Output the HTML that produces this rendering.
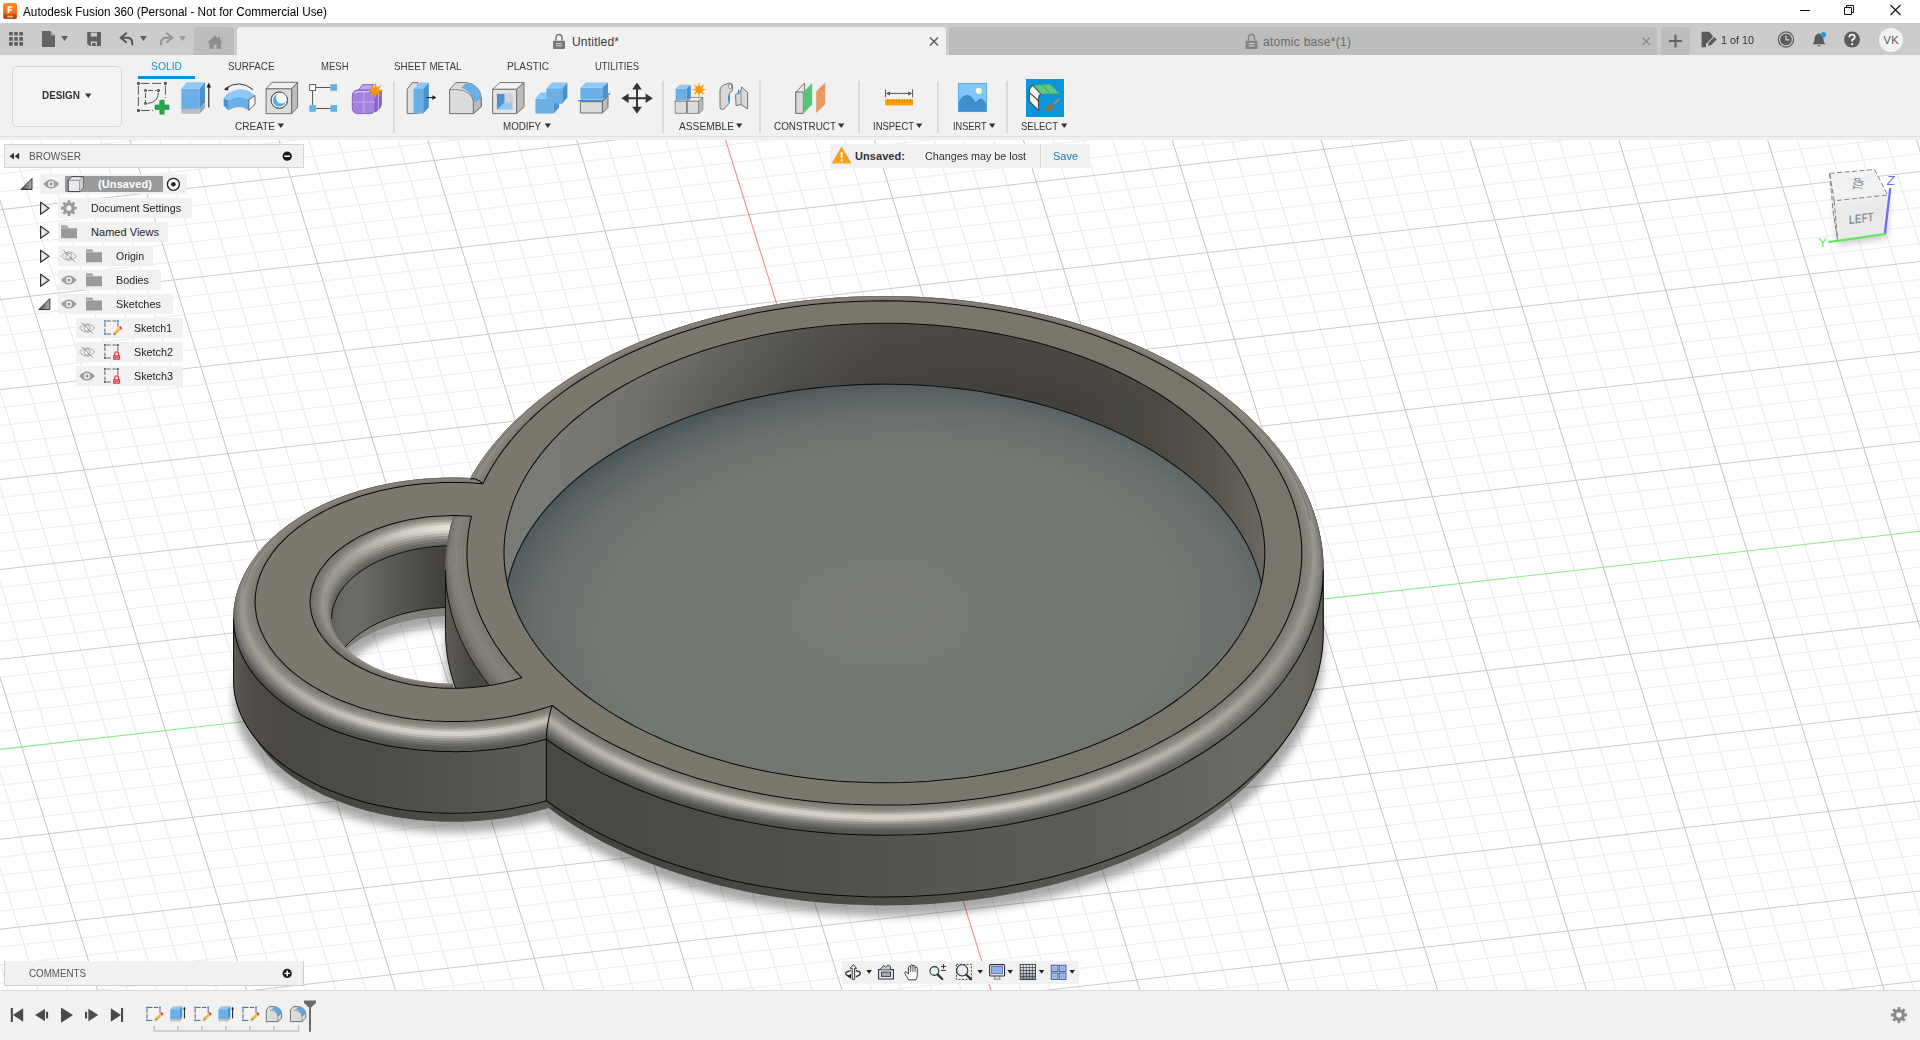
<!DOCTYPE html>
<html lang="en"><head><meta charset="utf-8"><title>Autodesk Fusion 360</title>
<style>
html,body{margin:0;padding:0;background:#fff;}
body{width:1920px;height:1040px;position:relative;overflow:hidden;font-family:"Liberation Sans", sans-serif;}
.r{position:absolute;box-sizing:border-box;}
.tx{position:absolute;white-space:pre;font-family:"Liberation Sans", sans-serif;transform-origin:0 50%;}
svg{position:absolute;left:0;top:0;overflow:visible;}
svg.vp{left:0;top:0;}
</style></head>
<body>
<main><svg class="vp" width="1920" height="1040" viewBox="0 0 1920 1040"><defs><filter id="blur" x="-10%" y="-10%" width="120%" height="120%"><feGaussianBlur stdDeviation="4.5"/></filter><filter id="blur2" x="-10%" y="-10%" width="120%" height="120%"><feGaussianBlur stdDeviation="3"/></filter><clipPath id="lens"><path d="M521.7 677.7 L517.3 679.1 L512.8 680.4 L508.3 681.6 L503.6 682.7 L498.9 683.8 L494.2 684.7 L489.4 685.5 L484.5 686.2 L479.6 686.8 L474.7 687.3 L469.8 687.7 L464.8 688.0 L459.8 688.2 L454.8 688.3 L449.8 688.3 L444.8 688.2 L439.9 687.9 L434.9 687.6 L430.0 687.2 L425.1 686.6 L420.2 686.0 L415.3 685.2 L410.5 684.4 L405.8 683.4 L401.1 682.4 L396.5 681.2 L392.0 680.0 L387.5 678.7 L383.1 677.2 L378.8 675.7 L374.6 674.1 L370.4 672.4 L366.4 670.6 L362.5 668.7 L358.7 666.8 L355.0 664.8 L351.4 662.7 L348.0 660.5 L344.7 658.2 L341.5 655.9 L338.4 653.5 L335.5 651.1 L332.7 648.6 L330.1 646.0 L327.7 643.4 L325.3 640.7 L323.2 638.0 L321.2 635.2 L319.3 632.4 L317.6 629.6 L316.1 626.7 L314.8 623.8 L313.6 620.9 L312.6 617.9 L311.7 614.9 L311.1 612.0 L310.6 609.0 L310.3 605.9 L310.1 602.9 L310.1 599.9 L310.4 596.9 L310.7 593.9 L311.3 590.9 L312.0 587.9 L312.9 585.0 L314.0 582.0 L315.2 579.1 L316.6 576.2 L318.2 573.3 L319.9 570.5 L321.8 567.7 L323.9 565.0 L326.1 562.3 L328.4 559.6 L331.0 557.0 L333.6 554.5 L336.4 552.0 L339.4 549.6 L342.5 547.2 L345.7 544.9 L349.1 542.7 L352.6 540.5 L356.2 538.4 L359.9 536.4 L363.8 534.5 L367.7 532.7 L371.8 530.9 L375.9 529.2 L380.2 527.7 L384.5 526.2 L388.9 524.8 L393.4 523.5 L398.0 522.3 L402.6 521.2 L407.3 520.1 L412.1 519.2 L416.9 518.4 L421.8 517.7 L426.6 517.1 L431.6 516.6 L436.5 516.2 L441.5 515.9 L446.5 515.7 L451.5 515.6 L456.4 515.6 L461.4 515.8 L466.4 516.0 L471.4 516.3 L471.4 516.3 L469.5 525.1 L468.2 533.8 L467.3 542.6 L467.0 551.4 L467.1 560.2 L467.8 569.0 L469.0 577.8 L470.7 586.5 L472.9 595.2 L475.6 603.9 L478.8 612.5 L482.5 621.0 L486.7 629.4 L491.3 637.8 L496.5 646.0 L502.1 654.1 L508.2 662.1 L514.7 670.0 L521.7 677.7Z"/></clipPath><linearGradient id="g1" gradientUnits="userSpaceOnUse" x1="331.6" y1="0" x2="447.3" y2="0"><stop offset="0.0000" stop-color="#585a55"/><stop offset="0.0101" stop-color="#5e605a"/><stop offset="0.0400" stop-color="#64665f"/><stop offset="0.0893" stop-color="#686a63"/><stop offset="0.1570" stop-color="#6b6d67"/><stop offset="0.2418" stop-color="#696b66"/><stop offset="0.3420" stop-color="#646560"/><stop offset="0.4558" stop-color="#5e5f5a"/><stop offset="0.5810" stop-color="#575652"/><stop offset="0.7152" stop-color="#4f4e4a"/><stop offset="0.8557" stop-color="#474642"/><stop offset="1.0000" stop-color="#413f3b"/></linearGradient><linearGradient id="g2" gradientUnits="userSpaceOnUse" x1="331.6" y1="0" x2="477.0" y2="0"><stop offset="0.0000" stop-color="#565550"/><stop offset="0.0058" stop-color="#565550"/><stop offset="0.0231" stop-color="#565550"/><stop offset="0.0517" stop-color="#565550"/><stop offset="0.0912" stop-color="#565651"/><stop offset="0.1411" stop-color="#575651"/><stop offset="0.2006" stop-color="#585752"/><stop offset="0.2689" stop-color="#595853"/><stop offset="0.3450" stop-color="#5a5954"/><stop offset="0.4280" stop-color="#5b5a55"/><stop offset="0.5167" stop-color="#5d5c57"/><stop offset="0.6098" stop-color="#5e5d58"/><stop offset="0.7060" stop-color="#5f5e59"/><stop offset="0.8040" stop-color="#5f5e59"/><stop offset="0.9024" stop-color="#605f5a"/><stop offset="0.9999" stop-color="#605f59"/></linearGradient><linearGradient id="g3" gradientUnits="userSpaceOnUse" x1="331.6" y1="0" x2="332.2" y2="0"><stop offset="0.0000" stop-color="#565550"/><stop offset="0.0044" stop-color="#565550"/><stop offset="0.0175" stop-color="#555550"/><stop offset="0.0394" stop-color="#555550"/><stop offset="0.0700" stop-color="#555550"/><stop offset="0.1094" stop-color="#555550"/><stop offset="0.1575" stop-color="#555550"/><stop offset="0.2144" stop-color="#555550"/><stop offset="0.2800" stop-color="#555550"/><stop offset="0.3543" stop-color="#555550"/><stop offset="0.4374" stop-color="#555550"/><stop offset="0.5292" stop-color="#555550"/><stop offset="0.6297" stop-color="#555550"/><stop offset="0.7390" stop-color="#555550"/><stop offset="0.8570" stop-color="#555550"/><stop offset="0.9837" stop-color="#555550"/></linearGradient><linearGradient id="g4" gradientUnits="userSpaceOnUse" x1="331.4" y1="0" x2="477.0" y2="0"><stop offset="0.0000" stop-color="#5e5d58"/><stop offset="0.0058" stop-color="#5e5e59"/><stop offset="0.0231" stop-color="#5f5e59"/><stop offset="0.0517" stop-color="#5f5e59"/><stop offset="0.0912" stop-color="#605f5a"/><stop offset="0.1411" stop-color="#605f5a"/><stop offset="0.2006" stop-color="#61605b"/><stop offset="0.2689" stop-color="#63625c"/><stop offset="0.3450" stop-color="#64635e"/><stop offset="0.4280" stop-color="#666560"/><stop offset="0.5167" stop-color="#686761"/><stop offset="0.6098" stop-color="#696863"/><stop offset="0.7060" stop-color="#6b6a64"/><stop offset="0.8040" stop-color="#6b6a65"/><stop offset="0.9024" stop-color="#6c6b65"/><stop offset="0.9999" stop-color="#6c6b65"/></linearGradient><linearGradient id="g5" gradientUnits="userSpaceOnUse" x1="331.4" y1="0" x2="334.0" y2="0"><stop offset="0.0000" stop-color="#5e5d58"/><stop offset="0.0044" stop-color="#5e5d58"/><stop offset="0.0178" stop-color="#5e5d58"/><stop offset="0.0400" stop-color="#5e5d58"/><stop offset="0.0711" stop-color="#5e5d58"/><stop offset="0.1110" stop-color="#5e5d58"/><stop offset="0.1598" stop-color="#5e5d58"/><stop offset="0.2175" stop-color="#5e5d58"/><stop offset="0.2840" stop-color="#5e5d58"/><stop offset="0.3594" stop-color="#5e5d58"/><stop offset="0.4435" stop-color="#5e5d58"/><stop offset="0.5365" stop-color="#5e5d58"/><stop offset="0.6383" stop-color="#5e5d58"/><stop offset="0.7488" stop-color="#5e5d58"/><stop offset="0.8681" stop-color="#5e5d58"/><stop offset="0.9960" stop-color="#5e5d58"/></linearGradient><linearGradient id="g6" gradientUnits="userSpaceOnUse" x1="330.9" y1="0" x2="477.1" y2="0"><stop offset="0.0000" stop-color="#676661"/><stop offset="0.0058" stop-color="#676661"/><stop offset="0.0231" stop-color="#686761"/><stop offset="0.0517" stop-color="#686762"/><stop offset="0.0912" stop-color="#696863"/><stop offset="0.1411" stop-color="#6a6964"/><stop offset="0.2006" stop-color="#6c6b65"/><stop offset="0.2689" stop-color="#6e6d67"/><stop offset="0.3450" stop-color="#706f69"/><stop offset="0.4280" stop-color="#73726c"/><stop offset="0.5167" stop-color="#75746f"/><stop offset="0.6098" stop-color="#787771"/><stop offset="0.7060" stop-color="#7a7973"/><stop offset="0.8040" stop-color="#7b7a74"/><stop offset="0.9024" stop-color="#7c7b75"/><stop offset="0.9999" stop-color="#7b7a74"/></linearGradient><linearGradient id="g7" gradientUnits="userSpaceOnUse" x1="330.9" y1="0" x2="337.0" y2="0"><stop offset="0.0000" stop-color="#676661"/><stop offset="0.0045" stop-color="#676661"/><stop offset="0.0179" stop-color="#676661"/><stop offset="0.0403" stop-color="#676661"/><stop offset="0.0716" stop-color="#676661"/><stop offset="0.1118" stop-color="#676661"/><stop offset="0.1609" stop-color="#676661"/><stop offset="0.2189" stop-color="#676661"/><stop offset="0.2857" stop-color="#676661"/><stop offset="0.3614" stop-color="#676661"/><stop offset="0.4458" stop-color="#676661"/><stop offset="0.5390" stop-color="#676661"/><stop offset="0.6409" stop-color="#676661"/><stop offset="0.7515" stop-color="#676661"/><stop offset="0.8706" stop-color="#676661"/><stop offset="0.9984" stop-color="#676661"/></linearGradient><linearGradient id="g8" gradientUnits="userSpaceOnUse" x1="330.0" y1="0" x2="477.3" y2="0"><stop offset="0.0000" stop-color="#73726c"/><stop offset="0.0058" stop-color="#74726c"/><stop offset="0.0231" stop-color="#74736d"/><stop offset="0.0517" stop-color="#75746e"/><stop offset="0.0912" stop-color="#77756f"/><stop offset="0.1411" stop-color="#797771"/><stop offset="0.2006" stop-color="#7b7a73"/><stop offset="0.2689" stop-color="#7e7d76"/><stop offset="0.3450" stop-color="#82817a"/><stop offset="0.4280" stop-color="#87857e"/><stop offset="0.5167" stop-color="#8b8983"/><stop offset="0.6098" stop-color="#8f8e87"/><stop offset="0.7060" stop-color="#93918a"/><stop offset="0.8040" stop-color="#95938c"/><stop offset="0.9024" stop-color="#96948d"/><stop offset="0.9999" stop-color="#95938c"/></linearGradient><linearGradient id="g9" gradientUnits="userSpaceOnUse" x1="330.0" y1="0" x2="342.3" y2="0"><stop offset="0.0000" stop-color="#73726c"/><stop offset="0.0045" stop-color="#73726c"/><stop offset="0.0181" stop-color="#73726c"/><stop offset="0.0406" stop-color="#73726c"/><stop offset="0.0722" stop-color="#73726c"/><stop offset="0.1127" stop-color="#73726c"/><stop offset="0.1622" stop-color="#73726c"/><stop offset="0.2205" stop-color="#73726b"/><stop offset="0.2877" stop-color="#73726b"/><stop offset="0.3636" stop-color="#73726b"/><stop offset="0.4483" stop-color="#73726b"/><stop offset="0.5416" stop-color="#73726b"/><stop offset="0.6434" stop-color="#73726b"/><stop offset="0.7537" stop-color="#73726b"/><stop offset="0.8723" stop-color="#73726b"/><stop offset="0.9992" stop-color="#73726b"/></linearGradient><linearGradient id="g10" gradientUnits="userSpaceOnUse" x1="328.7" y1="0" x2="477.6" y2="0"><stop offset="0.0000" stop-color="#817e77"/><stop offset="0.0058" stop-color="#817f78"/><stop offset="0.0231" stop-color="#828079"/><stop offset="0.0517" stop-color="#83817a"/><stop offset="0.0912" stop-color="#86837c"/><stop offset="0.1411" stop-color="#89867f"/><stop offset="0.2006" stop-color="#8d8a83"/><stop offset="0.2689" stop-color="#929088"/><stop offset="0.3450" stop-color="#98968e"/><stop offset="0.4280" stop-color="#9f9c95"/><stop offset="0.5167" stop-color="#a6a39c"/><stop offset="0.6098" stop-color="#acaaa2"/><stop offset="0.7060" stop-color="#b2afa7"/><stop offset="0.8040" stop-color="#b5b3ab"/><stop offset="0.9024" stop-color="#b7b4ac"/><stop offset="0.9999" stop-color="#b6b3ab"/></linearGradient><linearGradient id="g11" gradientUnits="userSpaceOnUse" x1="328.7" y1="0" x2="351.8" y2="0"><stop offset="0.0000" stop-color="#817e77"/><stop offset="0.0046" stop-color="#807e77"/><stop offset="0.0183" stop-color="#807e77"/><stop offset="0.0412" stop-color="#807e77"/><stop offset="0.0732" stop-color="#807e77"/><stop offset="0.1143" stop-color="#807e77"/><stop offset="0.1643" stop-color="#807e77"/><stop offset="0.2232" stop-color="#807e77"/><stop offset="0.2909" stop-color="#807e77"/><stop offset="0.3673" stop-color="#807e77"/><stop offset="0.4522" stop-color="#807e77"/><stop offset="0.5456" stop-color="#807e77"/><stop offset="0.6471" stop-color="#807e77"/><stop offset="0.7568" stop-color="#807e77"/><stop offset="0.8743" stop-color="#807e77"/><stop offset="0.9996" stop-color="#807e77"/></linearGradient><linearGradient id="g12" gradientUnits="userSpaceOnUse" x1="327.2" y1="0" x2="477.9" y2="0"><stop offset="0.0000" stop-color="#8d8a82"/><stop offset="0.0058" stop-color="#8d8b82"/><stop offset="0.0231" stop-color="#8e8c84"/><stop offset="0.0517" stop-color="#908e85"/><stop offset="0.0912" stop-color="#939188"/><stop offset="0.1411" stop-color="#97958c"/><stop offset="0.2006" stop-color="#9d9a92"/><stop offset="0.2689" stop-color="#a4a199"/><stop offset="0.3450" stop-color="#adaaa1"/><stop offset="0.4280" stop-color="#b6b3aa"/><stop offset="0.5167" stop-color="#c0bdb4"/><stop offset="0.6098" stop-color="#c9c6bd"/><stop offset="0.7060" stop-color="#d0cdc4"/><stop offset="0.8040" stop-color="#d5d2c9"/><stop offset="0.9024" stop-color="#d7d4cb"/><stop offset="0.9999" stop-color="#d5d2c9"/></linearGradient><linearGradient id="g13" gradientUnits="userSpaceOnUse" x1="327.2" y1="0" x2="370.6" y2="0"><stop offset="0.0000" stop-color="#8d8a82"/><stop offset="0.0047" stop-color="#8c8a81"/><stop offset="0.0189" stop-color="#8c8981"/><stop offset="0.0424" stop-color="#8c8981"/><stop offset="0.0753" stop-color="#8c8981"/><stop offset="0.1173" stop-color="#8c8981"/><stop offset="0.1685" stop-color="#8c8981"/><stop offset="0.2285" stop-color="#8c8981"/><stop offset="0.2972" stop-color="#8c8981"/><stop offset="0.3744" stop-color="#8c8981"/><stop offset="0.4598" stop-color="#8c8981"/><stop offset="0.5532" stop-color="#8c8981"/><stop offset="0.6542" stop-color="#8c8981"/><stop offset="0.7626" stop-color="#8c8981"/><stop offset="0.8779" stop-color="#8c8981"/><stop offset="0.9998" stop-color="#8c8981"/></linearGradient><linearGradient id="g14" gradientUnits="userSpaceOnUse" x1="325.3" y1="0" x2="478.2" y2="0"><stop offset="0.0000" stop-color="#939088"/><stop offset="0.0058" stop-color="#949188"/><stop offset="0.0231" stop-color="#95928a"/><stop offset="0.0517" stop-color="#97958c"/><stop offset="0.0912" stop-color="#9b988f"/><stop offset="0.1411" stop-color="#9f9d94"/><stop offset="0.2006" stop-color="#a6a39a"/><stop offset="0.2689" stop-color="#aeaba2"/><stop offset="0.3450" stop-color="#b8b5ac"/><stop offset="0.4280" stop-color="#c2bfb6"/><stop offset="0.5167" stop-color="#cdcac1"/><stop offset="0.6098" stop-color="#d8d5cb"/><stop offset="0.7060" stop-color="#e0ddd4"/><stop offset="0.8040" stop-color="#e6e3d9"/><stop offset="0.9024" stop-color="#e8e5db"/><stop offset="0.9999" stop-color="#e6e3da"/></linearGradient><linearGradient id="g15" gradientUnits="userSpaceOnUse" x1="325.3" y1="0" x2="430.7" y2="0"><stop offset="0.0000" stop-color="#939088"/><stop offset="0.0052" stop-color="#939087"/><stop offset="0.0209" stop-color="#929087"/><stop offset="0.0469" stop-color="#928f87"/><stop offset="0.0829" stop-color="#928f87"/><stop offset="0.1287" stop-color="#928f87"/><stop offset="0.1838" stop-color="#928f87"/><stop offset="0.2478" stop-color="#928f87"/><stop offset="0.3202" stop-color="#928f87"/><stop offset="0.4003" stop-color="#928f87"/><stop offset="0.4874" stop-color="#928f87"/><stop offset="0.5807" stop-color="#928f87"/><stop offset="0.6795" stop-color="#928f87"/><stop offset="0.7829" stop-color="#928f87"/><stop offset="0.8900" stop-color="#928f87"/><stop offset="0.9999" stop-color="#928f87"/></linearGradient><linearGradient id="g16" gradientUnits="userSpaceOnUse" x1="323.2" y1="0" x2="478.6" y2="0"><stop offset="0.0000" stop-color="#96948b"/><stop offset="0.0058" stop-color="#97948b"/><stop offset="0.0231" stop-color="#98968d"/><stop offset="0.0517" stop-color="#9a988f"/><stop offset="0.0912" stop-color="#9e9b92"/><stop offset="0.1411" stop-color="#a29f96"/><stop offset="0.2006" stop-color="#a8a59c"/><stop offset="0.2689" stop-color="#b0ada4"/><stop offset="0.3450" stop-color="#b9b6ad"/><stop offset="0.4280" stop-color="#c3c0b6"/><stop offset="0.5167" stop-color="#cdcac1"/><stop offset="0.6098" stop-color="#d7d4ca"/><stop offset="0.7060" stop-color="#dfdcd2"/><stop offset="0.8040" stop-color="#e4e1d7"/><stop offset="0.9024" stop-color="#e6e3d9"/><stop offset="0.9999" stop-color="#e5e2d8"/></linearGradient><linearGradient id="g17" gradientUnits="userSpaceOnUse" x1="323.2" y1="0" x2="453.1" y2="0"><stop offset="0.0000" stop-color="#96948b"/><stop offset="0.0055" stop-color="#96938a"/><stop offset="0.0219" stop-color="#96938a"/><stop offset="0.0489" stop-color="#95938a"/><stop offset="0.0864" stop-color="#95938a"/><stop offset="0.1340" stop-color="#95938a"/><stop offset="0.1910" stop-color="#95938a"/><stop offset="0.2568" stop-color="#95938a"/><stop offset="0.3308" stop-color="#95938a"/><stop offset="0.4122" stop-color="#95938a"/><stop offset="0.5000" stop-color="#95938a"/><stop offset="0.5932" stop-color="#95938a"/><stop offset="0.6909" stop-color="#95938a"/><stop offset="0.7920" stop-color="#95938a"/><stop offset="0.8954" stop-color="#95938a"/><stop offset="0.9999" stop-color="#95938a"/></linearGradient><linearGradient id="g18" gradientUnits="userSpaceOnUse" x1="320.9" y1="0" x2="479.1" y2="0"><stop offset="0.0000" stop-color="#8b887f"/><stop offset="0.0058" stop-color="#8b8980"/><stop offset="0.0231" stop-color="#8c8a81"/><stop offset="0.0517" stop-color="#8e8b82"/><stop offset="0.0912" stop-color="#908e85"/><stop offset="0.1411" stop-color="#949188"/><stop offset="0.2006" stop-color="#99968d"/><stop offset="0.2689" stop-color="#9e9c92"/><stop offset="0.3450" stop-color="#a5a399"/><stop offset="0.4280" stop-color="#adaaa1"/><stop offset="0.5167" stop-color="#b5b2a9"/><stop offset="0.6098" stop-color="#bdbab0"/><stop offset="0.7060" stop-color="#c3c0b6"/><stop offset="0.8040" stop-color="#c7c4ba"/><stop offset="0.9024" stop-color="#c9c6bc"/><stop offset="0.9999" stop-color="#c8c5bb"/></linearGradient><linearGradient id="g19" gradientUnits="userSpaceOnUse" x1="320.9" y1="0" x2="453.1" y2="0"><stop offset="0.0000" stop-color="#8b887f"/><stop offset="0.0055" stop-color="#8a887f"/><stop offset="0.0219" stop-color="#8a887f"/><stop offset="0.0489" stop-color="#8a877e"/><stop offset="0.0864" stop-color="#8a877e"/><stop offset="0.1340" stop-color="#8a877e"/><stop offset="0.1910" stop-color="#8a877e"/><stop offset="0.2568" stop-color="#8a877e"/><stop offset="0.3308" stop-color="#8a877e"/><stop offset="0.4122" stop-color="#8a877e"/><stop offset="0.5000" stop-color="#8a877e"/><stop offset="0.5932" stop-color="#8a877e"/><stop offset="0.6909" stop-color="#8a877e"/><stop offset="0.7920" stop-color="#8a877e"/><stop offset="0.8954" stop-color="#8a877e"/><stop offset="0.9999" stop-color="#8a877e"/></linearGradient><linearGradient id="g20" gradientUnits="userSpaceOnUse" x1="318.3" y1="0" x2="479.6" y2="0"><stop offset="0.0000" stop-color="#807d74"/><stop offset="0.0058" stop-color="#807e75"/><stop offset="0.0231" stop-color="#817e75"/><stop offset="0.0517" stop-color="#827f76"/><stop offset="0.0912" stop-color="#848178"/><stop offset="0.1411" stop-color="#86837a"/><stop offset="0.2006" stop-color="#89867d"/><stop offset="0.2689" stop-color="#8d8a81"/><stop offset="0.3450" stop-color="#928f85"/><stop offset="0.4280" stop-color="#97948a"/><stop offset="0.5167" stop-color="#9c9990"/><stop offset="0.6098" stop-color="#a19e94"/><stop offset="0.7060" stop-color="#a5a298"/><stop offset="0.8040" stop-color="#a8a59b"/><stop offset="0.9024" stop-color="#a9a69c"/><stop offset="0.9999" stop-color="#a8a59b"/></linearGradient><linearGradient id="g21" gradientUnits="userSpaceOnUse" x1="318.3" y1="0" x2="453.1" y2="0"><stop offset="0.0000" stop-color="#807d74"/><stop offset="0.0055" stop-color="#807d74"/><stop offset="0.0219" stop-color="#807d74"/><stop offset="0.0489" stop-color="#807d74"/><stop offset="0.0864" stop-color="#807d74"/><stop offset="0.1340" stop-color="#807d74"/><stop offset="0.1910" stop-color="#807d74"/><stop offset="0.2568" stop-color="#807d74"/><stop offset="0.3308" stop-color="#807d74"/><stop offset="0.4122" stop-color="#807d74"/><stop offset="0.5000" stop-color="#807d74"/><stop offset="0.5932" stop-color="#807d74"/><stop offset="0.6909" stop-color="#807d74"/><stop offset="0.7920" stop-color="#807d74"/><stop offset="0.8954" stop-color="#807d74"/><stop offset="0.9999" stop-color="#807d74"/></linearGradient><linearGradient id="g22" gradientUnits="userSpaceOnUse" x1="315.7" y1="0" x2="480.1" y2="0"><stop offset="0.0000" stop-color="#79766d"/><stop offset="0.0058" stop-color="#79766d"/><stop offset="0.0231" stop-color="#79766d"/><stop offset="0.0517" stop-color="#7a776e"/><stop offset="0.0912" stop-color="#7b786f"/><stop offset="0.1411" stop-color="#7d7970"/><stop offset="0.2006" stop-color="#7e7b72"/><stop offset="0.2689" stop-color="#817e74"/><stop offset="0.3450" stop-color="#848177"/><stop offset="0.4280" stop-color="#87847a"/><stop offset="0.5167" stop-color="#8a877d"/><stop offset="0.6098" stop-color="#8e8a80"/><stop offset="0.7060" stop-color="#908d83"/><stop offset="0.8040" stop-color="#928e84"/><stop offset="0.9024" stop-color="#928f85"/><stop offset="0.9999" stop-color="#928f85"/></linearGradient><linearGradient id="g23" gradientUnits="userSpaceOnUse" x1="315.7" y1="0" x2="453.1" y2="0"><stop offset="0.0000" stop-color="#79766d"/><stop offset="0.0055" stop-color="#79766c"/><stop offset="0.0219" stop-color="#79756c"/><stop offset="0.0489" stop-color="#78756c"/><stop offset="0.0864" stop-color="#78756c"/><stop offset="0.1340" stop-color="#78756c"/><stop offset="0.1910" stop-color="#78756c"/><stop offset="0.2568" stop-color="#78756c"/><stop offset="0.3308" stop-color="#78756c"/><stop offset="0.4122" stop-color="#78756c"/><stop offset="0.5000" stop-color="#78756c"/><stop offset="0.5932" stop-color="#78756c"/><stop offset="0.6909" stop-color="#78756c"/><stop offset="0.7920" stop-color="#78756c"/><stop offset="0.8954" stop-color="#78756c"/><stop offset="0.9999" stop-color="#78756c"/></linearGradient><linearGradient id="g24" gradientUnits="userSpaceOnUse" x1="312.9" y1="0" x2="480.7" y2="0"><stop offset="0.0000" stop-color="#726e65"/><stop offset="0.0058" stop-color="#726e65"/><stop offset="0.0231" stop-color="#726f66"/><stop offset="0.0517" stop-color="#726f66"/><stop offset="0.0912" stop-color="#737067"/><stop offset="0.1411" stop-color="#747167"/><stop offset="0.2006" stop-color="#757269"/><stop offset="0.2689" stop-color="#77736a"/><stop offset="0.3450" stop-color="#79756c"/><stop offset="0.4280" stop-color="#7b776e"/><stop offset="0.5167" stop-color="#7d7a70"/><stop offset="0.6098" stop-color="#7f7c72"/><stop offset="0.7060" stop-color="#817d73"/><stop offset="0.8040" stop-color="#827e74"/><stop offset="0.9024" stop-color="#837f75"/><stop offset="0.9999" stop-color="#827e74"/></linearGradient><linearGradient id="g25" gradientUnits="userSpaceOnUse" x1="312.9" y1="0" x2="453.1" y2="0"><stop offset="0.0000" stop-color="#726e65"/><stop offset="0.0055" stop-color="#716e65"/><stop offset="0.0219" stop-color="#716e65"/><stop offset="0.0489" stop-color="#716e65"/><stop offset="0.0864" stop-color="#716e65"/><stop offset="0.1340" stop-color="#716e65"/><stop offset="0.1910" stop-color="#716e65"/><stop offset="0.2568" stop-color="#716e65"/><stop offset="0.3308" stop-color="#716e65"/><stop offset="0.4122" stop-color="#716e65"/><stop offset="0.5000" stop-color="#716e65"/><stop offset="0.5932" stop-color="#716e65"/><stop offset="0.6909" stop-color="#716e65"/><stop offset="0.7920" stop-color="#716e65"/><stop offset="0.8954" stop-color="#716e65"/><stop offset="0.9999" stop-color="#716e65"/></linearGradient><linearGradient id="bwh" gradientUnits="userSpaceOnUse" x1="445" y1="0" x2="470" y2="0"><stop offset="0" stop-color="#5f5d56"/><stop offset="0.5" stop-color="#55534d"/><stop offset="1" stop-color="#4a4843"/></linearGradient><linearGradient id="g26" gradientUnits="userSpaceOnUse" x1="546.4" y1="0" x2="1323.3" y2="0"><stop offset="0.0000" stop-color="#4a4843"/><stop offset="0.0644" stop-color="#4b4944"/><stop offset="0.1386" stop-color="#4c4a45"/><stop offset="0.2208" stop-color="#4e4c47"/><stop offset="0.3086" stop-color="#504e49"/><stop offset="0.3998" stop-color="#53514c"/><stop offset="0.4920" stop-color="#56544f"/><stop offset="0.5826" stop-color="#595853"/><stop offset="0.6693" stop-color="#5c5b56"/><stop offset="0.7498" stop-color="#605f5a"/><stop offset="0.8219" stop-color="#64635e"/><stop offset="0.8837" stop-color="#696862"/><stop offset="0.9335" stop-color="#696862"/><stop offset="0.9701" stop-color="#686760"/><stop offset="0.9925" stop-color="#63615a"/><stop offset="1.0000" stop-color="#5c5952"/></linearGradient><linearGradient id="g27" gradientUnits="userSpaceOnUse" x1="233.6" y1="0" x2="546.4" y2="0"><stop offset="0.0000" stop-color="#635f58"/><stop offset="0.0084" stop-color="#5b5852"/><stop offset="0.0333" stop-color="#53504b"/><stop offset="0.0741" stop-color="#4f4c47"/><stop offset="0.1300" stop-color="#4c4944"/><stop offset="0.1994" stop-color="#4b4944"/><stop offset="0.2809" stop-color="#4c4a45"/><stop offset="0.3724" stop-color="#4d4b46"/><stop offset="0.4717" stop-color="#4e4c47"/><stop offset="0.5765" stop-color="#514f4a"/><stop offset="0.6843" stop-color="#54524d"/><stop offset="0.7926" stop-color="#565550"/><stop offset="0.8986" stop-color="#595853"/><stop offset="1.0000" stop-color="#5c5b56"/></linearGradient><linearGradient id="g28" gradientUnits="userSpaceOnUse" x1="546.4" y1="0" x2="1323.3" y2="0"><stop offset="0.0000" stop-color="#45433e"/><stop offset="0.0644" stop-color="#46443f"/><stop offset="0.1386" stop-color="#474541"/><stop offset="0.2208" stop-color="#484642"/><stop offset="0.3086" stop-color="#4b4944"/><stop offset="0.3998" stop-color="#4d4b47"/><stop offset="0.4920" stop-color="#504e4a"/><stop offset="0.5826" stop-color="#53514d"/><stop offset="0.6693" stop-color="#565550"/><stop offset="0.7498" stop-color="#595853"/><stop offset="0.8219" stop-color="#5d5c57"/><stop offset="0.8837" stop-color="#61615b"/><stop offset="0.9335" stop-color="#62615b"/><stop offset="0.9701" stop-color="#615f59"/><stop offset="0.9925" stop-color="#5d5a54"/><stop offset="1.0000" stop-color="#56534c"/></linearGradient><linearGradient id="g29" gradientUnits="userSpaceOnUse" x1="233.6" y1="0" x2="546.4" y2="0"><stop offset="0.0000" stop-color="#5c5852"/><stop offset="0.0084" stop-color="#55524c"/><stop offset="0.0333" stop-color="#4d4b46"/><stop offset="0.0741" stop-color="#494742"/><stop offset="0.1300" stop-color="#464440"/><stop offset="0.1994" stop-color="#45433f"/><stop offset="0.2809" stop-color="#464540"/><stop offset="0.3724" stop-color="#484641"/><stop offset="0.4717" stop-color="#494742"/><stop offset="0.5765" stop-color="#4b4945"/><stop offset="0.6843" stop-color="#4e4c47"/><stop offset="0.7926" stop-color="#504f4a"/><stop offset="0.8986" stop-color="#53524d"/><stop offset="1.0000" stop-color="#565550"/></linearGradient><linearGradient id="g30" gradientUnits="userSpaceOnUse" x1="467.6" y1="0" x2="1323.4" y2="0"><stop offset="0.0000" stop-color="#65615a"/><stop offset="0.0292" stop-color="#65615a"/><stop offset="0.0684" stop-color="#65615a"/><stop offset="0.1169" stop-color="#65615a"/><stop offset="0.1736" stop-color="#65615a"/><stop offset="0.2371" stop-color="#65615a"/><stop offset="0.3061" stop-color="#65615a"/><stop offset="0.3792" stop-color="#65615a"/><stop offset="0.4546" stop-color="#65615a"/><stop offset="0.5307" stop-color="#5c5952"/><stop offset="0.6059" stop-color="#5c5952"/><stop offset="0.6784" stop-color="#5c5952"/><stop offset="0.7468" stop-color="#5c5952"/><stop offset="0.8094" stop-color="#5c5952"/><stop offset="0.8649" stop-color="#5c5952"/><stop offset="0.9121" stop-color="#5c5952"/><stop offset="0.9499" stop-color="#5c5952"/><stop offset="0.9775" stop-color="#5c5952"/><stop offset="0.9943" stop-color="#5c5952"/><stop offset="1.0000" stop-color="#5c5952"/></linearGradient><linearGradient id="g31" gradientUnits="userSpaceOnUse" x1="546.4" y1="0" x2="1323.4" y2="0"><stop offset="0.0000" stop-color="#4b4944"/><stop offset="0.0499" stop-color="#4c4a45"/><stop offset="0.1063" stop-color="#4d4b46"/><stop offset="0.1681" stop-color="#4e4c47"/><stop offset="0.2343" stop-color="#4f4d48"/><stop offset="0.3039" stop-color="#514f4a"/><stop offset="0.3756" stop-color="#53514c"/><stop offset="0.4484" stop-color="#55534e"/><stop offset="0.5209" stop-color="#575550"/><stop offset="0.5919" stop-color="#595853"/><stop offset="0.6604" stop-color="#5c5a55"/><stop offset="0.7252" stop-color="#5e5d58"/><stop offset="0.7851" stop-color="#61605b"/><stop offset="0.8392" stop-color="#64635e"/><stop offset="0.8866" stop-color="#686661"/><stop offset="0.9265" stop-color="#686760"/><stop offset="0.9582" stop-color="#67665f"/><stop offset="0.9813" stop-color="#66645e"/><stop offset="0.9953" stop-color="#615f58"/><stop offset="1.0000" stop-color="#5c5952"/></linearGradient><linearGradient id="g32" gradientUnits="userSpaceOnUse" x1="233.6" y1="0" x2="467.6" y2="0"><stop offset="0.0000" stop-color="#625e57"/><stop offset="0.0035" stop-color="#65615a"/><stop offset="0.0139" stop-color="#65615a"/><stop offset="0.0312" stop-color="#65615a"/><stop offset="0.0552" stop-color="#65615a"/><stop offset="0.0857" stop-color="#65615a"/><stop offset="0.1226" stop-color="#65615a"/><stop offset="0.1655" stop-color="#65615a"/><stop offset="0.2141" stop-color="#65615a"/><stop offset="0.2681" stop-color="#65615a"/><stop offset="0.3271" stop-color="#65615a"/><stop offset="0.3906" stop-color="#65615a"/><stop offset="0.4582" stop-color="#65615a"/><stop offset="0.5293" stop-color="#65615a"/><stop offset="0.6035" stop-color="#65615a"/><stop offset="0.6801" stop-color="#65615a"/><stop offset="0.7587" stop-color="#65615a"/><stop offset="0.8386" stop-color="#65615a"/><stop offset="0.9192" stop-color="#65615a"/><stop offset="1.0000" stop-color="#5c5952"/></linearGradient><linearGradient id="g33" gradientUnits="userSpaceOnUse" x1="233.6" y1="0" x2="546.4" y2="0"><stop offset="0.0000" stop-color="#625e57"/><stop offset="0.0039" stop-color="#5e5b54"/><stop offset="0.0156" stop-color="#585550"/><stop offset="0.0350" stop-color="#53504b"/><stop offset="0.0619" stop-color="#504e49"/><stop offset="0.0959" stop-color="#4e4c47"/><stop offset="0.1366" stop-color="#4c4a45"/><stop offset="0.1837" stop-color="#4c4a45"/><stop offset="0.2366" stop-color="#4c4a45"/><stop offset="0.2947" stop-color="#4d4b46"/><stop offset="0.3573" stop-color="#4e4c47"/><stop offset="0.4238" stop-color="#4f4d48"/><stop offset="0.4934" stop-color="#504e49"/><stop offset="0.5653" stop-color="#514f4a"/><stop offset="0.6387" stop-color="#53514c"/><stop offset="0.7129" stop-color="#55534e"/><stop offset="0.7869" stop-color="#575550"/><stop offset="0.8599" stop-color="#585752"/><stop offset="0.9312" stop-color="#5a5954"/><stop offset="1.0000" stop-color="#5c5b56"/></linearGradient><linearGradient id="g34" gradientUnits="userSpaceOnUse" x1="467.7" y1="0" x2="1323.2" y2="0"><stop offset="0.0000" stop-color="#64615b"/><stop offset="0.0292" stop-color="#64615b"/><stop offset="0.0684" stop-color="#64615b"/><stop offset="0.1169" stop-color="#64615b"/><stop offset="0.1735" stop-color="#64615b"/><stop offset="0.2370" stop-color="#64615b"/><stop offset="0.3061" stop-color="#64615b"/><stop offset="0.3791" stop-color="#64615b"/><stop offset="0.4545" stop-color="#64615b"/><stop offset="0.5307" stop-color="#5d5a54"/><stop offset="0.6058" stop-color="#5d5a54"/><stop offset="0.6784" stop-color="#5d5a54"/><stop offset="0.7467" stop-color="#5d5a54"/><stop offset="0.8093" stop-color="#5d5a54"/><stop offset="0.8649" stop-color="#5d5a54"/><stop offset="0.9121" stop-color="#5d5a54"/><stop offset="0.9499" stop-color="#5d5a54"/><stop offset="0.9775" stop-color="#5d5a54"/><stop offset="0.9943" stop-color="#5d5a54"/><stop offset="1.0000" stop-color="#5d5a54"/></linearGradient><linearGradient id="g35" gradientUnits="userSpaceOnUse" x1="546.4" y1="0" x2="1323.2" y2="0"><stop offset="0.0000" stop-color="#504e49"/><stop offset="0.0499" stop-color="#514f4a"/><stop offset="0.1063" stop-color="#51504b"/><stop offset="0.1681" stop-color="#52504b"/><stop offset="0.2343" stop-color="#53514c"/><stop offset="0.3038" stop-color="#54524e"/><stop offset="0.3756" stop-color="#56544f"/><stop offset="0.4483" stop-color="#575651"/><stop offset="0.5208" stop-color="#595853"/><stop offset="0.5919" stop-color="#5b5a55"/><stop offset="0.6604" stop-color="#5d5c57"/><stop offset="0.7251" stop-color="#5f5e59"/><stop offset="0.7851" stop-color="#61605b"/><stop offset="0.8392" stop-color="#64635e"/><stop offset="0.8866" stop-color="#666560"/><stop offset="0.9265" stop-color="#676560"/><stop offset="0.9582" stop-color="#66655f"/><stop offset="0.9813" stop-color="#66645d"/><stop offset="0.9953" stop-color="#615f59"/><stop offset="1.0000" stop-color="#5d5a54"/></linearGradient><linearGradient id="g36" gradientUnits="userSpaceOnUse" x1="233.7" y1="0" x2="467.7" y2="0"><stop offset="0.0000" stop-color="#625f59"/><stop offset="0.0035" stop-color="#64615b"/><stop offset="0.0139" stop-color="#64615b"/><stop offset="0.0312" stop-color="#64615b"/><stop offset="0.0552" stop-color="#64615b"/><stop offset="0.0857" stop-color="#64615b"/><stop offset="0.1226" stop-color="#64615b"/><stop offset="0.1655" stop-color="#64615b"/><stop offset="0.2141" stop-color="#64615b"/><stop offset="0.2682" stop-color="#64615b"/><stop offset="0.3271" stop-color="#64615b"/><stop offset="0.3907" stop-color="#64615b"/><stop offset="0.4582" stop-color="#64615b"/><stop offset="0.5294" stop-color="#64615b"/><stop offset="0.6035" stop-color="#64615b"/><stop offset="0.6802" stop-color="#64615b"/><stop offset="0.7587" stop-color="#64615b"/><stop offset="0.8386" stop-color="#64615b"/><stop offset="0.9192" stop-color="#64615b"/><stop offset="1.0000" stop-color="#5d5a54"/></linearGradient><linearGradient id="g37" gradientUnits="userSpaceOnUse" x1="233.7" y1="0" x2="546.4" y2="0"><stop offset="0.0000" stop-color="#625f59"/><stop offset="0.0039" stop-color="#5e5c56"/><stop offset="0.0156" stop-color="#5a5852"/><stop offset="0.0350" stop-color="#56544f"/><stop offset="0.0619" stop-color="#54524d"/><stop offset="0.0959" stop-color="#52504b"/><stop offset="0.1367" stop-color="#514f4a"/><stop offset="0.1838" stop-color="#504e4a"/><stop offset="0.2366" stop-color="#514f4a"/><stop offset="0.2947" stop-color="#51504b"/><stop offset="0.3574" stop-color="#52504b"/><stop offset="0.4238" stop-color="#52514c"/><stop offset="0.4934" stop-color="#53524d"/><stop offset="0.5653" stop-color="#55534e"/><stop offset="0.6388" stop-color="#56544f"/><stop offset="0.7129" stop-color="#575651"/><stop offset="0.7869" stop-color="#595752"/><stop offset="0.8600" stop-color="#5a5954"/><stop offset="0.9313" stop-color="#5c5a56"/><stop offset="1.0000" stop-color="#5d5c57"/></linearGradient><linearGradient id="g38" gradientUnits="userSpaceOnUse" x1="468.0" y1="0" x2="1322.8" y2="0"><stop offset="0.0000" stop-color="#686660"/><stop offset="0.0291" stop-color="#686660"/><stop offset="0.0683" stop-color="#686660"/><stop offset="0.1168" stop-color="#686660"/><stop offset="0.1734" stop-color="#686660"/><stop offset="0.2369" stop-color="#686660"/><stop offset="0.3059" stop-color="#686660"/><stop offset="0.3790" stop-color="#686660"/><stop offset="0.4544" stop-color="#686660"/><stop offset="0.5305" stop-color="#63615b"/><stop offset="0.6057" stop-color="#63615b"/><stop offset="0.6783" stop-color="#63615b"/><stop offset="0.7466" stop-color="#63615b"/><stop offset="0.8093" stop-color="#63615b"/><stop offset="0.8648" stop-color="#63615b"/><stop offset="0.9120" stop-color="#63615b"/><stop offset="0.9499" stop-color="#63615b"/><stop offset="0.9775" stop-color="#63615b"/><stop offset="0.9943" stop-color="#63615b"/><stop offset="1.0000" stop-color="#63615b"/></linearGradient><linearGradient id="g39" gradientUnits="userSpaceOnUse" x1="546.5" y1="0" x2="1322.8" y2="0"><stop offset="0.0000" stop-color="#595853"/><stop offset="0.0499" stop-color="#5a5854"/><stop offset="0.1062" stop-color="#5a5954"/><stop offset="0.1680" stop-color="#5b5955"/><stop offset="0.2342" stop-color="#5b5a56"/><stop offset="0.3037" stop-color="#5c5b57"/><stop offset="0.3755" stop-color="#5e5c58"/><stop offset="0.4482" stop-color="#5f5d59"/><stop offset="0.5207" stop-color="#605f5b"/><stop offset="0.5918" stop-color="#61605c"/><stop offset="0.6603" stop-color="#63625d"/><stop offset="0.7251" stop-color="#64635f"/><stop offset="0.7850" stop-color="#666561"/><stop offset="0.8391" stop-color="#686762"/><stop offset="0.8865" stop-color="#6a6964"/><stop offset="0.9265" stop-color="#6a6964"/><stop offset="0.9582" stop-color="#6a6863"/><stop offset="0.9813" stop-color="#696862"/><stop offset="0.9953" stop-color="#66645f"/><stop offset="1.0000" stop-color="#63615b"/></linearGradient><linearGradient id="g40" gradientUnits="userSpaceOnUse" x1="234.1" y1="0" x2="468.0" y2="0"><stop offset="0.0000" stop-color="#66645f"/><stop offset="0.0035" stop-color="#686660"/><stop offset="0.0139" stop-color="#686660"/><stop offset="0.0312" stop-color="#686660"/><stop offset="0.0552" stop-color="#686660"/><stop offset="0.0857" stop-color="#686660"/><stop offset="0.1226" stop-color="#686660"/><stop offset="0.1656" stop-color="#686660"/><stop offset="0.2142" stop-color="#686660"/><stop offset="0.2682" stop-color="#686660"/><stop offset="0.3272" stop-color="#686660"/><stop offset="0.3908" stop-color="#686660"/><stop offset="0.4584" stop-color="#686660"/><stop offset="0.5295" stop-color="#686660"/><stop offset="0.6036" stop-color="#686660"/><stop offset="0.6803" stop-color="#686660"/><stop offset="0.7588" stop-color="#686660"/><stop offset="0.8387" stop-color="#686660"/><stop offset="0.9193" stop-color="#686660"/><stop offset="1.0000" stop-color="#63615b"/></linearGradient><linearGradient id="g41" gradientUnits="userSpaceOnUse" x1="234.1" y1="0" x2="546.5" y2="0"><stop offset="0.0000" stop-color="#66645f"/><stop offset="0.0039" stop-color="#64625d"/><stop offset="0.0157" stop-color="#615f5a"/><stop offset="0.0351" stop-color="#5e5c57"/><stop offset="0.0619" stop-color="#5c5a56"/><stop offset="0.0959" stop-color="#5b5955"/><stop offset="0.1367" stop-color="#5a5854"/><stop offset="0.1838" stop-color="#595854"/><stop offset="0.2367" stop-color="#5a5854"/><stop offset="0.2948" stop-color="#5a5954"/><stop offset="0.3575" stop-color="#5b5955"/><stop offset="0.4240" stop-color="#5b5a55"/><stop offset="0.4936" stop-color="#5c5a56"/><stop offset="0.5655" stop-color="#5d5b57"/><stop offset="0.6389" stop-color="#5e5c58"/><stop offset="0.7131" stop-color="#5f5d59"/><stop offset="0.7870" stop-color="#605f5a"/><stop offset="0.8601" stop-color="#61605b"/><stop offset="0.9313" stop-color="#62615d"/><stop offset="1.0000" stop-color="#63625e"/></linearGradient><linearGradient id="g42" gradientUnits="userSpaceOnUse" x1="468.5" y1="0" x2="1322.1" y2="0"><stop offset="0.0000" stop-color="#72706c"/><stop offset="0.0290" stop-color="#72706c"/><stop offset="0.0682" stop-color="#72706c"/><stop offset="0.1166" stop-color="#72706c"/><stop offset="0.1732" stop-color="#72706c"/><stop offset="0.2367" stop-color="#72706c"/><stop offset="0.3057" stop-color="#72706c"/><stop offset="0.3787" stop-color="#72706c"/><stop offset="0.4541" stop-color="#72706c"/><stop offset="0.5303" stop-color="#6e6d68"/><stop offset="0.6055" stop-color="#6e6d68"/><stop offset="0.6781" stop-color="#6e6d68"/><stop offset="0.7465" stop-color="#6e6d68"/><stop offset="0.8092" stop-color="#6e6d68"/><stop offset="0.8647" stop-color="#6e6d68"/><stop offset="0.9120" stop-color="#6e6d68"/><stop offset="0.9498" stop-color="#6e6d68"/><stop offset="0.9775" stop-color="#6e6d68"/><stop offset="0.9943" stop-color="#6e6d68"/><stop offset="1.0000" stop-color="#6e6d68"/></linearGradient><linearGradient id="g43" gradientUnits="userSpaceOnUse" x1="546.7" y1="0" x2="1322.1" y2="0"><stop offset="0.0000" stop-color="#686764"/><stop offset="0.0498" stop-color="#696864"/><stop offset="0.1061" stop-color="#696865"/><stop offset="0.1678" stop-color="#6a6965"/><stop offset="0.2340" stop-color="#6a6a66"/><stop offset="0.3035" stop-color="#6b6a67"/><stop offset="0.3753" stop-color="#6c6b67"/><stop offset="0.4480" stop-color="#6d6c68"/><stop offset="0.5205" stop-color="#6e6d69"/><stop offset="0.5916" stop-color="#6e6e6a"/><stop offset="0.6602" stop-color="#6f6f6b"/><stop offset="0.7249" stop-color="#706f6c"/><stop offset="0.7849" stop-color="#71716d"/><stop offset="0.8391" stop-color="#72726e"/><stop offset="0.8865" stop-color="#73736f"/><stop offset="0.9264" stop-color="#73736e"/><stop offset="0.9582" stop-color="#73726e"/><stop offset="0.9813" stop-color="#72726d"/><stop offset="0.9953" stop-color="#706f6b"/><stop offset="1.0000" stop-color="#6e6d68"/></linearGradient><linearGradient id="g44" gradientUnits="userSpaceOnUse" x1="234.8" y1="0" x2="468.5" y2="0"><stop offset="0.0000" stop-color="#706f6b"/><stop offset="0.0035" stop-color="#72706c"/><stop offset="0.0139" stop-color="#72706c"/><stop offset="0.0312" stop-color="#72706c"/><stop offset="0.0552" stop-color="#72706c"/><stop offset="0.0858" stop-color="#72706c"/><stop offset="0.1227" stop-color="#72706c"/><stop offset="0.1656" stop-color="#72706c"/><stop offset="0.2143" stop-color="#72706c"/><stop offset="0.2684" stop-color="#72706c"/><stop offset="0.3274" stop-color="#72706c"/><stop offset="0.3910" stop-color="#72706c"/><stop offset="0.4585" stop-color="#72706c"/><stop offset="0.5297" stop-color="#72706c"/><stop offset="0.6038" stop-color="#72706c"/><stop offset="0.6805" stop-color="#72706c"/><stop offset="0.7590" stop-color="#72706c"/><stop offset="0.8388" stop-color="#72706c"/><stop offset="0.9193" stop-color="#72706c"/><stop offset="1.0000" stop-color="#6e6d68"/></linearGradient><linearGradient id="g45" gradientUnits="userSpaceOnUse" x1="234.8" y1="0" x2="546.7" y2="0"><stop offset="0.0000" stop-color="#706f6b"/><stop offset="0.0039" stop-color="#6f6e69"/><stop offset="0.0157" stop-color="#6d6c68"/><stop offset="0.0351" stop-color="#6b6a66"/><stop offset="0.0620" stop-color="#6a6965"/><stop offset="0.0960" stop-color="#696864"/><stop offset="0.1368" stop-color="#696864"/><stop offset="0.1840" stop-color="#686864"/><stop offset="0.2369" stop-color="#696864"/><stop offset="0.2950" stop-color="#696865"/><stop offset="0.3577" stop-color="#6a6965"/><stop offset="0.4242" stop-color="#6a6966"/><stop offset="0.4938" stop-color="#6b6a66"/><stop offset="0.5658" stop-color="#6b6b67"/><stop offset="0.6392" stop-color="#6c6b68"/><stop offset="0.7133" stop-color="#6d6c68"/><stop offset="0.7873" stop-color="#6d6d69"/><stop offset="0.8602" stop-color="#6e6d6a"/><stop offset="0.9314" stop-color="#6f6e6a"/><stop offset="1.0000" stop-color="#6f6f6b"/></linearGradient><linearGradient id="g46" gradientUnits="userSpaceOnUse" x1="469.1" y1="0" x2="1321.2" y2="0"><stop offset="0.0000" stop-color="#7a7974"/><stop offset="0.0289" stop-color="#7a7974"/><stop offset="0.0680" stop-color="#7a7874"/><stop offset="0.1163" stop-color="#7a7874"/><stop offset="0.1728" stop-color="#7a7874"/><stop offset="0.2363" stop-color="#7a7874"/><stop offset="0.3053" stop-color="#7a7874"/><stop offset="0.3784" stop-color="#7a7874"/><stop offset="0.4538" stop-color="#7a7874"/><stop offset="0.5300" stop-color="#787773"/><stop offset="0.6052" stop-color="#787773"/><stop offset="0.6779" stop-color="#787773"/><stop offset="0.7463" stop-color="#787773"/><stop offset="0.8090" stop-color="#787773"/><stop offset="0.8646" stop-color="#787773"/><stop offset="0.9119" stop-color="#787773"/><stop offset="0.9498" stop-color="#787773"/><stop offset="0.9775" stop-color="#787773"/><stop offset="0.9943" stop-color="#787773"/><stop offset="1.0000" stop-color="#787773"/></linearGradient><linearGradient id="g47" gradientUnits="userSpaceOnUse" x1="546.9" y1="0" x2="1321.2" y2="0"><stop offset="0.0000" stop-color="#787773"/><stop offset="0.0498" stop-color="#787874"/><stop offset="0.1059" stop-color="#7a7975"/><stop offset="0.1676" stop-color="#7b7a76"/><stop offset="0.2338" stop-color="#7c7b77"/><stop offset="0.3033" stop-color="#7d7c78"/><stop offset="0.3750" stop-color="#7d7d79"/><stop offset="0.4478" stop-color="#7e7d79"/><stop offset="0.5203" stop-color="#7e7d79"/><stop offset="0.5914" stop-color="#7e7d79"/><stop offset="0.6600" stop-color="#7d7d79"/><stop offset="0.7248" stop-color="#7d7c78"/><stop offset="0.7848" stop-color="#7d7c78"/><stop offset="0.8389" stop-color="#7c7c78"/><stop offset="0.8864" stop-color="#7c7c77"/><stop offset="0.9264" stop-color="#7c7b77"/><stop offset="0.9582" stop-color="#7b7a76"/><stop offset="0.9813" stop-color="#7a7a75"/><stop offset="0.9953" stop-color="#797874"/><stop offset="1.0000" stop-color="#787773"/></linearGradient><linearGradient id="g48" gradientUnits="userSpaceOnUse" x1="235.7" y1="0" x2="469.1" y2="0"><stop offset="0.0000" stop-color="#797874"/><stop offset="0.0035" stop-color="#7a7974"/><stop offset="0.0139" stop-color="#7a7974"/><stop offset="0.0312" stop-color="#7a7974"/><stop offset="0.0553" stop-color="#7a7974"/><stop offset="0.0859" stop-color="#7a7974"/><stop offset="0.1228" stop-color="#7a7874"/><stop offset="0.1658" stop-color="#7a7874"/><stop offset="0.2145" stop-color="#7a7874"/><stop offset="0.2686" stop-color="#7a7874"/><stop offset="0.3276" stop-color="#7a7874"/><stop offset="0.3912" stop-color="#7a7874"/><stop offset="0.4588" stop-color="#7a7874"/><stop offset="0.5300" stop-color="#7a7874"/><stop offset="0.6041" stop-color="#7a7874"/><stop offset="0.6807" stop-color="#7a7874"/><stop offset="0.7592" stop-color="#7a7874"/><stop offset="0.8390" stop-color="#7a7874"/><stop offset="0.9194" stop-color="#7a7874"/><stop offset="1.0000" stop-color="#787773"/></linearGradient><linearGradient id="g49" gradientUnits="userSpaceOnUse" x1="235.7" y1="0" x2="546.9" y2="0"><stop offset="0.0000" stop-color="#797874"/><stop offset="0.0039" stop-color="#797873"/><stop offset="0.0157" stop-color="#787773"/><stop offset="0.0351" stop-color="#777672"/><stop offset="0.0620" stop-color="#777672"/><stop offset="0.0961" stop-color="#777672"/><stop offset="0.1370" stop-color="#777773"/><stop offset="0.1842" stop-color="#787773"/><stop offset="0.2372" stop-color="#797874"/><stop offset="0.2953" stop-color="#7a7975"/><stop offset="0.3580" stop-color="#7b7a76"/><stop offset="0.4246" stop-color="#7b7b77"/><stop offset="0.4942" stop-color="#7c7b77"/><stop offset="0.5661" stop-color="#7d7c78"/><stop offset="0.6396" stop-color="#7d7d79"/><stop offset="0.7136" stop-color="#7e7d79"/><stop offset="0.7875" stop-color="#7e7d79"/><stop offset="0.8604" stop-color="#7e7d79"/><stop offset="0.9315" stop-color="#7e7d79"/><stop offset="1.0000" stop-color="#7d7d79"/></linearGradient><linearGradient id="g50" gradientUnits="userSpaceOnUse" x1="469.9" y1="0" x2="1320.1" y2="0"><stop offset="0.0000" stop-color="#7f7e79"/><stop offset="0.0288" stop-color="#7f7e79"/><stop offset="0.0678" stop-color="#7f7e79"/><stop offset="0.1160" stop-color="#7f7e79"/><stop offset="0.1724" stop-color="#7f7e79"/><stop offset="0.2359" stop-color="#7f7e79"/><stop offset="0.3049" stop-color="#7f7e79"/><stop offset="0.3779" stop-color="#7f7e79"/><stop offset="0.4534" stop-color="#7f7e79"/><stop offset="0.5296" stop-color="#7f7e79"/><stop offset="0.6049" stop-color="#7f7e79"/><stop offset="0.6775" stop-color="#7f7e79"/><stop offset="0.7460" stop-color="#7f7e79"/><stop offset="0.8088" stop-color="#7f7e79"/><stop offset="0.8645" stop-color="#7f7e79"/><stop offset="0.9118" stop-color="#7f7e79"/><stop offset="0.9497" stop-color="#7f7e79"/><stop offset="0.9774" stop-color="#7f7e79"/><stop offset="0.9943" stop-color="#7f7e79"/><stop offset="1.0000" stop-color="#807f7a"/></linearGradient><linearGradient id="g51" gradientUnits="userSpaceOnUse" x1="547.3" y1="0" x2="1320.1" y2="0"><stop offset="0.0000" stop-color="#888782"/><stop offset="0.0497" stop-color="#8b8a85"/><stop offset="0.1058" stop-color="#8e8d88"/><stop offset="0.1674" stop-color="#90908b"/><stop offset="0.2335" stop-color="#93928d"/><stop offset="0.3030" stop-color="#95948f"/><stop offset="0.3747" stop-color="#969590"/><stop offset="0.4474" stop-color="#969590"/><stop offset="0.5200" stop-color="#95948f"/><stop offset="0.5911" stop-color="#93928e"/><stop offset="0.6597" stop-color="#91908b"/><stop offset="0.7245" stop-color="#8e8d88"/><stop offset="0.7846" stop-color="#8b8a85"/><stop offset="0.8388" stop-color="#888782"/><stop offset="0.8863" stop-color="#868580"/><stop offset="0.9263" stop-color="#84837e"/><stop offset="0.9581" stop-color="#82817c"/><stop offset="0.9813" stop-color="#81807b"/><stop offset="0.9953" stop-color="#807f7a"/><stop offset="1.0000" stop-color="#807f7a"/></linearGradient><linearGradient id="g52" gradientUnits="userSpaceOnUse" x1="236.9" y1="0" x2="469.9" y2="0"><stop offset="0.0000" stop-color="#807f7a"/><stop offset="0.0035" stop-color="#807f7a"/><stop offset="0.0139" stop-color="#7f7e79"/><stop offset="0.0313" stop-color="#7f7e79"/><stop offset="0.0553" stop-color="#7f7e79"/><stop offset="0.0860" stop-color="#7f7e79"/><stop offset="0.1229" stop-color="#7f7e79"/><stop offset="0.1660" stop-color="#7f7e79"/><stop offset="0.2147" stop-color="#7f7e79"/><stop offset="0.2688" stop-color="#7f7e79"/><stop offset="0.3279" stop-color="#7f7e79"/><stop offset="0.3915" stop-color="#7f7e79"/><stop offset="0.4592" stop-color="#7f7e79"/><stop offset="0.5303" stop-color="#7f7e79"/><stop offset="0.6045" stop-color="#7f7e79"/><stop offset="0.6810" stop-color="#7f7e79"/><stop offset="0.7595" stop-color="#7f7e79"/><stop offset="0.8392" stop-color="#7f7e79"/><stop offset="0.9195" stop-color="#7f7e79"/><stop offset="1.0000" stop-color="#7f7e79"/></linearGradient><linearGradient id="g53" gradientUnits="userSpaceOnUse" x1="236.9" y1="0" x2="547.3" y2="0"><stop offset="0.0000" stop-color="#807f7a"/><stop offset="0.0039" stop-color="#807f7b"/><stop offset="0.0157" stop-color="#81807b"/><stop offset="0.0352" stop-color="#82817c"/><stop offset="0.0621" stop-color="#83827e"/><stop offset="0.0963" stop-color="#85847f"/><stop offset="0.1372" stop-color="#878681"/><stop offset="0.1844" stop-color="#898883"/><stop offset="0.2375" stop-color="#8b8a86"/><stop offset="0.2957" stop-color="#8e8d88"/><stop offset="0.3584" stop-color="#908f8a"/><stop offset="0.4250" stop-color="#92918d"/><stop offset="0.4947" stop-color="#94938e"/><stop offset="0.5666" stop-color="#969590"/><stop offset="0.6400" stop-color="#969590"/><stop offset="0.7141" stop-color="#969590"/><stop offset="0.7879" stop-color="#959490"/><stop offset="0.8607" stop-color="#94938e"/><stop offset="0.9317" stop-color="#92918c"/><stop offset="1.0000" stop-color="#908f8a"/></linearGradient><linearGradient id="g54" gradientUnits="userSpaceOnUse" x1="470.9" y1="0" x2="1318.7" y2="0"><stop offset="0.0000" stop-color="#87857d"/><stop offset="0.0286" stop-color="#87847d"/><stop offset="0.0675" stop-color="#86847d"/><stop offset="0.1156" stop-color="#86847d"/><stop offset="0.1720" stop-color="#86847d"/><stop offset="0.2353" stop-color="#86847d"/><stop offset="0.3043" stop-color="#86847d"/><stop offset="0.3773" stop-color="#86847d"/><stop offset="0.4528" stop-color="#86847d"/><stop offset="0.5291" stop-color="#86847d"/><stop offset="0.6044" stop-color="#86847d"/><stop offset="0.6772" stop-color="#86847d"/><stop offset="0.7457" stop-color="#86847d"/><stop offset="0.8086" stop-color="#86847d"/><stop offset="0.8643" stop-color="#86847d"/><stop offset="0.9117" stop-color="#86847d"/><stop offset="0.9497" stop-color="#86847d"/><stop offset="0.9774" stop-color="#87857d"/><stop offset="0.9943" stop-color="#87857e"/><stop offset="1.0000" stop-color="#88867e"/></linearGradient><linearGradient id="g55" gradientUnits="userSpaceOnUse" x1="547.6" y1="0" x2="1318.7" y2="0"><stop offset="0.0000" stop-color="#999790"/><stop offset="0.0495" stop-color="#9f9d96"/><stop offset="0.1055" stop-color="#a6a39c"/><stop offset="0.1671" stop-color="#acaaa2"/><stop offset="0.2331" stop-color="#b1afa8"/><stop offset="0.3026" stop-color="#b5b3ac"/><stop offset="0.3743" stop-color="#b8b5ae"/><stop offset="0.4470" stop-color="#b8b6ae"/><stop offset="0.5196" stop-color="#b6b4ac"/><stop offset="0.5908" stop-color="#b2b0a8"/><stop offset="0.6594" stop-color="#adaba3"/><stop offset="0.7243" stop-color="#a7a49d"/><stop offset="0.7844" stop-color="#a09e97"/><stop offset="0.8386" stop-color="#9a9891"/><stop offset="0.8862" stop-color="#95938c"/><stop offset="0.9262" stop-color="#918f87"/><stop offset="0.9581" stop-color="#8d8b84"/><stop offset="0.9812" stop-color="#8b8981"/><stop offset="0.9953" stop-color="#898780"/><stop offset="1.0000" stop-color="#88867e"/></linearGradient><linearGradient id="g56" gradientUnits="userSpaceOnUse" x1="238.3" y1="0" x2="470.9" y2="0"><stop offset="0.0000" stop-color="#89867f"/><stop offset="0.0035" stop-color="#88867e"/><stop offset="0.0140" stop-color="#87857e"/><stop offset="0.0313" stop-color="#87857e"/><stop offset="0.0554" stop-color="#87857d"/><stop offset="0.0861" stop-color="#87847d"/><stop offset="0.1231" stop-color="#86847d"/><stop offset="0.1662" stop-color="#86847d"/><stop offset="0.2150" stop-color="#86847d"/><stop offset="0.2692" stop-color="#86847d"/><stop offset="0.3283" stop-color="#86847d"/><stop offset="0.3919" stop-color="#86847d"/><stop offset="0.4596" stop-color="#86847d"/><stop offset="0.5307" stop-color="#86847d"/><stop offset="0.6049" stop-color="#86847d"/><stop offset="0.6814" stop-color="#86847d"/><stop offset="0.7598" stop-color="#86847d"/><stop offset="0.8394" stop-color="#86847d"/><stop offset="0.9197" stop-color="#86847d"/><stop offset="1.0000" stop-color="#86847d"/></linearGradient><linearGradient id="g57" gradientUnits="userSpaceOnUse" x1="238.3" y1="0" x2="547.7" y2="0"><stop offset="0.0000" stop-color="#89867f"/><stop offset="0.0039" stop-color="#8a8880"/><stop offset="0.0157" stop-color="#8b8982"/><stop offset="0.0352" stop-color="#8d8b84"/><stop offset="0.0622" stop-color="#908e87"/><stop offset="0.0964" stop-color="#94918a"/><stop offset="0.1374" stop-color="#98958e"/><stop offset="0.1847" stop-color="#9c9a93"/><stop offset="0.2378" stop-color="#a19f98"/><stop offset="0.2961" stop-color="#a6a49d"/><stop offset="0.3589" stop-color="#aba9a2"/><stop offset="0.4256" stop-color="#b0aea7"/><stop offset="0.4953" stop-color="#b4b2aa"/><stop offset="0.5672" stop-color="#b6b4ad"/><stop offset="0.6406" stop-color="#b8b6ae"/><stop offset="0.7146" stop-color="#b8b5ae"/><stop offset="0.7884" stop-color="#b6b4ad"/><stop offset="0.8611" stop-color="#b3b1aa"/><stop offset="0.9319" stop-color="#afada6"/><stop offset="1.0000" stop-color="#aaa8a1"/></linearGradient><linearGradient id="g58" gradientUnits="userSpaceOnUse" x1="472.1" y1="0" x2="1317.1" y2="0"><stop offset="0.0000" stop-color="#8e8b82"/><stop offset="0.0285" stop-color="#8e8b82"/><stop offset="0.0671" stop-color="#8e8b82"/><stop offset="0.1151" stop-color="#8e8b82"/><stop offset="0.1714" stop-color="#8e8b82"/><stop offset="0.2347" stop-color="#8e8b82"/><stop offset="0.3037" stop-color="#8e8b82"/><stop offset="0.3767" stop-color="#8e8b82"/><stop offset="0.4522" stop-color="#8e8b82"/><stop offset="0.5285" stop-color="#8e8b82"/><stop offset="0.6039" stop-color="#8e8b82"/><stop offset="0.6767" stop-color="#8e8b82"/><stop offset="0.7454" stop-color="#8e8b82"/><stop offset="0.8083" stop-color="#8e8b82"/><stop offset="0.8641" stop-color="#8e8b82"/><stop offset="0.9115" stop-color="#8e8b82"/><stop offset="0.9496" stop-color="#8e8b82"/><stop offset="0.9774" stop-color="#8e8b82"/><stop offset="0.9943" stop-color="#8f8c83"/><stop offset="1.0000" stop-color="#908d84"/></linearGradient><linearGradient id="g59" gradientUnits="userSpaceOnUse" x1="548.1" y1="0" x2="1317.1" y2="0"><stop offset="0.0000" stop-color="#a8a59c"/><stop offset="0.0494" stop-color="#b0ada4"/><stop offset="0.1053" stop-color="#b9b6ad"/><stop offset="0.1667" stop-color="#c1beb5"/><stop offset="0.2327" stop-color="#c9c6bd"/><stop offset="0.3021" stop-color="#cfccc3"/><stop offset="0.3738" stop-color="#d2cfc6"/><stop offset="0.4465" stop-color="#d2cfc6"/><stop offset="0.5191" stop-color="#d0cdc4"/><stop offset="0.5904" stop-color="#cac7be"/><stop offset="0.6590" stop-color="#c3c0b7"/><stop offset="0.7240" stop-color="#bbb8af"/><stop offset="0.7841" stop-color="#b2afa6"/><stop offset="0.8384" stop-color="#aaa79e"/><stop offset="0.8860" stop-color="#a29f96"/><stop offset="0.9261" stop-color="#9c9990"/><stop offset="0.9580" stop-color="#97948b"/><stop offset="0.9812" stop-color="#949188"/><stop offset="0.9953" stop-color="#918e85"/><stop offset="1.0000" stop-color="#908d84"/></linearGradient><linearGradient id="g60" gradientUnits="userSpaceOnUse" x1="239.9" y1="0" x2="472.1" y2="0"><stop offset="0.0000" stop-color="#918e85"/><stop offset="0.0035" stop-color="#908d84"/><stop offset="0.0140" stop-color="#8f8c83"/><stop offset="0.0314" stop-color="#8f8c83"/><stop offset="0.0555" stop-color="#8e8b82"/><stop offset="0.0862" stop-color="#8e8b82"/><stop offset="0.1233" stop-color="#8e8b82"/><stop offset="0.1664" stop-color="#8e8b82"/><stop offset="0.2153" stop-color="#8e8b82"/><stop offset="0.2695" stop-color="#8e8b82"/><stop offset="0.3287" stop-color="#8e8b82"/><stop offset="0.3924" stop-color="#8e8b82"/><stop offset="0.4601" stop-color="#8e8b82"/><stop offset="0.5312" stop-color="#8e8b82"/><stop offset="0.6054" stop-color="#8e8b82"/><stop offset="0.6819" stop-color="#8e8b82"/><stop offset="0.7602" stop-color="#8e8b82"/><stop offset="0.8397" stop-color="#8e8b82"/><stop offset="0.9198" stop-color="#8e8b82"/><stop offset="1.0000" stop-color="#8e8b82"/></linearGradient><linearGradient id="g61" gradientUnits="userSpaceOnUse" x1="239.9" y1="0" x2="548.1" y2="0"><stop offset="0.0000" stop-color="#918e85"/><stop offset="0.0040" stop-color="#928f86"/><stop offset="0.0158" stop-color="#949188"/><stop offset="0.0353" stop-color="#97948b"/><stop offset="0.0624" stop-color="#9b988f"/><stop offset="0.0966" stop-color="#a09d94"/><stop offset="0.1377" stop-color="#a6a39a"/><stop offset="0.1851" stop-color="#aca9a0"/><stop offset="0.2383" stop-color="#b3b0a7"/><stop offset="0.2966" stop-color="#bab7ae"/><stop offset="0.3595" stop-color="#c1beb5"/><stop offset="0.4262" stop-color="#c8c5bc"/><stop offset="0.4959" stop-color="#cdcac1"/><stop offset="0.5679" stop-color="#d1cec5"/><stop offset="0.6413" stop-color="#d2cfc6"/><stop offset="0.7152" stop-color="#d2cfc6"/><stop offset="0.7889" stop-color="#d0cdc4"/><stop offset="0.8615" stop-color="#ccc9c0"/><stop offset="0.9321" stop-color="#c6c3ba"/><stop offset="1.0000" stop-color="#bfbcb3"/></linearGradient><linearGradient id="g62" gradientUnits="userSpaceOnUse" x1="473.3" y1="0" x2="1315.3" y2="0"><stop offset="0.0000" stop-color="#96938a"/><stop offset="0.0282" stop-color="#96938a"/><stop offset="0.0667" stop-color="#96938a"/><stop offset="0.1146" stop-color="#96938a"/><stop offset="0.1708" stop-color="#96938a"/><stop offset="0.2340" stop-color="#96938a"/><stop offset="0.3029" stop-color="#96938a"/><stop offset="0.3760" stop-color="#96938a"/><stop offset="0.4515" stop-color="#96938a"/><stop offset="0.5278" stop-color="#96938a"/><stop offset="0.6033" stop-color="#96938a"/><stop offset="0.6762" stop-color="#96938a"/><stop offset="0.7449" stop-color="#96938a"/><stop offset="0.8079" stop-color="#96938a"/><stop offset="0.8638" stop-color="#96938a"/><stop offset="0.9114" stop-color="#96938a"/><stop offset="0.9495" stop-color="#96938a"/><stop offset="0.9773" stop-color="#96938a"/><stop offset="0.9943" stop-color="#97948b"/><stop offset="1.0000" stop-color="#98958c"/></linearGradient><linearGradient id="g63" gradientUnits="userSpaceOnUse" x1="548.6" y1="0" x2="1315.3" y2="0"><stop offset="0.0000" stop-color="#aeaba2"/><stop offset="0.0492" stop-color="#b5b2a9"/><stop offset="0.1050" stop-color="#bdbab1"/><stop offset="0.1663" stop-color="#c5c2b9"/><stop offset="0.2322" stop-color="#ccc9c0"/><stop offset="0.3016" stop-color="#d1cec5"/><stop offset="0.3733" stop-color="#d4d1c8"/><stop offset="0.4460" stop-color="#d4d1c8"/><stop offset="0.5186" stop-color="#d2cfc6"/><stop offset="0.5899" stop-color="#cdcac1"/><stop offset="0.6586" stop-color="#c6c3ba"/><stop offset="0.7236" stop-color="#bfbcb3"/><stop offset="0.7838" stop-color="#b7b4ab"/><stop offset="0.8382" stop-color="#afaca3"/><stop offset="0.8859" stop-color="#a9a69d"/><stop offset="0.9260" stop-color="#a3a097"/><stop offset="0.9580" stop-color="#9f9c93"/><stop offset="0.9812" stop-color="#9c9990"/><stop offset="0.9953" stop-color="#99968d"/><stop offset="1.0000" stop-color="#98958c"/></linearGradient><linearGradient id="g64" gradientUnits="userSpaceOnUse" x1="241.7" y1="0" x2="473.4" y2="0"><stop offset="0.0000" stop-color="#99968d"/><stop offset="0.0035" stop-color="#98958c"/><stop offset="0.0140" stop-color="#97948b"/><stop offset="0.0314" stop-color="#97948b"/><stop offset="0.0556" stop-color="#96938a"/><stop offset="0.0864" stop-color="#96938a"/><stop offset="0.1235" stop-color="#96938a"/><stop offset="0.1667" stop-color="#96938a"/><stop offset="0.2156" stop-color="#96938a"/><stop offset="0.2699" stop-color="#96938a"/><stop offset="0.3292" stop-color="#96938a"/><stop offset="0.3929" stop-color="#96938a"/><stop offset="0.4606" stop-color="#96938a"/><stop offset="0.5318" stop-color="#96938a"/><stop offset="0.6059" stop-color="#96938a"/><stop offset="0.6824" stop-color="#96938a"/><stop offset="0.7607" stop-color="#96938a"/><stop offset="0.8401" stop-color="#96938a"/><stop offset="0.9200" stop-color="#96938a"/><stop offset="1.0000" stop-color="#96938a"/></linearGradient><linearGradient id="g65" gradientUnits="userSpaceOnUse" x1="241.7" y1="0" x2="548.6" y2="0"><stop offset="0.0000" stop-color="#99968d"/><stop offset="0.0040" stop-color="#9a978e"/><stop offset="0.0158" stop-color="#9c9990"/><stop offset="0.0354" stop-color="#9f9c93"/><stop offset="0.0625" stop-color="#a29f96"/><stop offset="0.0969" stop-color="#a7a49b"/><stop offset="0.1380" stop-color="#aca9a0"/><stop offset="0.1855" stop-color="#b2afa6"/><stop offset="0.2388" stop-color="#b8b5ac"/><stop offset="0.2972" stop-color="#bfbcb3"/><stop offset="0.3602" stop-color="#c5c2b9"/><stop offset="0.4269" stop-color="#cbc8bf"/><stop offset="0.4967" stop-color="#d0cdc4"/><stop offset="0.5687" stop-color="#d3d0c7"/><stop offset="0.6420" stop-color="#d4d1c8"/><stop offset="0.7159" stop-color="#d4d1c8"/><stop offset="0.7895" stop-color="#d2cfc6"/><stop offset="0.8619" stop-color="#cecbc2"/><stop offset="0.9323" stop-color="#c9c6bd"/><stop offset="1.0000" stop-color="#c3c0b7"/></linearGradient><linearGradient id="g66" gradientUnits="userSpaceOnUse" x1="474.7" y1="0" x2="1313.3" y2="0"><stop offset="0.0000" stop-color="#939086"/><stop offset="0.0280" stop-color="#939086"/><stop offset="0.0663" stop-color="#939086"/><stop offset="0.1140" stop-color="#939086"/><stop offset="0.1701" stop-color="#928f86"/><stop offset="0.2332" stop-color="#928f86"/><stop offset="0.3021" stop-color="#928f86"/><stop offset="0.3751" stop-color="#928f86"/><stop offset="0.4507" stop-color="#928f86"/><stop offset="0.5271" stop-color="#928f86"/><stop offset="0.6027" stop-color="#928f86"/><stop offset="0.6757" stop-color="#928f86"/><stop offset="0.7445" stop-color="#928f86"/><stop offset="0.8076" stop-color="#928f86"/><stop offset="0.8636" stop-color="#928f86"/><stop offset="0.9112" stop-color="#939086"/><stop offset="0.9494" stop-color="#939086"/><stop offset="0.9773" stop-color="#939086"/><stop offset="0.9943" stop-color="#939087"/><stop offset="1.0000" stop-color="#949187"/></linearGradient><linearGradient id="g67" gradientUnits="userSpaceOnUse" x1="549.1" y1="0" x2="1313.3" y2="0"><stop offset="0.0000" stop-color="#a19e94"/><stop offset="0.0490" stop-color="#a5a299"/><stop offset="0.1046" stop-color="#aaa79d"/><stop offset="0.1659" stop-color="#aeaba2"/><stop offset="0.2317" stop-color="#b3b0a6"/><stop offset="0.3010" stop-color="#b6b3a9"/><stop offset="0.3727" stop-color="#b8b5ab"/><stop offset="0.4454" stop-color="#b8b5ab"/><stop offset="0.5181" stop-color="#b6b3aa"/><stop offset="0.5894" stop-color="#b4b1a7"/><stop offset="0.6581" stop-color="#b0ada3"/><stop offset="0.7232" stop-color="#aba89f"/><stop offset="0.7835" stop-color="#a6a39a"/><stop offset="0.8380" stop-color="#a29f95"/><stop offset="0.8857" stop-color="#9e9b91"/><stop offset="0.9259" stop-color="#9a978e"/><stop offset="0.9579" stop-color="#98958b"/><stop offset="0.9811" stop-color="#96938a"/><stop offset="0.9953" stop-color="#959288"/><stop offset="1.0000" stop-color="#949187"/></linearGradient><linearGradient id="g68" gradientUnits="userSpaceOnUse" x1="243.7" y1="0" x2="474.8" y2="0"><stop offset="0.0000" stop-color="#949188"/><stop offset="0.0035" stop-color="#949187"/><stop offset="0.0140" stop-color="#939087"/><stop offset="0.0315" stop-color="#939087"/><stop offset="0.0557" stop-color="#939086"/><stop offset="0.0866" stop-color="#939086"/><stop offset="0.1238" stop-color="#939086"/><stop offset="0.1670" stop-color="#939086"/><stop offset="0.2160" stop-color="#939086"/><stop offset="0.2704" stop-color="#928f86"/><stop offset="0.3297" stop-color="#928f86"/><stop offset="0.3935" stop-color="#928f86"/><stop offset="0.4613" stop-color="#928f86"/><stop offset="0.5325" stop-color="#928f86"/><stop offset="0.6066" stop-color="#928f86"/><stop offset="0.6830" stop-color="#928f86"/><stop offset="0.7612" stop-color="#928f86"/><stop offset="0.8405" stop-color="#928f86"/><stop offset="0.9203" stop-color="#928f86"/><stop offset="1.0000" stop-color="#928f86"/></linearGradient><linearGradient id="g69" gradientUnits="userSpaceOnUse" x1="243.7" y1="0" x2="549.1" y2="0"><stop offset="0.0000" stop-color="#949188"/><stop offset="0.0040" stop-color="#959289"/><stop offset="0.0159" stop-color="#96938a"/><stop offset="0.0355" stop-color="#98958b"/><stop offset="0.0627" stop-color="#9a978e"/><stop offset="0.0971" stop-color="#9d9a90"/><stop offset="0.1383" stop-color="#a09d93"/><stop offset="0.1859" stop-color="#a3a097"/><stop offset="0.2393" stop-color="#a7a49b"/><stop offset="0.2979" stop-color="#aba89f"/><stop offset="0.3609" stop-color="#afaca2"/><stop offset="0.4277" stop-color="#b2afa6"/><stop offset="0.4975" stop-color="#b5b2a9"/><stop offset="0.5695" stop-color="#b7b4ab"/><stop offset="0.6429" stop-color="#b8b5ab"/><stop offset="0.7167" stop-color="#b8b5ab"/><stop offset="0.7902" stop-color="#b6b3aa"/><stop offset="0.8624" stop-color="#b4b1a7"/><stop offset="0.9326" stop-color="#b1aea4"/><stop offset="1.0000" stop-color="#adaaa1"/></linearGradient><linearGradient id="g70" gradientUnits="userSpaceOnUse" x1="476.2" y1="0" x2="1311.2" y2="0"><stop offset="0.0000" stop-color="#8a877d"/><stop offset="0.0277" stop-color="#8a877d"/><stop offset="0.0658" stop-color="#8a877d"/><stop offset="0.1133" stop-color="#8a877d"/><stop offset="0.1693" stop-color="#8a877d"/><stop offset="0.2324" stop-color="#8a877d"/><stop offset="0.3012" stop-color="#8a877d"/><stop offset="0.3742" stop-color="#8a877d"/><stop offset="0.4498" stop-color="#8a877d"/><stop offset="0.5263" stop-color="#8a877d"/><stop offset="0.6019" stop-color="#8a877d"/><stop offset="0.6750" stop-color="#8a877d"/><stop offset="0.7440" stop-color="#8a877d"/><stop offset="0.8072" stop-color="#8a877d"/><stop offset="0.8633" stop-color="#8a877d"/><stop offset="0.9110" stop-color="#8a877d"/><stop offset="0.9493" stop-color="#8a877d"/><stop offset="0.9772" stop-color="#8a877d"/><stop offset="0.9943" stop-color="#8a877d"/><stop offset="1.0000" stop-color="#8a877e"/></linearGradient><linearGradient id="g71" gradientUnits="userSpaceOnUse" x1="549.7" y1="0" x2="1311.2" y2="0"><stop offset="0.0000" stop-color="#8f8c82"/><stop offset="0.0488" stop-color="#918e84"/><stop offset="0.1043" stop-color="#939086"/><stop offset="0.1654" stop-color="#959288"/><stop offset="0.2311" stop-color="#97948a"/><stop offset="0.3004" stop-color="#98958b"/><stop offset="0.3720" stop-color="#99968c"/><stop offset="0.4448" stop-color="#99968c"/><stop offset="0.5174" stop-color="#98958b"/><stop offset="0.5888" stop-color="#97948a"/><stop offset="0.6576" stop-color="#959288"/><stop offset="0.7228" stop-color="#949187"/><stop offset="0.7831" stop-color="#928f85"/><stop offset="0.8377" stop-color="#908d83"/><stop offset="0.8855" stop-color="#8e8b81"/><stop offset="0.9258" stop-color="#8d8a80"/><stop offset="0.9578" stop-color="#8c897f"/><stop offset="0.9811" stop-color="#8b887e"/><stop offset="0.9952" stop-color="#8b887e"/><stop offset="1.0000" stop-color="#8a877e"/></linearGradient><linearGradient id="g72" gradientUnits="userSpaceOnUse" x1="245.8" y1="0" x2="476.3" y2="0"><stop offset="0.0000" stop-color="#8b887e"/><stop offset="0.0035" stop-color="#8a877d"/><stop offset="0.0141" stop-color="#8a877d"/><stop offset="0.0316" stop-color="#8a877d"/><stop offset="0.0559" stop-color="#8a877d"/><stop offset="0.0868" stop-color="#8a877d"/><stop offset="0.1240" stop-color="#8a877d"/><stop offset="0.1674" stop-color="#8a877d"/><stop offset="0.2165" stop-color="#8a877d"/><stop offset="0.2709" stop-color="#8a877d"/><stop offset="0.3303" stop-color="#8a877d"/><stop offset="0.3941" stop-color="#8a877d"/><stop offset="0.4619" stop-color="#8a877d"/><stop offset="0.5332" stop-color="#8a877d"/><stop offset="0.6073" stop-color="#8a877d"/><stop offset="0.6837" stop-color="#8a877d"/><stop offset="0.7617" stop-color="#8a877d"/><stop offset="0.8409" stop-color="#8a877d"/><stop offset="0.9205" stop-color="#8a877d"/><stop offset="1.0000" stop-color="#8a877d"/></linearGradient><linearGradient id="g73" gradientUnits="userSpaceOnUse" x1="245.8" y1="0" x2="549.7" y2="0"><stop offset="0.0000" stop-color="#8b887e"/><stop offset="0.0040" stop-color="#8b887e"/><stop offset="0.0159" stop-color="#8b887f"/><stop offset="0.0356" stop-color="#8c897f"/><stop offset="0.0629" stop-color="#8d8a80"/><stop offset="0.0974" stop-color="#8e8b81"/><stop offset="0.1387" stop-color="#8f8c82"/><stop offset="0.1864" stop-color="#918e84"/><stop offset="0.2399" stop-color="#928f85"/><stop offset="0.2986" stop-color="#949187"/><stop offset="0.3617" stop-color="#959288"/><stop offset="0.4286" stop-color="#97948a"/><stop offset="0.4985" stop-color="#98958b"/><stop offset="0.5705" stop-color="#98958b"/><stop offset="0.6438" stop-color="#99968c"/><stop offset="0.7176" stop-color="#99968c"/><stop offset="0.7909" stop-color="#98958b"/><stop offset="0.8630" stop-color="#97948a"/><stop offset="0.9329" stop-color="#969389"/><stop offset="1.0000" stop-color="#949187"/></linearGradient><linearGradient id="g74" gradientUnits="userSpaceOnUse" x1="477.8" y1="0" x2="1308.9" y2="0"><stop offset="0.0000" stop-color="#878379"/><stop offset="0.0275" stop-color="#878379"/><stop offset="0.0653" stop-color="#868379"/><stop offset="0.1126" stop-color="#868379"/><stop offset="0.1684" stop-color="#868379"/><stop offset="0.2314" stop-color="#868379"/><stop offset="0.3002" stop-color="#868379"/><stop offset="0.3733" stop-color="#868379"/><stop offset="0.4489" stop-color="#868379"/><stop offset="0.5254" stop-color="#868379"/><stop offset="0.6012" stop-color="#868379"/><stop offset="0.6744" stop-color="#868379"/><stop offset="0.7434" stop-color="#868379"/><stop offset="0.8068" stop-color="#868379"/><stop offset="0.8630" stop-color="#868379"/><stop offset="0.9108" stop-color="#868379"/><stop offset="0.9492" stop-color="#878379"/><stop offset="0.9772" stop-color="#878379"/><stop offset="0.9943" stop-color="#878379"/><stop offset="1.0000" stop-color="#878379"/></linearGradient><linearGradient id="g75" gradientUnits="userSpaceOnUse" x1="550.3" y1="0" x2="1308.9" y2="0"><stop offset="0.0000" stop-color="#88847a"/><stop offset="0.0486" stop-color="#88857b"/><stop offset="0.1039" stop-color="#89857b"/><stop offset="0.1648" stop-color="#89867c"/><stop offset="0.2305" stop-color="#8a867c"/><stop offset="0.2997" stop-color="#8a877d"/><stop offset="0.3713" stop-color="#8a877d"/><stop offset="0.4440" stop-color="#8a877d"/><stop offset="0.5168" stop-color="#8a877d"/><stop offset="0.5882" stop-color="#8a867c"/><stop offset="0.6571" stop-color="#89867c"/><stop offset="0.7223" stop-color="#89857b"/><stop offset="0.7827" stop-color="#88857b"/><stop offset="0.8374" stop-color="#88857b"/><stop offset="0.8853" stop-color="#88847a"/><stop offset="0.9256" stop-color="#87847a"/><stop offset="0.9577" stop-color="#87847a"/><stop offset="0.9811" stop-color="#878379"/><stop offset="0.9952" stop-color="#878379"/><stop offset="1.0000" stop-color="#878379"/></linearGradient><linearGradient id="g76" gradientUnits="userSpaceOnUse" x1="248.0" y1="0" x2="477.9" y2="0"><stop offset="0.0000" stop-color="#878379"/><stop offset="0.0035" stop-color="#878379"/><stop offset="0.0141" stop-color="#878379"/><stop offset="0.0316" stop-color="#878379"/><stop offset="0.0560" stop-color="#878379"/><stop offset="0.0870" stop-color="#878379"/><stop offset="0.1243" stop-color="#878379"/><stop offset="0.1678" stop-color="#868379"/><stop offset="0.2170" stop-color="#868379"/><stop offset="0.2715" stop-color="#868379"/><stop offset="0.3310" stop-color="#868379"/><stop offset="0.3949" stop-color="#868379"/><stop offset="0.4627" stop-color="#868379"/><stop offset="0.5339" stop-color="#868379"/><stop offset="0.6080" stop-color="#868379"/><stop offset="0.6844" stop-color="#868379"/><stop offset="0.7623" stop-color="#868379"/><stop offset="0.8414" stop-color="#868379"/><stop offset="0.9208" stop-color="#868379"/><stop offset="1.0000" stop-color="#868379"/></linearGradient><linearGradient id="g77" gradientUnits="userSpaceOnUse" x1="248.0" y1="0" x2="550.3" y2="0"><stop offset="0.0000" stop-color="#878379"/><stop offset="0.0040" stop-color="#878379"/><stop offset="0.0160" stop-color="#878379"/><stop offset="0.0357" stop-color="#87847a"/><stop offset="0.0631" stop-color="#87847a"/><stop offset="0.0977" stop-color="#88847a"/><stop offset="0.1392" stop-color="#88847a"/><stop offset="0.1870" stop-color="#88857b"/><stop offset="0.2406" stop-color="#89857b"/><stop offset="0.2994" stop-color="#89857b"/><stop offset="0.3626" stop-color="#89867c"/><stop offset="0.4296" stop-color="#8a867c"/><stop offset="0.4995" stop-color="#8a877d"/><stop offset="0.5716" stop-color="#8a877d"/><stop offset="0.6448" stop-color="#8a877d"/><stop offset="0.7185" stop-color="#8a877d"/><stop offset="0.7917" stop-color="#8a877d"/><stop offset="0.8636" stop-color="#8a867c"/><stop offset="0.9333" stop-color="#89867c"/><stop offset="1.0000" stop-color="#89867c"/></linearGradient><linearGradient id="g78" gradientUnits="userSpaceOnUse" x1="479.5" y1="0" x2="1306.6" y2="0"><stop offset="0.0000" stop-color="#827e74"/><stop offset="0.0272" stop-color="#827e74"/><stop offset="0.0648" stop-color="#827e74"/><stop offset="0.1119" stop-color="#827e74"/><stop offset="0.1676" stop-color="#827e74"/><stop offset="0.2305" stop-color="#827e74"/><stop offset="0.2992" stop-color="#827e74"/><stop offset="0.3722" stop-color="#827e74"/><stop offset="0.4479" stop-color="#827e74"/><stop offset="0.5245" stop-color="#827e74"/><stop offset="0.6003" stop-color="#827e74"/><stop offset="0.6737" stop-color="#827e74"/><stop offset="0.7428" stop-color="#827e74"/><stop offset="0.8063" stop-color="#827e74"/><stop offset="0.8626" stop-color="#827e74"/><stop offset="0.9106" stop-color="#827e74"/><stop offset="0.9490" stop-color="#827e74"/><stop offset="0.9771" stop-color="#827e74"/><stop offset="0.9942" stop-color="#827e74"/><stop offset="1.0000" stop-color="#827e74"/></linearGradient><linearGradient id="g79" gradientUnits="userSpaceOnUse" x1="550.9" y1="0" x2="1306.6" y2="0"><stop offset="0.0000" stop-color="#827e74"/><stop offset="0.0484" stop-color="#827e74"/><stop offset="0.1034" stop-color="#827e74"/><stop offset="0.1643" stop-color="#827e74"/><stop offset="0.2298" stop-color="#827e74"/><stop offset="0.2990" stop-color="#827e74"/><stop offset="0.3705" stop-color="#827e74"/><stop offset="0.4433" stop-color="#827e74"/><stop offset="0.5160" stop-color="#827e74"/><stop offset="0.5875" stop-color="#827e74"/><stop offset="0.6565" stop-color="#827e74"/><stop offset="0.7218" stop-color="#827e74"/><stop offset="0.7823" stop-color="#827e74"/><stop offset="0.8371" stop-color="#827e74"/><stop offset="0.8850" stop-color="#827e74"/><stop offset="0.9255" stop-color="#827e74"/><stop offset="0.9576" stop-color="#827e74"/><stop offset="0.9810" stop-color="#827e74"/><stop offset="0.9952" stop-color="#827e74"/><stop offset="1.0000" stop-color="#827e74"/></linearGradient><linearGradient id="g80" gradientUnits="userSpaceOnUse" x1="250.3" y1="0" x2="479.5" y2="0"><stop offset="0.0000" stop-color="#827e74"/><stop offset="0.0035" stop-color="#827e74"/><stop offset="0.0142" stop-color="#827e74"/><stop offset="0.0317" stop-color="#827e74"/><stop offset="0.0562" stop-color="#827e74"/><stop offset="0.0872" stop-color="#827e74"/><stop offset="0.1247" stop-color="#827e74"/><stop offset="0.1682" stop-color="#827e74"/><stop offset="0.2175" stop-color="#827e74"/><stop offset="0.2721" stop-color="#827e74"/><stop offset="0.3317" stop-color="#827e74"/><stop offset="0.3956" stop-color="#827e74"/><stop offset="0.4635" stop-color="#827e74"/><stop offset="0.5348" stop-color="#827e74"/><stop offset="0.6089" stop-color="#827e74"/><stop offset="0.6851" stop-color="#827e74"/><stop offset="0.7630" stop-color="#827e74"/><stop offset="0.8419" stop-color="#827e74"/><stop offset="0.9211" stop-color="#827e74"/><stop offset="1.0000" stop-color="#827e74"/></linearGradient><linearGradient id="g81" gradientUnits="userSpaceOnUse" x1="250.3" y1="0" x2="550.9" y2="0"><stop offset="0.0000" stop-color="#827e74"/><stop offset="0.0040" stop-color="#827e74"/><stop offset="0.0160" stop-color="#827e74"/><stop offset="0.0359" stop-color="#827e74"/><stop offset="0.0633" stop-color="#827e74"/><stop offset="0.0980" stop-color="#827e74"/><stop offset="0.1396" stop-color="#827e74"/><stop offset="0.1876" stop-color="#827e74"/><stop offset="0.2413" stop-color="#827e74"/><stop offset="0.3002" stop-color="#827e74"/><stop offset="0.3636" stop-color="#827e74"/><stop offset="0.4307" stop-color="#827e74"/><stop offset="0.5006" stop-color="#827e74"/><stop offset="0.5727" stop-color="#827e74"/><stop offset="0.6459" stop-color="#827e74"/><stop offset="0.7195" stop-color="#827e74"/><stop offset="0.7926" stop-color="#827e74"/><stop offset="0.8643" stop-color="#827e74"/><stop offset="0.9337" stop-color="#827e74"/><stop offset="1.0000" stop-color="#827e74"/></linearGradient><linearGradient id="g82" gradientUnits="userSpaceOnUse" x1="481.2" y1="0" x2="1304.3" y2="0"><stop offset="0.0000" stop-color="#7d796f"/><stop offset="0.0269" stop-color="#7d796f"/><stop offset="0.0642" stop-color="#7d796f"/><stop offset="0.1111" stop-color="#7d796f"/><stop offset="0.1666" stop-color="#7d796f"/><stop offset="0.2294" stop-color="#7d796f"/><stop offset="0.2981" stop-color="#7d796f"/><stop offset="0.3711" stop-color="#7d796f"/><stop offset="0.4469" stop-color="#7d796f"/><stop offset="0.5235" stop-color="#7d796f"/><stop offset="0.5995" stop-color="#7d796f"/><stop offset="0.6729" stop-color="#7d796f"/><stop offset="0.7422" stop-color="#7d796f"/><stop offset="0.8058" stop-color="#7d796f"/><stop offset="0.8623" stop-color="#7d796f"/><stop offset="0.9103" stop-color="#7d796f"/><stop offset="0.9489" stop-color="#7d796f"/><stop offset="0.9771" stop-color="#7d796f"/><stop offset="0.9942" stop-color="#7d796f"/><stop offset="1.0000" stop-color="#7d796f"/></linearGradient><linearGradient id="g83" gradientUnits="userSpaceOnUse" x1="551.5" y1="0" x2="1304.3" y2="0"><stop offset="0.0000" stop-color="#7d796f"/><stop offset="0.0481" stop-color="#7d796f"/><stop offset="0.1030" stop-color="#7d796f"/><stop offset="0.1637" stop-color="#7d796f"/><stop offset="0.2291" stop-color="#7d796f"/><stop offset="0.2982" stop-color="#7d796f"/><stop offset="0.3697" stop-color="#7d796f"/><stop offset="0.4425" stop-color="#7d796f"/><stop offset="0.5153" stop-color="#7d796f"/><stop offset="0.5868" stop-color="#7d796f"/><stop offset="0.6559" stop-color="#7d796f"/><stop offset="0.7213" stop-color="#7d796f"/><stop offset="0.7819" stop-color="#7d796f"/><stop offset="0.8367" stop-color="#7d796f"/><stop offset="0.8848" stop-color="#7d796f"/><stop offset="0.9253" stop-color="#7d796f"/><stop offset="0.9576" stop-color="#7d796f"/><stop offset="0.9810" stop-color="#7d796f"/><stop offset="0.9952" stop-color="#7d796f"/><stop offset="1.0000" stop-color="#7d796f"/></linearGradient><linearGradient id="g84" gradientUnits="userSpaceOnUse" x1="252.7" y1="0" x2="481.2" y2="0"><stop offset="0.0000" stop-color="#7d796f"/><stop offset="0.0036" stop-color="#7d796f"/><stop offset="0.0142" stop-color="#7d796f"/><stop offset="0.0318" stop-color="#7d796f"/><stop offset="0.0563" stop-color="#7d796f"/><stop offset="0.0875" stop-color="#7d796f"/><stop offset="0.1250" stop-color="#7d796f"/><stop offset="0.1687" stop-color="#7d796f"/><stop offset="0.2180" stop-color="#7d796f"/><stop offset="0.2728" stop-color="#7d796f"/><stop offset="0.3324" stop-color="#7d796f"/><stop offset="0.3964" stop-color="#7d796f"/><stop offset="0.4644" stop-color="#7d796f"/><stop offset="0.5357" stop-color="#7d796f"/><stop offset="0.6097" stop-color="#7d796f"/><stop offset="0.6859" stop-color="#7d796f"/><stop offset="0.7637" stop-color="#7d796f"/><stop offset="0.8424" stop-color="#7d796f"/><stop offset="0.9214" stop-color="#7d796f"/><stop offset="1.0000" stop-color="#7d796f"/></linearGradient><linearGradient id="g85" gradientUnits="userSpaceOnUse" x1="252.7" y1="0" x2="551.5" y2="0"><stop offset="0.0000" stop-color="#7d796f"/><stop offset="0.0040" stop-color="#7d796f"/><stop offset="0.0161" stop-color="#7d796f"/><stop offset="0.0360" stop-color="#7d796f"/><stop offset="0.0635" stop-color="#7d796f"/><stop offset="0.0984" stop-color="#7d796f"/><stop offset="0.1401" stop-color="#7d796f"/><stop offset="0.1882" stop-color="#7d796f"/><stop offset="0.2421" stop-color="#7d796f"/><stop offset="0.3011" stop-color="#7d796f"/><stop offset="0.3646" stop-color="#7d796f"/><stop offset="0.4318" stop-color="#7d796f"/><stop offset="0.5018" stop-color="#7d796f"/><stop offset="0.5739" stop-color="#7d796f"/><stop offset="0.6471" stop-color="#7d796f"/><stop offset="0.7206" stop-color="#7d796f"/><stop offset="0.7935" stop-color="#7d796f"/><stop offset="0.8650" stop-color="#7d796f"/><stop offset="0.9340" stop-color="#7d796f"/><stop offset="1.0000" stop-color="#7d796f"/></linearGradient><linearGradient id="topf" gradientUnits="userSpaceOnUse" x1="240" y1="0" x2="1310" y2="0"><stop offset="0" stop-color="#7c786e"/><stop offset="1" stop-color="#79756b"/></linearGradient><clipPath id="cin"><path d="M1258.2 510.5 L1260.5 518.4 L1262.2 526.4 L1263.5 534.4 L1264.4 542.4 L1264.8 550.4 L1264.7 558.4 L1264.2 566.4 L1263.2 574.4 L1261.7 582.4 L1259.8 590.3 L1257.4 598.2 L1254.6 606.0 L1251.3 613.8 L1247.6 621.5 L1243.4 629.1 L1238.8 636.6 L1233.7 644.0 L1228.3 651.4 L1222.4 658.5 L1216.1 665.6 L1209.4 672.5 L1202.3 679.3 L1194.8 685.9 L1186.9 692.4 L1178.7 698.7 L1170.1 704.8 L1161.2 710.7 L1151.9 716.4 L1142.3 722.0 L1132.4 727.3 L1122.1 732.4 L1111.6 737.3 L1100.8 742.0 L1089.8 746.4 L1078.5 750.6 L1067.0 754.6 L1055.2 758.3 L1043.2 761.8 L1031.1 765.0 L1018.7 768.0 L1006.2 770.7 L993.6 773.1 L980.8 775.3 L967.9 777.2 L954.9 778.8 L941.8 780.1 L928.6 781.2 L915.4 782.0 L902.2 782.5 L888.9 782.7 L875.6 782.7 L862.4 782.3 L849.1 781.7 L835.9 780.9 L822.8 779.7 L809.7 778.2 L796.7 776.5 L783.9 774.5 L771.1 772.3 L758.5 769.8 L746.1 767.0 L733.8 763.9 L721.7 760.6 L709.8 757.1 L698.1 753.2 L686.6 749.2 L675.4 744.9 L664.5 740.4 L653.8 735.6 L643.3 730.6 L633.2 725.5 L623.4 720.0 L613.9 714.4 L604.7 708.6 L595.9 702.6 L587.4 696.5 L579.3 690.1 L571.6 683.6 L564.2 676.9 L557.2 670.1 L550.6 663.1 L544.5 656.0 L538.7 648.8 L533.4 641.5 L528.5 634.0 L524.0 626.4 L520.0 618.8 L516.4 611.1 L513.3 603.3 L510.6 595.4 L508.3 587.5 L506.6 579.6 L505.3 571.6 L504.4 563.6 L504.0 555.6 L504.1 547.6 L504.6 539.5 L505.6 531.5 L507.1 523.6 L509.0 515.6 L511.4 507.7 L514.2 499.9 L517.5 492.1 L521.2 484.4 L525.4 476.8 L530.0 469.3 L535.1 461.9 L540.5 454.6 L546.4 447.4 L552.7 440.3 L559.4 433.4 L566.5 426.7 L574.0 420.0 L581.9 413.6 L590.1 407.3 L598.7 401.2 L607.6 395.2 L616.9 389.5 L626.5 384.0 L636.4 378.6 L646.7 373.5 L657.2 368.6 L668.0 364.0 L679.0 359.5 L690.3 355.3 L701.8 351.3 L713.6 347.6 L725.6 344.1 L737.7 340.9 L750.1 338.0 L762.6 335.3 L775.2 332.8 L788.0 330.7 L800.9 328.8 L813.9 327.2 L827.0 325.8 L840.2 324.8 L853.4 324.0 L866.6 323.5 L879.9 323.2 L893.2 323.3 L906.4 323.6 L919.7 324.2 L932.9 325.1 L946.0 326.3 L959.1 327.7 L972.1 329.4 L984.9 331.4 L997.7 333.7 L1010.3 336.2 L1022.7 339.0 L1035.0 342.0 L1047.1 345.3 L1059.0 348.9 L1070.7 352.7 L1082.2 356.8 L1093.4 361.0 L1104.3 365.6 L1115.0 370.3 L1125.5 375.3 L1135.6 380.5 L1145.4 385.9 L1154.9 391.5 L1164.1 397.3 L1172.9 403.3 L1181.4 409.5 L1189.5 415.8 L1197.2 422.3 L1204.6 429.0 L1211.6 435.8 L1218.2 442.8 L1224.3 449.9 L1230.1 457.1 L1235.4 464.5 L1240.3 471.9 L1244.8 479.5 L1248.8 487.1 L1252.4 494.9 L1255.5 502.7 L1258.2 510.5Z"/></clipPath><linearGradient id="g86" gradientUnits="userSpaceOnUse" x1="505.0" y1="0" x2="1265.0" y2="0"><stop offset="0.0000" stop-color="#8e8f89"/><stop offset="0.0724" stop-color="#8d8e88"/><stop offset="0.1776" stop-color="#81817c"/><stop offset="0.2829" stop-color="#696862"/><stop offset="0.3882" stop-color="#575550"/><stop offset="0.4934" stop-color="#4e4b46"/><stop offset="0.6250" stop-color="#4c4944"/><stop offset="0.7566" stop-color="#4f4c46"/><stop offset="0.8618" stop-color="#58554e"/><stop offset="0.9342" stop-color="#66635b"/><stop offset="0.9803" stop-color="#75726a"/><stop offset="1.0000" stop-color="#7b786f"/></linearGradient><linearGradient id="iwv" gradientUnits="userSpaceOnUse" x1="0" y1="320" x2="0" y2="400"><stop offset="0" stop-color="#000" stop-opacity="0"/><stop offset="1" stop-color="#000" stop-opacity="0.14"/></linearGradient><radialGradient id="flr" gradientUnits="userSpaceOnUse" cx="0" cy="0" r="2.600" gradientTransform="matrix(143.780 -16.330 27.110 86.850 884.4 613.9)"><stop offset="0" stop-color="#787b75"/><stop offset="0.55" stop-color="#767a74"/><stop offset="0.8" stop-color="#717671"/><stop offset="0.93" stop-color="#6a706d"/><stop offset="1" stop-color="#616a69"/></radialGradient><radialGradient id="flo" gradientUnits="userSpaceOnUse" cx="0" cy="0" r="3.220" gradientTransform="matrix(143.780 -16.330 27.110 86.850 935.3 657.6)"><stop offset="0.72" stop-color="#3c4a52" stop-opacity="0"/><stop offset="0.86" stop-color="#3c4a52" stop-opacity="0.10"/><stop offset="0.95" stop-color="#34434c" stop-opacity="0.30"/><stop offset="1" stop-color="#2c3c46" stop-opacity="0.5"/></radialGradient><clipPath id="vpc"><rect x="0" y="139" width="1920" height="851"/></clipPath></defs><g clip-path="url(#vpc)"><path d="M-703.7 -50.9 L-218.8 1502.7M-646.2 -57.4 L-161.2 1496.2M-617.4 -60.7 L-132.5 1492.9M-588.7 -63.9 L-103.7 1489.6M-559.9 -67.2 L-75.0 1486.4M-502.4 -73.7 L-17.5 1479.8M-473.7 -77.0 L11.3 1476.6M-444.9 -80.3 L40.0 1473.3M-416.1 -83.5 L68.8 1470.0M-358.6 -90.1 L126.3 1463.5M-329.9 -93.3 L155.1 1460.2M-301.1 -96.6 L183.8 1457.0M-272.4 -99.9 L212.6 1453.7M-214.8 -106.4 L270.1 1447.2M-186.1 -109.7 L298.8 1443.9M-157.3 -112.9 L327.6 1440.6M-128.6 -116.2 L356.4 1437.4M-71.1 -122.7 L413.9 1430.8M-42.3 -126.0 L442.6 1427.6M-13.6 -129.2 L471.4 1424.3M15.2 -132.5 L500.1 1421.0M72.7 -139.0 L557.7 1414.5M101.5 -142.3 L586.4 1411.3M130.2 -145.6 L615.2 1408.0M159.0 -148.8 L643.9 1404.7M216.5 -155.4 L701.4 1398.2M245.2 -158.6 L730.2 1394.9M274.0 -161.9 L758.9 1391.7M302.8 -165.2 L787.7 1388.4M360.3 -171.7 L845.2 1381.9M389.0 -175.0 L874.0 1378.6M417.8 -178.2 L902.7 1375.3M446.5 -181.5 L931.5 1372.1M504.1 -188.0 L989.0 1365.5M532.8 -191.3 L1017.7 1362.3M561.6 -194.6 L1046.5 1359.0M590.3 -197.8 L1075.3 1355.7M647.8 -204.4 L1132.8 1349.2M676.6 -207.6 L1161.5 1345.9M705.3 -210.9 L1190.3 1342.7M734.1 -214.2 L1219.0 1339.4M791.6 -220.7 L1276.6 1332.9M820.4 -224.0 L1305.3 1329.6M849.1 -227.2 L1334.1 1326.3M877.9 -230.5 L1362.8 1323.1M935.4 -237.0 L1420.3 1316.5M964.1 -240.3 L1449.1 1313.3M992.9 -243.6 L1477.8 1310.0M1021.7 -246.8 L1506.6 1306.7M1079.2 -253.4 L1564.1 1300.2M1107.9 -256.6 L1592.9 1296.9M1136.7 -259.9 L1621.6 1293.7M1165.4 -263.2 L1650.4 1290.4M1223.0 -269.7 L1707.9 1283.9M1251.7 -273.0 L1736.6 1280.6M1280.5 -276.2 L1765.4 1277.3M1309.2 -279.5 L1794.2 1274.1M1366.7 -286.0 L1851.7 1267.5M1395.5 -289.3 L1880.4 1264.3M1424.2 -292.5 L1909.2 1261.0M1453.0 -295.8 L1937.9 1257.7M1510.5 -302.3 L1995.5 1251.2M1539.3 -305.6 L2024.2 1248.0M1568.0 -308.9 L2053.0 1244.7M1596.8 -312.1 L2081.7 1241.4M1654.3 -318.7 L2139.2 1234.9M1683.0 -321.9 L2168.0 1231.6M1711.8 -325.2 L2196.7 1228.4M1740.6 -328.5 L2225.5 1225.1M1798.1 -335.0 L2283.0 1218.6M1826.8 -338.3 L2311.8 1215.3M1855.6 -341.5 L2340.5 1212.0M1884.3 -344.8 L2369.3 1208.8M1941.9 -351.3 L2426.8 1202.2M1970.6 -354.6 L2455.5 1199.0M1999.4 -357.9 L2484.3 1195.7M2028.1 -361.1 L2513.1 1192.4M2085.6 -367.7 L2570.6 1185.9M2114.4 -370.9 L2599.3 1182.6M2143.1 -374.2 L2628.1 1179.4" stroke="#e7e7e7" stroke-width="0.95" fill="none"/><path d="M-753.3 7.6 L2220.2 -330.2M-742.5 42.3 L2231.0 -295.4M-737.0 59.7 L2236.5 -278.1M-731.6 77.0 L2241.9 -260.7M-726.2 94.4 L2247.3 -243.3M-715.3 129.1 L2258.1 -208.6M-709.9 146.5 L2263.6 -191.2M-704.5 163.9 L2269.0 -173.8M-699.1 181.3 L2274.4 -156.5M-688.2 216.0 L2285.2 -121.7M-682.8 233.4 L2290.7 -104.4M-677.4 250.7 L2296.1 -87.0M-672.0 268.1 L2301.5 -69.6M-661.1 302.8 L2312.4 -34.9M-655.7 320.2 L2317.8 -17.5M-650.3 337.6 L2323.2 -0.1M-644.9 355.0 L2328.6 17.2M-634.0 389.7 L2339.5 52.0M-628.6 407.1 L2344.9 69.3M-623.2 424.4 L2350.3 86.7M-617.7 441.8 L2355.7 104.1M-606.9 476.5 L2366.6 138.8M-601.5 493.9 L2372.0 156.2M-596.1 511.3 L2377.4 173.6M-590.6 528.7 L2382.8 190.9M-579.8 563.4 L2393.7 225.7M-574.4 580.8 L2399.1 243.0M-569.0 598.1 L2404.5 260.4M-563.5 615.5 L2410.0 277.8M-552.7 650.2 L2420.8 312.5M-547.3 667.6 L2426.2 329.9M-541.8 685.0 L2431.6 347.3M-536.4 702.4 L2437.1 364.6M-525.6 737.1 L2447.9 399.4M-520.2 754.5 L2453.3 416.7M-514.7 771.8 L2458.8 434.1M-509.3 789.2 L2464.2 451.5M-498.5 823.9 L2475.0 486.2M-493.0 841.3 L2480.4 503.6M-487.6 858.7 L2485.9 521.0M-482.2 876.1 L2491.3 538.3M-471.4 910.8 L2502.1 573.1M-465.9 928.2 L2507.6 590.4M-460.5 945.5 L2513.0 607.8M-455.1 962.9 L2518.4 625.2M-444.2 997.6 L2529.2 659.9M-438.8 1015.0 L2534.7 677.3M-433.4 1032.4 L2540.1 694.7M-428.0 1049.8 L2545.5 712.0M-417.1 1084.5 L2556.3 746.8M-411.7 1101.9 L2561.8 764.1M-406.3 1119.2 L2567.2 781.5M-400.9 1136.6 L2572.6 798.9M-390.0 1171.3 L2583.5 833.6M-384.6 1188.7 L2588.9 851.0M-379.2 1206.1 L2594.3 868.4M-373.8 1223.5 L2599.7 885.7M-362.9 1258.2 L2610.6 920.5M-357.5 1275.6 L2616.0 937.8M-352.1 1292.9 L2621.4 955.2M-346.6 1310.3 L2626.8 972.6M-335.8 1345.0 L2637.7 1007.3M-330.4 1362.4 L2643.1 1024.7M-325.0 1379.8 L2648.5 1042.1M-319.5 1397.2 L2653.9 1059.4M-308.7 1431.9 L2664.8 1094.2M-303.3 1449.3 L2670.2 1111.5M-297.9 1466.6 L2675.6 1128.9" stroke="#ececec" stroke-width="0.95" fill="none"/><path d="M-674.9 -54.1 L-190.0 1499.4M-531.2 -70.5 L-46.2 1483.1M-387.4 -86.8 L97.6 1466.8M-243.6 -103.1 L241.3 1450.4M-99.8 -119.4 L385.1 1434.1M44.0 -135.8 L528.9 1417.8M187.7 -152.1 L672.7 1401.5M331.5 -168.4 L816.5 1385.1M475.3 -184.8 L960.2 1368.8M762.9 -217.4 L1247.8 1336.1M906.6 -233.8 L1391.6 1319.8M1050.4 -250.1 L1535.4 1303.5M1194.2 -266.4 L1679.1 1287.1M1338.0 -282.7 L1822.9 1270.8M1481.8 -299.1 L1966.7 1254.5M1625.5 -315.4 L2110.5 1238.2M1769.3 -331.7 L2254.3 1221.8M1913.1 -348.1 L2398.0 1205.5M2056.9 -364.4 L2541.8 1189.2" stroke="#c2c2c2" stroke-width="1" fill="none"/><path d="M-747.9 24.9 L2225.6 -312.8M-720.8 111.8 L2252.7 -225.9M-693.7 198.6 L2279.8 -139.1M-666.5 285.5 L2306.9 -52.2M-639.4 372.3 L2334.0 34.6M-612.3 459.2 L2361.2 121.5M-585.2 546.0 L2388.3 208.3M-558.1 632.9 L2415.4 295.2M-531.0 719.7 L2442.5 382.0M-476.8 893.4 L2496.7 555.7M-449.7 980.3 L2523.8 642.6M-422.6 1067.1 L2550.9 729.4M-395.4 1154.0 L2578.0 816.3M-368.3 1240.8 L2605.1 903.1M-341.2 1327.7 L2632.3 990.0M-314.1 1414.5 L2659.4 1076.8" stroke="#cacaca" stroke-width="1" fill="none"/><path d="M619.1 -201.1 L1104.0 1352.5" stroke="#f58a8a" stroke-width="1.1" fill="none"/><path d="M-503.9 806.6 L2469.6 468.9" stroke="#86ea86" stroke-width="1.1" fill="none"/><path d="M1311.2 587.2 L1308.6 580.9 L1305.7 574.6 L1302.5 568.4 L1299.1 562.2 L1295.5 556.1 L1291.6 550.0 L1287.4 544.0 L1283.1 538.1 L1278.4 532.2 L1273.6 526.4 L1268.5 520.7 L1263.1 515.0 L1257.6 509.4 L1251.8 503.9 L1245.8 498.5 L1239.6 493.2 L1233.1 488.0 L1226.5 482.9 L1219.6 477.8 L1212.6 472.9 L1205.3 468.1 L1197.9 463.4 L1190.2 458.8 L1182.4 454.3 L1174.4 450.0 L1166.2 445.7 L1157.9 441.6 L1149.4 437.6 L1140.7 433.8 L1131.9 430.0 L1122.9 426.4 L1113.8 422.9 L1104.6 419.6 L1095.2 416.4 L1085.7 413.4 L1076.0 410.4 L1066.3 407.7 L1056.4 405.0 L1046.5 402.6 L1036.4 400.2 L1026.2 398.1 L1016.0 396.0 L1005.7 394.1 L995.3 392.4 L984.8 390.8 L974.3 389.4 L963.8 388.2 L953.1 387.1 L942.5 386.1 L931.8 385.3 L921.1 384.7 L910.3 384.3 L899.6 383.9 L888.8 383.8 L878.0 383.8 L867.2 384.0 L856.5 384.3 L845.7 384.8 L835.0 385.5 L824.3 386.3 L813.7 387.2 L803.1 388.4 L792.5 389.6 L782.0 391.1 L771.6 392.7 L761.2 394.4 L750.9 396.3 L740.7 398.4 L730.5 400.6 L720.5 402.9 L710.5 405.4 L700.7 408.1 L691.0 410.9 L681.4 413.8 L671.9 416.9 L662.5 420.1 L653.3 423.4 L644.2 426.9 L635.3 430.6 L626.5 434.3 L617.8 438.2 L609.3 442.2 L601.0 446.3 L592.9 450.6 L584.9 455.0 L577.1 459.5 L569.5 464.1 L562.1 468.8 L554.9 473.6 L547.9 478.6 L541.1 483.6 L534.5 488.7 L528.1 494.0 L521.9 499.3 L515.9 504.7 L510.2 510.2 L504.7 515.8 L499.4 521.5 L494.3 527.2 L489.5 533.0 L484.9 538.9 L480.6 544.9 L476.5 550.9 L472.6 557.0 L469.0 563.1 L466.0 565.6 L460.6 565.4 L455.3 565.3 L449.9 565.3 L444.5 565.4 L439.1 565.6 L433.7 565.8 L428.4 566.2 L423.0 566.6 L417.7 567.1 L412.4 567.6 L407.1 568.3 L401.9 569.0 L396.6 569.8 L391.5 570.6 L386.3 571.6 L381.2 572.6 L376.1 573.7 L371.1 574.9 L366.1 576.1 L361.2 577.5 L356.3 578.9 L351.5 580.3 L346.8 581.9 L342.1 583.5 L337.5 585.2 L333.0 586.9 L328.5 588.7 L324.1 590.6 L319.8 592.5 L315.5 594.5 L311.4 596.6 L307.3 598.7 L303.3 600.9 L299.4 603.2 L295.6 605.5 L291.9 607.8 L288.3 610.3 L284.8 612.7 L281.4 615.2 L278.1 617.8 L274.9 620.4 L271.8 623.1 L268.8 625.8 L266.0 628.6 L263.2 631.3 L260.5 634.2 L258.0 637.1 L255.6 640.0 L253.3 642.9 L251.1 645.9 L249.1 648.9 L247.2 651.9 L245.4 655.0 L243.7 658.1 L242.1 661.2 L240.7 664.3 L239.4 667.5 L238.2 670.7 L237.2 673.9 L236.3 677.1 L235.5 680.3 L234.9 683.5 L234.4 686.8 L234.0 690.0 L233.7 693.2 L233.6 696.5 L233.6 699.8 L233.8 703.0 L234.0 706.3 L234.4 709.5 L235.0 712.7 L235.7 716.0 L236.5 719.2 L237.4 722.4 L238.5 725.6 L239.6 728.7 L241.0 731.9 L242.4 735.0 L244.0 738.1 L245.7 741.2 L247.5 744.3 L249.5 747.3 L251.5 750.3 L253.7 753.3 L256.0 756.2 L258.5 759.1 L261.0 762.0 L263.7 764.8 L266.5 767.6 L269.4 770.4 L272.4 773.1 L275.5 775.7 L278.7 778.3 L282.0 780.9 L285.5 783.4 L289.0 785.9 L292.6 788.3 L296.3 790.6 L300.1 792.9 L304.1 795.2 L308.1 797.3 L312.1 799.5 L316.3 801.5 L320.6 803.5 L324.9 805.5 L329.3 807.3 L333.8 809.1 L338.4 810.9 L343.0 812.5 L347.7 814.1 L352.4 815.7 L357.2 817.1 L362.1 818.5 L367.1 819.8 L372.0 821.1 L377.1 822.2 L382.1 823.3 L387.3 824.3 L392.4 825.3 L397.6 826.1 L402.8 826.9 L408.1 827.6 L413.4 828.3 L418.7 828.8 L424.0 829.3 L429.4 829.7 L434.7 830.0 L440.1 830.2 L445.5 830.4 L450.9 830.4 L456.3 830.4 L461.6 830.3 L467.0 830.2 L472.4 829.9 L477.7 829.6 L483.1 829.2 L488.4 828.7 L493.7 828.2 L499.0 827.5 L504.3 826.8 L509.5 826.0 L514.7 825.1 L519.8 824.2 L524.9 823.2 L530.0 822.1 L535.0 820.9 L540.0 819.6 L544.9 818.3 L549.2 820.0 L556.2 824.9 L563.5 829.7 L570.9 834.4 L578.6 839.0 L586.4 843.5 L594.4 847.8 L602.6 852.1 L610.9 856.2 L619.4 860.2 L628.1 864.0 L636.9 867.8 L645.9 871.4 L655.0 874.9 L664.2 878.2 L673.6 881.4 L683.1 884.4 L692.8 887.4 L702.5 890.1 L712.4 892.8 L722.3 895.2 L732.4 897.6 L742.6 899.7 L752.8 901.8 L763.1 903.7 L773.5 905.4 L784.0 907.0 L794.5 908.4 L805.0 909.6 L815.7 910.7 L826.3 911.7 L837.0 912.5 L847.7 913.1 L858.5 913.5 L869.2 913.9 L880.0 914.0 L890.8 914.0 L901.6 913.8 L912.3 913.5 L923.1 913.0 L933.8 912.3 L944.5 911.5 L955.1 910.6 L965.7 909.4 L976.3 908.2 L986.8 906.7 L997.2 905.1 L1007.6 903.4 L1017.9 901.5 L1028.1 899.4 L1038.3 897.2 L1048.3 894.9 L1058.3 892.4 L1068.1 889.7 L1077.8 886.9 L1087.4 884.0 L1096.9 880.9 L1106.3 877.7 L1115.5 874.4 L1124.6 870.9 L1133.5 867.2 L1142.3 863.5 L1151.0 859.6 L1159.5 855.6 L1167.8 851.5 L1175.9 847.2 L1183.9 842.8 L1191.7 838.3 L1199.3 833.7 L1206.7 829.0 L1213.9 824.2 L1220.9 819.2 L1227.7 814.2 L1234.3 809.1 L1240.7 803.8 L1246.9 798.5 L1252.9 793.1 L1258.6 787.6 L1264.1 782.0 L1269.4 776.3 L1274.5 770.6 L1279.3 764.8 L1283.9 758.9 L1288.2 752.9 L1292.3 746.9 L1296.2 740.8 L1299.8 734.7 L1303.1 728.5 L1306.3 722.3 L1309.1 716.0 L1311.7 709.7 L1314.0 703.3 L1316.1 697.0 L1317.9 690.6 L1319.5 684.1 L1320.8 677.7 L1321.8 671.2 L1322.6 664.7 L1323.1 658.2 L1323.3 651.7 L1323.3 645.2 L1323.0 638.7 L1322.5 632.2 L1321.6 625.7 L1320.6 619.2 L1319.2 612.8 L1317.6 606.3 L1315.7 599.9 L1313.6 593.5 L1311.2 587.2ZM447.3 624.6 L446.6 629.9 L445.9 636.4 L445.6 642.9 L445.5 649.4 L445.6 655.9 L446.0 662.4 L446.7 668.9 L447.7 675.4 L448.9 681.8 L450.4 688.3 L452.1 694.7 L454.1 701.1 L456.3 707.4 L458.9 713.8 L461.6 720.1 L464.7 726.3 L467.9 732.5 L471.5 738.7 L475.2 744.8 L479.3 750.8 L483.5 756.8 L488.0 762.7 L491.9 767.4 L489.1 768.0 L485.2 768.6 L481.4 769.2 L477.5 769.7 L473.6 770.2 L469.7 770.6 L465.7 770.8 L461.8 771.1 L457.8 771.2 L453.8 771.2 L449.9 771.2 L445.9 771.1 L441.9 770.9 L438.0 770.7 L434.0 770.3 L430.1 769.9 L426.2 769.4 L422.4 768.8 L418.5 768.2 L414.8 767.5 L411.0 766.7 L407.3 765.8 L403.6 764.9 L400.0 763.9 L396.5 762.8 L393.0 761.6 L389.6 760.4 L386.2 759.1 L383.0 757.8 L379.7 756.3 L376.6 754.9 L373.6 753.3 L370.6 751.7 L367.7 750.1 L365.0 748.3 L362.3 746.6 L359.7 744.8 L357.2 742.9 L354.8 741.0 L352.5 739.0 L350.3 737.0 L348.3 734.9 L346.3 732.8 L344.5 730.7 L342.8 728.6 L341.2 726.4 L339.7 724.1 L338.3 721.9 L337.1 719.6 L336.0 717.3 L335.0 715.0 L334.1 712.6 L333.4 710.3 L332.8 707.9 L332.3 705.5 L331.9 703.1 L331.7 700.7 L331.6 698.3 L331.7 695.9 L331.8 693.5 L332.1 691.1 L332.6 688.7 L333.1 686.4 L333.8 684.0 L334.6 681.7 L335.6 679.3 L336.6 677.0 L337.8 674.7 L339.1 672.5 L340.6 670.2 L342.1 668.0 L343.8 665.8 L345.6 663.7 L347.5 661.6 L349.5 659.5 L351.7 657.5 L353.9 655.5 L356.2 653.6 L358.7 651.7 L361.2 649.9 L363.9 648.1 L366.6 646.3 L369.5 644.7 L372.4 643.0 L375.4 641.5 L378.5 640.0 L381.7 638.5 L384.9 637.1 L388.3 635.8 L391.7 634.6 L395.1 633.4 L398.7 632.3 L402.2 631.3 L405.9 630.3 L409.6 629.4 L413.3 628.6 L417.1 627.8 L420.9 627.2 L424.7 626.6 L428.6 626.0 L432.5 625.6 L436.4 625.2 L440.4 624.9 L444.3 624.7 L447.3 624.6Z" fill="#000" fill-opacity="0.34" fill-rule="evenodd" filter="url(#blur)" transform="translate(0,2)"/><g clip-path="url(#lens)"><path d="M331.6 619.1 L331.7 616.5 L331.9 613.9 L332.3 611.3 L332.8 608.7 L333.5 606.2 L334.4 603.6 L335.3 601.1 L336.5 598.6 L337.7 596.1 L339.2 593.6 L340.7 591.2 L342.4 588.8 L344.3 586.5 L346.3 584.2 L348.4 581.9 L350.6 579.7 L353.0 577.5 L355.5 575.4 L358.1 573.4 L360.8 571.4 L363.7 569.4 L366.7 567.5 L369.7 565.7 L372.9 564.0 L376.2 562.3 L379.6 560.7 L383.1 559.2 L386.6 557.7 L390.3 556.3 L394.0 555.0 L397.8 553.8 L401.6 552.7 L405.6 551.6 L409.6 550.6 L413.6 549.7 L417.7 548.9 L421.8 548.2 L426.0 547.6 L430.2 547.1 L434.4 546.6 L438.7 546.3 L443.0 546.0 L447.3 545.9 L446.9 616.0 L442.3 616.2 L437.7 616.5 L433.1 616.8 L428.6 617.3 L424.1 617.9 L419.6 618.5 L415.2 619.3 L410.8 620.2 L406.5 621.1 L402.2 622.2 L398.0 623.3 L393.9 624.5 L389.8 625.8 L385.8 627.2 L381.9 628.7 L378.1 630.3 L374.4 631.9 L370.8 633.6 L367.2 635.4 L363.8 637.3 L360.5 639.2 L357.4 641.2 L354.3 643.3 L351.4 645.5 L348.6 647.7 L345.9 649.9 L343.4 652.3 L340.9 654.6 L338.7 657.0 L336.6 659.5 L334.6 662.0 L332.8 664.6 L331.1 667.2 L329.6 669.8 L328.2 672.5 L327.0 675.1 L325.9 677.9 L325.1 680.6 L324.3 683.3 L323.8 686.1 L323.3 688.9 L323.1 691.6 L323.0 694.4Z" fill="#7f817b"/><path d="M331.6 619.1 L331.7 616.5 L331.9 613.9 L332.3 611.3 L332.8 608.7 L333.5 606.2 L334.4 603.6 L335.3 601.1 L336.5 598.6 L337.7 596.1 L339.2 593.6 L340.7 591.2 L342.4 588.8 L344.3 586.5 L346.3 584.2 L348.4 581.9 L350.6 579.7 L353.0 577.5 L355.5 575.4 L358.1 573.4 L360.8 571.4 L363.7 569.4 L366.7 567.5 L369.7 565.7 L372.9 564.0 L376.2 562.3 L379.6 560.7 L383.1 559.2 L386.6 557.7 L390.3 556.3 L394.0 555.0 L397.8 553.8 L401.6 552.7 L405.6 551.6 L409.6 550.6 L413.6 549.7 L417.7 548.9 L421.8 548.2 L426.0 547.6 L430.2 547.1 L434.4 546.6 L438.7 546.3 L443.0 546.0 L447.3 545.9 L447.3 607.5 L443.0 607.6 L438.7 607.9 L434.4 608.2 L430.2 608.7 L426.0 609.2 L421.8 609.8 L417.7 610.6 L413.6 611.4 L409.6 612.2 L405.6 613.2 L401.6 614.3 L397.8 615.4 L394.0 616.6 L390.3 617.9 L386.6 619.3 L383.1 620.8 L379.6 622.3 L376.2 623.9 L372.9 625.6 L369.7 627.3 L366.7 629.2 L363.7 631.0 L360.8 633.0 L358.1 635.0 L355.5 637.0 L353.0 639.2 L350.6 641.3 L348.4 643.5 L346.3 645.8 L344.3 648.1 L342.4 650.5 L340.7 652.8 L339.2 655.3 L337.7 657.7 L336.5 660.2 L335.3 662.7 L334.4 665.2 L333.5 667.8 L332.8 670.3 L332.3 672.9 L331.9 675.5 L331.7 678.1 L331.6 680.7Z" fill="url(#g1)"/><path d="M331.6 680.7 L331.7 678.1 L331.9 675.5 L332.3 672.9 L332.8 670.3 L333.5 667.8 L334.4 665.2 L335.3 662.7 L336.5 660.2 L337.7 657.7 L339.2 655.3 L340.7 652.8 L342.4 650.5 L344.3 648.1 L346.3 645.8 L348.4 643.5 L350.6 641.3 L353.0 639.2 L355.5 637.0 L358.1 635.0 L360.8 633.0 L363.7 631.0 L366.7 629.2 L369.7 627.3 L372.9 625.6 L376.2 623.9 L379.6 622.3 L383.1 620.8 L386.6 619.3 L390.3 617.9 L394.0 616.6 L397.8 615.4 L401.6 614.3 L405.6 613.2 L409.6 612.2 L413.6 611.4 L417.7 610.6 L421.8 609.8 L426.0 609.2 L430.2 608.7 L434.4 608.2 L438.7 607.9 L443.0 607.6 L447.3 607.5" fill="none" stroke="#111" stroke-width="1"/><path d="M331.6 619.1 L331.7 616.5 L331.9 613.9 L332.3 611.3 L332.8 608.7 L333.5 606.2 L334.3 603.6 L335.3 601.1 L336.5 598.6 L337.7 596.1 L339.1 593.7 L340.7 591.3 L342.4 588.9 L344.2 586.5 L346.2 584.2 L348.3 582.0 L350.6 579.7 L352.9 577.6 L355.4 575.5 L358.0 573.4 L360.8 571.4 L363.6 569.5 L366.6 567.6 L369.7 565.8 L372.8 564.0 L376.1 562.4 L379.5 560.7 L382.9 559.2 L386.5 557.7 L390.1 556.4 L393.8 555.1 L397.6 553.8 L401.5 552.7 L405.4 551.6 L409.4 550.7 L413.4 549.8 L417.5 549.0 L421.6 548.3 L425.8 547.6 L430.0 547.1 L434.2 546.6 L438.5 546.3 L442.8 546.0 L447.1 545.9 L451.4 545.8 L455.6 545.8 L459.9 545.9 L464.2 546.1 L468.5 546.4 L472.7 546.7 L477.0 547.2 L477.0 544.9 L472.8 544.4 L468.5 544.0 L464.2 543.7 L460.0 543.5 L455.7 543.4 L451.4 543.4 L447.1 543.5 L442.8 543.7 L438.5 543.9 L434.2 544.3 L430.0 544.7 L425.8 545.3 L421.6 545.9 L417.5 546.6 L413.4 547.4 L409.3 548.3 L405.3 549.3 L401.4 550.4 L397.5 551.5 L393.8 552.7 L390.0 554.0 L386.4 555.4 L382.8 556.9 L379.4 558.4 L376.0 560.0 L372.7 561.7 L369.5 563.5 L366.5 565.3 L363.5 567.2 L360.6 569.1 L357.9 571.1 L355.3 573.2 L352.8 575.3 L350.4 577.4 L348.2 579.7 L346.1 581.9 L344.1 584.2 L342.2 586.6 L340.5 589.0 L339.0 591.4 L337.5 593.8 L336.3 596.3 L335.1 598.8 L334.2 601.4 L333.3 603.9 L332.7 606.5 L332.1 609.1 L331.7 611.6 L331.5 614.2 L331.4 616.8Z" fill="url(#g2)" stroke="url(#g2)" stroke-width="0.6"/><path d="M332.2 626.4 L331.8 622.7 L331.6 619.1 L331.4 616.8 L331.6 620.5 L332.0 624.1Z" fill="url(#g3)" stroke="url(#g3)" stroke-width="0.6"/><path d="M331.4 616.8 L331.5 614.2 L331.7 611.6 L332.1 609.1 L332.7 606.5 L333.3 603.9 L334.2 601.4 L335.1 598.8 L336.3 596.3 L337.5 593.8 L339.0 591.4 L340.5 589.0 L342.2 586.6 L344.1 584.2 L346.1 581.9 L348.2 579.7 L350.4 577.4 L352.8 575.3 L355.3 573.2 L357.9 571.1 L360.6 569.1 L363.5 567.2 L366.5 565.3 L369.5 563.5 L372.7 561.7 L376.0 560.0 L379.4 558.4 L382.8 556.9 L386.4 555.4 L390.0 554.0 L393.8 552.7 L397.5 551.5 L401.4 550.4 L405.3 549.3 L409.3 548.3 L413.4 547.4 L417.5 546.6 L421.6 545.9 L425.8 545.3 L430.0 544.7 L434.2 544.3 L438.5 543.9 L442.8 543.7 L447.1 543.5 L451.4 543.4 L455.7 543.4 L460.0 543.5 L464.2 543.7 L468.5 544.0 L472.8 544.4 L477.0 544.9 L477.1 542.3 L472.9 541.9 L468.6 541.5 L464.3 541.2 L460.0 541.0 L455.7 540.9 L451.3 540.9 L447.0 541.0 L442.7 541.1 L438.4 541.4 L434.1 541.8 L429.9 542.2 L425.6 542.8 L421.4 543.4 L417.3 544.1 L413.2 544.9 L409.1 545.8 L405.1 546.8 L401.2 547.9 L397.3 549.0 L393.5 550.2 L389.7 551.5 L386.1 552.9 L382.5 554.4 L379.0 556.0 L375.6 557.6 L372.3 559.3 L369.2 561.0 L366.1 562.8 L363.1 564.7 L360.2 566.7 L357.5 568.7 L354.8 570.8 L352.3 572.9 L349.9 575.1 L347.7 577.3 L345.6 579.6 L343.6 581.9 L341.7 584.2 L340.0 586.6 L338.5 589.1 L337.0 591.5 L335.7 594.0 L334.6 596.6 L333.6 599.1 L332.8 601.7 L332.1 604.2 L331.6 606.8 L331.2 609.4 L331.0 612.0 L330.9 614.6Z" fill="url(#g4)" stroke="url(#g4)" stroke-width="0.6"/><path d="M334.0 631.7 L333.0 628.8 L332.3 625.8 L331.8 622.8 L331.5 619.8 L331.4 616.8 L330.9 614.6 L331.0 617.6 L331.3 620.7 L331.8 623.6 L332.5 626.6 L333.4 629.6Z" fill="url(#g5)" stroke="url(#g5)" stroke-width="0.6"/><path d="M330.9 614.6 L331.0 612.0 L331.2 609.4 L331.6 606.8 L332.1 604.2 L332.8 601.7 L333.6 599.1 L334.6 596.6 L335.7 594.0 L337.0 591.5 L338.5 589.1 L340.0 586.6 L341.7 584.2 L343.6 581.9 L345.6 579.6 L347.7 577.3 L349.9 575.1 L352.3 572.9 L354.8 570.8 L357.5 568.7 L360.2 566.7 L363.1 564.7 L366.1 562.8 L369.2 561.0 L372.3 559.3 L375.6 557.6 L379.0 556.0 L382.5 554.4 L386.1 552.9 L389.7 551.5 L393.5 550.2 L397.3 549.0 L401.2 547.9 L405.1 546.8 L409.1 545.8 L413.2 544.9 L417.3 544.1 L421.4 543.4 L425.6 542.8 L429.9 542.2 L434.1 541.8 L438.4 541.4 L442.7 541.1 L447.0 541.0 L451.3 540.9 L455.7 540.9 L460.0 541.0 L464.3 541.2 L468.6 541.5 L472.9 541.9 L477.1 542.3 L477.3 539.7 L473.0 539.2 L468.7 538.8 L464.4 538.5 L460.0 538.3 L455.7 538.2 L451.3 538.2 L447.0 538.3 L442.6 538.5 L438.3 538.7 L434.0 539.1 L429.7 539.6 L425.4 540.1 L421.2 540.7 L417.0 541.5 L412.9 542.3 L408.8 543.2 L404.8 544.2 L400.8 545.2 L396.9 546.4 L393.0 547.6 L389.3 549.0 L385.6 550.4 L382.0 551.8 L378.5 553.4 L375.1 555.0 L371.8 556.7 L368.5 558.5 L365.4 560.3 L362.4 562.2 L359.5 564.2 L356.8 566.2 L354.1 568.3 L351.6 570.5 L349.2 572.7 L346.9 574.9 L344.8 577.2 L342.8 579.5 L340.9 581.9 L339.2 584.3 L337.6 586.8 L336.2 589.2 L334.9 591.8 L333.7 594.3 L332.7 596.9 L331.9 599.4 L331.2 602.0 L330.7 604.6 L330.3 607.3 L330.1 609.9 L330.0 612.5Z" fill="url(#g6)" stroke="url(#g6)" stroke-width="0.6"/><path d="M337.0 637.7 L335.7 635.2 L334.6 632.7 L333.6 630.2 L332.8 627.6 L332.1 625.0 L331.6 622.5 L331.2 619.9 L331.0 617.2 L330.9 614.6 L330.0 612.5 L330.1 615.1 L330.3 617.8 L330.7 620.4 L331.2 623.0 L331.9 625.6 L332.7 628.2 L333.7 630.7 L334.9 633.3 L336.2 635.8Z" fill="url(#g7)" stroke="url(#g7)" stroke-width="0.6"/><path d="M330.0 612.5 L330.1 609.9 L330.3 607.3 L330.7 604.6 L331.2 602.0 L331.9 599.4 L332.7 596.9 L333.7 594.3 L334.9 591.8 L336.2 589.2 L337.6 586.8 L339.2 584.3 L340.9 581.9 L342.8 579.5 L344.8 577.2 L346.9 574.9 L349.2 572.7 L351.6 570.5 L354.1 568.3 L356.8 566.2 L359.5 564.2 L362.4 562.2 L365.4 560.3 L368.5 558.5 L371.8 556.7 L375.1 555.0 L378.5 553.4 L382.0 551.8 L385.6 550.4 L389.3 549.0 L393.0 547.6 L396.9 546.4 L400.8 545.2 L404.8 544.2 L408.8 543.2 L412.9 542.3 L417.0 541.5 L421.2 540.7 L425.4 540.1 L429.7 539.6 L434.0 539.1 L438.3 538.7 L442.6 538.5 L447.0 538.3 L451.3 538.2 L455.7 538.2 L460.0 538.3 L464.4 538.5 L468.7 538.8 L473.0 539.2 L477.3 539.7 L477.5 536.9 L473.2 536.5 L468.9 536.1 L464.5 535.8 L460.1 535.6 L455.7 535.5 L451.3 535.5 L446.9 535.5 L442.5 535.7 L438.2 536.0 L433.8 536.4 L429.5 536.8 L425.2 537.4 L420.9 538.0 L416.7 538.7 L412.5 539.6 L408.4 540.5 L404.3 541.5 L400.3 542.5 L396.3 543.7 L392.4 545.0 L388.6 546.3 L384.9 547.7 L381.3 549.2 L377.7 550.8 L374.3 552.4 L370.9 554.1 L367.7 555.9 L364.5 557.8 L361.5 559.7 L358.6 561.7 L355.8 563.7 L353.1 565.9 L350.6 568.0 L348.1 570.2 L345.8 572.5 L343.7 574.8 L341.7 577.2 L339.8 579.6 L338.0 582.0 L336.4 584.5 L335.0 587.0 L333.7 589.5 L332.5 592.1 L331.5 594.7 L330.7 597.3 L330.0 599.9 L329.4 602.5 L329.0 605.2 L328.8 607.8 L328.7 610.5Z" fill="url(#g8)" stroke="url(#g8)" stroke-width="0.6"/><path d="M342.3 644.9 L340.4 642.4 L338.6 639.8 L337.0 637.2 L335.5 634.5 L334.2 631.9 L333.1 629.2 L332.2 626.4 L331.4 623.7 L330.8 620.9 L330.3 618.1 L330.1 615.3 L330.0 612.5 L328.7 610.5 L328.8 613.3 L329.1 616.1 L329.5 619.0 L330.1 621.8 L330.9 624.5 L331.9 627.3 L333.0 630.0 L334.3 632.8 L335.8 635.4 L337.4 638.1 L339.2 640.7 L341.2 643.3Z" fill="url(#g9)" stroke="url(#g9)" stroke-width="0.6"/><path d="M328.7 610.5 L328.8 607.8 L329.0 605.2 L329.4 602.5 L330.0 599.9 L330.7 597.3 L331.5 594.7 L332.5 592.1 L333.7 589.5 L335.0 587.0 L336.4 584.5 L338.0 582.0 L339.8 579.6 L341.7 577.2 L343.7 574.8 L345.8 572.5 L348.1 570.2 L350.6 568.0 L353.1 565.9 L355.8 563.7 L358.6 561.7 L361.5 559.7 L364.5 557.8 L367.7 555.9 L370.9 554.1 L374.3 552.4 L377.7 550.8 L381.3 549.2 L384.9 547.7 L388.6 546.3 L392.4 545.0 L396.3 543.7 L400.3 542.5 L404.3 541.5 L408.4 540.5 L412.5 539.6 L416.7 538.7 L420.9 538.0 L425.2 537.4 L429.5 536.8 L433.8 536.4 L438.2 536.0 L442.5 535.7 L446.9 535.5 L451.3 535.5 L455.7 535.5 L460.1 535.6 L464.5 535.8 L468.9 536.1 L473.2 536.5 L477.5 536.9 L477.9 534.1 L473.5 533.7 L469.1 533.3 L464.6 533.0 L460.2 532.8 L455.7 532.7 L451.3 532.6 L446.8 532.7 L442.4 532.9 L438.0 533.2 L433.6 533.6 L429.2 534.0 L424.8 534.6 L420.5 535.2 L416.2 536.0 L412.0 536.8 L407.8 537.7 L403.7 538.7 L399.6 539.8 L395.6 541.0 L391.7 542.3 L387.8 543.6 L384.1 545.1 L380.4 546.6 L376.8 548.2 L373.3 549.8 L369.9 551.6 L366.6 553.4 L363.4 555.3 L360.4 557.2 L357.4 559.2 L354.6 561.3 L351.9 563.4 L349.3 565.6 L346.8 567.9 L344.5 570.2 L342.3 572.5 L340.3 574.9 L338.4 577.3 L336.6 579.8 L335.0 582.3 L333.5 584.8 L332.2 587.4 L331.0 590.0 L330.0 592.6 L329.1 595.3 L328.4 597.9 L327.9 600.6 L327.5 603.3 L327.3 605.9 L327.2 608.6Z" fill="url(#g10)" stroke="url(#g10)" stroke-width="0.6"/><path d="M351.8 654.0 L349.2 651.8 L346.8 649.5 L344.5 647.1 L342.4 644.7 L340.4 642.3 L338.6 639.8 L336.9 637.2 L335.3 634.6 L334.0 632.0 L332.7 629.4 L331.7 626.8 L330.8 624.1 L330.1 621.4 L329.5 618.7 L329.1 616.0 L328.8 613.2 L328.7 610.5 L327.2 608.6 L327.3 611.4 L327.5 614.2 L327.9 616.9 L328.5 619.7 L329.3 622.4 L330.2 625.1 L331.2 627.8 L332.5 630.5 L333.9 633.1 L335.4 635.7 L337.1 638.3 L339.0 640.8 L341.0 643.3 L343.1 645.7 L345.5 648.1 L347.9 650.4 L350.5 652.7Z" fill="url(#g11)" stroke="url(#g11)" stroke-width="0.6"/><path d="M327.2 608.6 L327.3 605.9 L327.5 603.3 L327.9 600.6 L328.4 597.9 L329.1 595.3 L330.0 592.6 L331.0 590.0 L332.2 587.4 L333.5 584.8 L335.0 582.3 L336.6 579.8 L338.4 577.3 L340.3 574.9 L342.3 572.5 L344.5 570.2 L346.8 567.9 L349.3 565.6 L351.9 563.4 L354.6 561.3 L357.4 559.2 L360.4 557.2 L363.4 555.3 L366.6 553.4 L369.9 551.6 L373.3 549.8 L376.8 548.2 L380.4 546.6 L384.1 545.1 L387.8 543.6 L391.7 542.3 L395.6 541.0 L399.6 539.8 L403.7 538.7 L407.8 537.7 L412.0 536.8 L416.2 536.0 L420.5 535.2 L424.8 534.6 L429.2 534.0 L433.6 533.6 L438.0 533.2 L442.4 532.9 L446.8 532.7 L451.3 532.6 L455.7 532.7 L460.2 532.8 L464.6 533.0 L469.1 533.3 L473.5 533.7 L477.9 534.1 L478.2 531.4 L473.8 530.9 L469.3 530.5 L464.8 530.2 L460.3 530.0 L455.8 529.9 L451.3 529.8 L446.7 529.9 L442.2 530.1 L437.7 530.4 L433.3 530.8 L428.8 531.2 L424.4 531.8 L420.0 532.5 L415.7 533.2 L411.4 534.0 L407.1 535.0 L402.9 536.0 L398.8 537.1 L394.8 538.3 L390.8 539.6 L386.9 541.0 L383.0 542.4 L379.3 544.0 L375.7 545.6 L372.1 547.3 L368.7 549.0 L365.3 550.9 L362.1 552.8 L359.0 554.8 L356.0 556.8 L353.1 558.9 L350.4 561.1 L347.7 563.3 L345.2 565.6 L342.9 567.9 L340.7 570.3 L338.6 572.7 L336.7 575.2 L334.9 577.7 L333.2 580.2 L331.7 582.8 L330.4 585.4 L329.2 588.0 L328.2 590.7 L327.3 593.4 L326.6 596.1 L326.0 598.8 L325.6 601.5 L325.4 604.2 L325.3 606.9Z" fill="url(#g12)" stroke="url(#g12)" stroke-width="0.6"/><path d="M370.6 666.1 L367.2 664.3 L364.0 662.4 L360.9 660.4 L357.9 658.4 L355.0 656.3 L352.3 654.2 L349.6 652.0 L347.1 649.7 L344.8 647.4 L342.6 645.1 L340.5 642.7 L338.5 640.2 L336.7 637.7 L335.1 635.2 L333.6 632.6 L332.3 630.0 L331.1 627.4 L330.0 624.8 L329.2 622.1 L328.5 619.5 L327.9 616.8 L327.5 614.1 L327.3 611.3 L327.2 608.6 L325.3 606.9 L325.4 609.7 L325.6 612.4 L326.1 615.2 L326.6 617.9 L327.3 620.6 L328.2 623.3 L329.3 626.0 L330.5 628.7 L331.9 631.3 L333.4 633.9 L335.0 636.5 L336.9 639.0 L338.8 641.5 L340.9 643.9 L343.2 646.3 L345.6 648.7 L348.1 650.9 L350.8 653.2 L353.6 655.3 L356.5 657.5 L359.5 659.5 L362.7 661.5 L366.0 663.4 L369.4 665.3Z" fill="url(#g13)" stroke="url(#g13)" stroke-width="0.6"/><path d="M325.3 606.9 L325.4 604.2 L325.6 601.5 L326.0 598.8 L326.6 596.1 L327.3 593.4 L328.2 590.7 L329.2 588.0 L330.4 585.4 L331.7 582.8 L333.2 580.2 L334.9 577.7 L336.7 575.2 L338.6 572.7 L340.7 570.3 L342.9 567.9 L345.2 565.6 L347.7 563.3 L350.4 561.1 L353.1 558.9 L356.0 556.8 L359.0 554.8 L362.1 552.8 L365.3 550.9 L368.7 549.0 L372.1 547.3 L375.7 545.6 L379.3 544.0 L383.0 542.4 L386.9 541.0 L390.8 539.6 L394.8 538.3 L398.8 537.1 L402.9 536.0 L407.1 535.0 L411.4 534.0 L415.7 533.2 L420.0 532.5 L424.4 531.8 L428.8 531.2 L433.3 530.8 L437.7 530.4 L442.2 530.1 L446.7 529.9 L451.3 529.8 L455.8 529.9 L460.3 530.0 L464.8 530.2 L469.3 530.5 L473.8 530.9 L478.2 531.4 L478.6 528.6 L474.1 528.1 L469.6 527.7 L465.0 527.4 L460.4 527.2 L455.8 527.1 L451.2 527.1 L446.6 527.2 L442.1 527.4 L437.5 527.6 L432.9 528.0 L428.4 528.5 L423.9 529.1 L419.5 529.7 L415.0 530.5 L410.7 531.4 L406.4 532.3 L402.1 533.4 L397.9 534.5 L393.8 535.7 L389.7 537.0 L385.8 538.4 L381.9 539.9 L378.1 541.4 L374.4 543.1 L370.8 544.8 L367.3 546.6 L363.9 548.5 L360.6 550.4 L357.4 552.4 L354.4 554.5 L351.5 556.6 L348.7 558.8 L346.0 561.1 L343.5 563.4 L341.1 565.8 L338.8 568.2 L336.7 570.7 L334.7 573.2 L332.9 575.7 L331.2 578.3 L329.7 580.9 L328.4 583.6 L327.2 586.2 L326.1 588.9 L325.2 591.7 L324.5 594.4 L323.9 597.2 L323.5 599.9 L323.3 602.7 L323.2 605.5Z" fill="url(#g14)" stroke="url(#g14)" stroke-width="0.6"/><path d="M430.7 682.9 L426.2 682.4 L421.8 681.8 L417.4 681.1 L413.0 680.2 L408.7 679.3 L404.4 678.3 L400.3 677.2 L396.1 676.0 L392.1 674.8 L388.1 673.4 L384.2 672.0 L380.4 670.4 L376.7 668.8 L373.1 667.1 L369.6 665.4 L366.2 663.5 L362.9 661.6 L359.7 659.6 L356.6 657.6 L353.7 655.4 L350.9 653.3 L348.2 651.0 L345.7 648.7 L343.3 646.4 L341.0 644.0 L338.9 641.5 L336.9 639.1 L335.1 636.5 L333.4 634.0 L331.9 631.4 L330.5 628.7 L329.3 626.1 L328.3 623.4 L327.4 620.7 L326.6 617.9 L326.1 615.2 L325.6 612.5 L325.4 609.7 L325.3 606.9 L323.2 605.5 L323.3 608.3 L323.5 611.1 L324.0 613.9 L324.5 616.7 L325.3 619.4 L326.2 622.2 L327.3 624.9 L328.5 627.6 L329.9 630.3 L331.4 632.9 L333.1 635.5 L335.0 638.1 L337.0 640.6 L339.1 643.1 L341.5 645.6 L343.9 648.0 L346.5 650.3 L349.2 652.6 L352.1 654.8 L355.0 656.9 L358.1 659.0 L361.4 661.0 L364.7 663.0 L368.2 664.8 L371.8 666.6 L375.4 668.4 L379.2 670.0 L383.1 671.5 L387.0 673.0 L391.1 674.4 L395.2 675.7 L399.4 676.9 L403.6 678.0 L408.0 679.0 L412.4 680.0 L416.8 680.8 L421.3 681.5 L425.8 682.2 L430.3 682.7Z" fill="url(#g15)" stroke="url(#g15)" stroke-width="0.6"/><path d="M522.1 671.9 L518.2 673.4 L514.2 674.7 L510.1 676.0 L506.0 677.2 L501.8 678.3 L497.5 679.3 L493.2 680.2 L488.8 681.1 L484.4 681.8 L479.9 682.4 L475.4 683.0 L475.8 682.7 L480.3 682.2 L484.9 681.6 L489.4 680.8 L493.8 680.0 L498.2 679.1 L502.6 678.0 L506.9 676.9 L511.1 675.7 L515.2 674.4 L519.3 673.0 L523.2 671.5Z" fill="#928f87" stroke="#928f87" stroke-width="0.6"/><path d="M323.2 605.5 L323.3 602.7 L323.5 599.9 L323.9 597.2 L324.5 594.4 L325.2 591.7 L326.1 588.9 L327.2 586.2 L328.4 583.6 L329.7 580.9 L331.2 578.3 L332.9 575.7 L334.7 573.2 L336.7 570.7 L338.8 568.2 L341.1 565.8 L343.5 563.4 L346.0 561.1 L348.7 558.8 L351.5 556.6 L354.4 554.5 L357.4 552.4 L360.6 550.4 L363.9 548.5 L367.3 546.6 L370.8 544.8 L374.4 543.1 L378.1 541.4 L381.9 539.9 L385.8 538.4 L389.7 537.0 L393.8 535.7 L397.9 534.5 L402.1 533.4 L406.4 532.3 L410.7 531.4 L415.0 530.5 L419.5 529.7 L423.9 529.1 L428.4 528.5 L432.9 528.0 L437.5 527.6 L442.1 527.4 L446.6 527.2 L451.2 527.1 L455.8 527.1 L460.4 527.2 L465.0 527.4 L469.6 527.7 L474.1 528.1 L478.6 528.6 L479.1 526.0 L474.5 525.5 L469.9 525.1 L465.2 524.8 L460.6 524.5 L455.9 524.4 L451.2 524.4 L446.5 524.5 L441.9 524.7 L437.2 525.0 L432.6 525.4 L428.0 525.9 L423.4 526.4 L418.9 527.1 L414.4 527.9 L409.9 528.8 L405.5 529.7 L401.2 530.8 L396.9 532.0 L392.7 533.2 L388.6 534.5 L384.6 536.0 L380.6 537.5 L376.7 539.0 L373.0 540.7 L369.3 542.5 L365.7 544.3 L362.3 546.2 L358.9 548.2 L355.7 550.2 L352.6 552.3 L349.6 554.5 L346.8 556.7 L344.1 559.0 L341.5 561.4 L339.0 563.8 L336.8 566.3 L334.6 568.8 L332.6 571.3 L330.8 573.9 L329.1 576.6 L327.5 579.2 L326.1 581.9 L324.9 584.6 L323.8 587.4 L322.9 590.2 L322.2 593.0 L321.6 595.8 L321.2 598.6 L320.9 601.4 L320.9 604.2Z" fill="url(#g16)" stroke="url(#g16)" stroke-width="0.6"/><path d="M453.1 683.9 L448.5 683.9 L444.0 683.7 L439.5 683.5 L435.0 683.2 L430.5 682.7 L426.1 682.2 L421.6 681.6 L417.3 680.9 L412.9 680.1 L408.6 679.2 L404.4 678.2 L400.2 677.1 L396.1 676.0 L392.1 674.7 L388.1 673.4 L384.2 672.0 L380.4 670.5 L376.7 668.9 L373.1 667.3 L369.6 665.6 L366.2 663.8 L362.9 661.9 L359.7 660.0 L356.6 658.0 L353.6 655.9 L350.7 653.8 L348.0 651.6 L345.4 649.3 L342.9 647.0 L340.6 644.7 L338.4 642.3 L336.3 639.9 L334.4 637.4 L332.7 634.9 L331.0 632.3 L329.6 629.7 L328.2 627.1 L327.1 624.4 L326.0 621.8 L325.2 619.1 L324.5 616.4 L323.9 613.7 L323.5 610.9 L323.3 608.2 L323.2 605.5 L320.9 604.2 L320.9 607.0 L321.2 609.8 L321.6 612.6 L322.2 615.3 L322.9 618.1 L323.8 620.8 L324.8 623.5 L326.0 626.2 L327.3 628.9 L328.8 631.5 L330.5 634.1 L332.3 636.7 L334.2 639.2 L336.3 641.7 L338.6 644.1 L341.0 646.5 L343.5 648.9 L346.1 651.2 L348.9 653.4 L351.8 655.6 L354.8 657.7 L358.0 659.7 L361.2 661.7 L364.6 663.6 L368.1 665.4 L371.7 667.2 L375.4 668.8 L379.1 670.4 L383.0 672.0 L387.0 673.4 L391.0 674.7 L395.1 676.0 L399.3 677.2 L403.5 678.3 L407.8 679.3 L412.2 680.2 L416.6 681.0 L421.1 681.7 L425.6 682.4 L430.1 682.9 L434.7 683.3 L439.2 683.7 L443.8 683.9 L448.4 684.1 L453.1 684.1Z" fill="url(#g17)" stroke="url(#g17)" stroke-width="0.6"/><path d="M320.9 604.2 L320.9 601.4 L321.2 598.6 L321.6 595.8 L322.2 593.0 L322.9 590.2 L323.8 587.4 L324.9 584.6 L326.1 581.9 L327.5 579.2 L329.1 576.6 L330.8 573.9 L332.6 571.3 L334.6 568.8 L336.8 566.3 L339.0 563.8 L341.5 561.4 L344.1 559.0 L346.8 556.7 L349.6 554.5 L352.6 552.3 L355.7 550.2 L358.9 548.2 L362.3 546.2 L365.7 544.3 L369.3 542.5 L373.0 540.7 L376.7 539.0 L380.6 537.5 L384.6 536.0 L388.6 534.5 L392.7 533.2 L396.9 532.0 L401.2 530.8 L405.5 529.7 L409.9 528.8 L414.4 527.9 L418.9 527.1 L423.4 526.4 L428.0 525.9 L432.6 525.4 L437.2 525.0 L441.9 524.7 L446.5 524.5 L451.2 524.4 L455.9 524.4 L460.6 524.5 L465.2 524.8 L469.9 525.1 L474.5 525.5 L479.1 526.0 L479.6 523.5 L474.9 523.0 L470.2 522.6 L465.4 522.2 L460.7 522.0 L455.9 521.9 L451.2 521.9 L446.4 522.0 L441.6 522.2 L436.9 522.5 L432.2 522.9 L427.5 523.4 L422.8 524.0 L418.2 524.7 L413.6 525.5 L409.1 526.3 L404.6 527.3 L400.2 528.4 L395.8 529.6 L391.6 530.9 L387.4 532.2 L383.2 533.7 L379.2 535.2 L375.3 536.8 L371.4 538.5 L367.7 540.3 L364.1 542.2 L360.5 544.1 L357.1 546.1 L353.8 548.2 L350.7 550.3 L347.7 552.6 L344.8 554.8 L342.0 557.2 L339.4 559.6 L336.9 562.0 L334.5 564.6 L332.3 567.1 L330.3 569.7 L328.4 572.4 L326.7 575.0 L325.1 577.8 L323.7 580.5 L322.5 583.3 L321.4 586.1 L320.4 588.9 L319.7 591.8 L319.1 594.6 L318.7 597.5 L318.4 600.3 L318.3 603.2Z" fill="url(#g18)" stroke="url(#g18)" stroke-width="0.6"/><path d="M453.1 684.1 L448.4 684.1 L443.8 683.9 L439.2 683.7 L434.7 683.3 L430.1 682.9 L425.6 682.4 L421.1 681.7 L416.6 681.0 L412.2 680.2 L407.8 679.3 L403.5 678.3 L399.3 677.2 L395.1 676.0 L391.0 674.7 L387.0 673.4 L383.0 672.0 L379.1 670.4 L375.4 668.8 L371.7 667.2 L368.1 665.4 L364.6 663.6 L361.2 661.7 L358.0 659.7 L354.8 657.7 L351.8 655.6 L348.9 653.4 L346.1 651.2 L343.5 648.9 L341.0 646.5 L338.6 644.1 L336.3 641.7 L334.2 639.2 L332.3 636.7 L330.5 634.1 L328.8 631.5 L327.3 628.9 L326.0 626.2 L324.8 623.5 L323.8 620.8 L322.9 618.1 L322.2 615.3 L321.6 612.6 L321.2 609.8 L320.9 607.0 L320.9 604.2 L318.3 603.2 L318.4 606.1 L318.7 608.9 L319.1 611.7 L319.7 614.6 L320.4 617.4 L321.3 620.1 L322.3 622.9 L323.6 625.7 L324.9 628.4 L326.5 631.1 L328.2 633.7 L330.0 636.3 L332.0 638.9 L334.1 641.4 L336.4 643.9 L338.8 646.4 L341.4 648.7 L344.1 651.1 L346.9 653.3 L349.9 655.5 L352.9 657.7 L356.2 659.8 L359.5 661.8 L362.9 663.7 L366.5 665.6 L370.1 667.4 L373.9 669.1 L377.7 670.7 L381.7 672.3 L385.7 673.7 L389.8 675.1 L394.0 676.4 L398.3 677.6 L402.6 678.7 L407.0 679.7 L411.4 680.6 L415.9 681.5 L420.5 682.2 L425.1 682.8 L429.7 683.4 L434.3 683.8 L439.0 684.2 L443.7 684.4 L448.4 684.6 L453.1 684.6Z" fill="url(#g19)" stroke="url(#g19)" stroke-width="0.6"/><path d="M318.3 603.2 L318.4 600.3 L318.7 597.5 L319.1 594.6 L319.7 591.8 L320.4 588.9 L321.4 586.1 L322.5 583.3 L323.7 580.5 L325.1 577.8 L326.7 575.0 L328.4 572.4 L330.3 569.7 L332.3 567.1 L334.5 564.6 L336.9 562.0 L339.4 559.6 L342.0 557.2 L344.8 554.8 L347.7 552.6 L350.7 550.3 L353.8 548.2 L357.1 546.1 L360.5 544.1 L364.1 542.2 L367.7 540.3 L371.4 538.5 L375.3 536.8 L379.2 535.2 L383.2 533.7 L387.4 532.2 L391.6 530.9 L395.8 529.6 L400.2 528.4 L404.6 527.3 L409.1 526.3 L413.6 525.5 L418.2 524.7 L422.8 524.0 L427.5 523.4 L432.2 522.9 L436.9 522.5 L441.6 522.2 L446.4 522.0 L451.2 521.9 L455.9 521.9 L460.7 522.0 L465.4 522.2 L470.2 522.6 L474.9 523.0 L479.6 523.5 L480.1 521.2 L475.3 520.7 L470.5 520.2 L465.7 519.9 L460.8 519.7 L456.0 519.6 L451.1 519.6 L446.3 519.7 L441.4 519.9 L436.6 520.2 L431.8 520.6 L427.0 521.1 L422.2 521.7 L417.5 522.4 L412.8 523.2 L408.2 524.1 L403.7 525.1 L399.2 526.2 L394.7 527.4 L390.4 528.7 L386.1 530.1 L381.9 531.6 L377.8 533.1 L373.7 534.8 L369.8 536.5 L366.0 538.3 L362.3 540.2 L358.7 542.2 L355.2 544.3 L351.9 546.4 L348.7 548.6 L345.6 550.8 L342.6 553.2 L339.8 555.6 L337.1 558.0 L334.6 560.5 L332.2 563.1 L330.0 565.7 L327.9 568.3 L326.0 571.0 L324.2 573.8 L322.6 576.5 L321.1 579.3 L319.9 582.2 L318.8 585.0 L317.8 587.9 L317.1 590.8 L316.5 593.7 L316.0 596.6 L315.8 599.6 L315.7 602.5Z" fill="url(#g20)" stroke="url(#g20)" stroke-width="0.6"/><path d="M453.1 684.6 L448.4 684.6 L443.7 684.4 L439.0 684.2 L434.3 683.8 L429.7 683.4 L425.1 682.8 L420.5 682.2 L415.9 681.5 L411.4 680.6 L407.0 679.7 L402.6 678.7 L398.3 677.6 L394.0 676.4 L389.8 675.1 L385.7 673.7 L381.7 672.3 L377.7 670.7 L373.9 669.1 L370.1 667.4 L366.5 665.6 L362.9 663.7 L359.5 661.8 L356.2 659.8 L352.9 657.7 L349.9 655.5 L346.9 653.3 L344.1 651.1 L341.4 648.7 L338.8 646.4 L336.4 643.9 L334.1 641.4 L332.0 638.9 L330.0 636.3 L328.2 633.7 L326.5 631.1 L324.9 628.4 L323.6 625.7 L322.3 622.9 L321.3 620.1 L320.4 617.4 L319.7 614.6 L319.1 611.7 L318.7 608.9 L318.4 606.1 L318.3 603.2 L315.7 602.5 L315.8 605.4 L316.0 608.3 L316.4 611.2 L317.0 614.1 L317.8 616.9 L318.7 619.8 L319.8 622.6 L321.0 625.4 L322.4 628.1 L324.0 630.9 L325.7 633.6 L327.6 636.3 L329.6 638.9 L331.8 641.5 L334.1 644.0 L336.6 646.5 L339.2 648.9 L341.9 651.3 L344.8 653.6 L347.8 655.9 L351.0 658.0 L354.2 660.2 L357.6 662.2 L361.1 664.2 L364.8 666.1 L368.5 667.9 L372.3 669.7 L376.2 671.3 L380.3 672.9 L384.4 674.4 L388.6 675.8 L392.8 677.1 L397.2 678.3 L401.6 679.5 L406.1 680.5 L410.6 681.5 L415.2 682.3 L419.8 683.0 L424.5 683.7 L429.2 684.3 L433.9 684.7 L438.7 685.1 L443.5 685.3 L448.3 685.5 L453.1 685.5Z" fill="url(#g21)" stroke="url(#g21)" stroke-width="0.6"/><path d="M315.7 602.5 L315.8 599.6 L316.0 596.6 L316.5 593.7 L317.1 590.8 L317.8 587.9 L318.8 585.0 L319.9 582.2 L321.1 579.3 L322.6 576.5 L324.2 573.8 L326.0 571.0 L327.9 568.3 L330.0 565.7 L332.2 563.1 L334.6 560.5 L337.1 558.0 L339.8 555.6 L342.6 553.2 L345.6 550.8 L348.7 548.6 L351.9 546.4 L355.2 544.3 L358.7 542.2 L362.3 540.2 L366.0 538.3 L369.8 536.5 L373.7 534.8 L377.8 533.1 L381.9 531.6 L386.1 530.1 L390.4 528.7 L394.7 527.4 L399.2 526.2 L403.7 525.1 L408.2 524.1 L412.8 523.2 L417.5 522.4 L422.2 521.7 L427.0 521.1 L431.8 520.6 L436.6 520.2 L441.4 519.9 L446.3 519.7 L451.1 519.6 L456.0 519.6 L460.8 519.7 L465.7 519.9 L470.5 520.2 L475.3 520.7 L480.1 521.2 L480.7 519.1 L475.8 518.6 L470.9 518.2 L465.9 517.8 L461.0 517.6 L456.0 517.5 L451.1 517.5 L446.1 517.6 L441.2 517.8 L436.3 518.1 L431.3 518.5 L426.5 519.0 L421.6 519.6 L416.8 520.3 L412.0 521.2 L407.3 522.1 L402.7 523.1 L398.1 524.2 L393.5 525.5 L389.1 526.8 L384.7 528.2 L380.4 529.7 L376.2 531.3 L372.1 533.0 L368.1 534.7 L364.3 536.6 L360.5 538.5 L356.8 540.6 L353.3 542.6 L349.9 544.8 L346.6 547.1 L343.4 549.4 L340.4 551.7 L337.5 554.2 L334.8 556.7 L332.2 559.2 L329.8 561.8 L327.5 564.5 L325.4 567.2 L323.4 570.0 L321.6 572.7 L320.0 575.6 L318.5 578.4 L317.2 581.3 L316.1 584.2 L315.1 587.2 L314.3 590.1 L313.7 593.1 L313.3 596.1 L313.0 599.1 L312.9 602.1Z" fill="url(#g22)" stroke="url(#g22)" stroke-width="0.6"/><path d="M453.1 685.5 L448.3 685.5 L443.5 685.3 L438.7 685.1 L433.9 684.7 L429.2 684.3 L424.5 683.7 L419.8 683.0 L415.2 682.3 L410.6 681.5 L406.1 680.5 L401.6 679.5 L397.2 678.3 L392.8 677.1 L388.6 675.8 L384.4 674.4 L380.3 672.9 L376.2 671.3 L372.3 669.7 L368.5 667.9 L364.8 666.1 L361.1 664.2 L357.6 662.2 L354.2 660.2 L351.0 658.0 L347.8 655.9 L344.8 653.6 L341.9 651.3 L339.2 648.9 L336.6 646.5 L334.1 644.0 L331.8 641.5 L329.6 638.9 L327.6 636.3 L325.7 633.6 L324.0 630.9 L322.4 628.1 L321.0 625.4 L319.8 622.6 L318.7 619.8 L317.8 616.9 L317.0 614.1 L316.4 611.2 L316.0 608.3 L315.8 605.4 L315.7 602.5 L312.9 602.1 L313.0 605.0 L313.3 608.0 L313.7 610.9 L314.3 613.8 L315.0 616.8 L316.0 619.7 L317.1 622.5 L318.3 625.4 L319.8 628.2 L321.4 631.0 L323.1 633.8 L325.0 636.5 L327.1 639.2 L329.3 641.8 L331.7 644.4 L334.2 646.9 L336.9 649.4 L339.7 651.8 L342.6 654.2 L345.7 656.5 L348.9 658.7 L352.3 660.9 L355.7 663.0 L359.3 665.0 L363.0 666.9 L366.8 668.8 L370.7 670.6 L374.7 672.3 L378.8 673.9 L383.0 675.4 L387.3 676.8 L391.6 678.2 L396.1 679.4 L400.6 680.6 L405.1 681.6 L409.8 682.6 L414.4 683.5 L419.2 684.2 L423.9 684.9 L428.7 685.5 L433.6 685.9 L438.4 686.3 L443.3 686.5 L448.2 686.7 L453.1 686.8Z" fill="url(#g23)" stroke="url(#g23)" stroke-width="0.6"/><path d="M312.9 602.1 L313.0 599.1 L313.3 596.1 L313.7 593.1 L314.3 590.1 L315.1 587.2 L316.1 584.2 L317.2 581.3 L318.5 578.4 L320.0 575.6 L321.6 572.7 L323.4 570.0 L325.4 567.2 L327.5 564.5 L329.8 561.8 L332.2 559.2 L334.8 556.7 L337.5 554.2 L340.4 551.7 L343.4 549.4 L346.6 547.1 L349.9 544.8 L353.3 542.6 L356.8 540.6 L360.5 538.5 L364.3 536.6 L368.1 534.7 L372.1 533.0 L376.2 531.3 L380.4 529.7 L384.7 528.2 L389.1 526.8 L393.5 525.5 L398.1 524.2 L402.7 523.1 L407.3 522.1 L412.0 521.2 L416.8 520.3 L421.6 519.6 L426.5 519.0 L431.3 518.5 L436.3 518.1 L441.2 517.8 L446.1 517.6 L451.1 517.5 L456.0 517.5 L461.0 517.6 L465.9 517.8 L470.9 518.2 L475.8 518.6 L480.7 519.1 L481.2 517.3 L476.2 516.8 L471.2 516.3 L466.2 516.0 L461.2 515.8 L456.1 515.6 L451.1 515.6 L446.0 515.7 L441.0 515.9 L435.9 516.2 L430.9 516.7 L425.9 517.2 L421.0 517.8 L416.1 518.6 L411.2 519.4 L406.4 520.3 L401.7 521.4 L397.0 522.5 L392.4 523.8 L387.8 525.1 L383.4 526.6 L379.0 528.1 L374.7 529.7 L370.5 531.4 L366.4 533.2 L362.5 535.1 L358.6 537.1 L354.9 539.2 L351.3 541.3 L347.8 543.5 L344.4 545.8 L341.2 548.2 L338.1 550.6 L335.2 553.1 L332.4 555.6 L329.8 558.2 L327.3 560.9 L325.0 563.6 L322.8 566.4 L320.8 569.2 L319.0 572.0 L317.3 574.9 L315.8 577.8 L314.5 580.8 L313.3 583.7 L312.3 586.7 L311.5 589.7 L310.9 592.8 L310.5 595.8 L310.2 598.9 L310.1 601.9Z" fill="url(#g24)" stroke="url(#g24)" stroke-width="0.6"/><path d="M453.1 686.8 L448.2 686.7 L443.3 686.5 L438.4 686.3 L433.6 685.9 L428.7 685.5 L423.9 684.9 L419.2 684.2 L414.4 683.5 L409.8 682.6 L405.1 681.6 L400.6 680.6 L396.1 679.4 L391.6 678.2 L387.3 676.8 L383.0 675.4 L378.8 673.9 L374.7 672.3 L370.7 670.6 L366.8 668.8 L363.0 666.9 L359.3 665.0 L355.7 663.0 L352.3 660.9 L348.9 658.7 L345.7 656.5 L342.6 654.2 L339.7 651.8 L336.9 649.4 L334.2 646.9 L331.7 644.4 L329.3 641.8 L327.1 639.2 L325.0 636.5 L323.1 633.8 L321.4 631.0 L319.8 628.2 L318.3 625.4 L317.1 622.5 L316.0 619.7 L315.0 616.8 L314.3 613.8 L313.7 610.9 L313.3 608.0 L313.0 605.0 L312.9 602.1 L310.1 601.9 L310.2 604.9 L310.5 607.9 L310.9 610.9 L311.5 613.9 L312.3 616.9 L313.2 619.9 L314.4 622.8 L315.6 625.7 L317.1 628.6 L318.7 631.5 L320.5 634.3 L322.5 637.0 L324.6 639.8 L326.8 642.5 L329.3 645.1 L331.8 647.7 L334.6 650.2 L337.4 652.7 L340.4 655.1 L343.6 657.4 L346.8 659.7 L350.2 661.9 L353.8 664.0 L357.4 666.1 L361.2 668.1 L365.1 670.0 L369.0 671.8 L373.1 673.5 L377.3 675.2 L381.6 676.7 L385.9 678.2 L390.4 679.5 L394.9 680.8 L399.5 682.0 L404.2 683.1 L408.9 684.1 L413.7 684.9 L418.5 685.7 L423.3 686.4 L428.2 687.0 L433.2 687.5 L438.1 687.8 L443.1 688.1 L448.1 688.2 L453.1 688.3Z" fill="url(#g25)" stroke="url(#g25)" stroke-width="0.6"/><path d="M498.9 696.8 L491.7 688.5 L485.0 679.9 L478.7 671.3 L473.0 662.5 L467.8 653.6 L463.2 644.5 L459.0 635.4 L455.5 626.2 L452.4 617.0 L449.9 607.7 L448.0 598.3 L446.6 588.9 L445.7 579.4 L445.5 570.0 L454.1 645.3 L454.3 654.6 L455.2 663.8 L456.5 673.1 L458.4 682.3 L460.9 691.4 L463.9 700.5 L467.4 709.5 L471.4 718.4 L476.0 727.3 L481.1 736.0 L486.7 744.6 L492.8 753.1 L499.4 761.5 L506.5 769.7Z" fill="#45433f"/><path d="M498.9 696.8 L491.7 688.5 L485.0 679.9 L478.7 671.3 L473.0 662.5 L467.8 653.6 L463.2 644.5 L459.0 635.4 L455.5 626.2 L452.4 617.0 L449.9 607.7 L448.0 598.3 L446.6 588.9 L445.7 579.4 L445.5 570.0 L445.5 631.6 L445.7 641.1 L446.6 650.5 L448.0 659.9 L449.9 669.3 L452.4 678.6 L455.5 687.9 L459.0 697.1 L463.2 706.2 L467.8 715.2 L473.0 724.1 L478.7 732.9 L485.0 741.6 L491.7 750.1 L498.9 758.5Z" fill="url(#bwh)"/><path d="M514.9 713.2 L506.9 705.3 L499.3 697.2 L492.2 689.0 L485.6 680.7 L479.4 672.2 L473.7 663.6 L468.6 654.9 L463.9 646.1 L459.8 637.2 L456.2 628.2 L453.1 619.1 L450.5 610.0 L448.4 600.8 L446.9 591.6 L445.9 582.4 L445.5 573.1 L445.6 563.9 L446.2 554.6 L447.4 545.4 L449.0 536.2 L451.3 527.0 L454.0 517.9 L454.2 515.7 L451.4 524.8 L449.2 534.0 L447.5 543.2 L446.4 552.4 L445.8 561.6 L445.7 570.9 L446.1 580.1 L447.1 589.4 L448.6 598.6 L450.7 607.7 L453.2 616.9 L456.3 625.9 L460.0 634.9 L464.1 643.8 L468.8 652.6 L473.9 661.3 L479.6 669.9 L485.7 678.4 L492.4 686.8 L499.5 695.0 L507.1 703.0 L515.1 710.9Z" fill="#5f5d56" stroke="#5f5d56" stroke-width="0.6"/><path d="M515.1 710.9 L507.1 703.0 L499.5 695.0 L492.4 686.8 L485.7 678.4 L479.6 669.9 L473.9 661.3 L468.8 652.6 L464.1 643.8 L460.0 634.9 L456.3 625.9 L453.2 616.9 L450.7 607.7 L448.6 598.6 L447.1 589.4 L446.1 580.1 L445.7 570.9 L445.8 561.6 L446.4 552.4 L447.5 543.2 L449.2 534.0 L451.4 524.8 L454.2 515.7 L454.7 513.6 L452.0 522.7 L449.8 531.8 L448.1 541.0 L446.9 550.2 L446.3 559.4 L446.2 568.7 L446.7 577.9 L447.7 587.1 L449.2 596.3 L451.2 605.5 L453.8 614.6 L456.9 623.6 L460.5 632.6 L464.6 641.5 L469.3 650.3 L474.4 659.0 L480.1 667.6 L486.2 676.1 L492.8 684.4 L500.0 692.6 L507.5 700.6 L515.6 708.5Z" fill="#64625b" stroke="#64625b" stroke-width="0.6"/><path d="M515.6 708.5 L507.5 700.6 L500.0 692.6 L492.8 684.4 L486.2 676.1 L480.1 667.6 L474.4 659.0 L469.3 650.3 L464.6 641.5 L460.5 632.6 L456.9 623.6 L453.8 614.6 L451.2 605.5 L449.2 596.3 L447.7 587.1 L446.7 577.9 L446.2 568.7 L446.3 559.4 L446.9 550.2 L448.1 541.0 L449.8 531.8 L452.0 522.7 L454.7 513.6 L455.6 511.6 L452.9 520.6 L450.7 529.8 L449.0 538.9 L447.8 548.1 L447.2 557.3 L447.1 566.5 L447.6 575.8 L448.6 585.0 L450.1 594.1 L452.1 603.3 L454.7 612.4 L457.8 621.4 L461.4 630.4 L465.5 639.2 L470.1 648.0 L475.3 656.7 L480.9 665.3 L487.0 673.7 L493.7 682.0 L500.7 690.2 L508.3 698.2 L516.3 706.1Z" fill="#696760" stroke="#696760" stroke-width="0.6"/><path d="M516.3 706.1 L508.3 698.2 L500.7 690.2 L493.7 682.0 L487.0 673.7 L480.9 665.3 L475.3 656.7 L470.1 648.0 L465.5 639.2 L461.4 630.4 L457.8 621.4 L454.7 612.4 L452.1 603.3 L450.1 594.1 L448.6 585.0 L447.6 575.8 L447.1 566.5 L447.2 557.3 L447.8 548.1 L449.0 538.9 L450.7 529.8 L452.9 520.6 L455.6 511.6 L456.8 509.7 L454.1 518.7 L451.9 527.8 L450.2 537.0 L449.1 546.1 L448.5 555.3 L448.4 564.5 L448.8 573.7 L449.8 582.9 L451.3 592.0 L453.3 601.2 L455.9 610.2 L459.0 619.2 L462.6 628.2 L466.7 637.0 L471.3 645.8 L476.4 654.4 L482.1 663.0 L488.2 671.4 L494.8 679.7 L501.8 687.8 L509.4 695.8 L517.4 703.6Z" fill="#706e67" stroke="#706e67" stroke-width="0.6"/><path d="M517.4 703.6 L509.4 695.8 L501.8 687.8 L494.8 679.7 L488.2 671.4 L482.1 663.0 L476.4 654.4 L471.3 645.8 L466.7 637.0 L462.6 628.2 L459.0 619.2 L455.9 610.2 L453.3 601.2 L451.3 592.0 L449.8 582.9 L448.8 573.7 L448.4 564.5 L448.5 555.3 L449.1 546.1 L450.2 537.0 L451.9 527.8 L454.1 518.7 L456.8 509.7 L458.4 508.0 L455.6 517.0 L453.4 526.1 L451.8 535.2 L450.6 544.3 L450.0 553.5 L449.9 562.6 L450.4 571.8 L451.4 580.9 L452.9 590.1 L454.9 599.1 L457.4 608.2 L460.5 617.2 L464.1 626.1 L468.2 634.9 L472.8 643.6 L477.9 652.2 L483.5 660.7 L489.6 669.1 L496.2 677.4 L503.2 685.5 L510.7 693.5 L518.7 701.3Z" fill="#77756d" stroke="#77756d" stroke-width="0.6"/><path d="M518.7 701.3 L510.7 693.5 L503.2 685.5 L496.2 677.4 L489.6 669.1 L483.5 660.7 L477.9 652.2 L472.8 643.6 L468.2 634.9 L464.1 626.1 L460.5 617.2 L457.4 608.2 L454.9 599.1 L452.9 590.1 L451.4 580.9 L450.4 571.8 L449.9 562.6 L450.0 553.5 L450.6 544.3 L451.8 535.2 L453.4 526.1 L455.6 517.0 L458.4 508.0 L460.2 506.6 L457.5 515.5 L455.3 524.6 L453.6 533.6 L452.5 542.7 L451.9 551.8 L451.8 560.9 L452.2 570.1 L453.2 579.2 L454.7 588.2 L456.7 597.3 L459.3 606.3 L462.3 615.2 L465.9 624.1 L470.0 632.9 L474.5 641.6 L479.6 650.2 L485.2 658.6 L491.3 667.0 L497.8 675.2 L504.8 683.3 L512.3 691.2 L520.3 699.0Z" fill="#7e7c73" stroke="#7e7c73" stroke-width="0.6"/><path d="M520.3 699.0 L512.3 691.2 L504.8 683.3 L497.8 675.2 L491.3 667.0 L485.2 658.6 L479.6 650.2 L474.5 641.6 L470.0 632.9 L465.9 624.1 L462.3 615.2 L459.3 606.3 L456.7 597.3 L454.7 588.2 L453.2 579.2 L452.2 570.1 L451.8 560.9 L451.9 551.8 L452.5 542.7 L453.6 533.6 L455.3 524.6 L457.5 515.5 L460.2 506.6 L462.3 505.3 L459.6 514.3 L457.4 523.2 L455.7 532.3 L454.6 541.3 L454.0 550.4 L453.9 559.5 L454.3 568.5 L455.3 577.6 L456.8 586.6 L458.8 595.6 L461.3 604.6 L464.4 613.5 L467.9 622.3 L472.0 631.0 L476.6 639.7 L481.6 648.2 L487.2 656.7 L493.2 665.0 L499.7 673.2 L506.7 681.2 L514.1 689.1 L522.0 696.8Z" fill="#817e76" stroke="#817e76" stroke-width="0.6"/><path d="M522.0 696.8 L514.1 689.1 L506.7 681.2 L499.7 673.2 L493.2 665.0 L487.2 656.7 L481.6 648.2 L476.6 639.7 L472.0 631.0 L467.9 622.3 L464.4 613.5 L461.3 604.6 L458.8 595.6 L456.8 586.6 L455.3 577.6 L454.3 568.5 L453.9 559.5 L454.0 550.4 L454.6 541.3 L455.7 532.3 L457.4 523.2 L459.6 514.3 L462.3 505.3 L464.6 504.4 L461.9 513.2 L459.7 522.2 L458.1 531.1 L456.9 540.1 L456.3 549.2 L456.2 558.2 L456.7 567.2 L457.6 576.2 L459.1 585.2 L461.1 594.2 L463.6 603.1 L466.7 611.9 L470.2 620.7 L474.2 629.4 L478.8 638.0 L483.8 646.5 L489.3 654.9 L495.3 663.1 L501.8 671.3 L508.7 679.3 L516.1 687.1 L524.0 694.8Z" fill="#848279" stroke="#848279" stroke-width="0.6"/><path d="M524.0 694.8 L516.1 687.1 L508.7 679.3 L501.8 671.3 L495.3 663.1 L489.3 654.9 L483.8 646.5 L478.8 638.0 L474.2 629.4 L470.2 620.7 L466.7 611.9 L463.6 603.1 L461.1 594.2 L459.1 585.2 L457.6 576.2 L456.7 567.2 L456.2 558.2 L456.3 549.2 L456.9 540.1 L458.1 531.1 L459.7 522.2 L461.9 513.2 L464.6 504.4 L467.0 503.7 L464.4 512.5 L462.2 521.4 L460.6 530.3 L459.5 539.2 L458.9 548.2 L458.8 557.2 L459.2 566.2 L460.2 575.1 L461.6 584.0 L463.6 592.9 L466.1 601.8 L469.1 610.6 L472.6 619.3 L476.6 627.9 L481.2 636.5 L486.2 644.9 L491.7 653.3 L497.6 661.5 L504.1 669.6 L511.0 677.6 L518.3 685.4 L526.1 693.0Z" fill="#848178" stroke="#848178" stroke-width="0.6"/><path d="M526.1 693.0 L518.3 685.4 L511.0 677.6 L504.1 669.6 L497.6 661.5 L491.7 653.3 L486.2 644.9 L481.2 636.5 L476.6 627.9 L472.6 619.3 L469.1 610.6 L466.1 601.8 L463.6 592.9 L461.6 584.0 L460.2 575.1 L459.2 566.2 L458.8 557.2 L458.9 548.2 L459.5 539.2 L460.6 530.3 L462.2 521.4 L464.4 512.5 L467.0 503.7 L469.6 503.3 L467.0 512.0 L464.9 520.9 L463.2 529.7 L462.1 538.6 L461.5 547.5 L461.4 556.4 L461.9 565.4 L462.8 574.3 L464.3 583.1 L466.2 592.0 L468.7 600.8 L471.7 609.5 L475.2 618.2 L479.2 626.8 L483.7 635.3 L488.7 643.7 L494.1 651.9 L500.0 660.1 L506.4 668.2 L513.3 676.1 L520.6 683.8 L528.4 691.4Z" fill="#827e75" stroke="#827e75" stroke-width="0.6"/><path d="M528.4 691.4 L520.6 683.8 L513.3 676.1 L506.4 668.2 L500.0 660.1 L494.1 651.9 L488.7 643.7 L483.7 635.3 L479.2 626.8 L475.2 618.2 L471.7 609.5 L468.7 600.8 L466.2 592.0 L464.3 583.1 L462.8 574.3 L461.9 565.4 L461.4 556.4 L461.5 547.5 L462.1 538.6 L463.2 529.7 L464.9 520.9 L467.0 512.0 L469.6 503.3 L472.3 503.1 L469.7 511.9 L467.6 520.6 L466.0 529.4 L464.9 538.3 L464.3 547.1 L464.2 556.0 L464.6 564.8 L465.6 573.7 L467.0 582.5 L469.0 591.3 L471.4 600.0 L474.4 608.7 L477.9 617.3 L481.8 625.8 L486.3 634.3 L491.2 642.6 L496.7 650.9 L502.5 659.0 L508.9 667.0 L515.7 674.8 L523.0 682.5 L530.7 690.1Z" fill="#7e7b71" stroke="#7e7b71" stroke-width="0.6"/><path d="M530.7 690.1 L523.0 682.5 L515.7 674.8 L508.9 667.0 L502.5 659.0 L496.7 650.9 L491.2 642.6 L486.3 634.3 L481.8 625.8 L477.9 617.3 L474.4 608.7 L471.4 600.0 L469.0 591.3 L467.0 582.5 L465.6 573.7 L464.6 564.8 L464.2 556.0 L464.3 547.1 L464.9 538.3 L466.0 529.4 L467.6 520.6 L469.7 511.9 L472.3 503.1 L475.1 503.3 L472.5 512.0 L470.4 520.7 L468.8 529.4 L467.7 538.2 L467.1 547.0 L467.0 555.8 L467.4 564.6 L468.4 573.4 L469.8 582.2 L471.7 590.9 L474.2 599.6 L477.1 608.2 L480.6 616.7 L484.5 625.2 L489.0 633.6 L493.9 641.9 L499.2 650.1 L505.1 658.1 L511.4 666.1 L518.2 673.9 L525.4 681.5 L533.1 689.0Z" fill="#7c786e" stroke="#7c786e" stroke-width="0.6"/><path d="M331.6 619.1 L331.7 616.5 L331.9 613.9 L332.3 611.3 L332.8 608.7 L333.5 606.2 L334.4 603.6 L335.3 601.1 L336.5 598.6 L337.7 596.1 L339.2 593.6 L340.7 591.2 L342.4 588.8 L344.3 586.5 L346.3 584.2 L348.4 581.9 L350.6 579.7 L353.0 577.5 L355.5 575.4 L358.1 573.4 L360.8 571.4 L363.7 569.4 L366.7 567.5 L369.7 565.7 L372.9 564.0 L376.2 562.3 L379.6 560.7 L383.1 559.2 L386.6 557.7 L390.3 556.3 L394.0 555.0 L397.8 553.8 L401.6 552.7 L405.6 551.6 L409.6 550.6 L413.6 549.7 L417.7 548.9 L421.8 548.2 L426.0 547.6 L430.2 547.1 L434.4 546.6 L438.7 546.3 L443.0 546.0 L447.3 545.9" fill="none" stroke="#111" stroke-width="1"/><path d="M495.3 692.8 L488.1 684.0 L481.4 675.0 L475.2 665.9 L469.6 656.7 L464.6 647.4 L460.1 637.9 L456.2 628.4 L453.0 618.8 L450.3 609.1 L448.2 599.4 L446.7 589.6 L445.8 579.8 L445.5 570.0" fill="none" stroke="#111" stroke-width="1"/><path d="M495.3 754.4 L488.1 745.6 L481.4 736.6 L475.2 727.6 L469.6 718.3 L464.6 709.0 L460.1 699.6 L456.2 690.0 L453.0 680.4 L450.3 670.7 L448.2 661.0 L446.7 651.2 L445.8 641.4 L445.5 631.6" fill="none" stroke="#111" stroke-width="1"/><path d="M445.5 570.0 L445.5 631.6" stroke="#111" stroke-width="1"/></g><path d="M1323.3 570.3 L1323.1 579.5 L1322.3 588.8 L1320.9 598.0 L1319.0 607.3 L1316.6 616.4 L1313.7 625.5 L1310.2 634.6 L1306.2 643.5 L1301.7 652.4 L1296.7 661.2 L1291.2 669.8 L1285.2 678.3 L1278.7 686.8 L1271.7 695.0 L1264.2 703.1 L1256.3 711.1 L1247.9 718.8 L1239.1 726.4 L1229.8 733.8 L1220.1 741.0 L1210.0 748.0 L1199.5 754.8 L1188.6 761.3 L1177.4 767.6 L1165.8 773.7 L1153.8 779.5 L1141.5 785.1 L1128.9 790.4 L1116.0 795.4 L1102.8 800.2 L1089.4 804.6 L1075.7 808.8 L1061.7 812.7 L1047.6 816.3 L1033.2 819.6 L1018.7 822.6 L1004.0 825.3 L989.1 827.6 L974.1 829.7 L959.0 831.4 L943.9 832.8 L928.6 833.9 L913.3 834.7 L898.0 835.1 L882.6 835.2 L867.2 835.0 L851.9 834.5 L836.6 833.7 L821.4 832.5 L806.2 831.0 L791.1 829.2 L776.2 827.0 L761.4 824.6 L746.7 821.8 L732.2 818.7 L717.9 815.4 L703.8 811.7 L689.9 807.7 L676.2 803.5 L662.8 798.9 L649.7 794.1 L636.9 789.0 L624.4 783.6 L612.1 778.0 L600.3 772.1 L588.7 766.0 L577.6 759.6 L566.8 753.0 L556.4 746.2 L546.4 739.1 L541.3 802.3 L550.7 809.5 L560.4 816.4 L570.5 823.2 L581.1 829.7 L592.0 836.1 L603.2 842.2 L614.9 848.0 L626.8 853.6 L639.1 858.9 L651.6 864.0 L664.5 868.8 L677.6 873.3 L691.0 877.6 L704.6 881.6 L718.4 885.2 L732.5 888.6 L746.7 891.7 L761.1 894.5 L775.7 896.9 L790.4 899.1 L805.2 900.9 L820.1 902.4 L835.0 903.7 L850.1 904.6 L865.2 905.1 L880.3 905.4 L895.4 905.3 L910.5 904.9 L925.5 904.2 L940.6 903.2 L955.5 901.8 L970.4 900.2 L985.1 898.2 L999.8 895.9 L1014.2 893.3 L1028.6 890.4 L1042.7 887.2 L1056.7 883.7 L1070.4 879.9 L1083.9 875.8 L1097.2 871.5 L1110.2 866.8 L1122.9 861.9 L1135.3 856.7 L1147.5 851.3 L1159.3 845.6 L1170.7 839.6 L1181.8 833.4 L1192.6 827.0 L1202.9 820.3 L1212.9 813.5 L1222.4 806.4 L1231.6 799.2 L1240.3 791.7 L1248.6 784.1 L1256.4 776.3 L1263.8 768.3 L1270.7 760.2 L1277.1 751.9 L1283.0 743.5 L1288.5 735.0 L1293.4 726.4 L1297.9 717.7 L1301.8 708.9 L1305.2 700.0 L1308.1 691.0 L1310.5 682.0 L1312.4 672.9 L1313.7 663.8 L1314.5 654.7 L1314.7 645.6Z" fill="url(#g28)"/><path d="M546.4 739.1 L539.3 741.0 L532.1 742.8 L524.9 744.4 L517.5 745.9 L510.1 747.1 L502.6 748.3 L495.0 749.2 L487.4 750.1 L479.7 750.7 L472.0 751.2 L464.3 751.5 L456.6 751.7 L448.8 751.6 L441.1 751.5 L433.4 751.1 L425.7 750.6 L418.0 750.0 L410.4 749.1 L402.8 748.1 L395.3 747.0 L387.9 745.7 L380.6 744.2 L373.3 742.6 L366.1 740.8 L359.1 738.9 L352.2 736.8 L345.3 734.6 L338.7 732.2 L332.1 729.7 L325.8 727.1 L319.5 724.3 L313.5 721.4 L307.6 718.3 L301.9 715.2 L296.4 711.9 L291.1 708.5 L285.9 705.0 L281.0 701.4 L276.3 697.7 L271.9 693.8 L267.6 689.9 L263.6 685.9 L259.8 681.9 L256.2 677.7 L252.9 673.5 L249.9 669.2 L247.1 664.8 L244.5 660.4 L242.3 656.0 L240.2 651.4 L238.5 646.9 L237.0 642.3 L235.8 637.7 L234.8 633.0 L234.1 628.4 L233.7 623.7 L233.6 619.1 L242.2 694.4 L242.3 698.8 L242.7 703.3 L243.4 707.7 L244.3 712.1 L245.4 716.5 L246.8 720.9 L248.5 725.2 L250.4 729.5 L252.5 733.8 L254.9 738.0 L257.6 742.2 L260.5 746.3 L263.6 750.3 L266.9 754.3 L270.5 758.2 L274.3 762.0 L278.3 765.7 L282.6 769.4 L287.0 772.9 L291.6 776.4 L296.5 779.7 L301.5 783.0 L306.7 786.1 L312.1 789.2 L317.7 792.1 L323.4 794.9 L329.3 797.5 L335.4 800.1 L341.6 802.5 L347.9 804.8 L354.3 807.0 L360.9 809.0 L367.6 810.9 L374.4 812.6 L381.3 814.2 L388.2 815.6 L395.3 816.9 L402.4 818.1 L409.6 819.1 L416.8 819.9 L424.1 820.6 L431.4 821.1 L438.8 821.5 L446.1 821.7 L453.5 821.8 L460.9 821.7 L468.2 821.5 L475.6 821.1 L482.9 820.6 L490.1 819.8 L497.4 819.0 L504.6 818.0 L511.7 816.8 L518.7 815.5 L525.7 814.1 L532.5 812.4 L539.3 810.7 L546.0 808.8 L552.6 806.8 L559.0 804.6Z" fill="url(#g29)"/><path d="M1323.3 570.3 L1323.1 579.5 L1322.3 588.8 L1320.9 598.0 L1319.0 607.3 L1316.6 616.4 L1313.7 625.5 L1310.2 634.6 L1306.2 643.5 L1301.7 652.4 L1296.7 661.2 L1291.2 669.8 L1285.2 678.3 L1278.7 686.8 L1271.7 695.0 L1264.2 703.1 L1256.3 711.1 L1247.9 718.8 L1239.1 726.4 L1229.8 733.8 L1220.1 741.0 L1210.0 748.0 L1199.5 754.8 L1188.6 761.3 L1177.4 767.6 L1165.8 773.7 L1153.8 779.5 L1141.5 785.1 L1128.9 790.4 L1116.0 795.4 L1102.8 800.2 L1089.4 804.6 L1075.7 808.8 L1061.7 812.7 L1047.6 816.3 L1033.2 819.6 L1018.7 822.6 L1004.0 825.3 L989.1 827.6 L974.1 829.7 L959.0 831.4 L943.9 832.8 L928.6 833.9 L913.3 834.7 L898.0 835.1 L882.6 835.2 L867.2 835.0 L851.9 834.5 L836.6 833.7 L821.4 832.5 L806.2 831.0 L791.1 829.2 L776.2 827.0 L761.4 824.6 L746.7 821.8 L732.2 818.7 L717.9 815.4 L703.8 811.7 L689.9 807.7 L676.2 803.5 L662.8 798.9 L649.7 794.1 L636.9 789.0 L624.4 783.6 L612.1 778.0 L600.3 772.1 L588.7 766.0 L577.6 759.6 L566.8 753.0 L556.4 746.2 L546.4 739.1 L546.4 800.7 L556.4 807.8 L566.8 814.6 L577.6 821.2 L588.7 827.6 L600.3 833.7 L612.1 839.6 L624.4 845.2 L636.9 850.6 L649.7 855.7 L662.8 860.5 L676.2 865.1 L689.9 869.3 L703.8 873.3 L717.9 877.0 L732.2 880.4 L746.7 883.4 L761.4 886.2 L776.2 888.6 L791.1 890.8 L806.2 892.6 L821.4 894.1 L836.6 895.3 L851.9 896.1 L867.2 896.7 L882.6 896.9 L898.0 896.7 L913.3 896.3 L928.6 895.5 L943.9 894.4 L959.0 893.0 L974.1 891.3 L989.1 889.2 L1004.0 886.9 L1018.7 884.2 L1033.2 881.2 L1047.6 877.9 L1061.7 874.3 L1075.7 870.4 L1089.4 866.2 L1102.8 861.8 L1116.0 857.0 L1128.9 852.0 L1141.5 846.7 L1153.8 841.1 L1165.8 835.3 L1177.4 829.2 L1188.6 822.9 L1199.5 816.4 L1210.0 809.6 L1220.1 802.6 L1229.8 795.4 L1239.1 788.0 L1247.9 780.4 L1256.3 772.7 L1264.2 764.7 L1271.7 756.6 L1278.7 748.4 L1285.2 740.0 L1291.2 731.4 L1296.7 722.8 L1301.7 714.0 L1306.2 705.1 L1310.2 696.2 L1313.7 687.1 L1316.6 678.0 L1319.0 668.9 L1320.9 659.7 L1322.3 650.4 L1323.1 641.2 L1323.3 631.9Z" fill="url(#g26)"/><path d="M546.4 739.1 L539.3 741.0 L532.1 742.8 L524.9 744.4 L517.5 745.9 L510.1 747.1 L502.6 748.3 L495.0 749.2 L487.4 750.1 L479.7 750.7 L472.0 751.2 L464.3 751.5 L456.6 751.7 L448.8 751.6 L441.1 751.5 L433.4 751.1 L425.7 750.6 L418.0 750.0 L410.4 749.1 L402.8 748.1 L395.3 747.0 L387.9 745.7 L380.6 744.2 L373.3 742.6 L366.1 740.8 L359.1 738.9 L352.2 736.8 L345.3 734.6 L338.7 732.2 L332.1 729.7 L325.8 727.1 L319.5 724.3 L313.5 721.4 L307.6 718.3 L301.9 715.2 L296.4 711.9 L291.1 708.5 L285.9 705.0 L281.0 701.4 L276.3 697.7 L271.9 693.8 L267.6 689.9 L263.6 685.9 L259.8 681.9 L256.2 677.7 L252.9 673.5 L249.9 669.2 L247.1 664.8 L244.5 660.4 L242.3 656.0 L240.2 651.4 L238.5 646.9 L237.0 642.3 L235.8 637.7 L234.8 633.0 L234.1 628.4 L233.7 623.7 L233.6 619.1 L233.6 680.7 L233.7 685.3 L234.1 690.0 L234.8 694.7 L235.8 699.3 L237.0 703.9 L238.5 708.5 L240.2 713.1 L242.3 717.6 L244.5 722.0 L247.1 726.4 L249.9 730.8 L252.9 735.1 L256.2 739.3 L259.8 743.5 L263.6 747.6 L267.6 751.6 L271.9 755.5 L276.3 759.3 L281.0 763.0 L285.9 766.6 L291.1 770.1 L296.4 773.5 L301.9 776.8 L307.6 779.9 L313.5 783.0 L319.5 785.9 L325.8 788.7 L332.1 791.3 L338.7 793.8 L345.3 796.2 L352.2 798.4 L359.1 800.5 L366.1 802.4 L373.3 804.2 L380.6 805.8 L387.9 807.3 L395.3 808.6 L402.8 809.8 L410.4 810.8 L418.0 811.6 L425.7 812.2 L433.4 812.8 L441.1 813.1 L448.8 813.3 L456.6 813.3 L464.3 813.1 L472.0 812.8 L479.7 812.3 L487.4 811.7 L495.0 810.9 L502.6 809.9 L510.1 808.8 L517.5 807.5 L524.9 806.0 L532.1 804.4 L539.3 802.7 L546.4 800.7Z" fill="url(#g27)"/><path d="M467.6 486.9 L472.7 478.0 L478.3 469.3 L484.5 460.7 L491.1 452.3 L498.2 444.0 L505.8 435.8 L513.9 427.8 L522.4 420.0 L531.4 412.4 L540.8 405.0 L550.7 397.8 L561.0 390.8 L571.6 384.0 L582.7 377.5 L594.1 371.2 L605.9 365.1 L618.1 359.3 L630.5 353.8 L643.3 348.5 L656.4 343.5 L669.8 338.8 L683.4 334.4 L697.3 330.2 L711.4 326.4 L725.8 322.9 L740.3 319.7 L755.0 316.7 L769.9 314.2 L784.9 311.9 L800.1 309.9 L815.3 308.3 L830.7 307.0 L846.1 306.0 L861.5 305.4 L877.0 305.0 L892.5 305.1 L907.9 305.4 L923.4 306.1 L938.8 307.1 L954.1 308.4 L969.4 310.1 L984.5 312.0 L999.5 314.3 L1014.4 316.9 L1029.1 319.9 L1043.6 323.1 L1057.9 326.7 L1072.1 330.5 L1085.9 334.7 L1099.6 339.1 L1112.9 343.8 L1126.0 348.9 L1138.8 354.2 L1151.2 359.7 L1163.4 365.5 L1175.2 371.6 L1186.6 377.9 L1197.6 384.5 L1208.3 391.3 L1218.5 398.3 L1228.4 405.5 L1237.8 413.0 L1246.7 420.6 L1255.2 428.4 L1263.3 436.4 L1270.9 444.6 L1278.0 452.9 L1284.6 461.3 L1290.7 469.9 L1296.3 478.6 L1301.4 487.5 L1306.0 496.4 L1310.0 505.4 L1313.5 514.6 L1316.5 523.7 L1319.0 533.0 L1320.9 542.3 L1322.2 551.6 L1323.1 560.9 L1323.3 570.3 L1323.2 568.3 L1322.9 559.0 L1322.1 549.7 L1320.7 540.3 L1318.8 531.1 L1316.4 521.8 L1313.4 512.6 L1309.9 503.5 L1305.8 494.5 L1301.3 485.6 L1296.2 476.7 L1290.6 468.0 L1284.5 459.4 L1277.8 451.0 L1270.7 442.7 L1263.2 434.5 L1255.1 426.5 L1246.6 418.7 L1237.6 411.1 L1228.2 403.6 L1218.4 396.4 L1208.1 389.4 L1197.5 382.6 L1186.5 376.1 L1175.0 369.7 L1163.3 363.7 L1151.1 357.8 L1138.7 352.3 L1125.9 347.0 L1112.8 342.0 L1099.5 337.3 L1085.8 332.8 L1072.0 328.7 L1057.9 324.8 L1043.5 321.3 L1029.0 318.0 L1014.3 315.1 L999.4 312.5 L984.4 310.2 L969.3 308.2 L954.0 306.6 L938.7 305.2 L923.3 304.2 L907.9 303.6 L892.4 303.2 L876.9 303.2 L861.4 303.5 L846.0 304.2 L830.6 305.2 L815.3 306.5 L800.0 308.1 L784.9 310.0 L769.9 312.3 L755.0 314.9 L740.3 317.8 L725.8 321.1 L711.4 324.6 L697.3 328.4 L683.4 332.5 L669.8 337.0 L656.4 341.7 L643.3 346.7 L630.5 351.9 L618.1 357.5 L605.9 363.3 L594.2 369.3 L582.7 375.7 L571.7 382.2 L561.0 389.0 L550.7 396.0 L540.9 403.2 L531.5 410.6 L522.5 418.2 L514.0 426.0 L505.9 434.0 L498.3 442.1 L491.2 450.4 L484.6 458.9 L478.4 467.5 L472.8 476.2 L467.7 485.0Z" fill="url(#g30)" stroke="url(#g30)" stroke-width="0.7"/><path d="M1323.3 570.3 L1323.1 579.5 L1322.3 588.8 L1320.9 598.0 L1319.0 607.3 L1316.6 616.4 L1313.7 625.5 L1310.2 634.6 L1306.2 643.5 L1301.7 652.4 L1296.7 661.2 L1291.2 669.8 L1285.2 678.3 L1278.7 686.8 L1271.7 695.0 L1264.2 703.1 L1256.3 711.1 L1247.9 718.8 L1239.1 726.4 L1229.8 733.8 L1220.1 741.0 L1210.0 748.0 L1199.5 754.8 L1188.6 761.3 L1177.4 767.6 L1165.8 773.7 L1153.8 779.5 L1141.5 785.1 L1128.9 790.4 L1116.0 795.4 L1102.8 800.2 L1089.4 804.6 L1075.7 808.8 L1061.7 812.7 L1047.6 816.3 L1033.2 819.6 L1018.7 822.6 L1004.0 825.3 L989.1 827.6 L974.1 829.7 L959.0 831.4 L943.9 832.8 L928.6 833.9 L913.3 834.7 L898.0 835.1 L882.6 835.2 L867.2 835.0 L851.9 834.5 L836.6 833.7 L821.4 832.5 L806.2 831.0 L791.1 829.2 L776.2 827.0 L761.4 824.6 L746.7 821.8 L732.2 818.7 L717.9 815.4 L703.8 811.7 L689.9 807.7 L676.2 803.5 L662.8 798.9 L649.7 794.1 L636.9 789.0 L624.4 783.6 L612.1 778.0 L600.3 772.1 L588.7 766.0 L577.6 759.6 L566.8 753.0 L556.4 746.2 L546.4 739.1 L546.4 737.1 L556.4 744.2 L566.8 751.0 L577.6 757.6 L588.7 764.0 L600.3 770.1 L612.1 776.0 L624.4 781.6 L636.9 787.0 L649.7 792.1 L662.8 796.9 L676.2 801.5 L689.9 805.7 L703.8 809.7 L717.9 813.4 L732.2 816.7 L746.7 819.8 L761.3 822.6 L776.1 825.0 L791.1 827.2 L806.2 829.0 L821.3 830.5 L836.5 831.6 L851.8 832.5 L867.2 833.0 L882.5 833.2 L897.9 833.1 L913.2 832.7 L928.5 831.9 L943.8 830.8 L959.0 829.4 L974.0 827.7 L989.0 825.6 L1003.9 823.3 L1018.6 820.6 L1033.1 817.6 L1047.5 814.3 L1061.6 810.7 L1075.6 806.8 L1089.3 802.6 L1102.7 798.2 L1115.9 793.4 L1128.8 788.4 L1141.4 783.1 L1153.7 777.5 L1165.7 771.7 L1177.3 765.7 L1188.5 759.4 L1199.4 752.8 L1209.9 746.0 L1220.0 739.1 L1229.7 731.9 L1239.0 724.5 L1247.8 716.9 L1256.2 709.1 L1264.1 701.2 L1271.6 693.1 L1278.6 684.8 L1285.1 676.4 L1291.1 667.9 L1296.6 659.2 L1301.6 650.5 L1306.1 641.6 L1310.1 632.6 L1313.6 623.6 L1316.5 614.5 L1318.9 605.3 L1320.8 596.1 L1322.1 586.9 L1322.9 577.6 L1323.2 568.3Z" fill="url(#g31)" stroke="url(#g31)" stroke-width="0.7"/><path d="M233.6 619.1 L233.7 614.3 L234.1 609.6 L234.8 604.9 L235.8 600.2 L237.1 595.6 L238.6 591.0 L240.4 586.4 L242.4 581.8 L244.8 577.3 L247.3 572.9 L250.2 568.5 L253.3 564.1 L256.7 559.9 L260.3 555.7 L264.1 551.6 L268.2 547.6 L272.5 543.7 L277.1 539.8 L281.9 536.1 L286.9 532.5 L292.1 529.0 L297.5 525.6 L303.1 522.3 L308.9 519.1 L314.9 516.1 L321.0 513.2 L327.4 510.4 L333.8 507.8 L340.5 505.3 L347.2 503.0 L354.1 500.8 L361.2 498.7 L368.3 496.8 L375.6 495.1 L382.9 493.5 L390.4 492.1 L397.9 490.8 L405.5 489.7 L413.2 488.8 L420.9 488.0 L428.6 487.4 L436.4 486.9 L444.2 486.7 L452.0 486.6 L459.8 486.6 L467.6 486.9 L467.7 485.0 L459.9 484.8 L452.1 484.7 L444.3 484.8 L436.5 485.1 L428.7 485.5 L421.0 486.1 L413.3 486.9 L405.6 487.8 L398.0 488.9 L390.5 490.2 L383.1 491.6 L375.7 493.2 L368.5 494.9 L361.3 496.8 L354.3 498.9 L347.4 501.1 L340.6 503.4 L334.0 505.9 L327.5 508.5 L321.2 511.3 L315.0 514.2 L309.0 517.2 L303.2 520.4 L297.6 523.7 L292.2 527.1 L287.0 530.6 L282.0 534.2 L277.2 537.9 L272.7 541.8 L268.4 545.7 L264.3 549.7 L260.4 553.8 L256.8 558.0 L253.4 562.2 L250.3 566.6 L247.5 571.0 L244.9 575.4 L242.6 579.9 L240.5 584.5 L238.7 589.0 L237.2 593.7 L235.9 598.3 L235.0 603.0 L234.3 607.7 L233.9 612.4 L233.7 617.1Z" fill="url(#g32)" stroke="url(#g32)" stroke-width="0.7"/><path d="M546.4 739.1 L539.3 741.0 L532.1 742.8 L524.9 744.4 L517.5 745.9 L510.1 747.1 L502.6 748.3 L495.0 749.2 L487.4 750.1 L479.7 750.7 L472.0 751.2 L464.3 751.5 L456.6 751.7 L448.8 751.6 L441.1 751.5 L433.4 751.1 L425.7 750.6 L418.0 750.0 L410.4 749.1 L402.8 748.1 L395.3 747.0 L387.9 745.7 L380.6 744.2 L373.3 742.6 L366.1 740.8 L359.1 738.9 L352.2 736.8 L345.3 734.6 L338.7 732.2 L332.1 729.7 L325.8 727.1 L319.5 724.3 L313.5 721.4 L307.6 718.3 L301.9 715.2 L296.4 711.9 L291.1 708.5 L285.9 705.0 L281.0 701.4 L276.3 697.7 L271.9 693.8 L267.6 689.9 L263.6 685.9 L259.8 681.9 L256.2 677.7 L252.9 673.5 L249.9 669.2 L247.1 664.8 L244.5 660.4 L242.3 656.0 L240.2 651.4 L238.5 646.9 L237.0 642.3 L235.8 637.7 L234.8 633.0 L234.1 628.4 L233.7 623.7 L233.6 619.1 L233.7 617.1 L233.9 621.8 L234.3 626.5 L235.0 631.1 L235.9 635.8 L237.1 640.4 L238.6 645.0 L240.4 649.5 L242.4 654.0 L244.7 658.5 L247.2 662.9 L250.0 667.2 L253.1 671.5 L256.4 675.8 L259.9 679.9 L263.7 684.0 L267.7 688.0 L272.0 691.9 L276.5 695.7 L281.2 699.4 L286.1 703.0 L291.2 706.5 L296.5 709.9 L302.0 713.2 L307.7 716.4 L313.6 719.4 L319.7 722.3 L325.9 725.1 L332.3 727.7 L338.8 730.2 L345.5 732.6 L352.3 734.8 L359.2 736.9 L366.2 738.8 L373.4 740.6 L380.7 742.2 L388.0 743.7 L395.4 745.0 L402.9 746.2 L410.5 747.1 L418.1 748.0 L425.8 748.6 L433.5 749.1 L441.2 749.5 L448.9 749.6 L456.6 749.7 L464.4 749.5 L472.1 749.2 L479.8 748.7 L487.4 748.0 L495.1 747.2 L502.6 746.3 L510.1 745.1 L517.6 743.8 L524.9 742.4 L532.2 740.8 L539.3 739.0 L546.4 737.1Z" fill="url(#g33)" stroke="url(#g33)" stroke-width="0.7"/><path d="M467.7 485.0 L472.8 476.2 L478.4 467.5 L484.6 458.9 L491.2 450.4 L498.3 442.1 L505.9 434.0 L514.0 426.0 L522.5 418.2 L531.5 410.6 L540.9 403.2 L550.7 396.0 L561.0 389.0 L571.7 382.2 L582.7 375.7 L594.2 369.3 L605.9 363.3 L618.1 357.5 L630.5 351.9 L643.3 346.7 L656.4 341.7 L669.8 337.0 L683.4 332.5 L697.3 328.4 L711.4 324.6 L725.8 321.1 L740.3 317.8 L755.0 314.9 L769.9 312.3 L784.9 310.0 L800.0 308.1 L815.3 306.5 L830.6 305.2 L846.0 304.2 L861.4 303.5 L876.9 303.2 L892.4 303.2 L907.9 303.6 L923.3 304.2 L938.7 305.2 L954.0 306.6 L969.3 308.2 L984.4 310.2 L999.4 312.5 L1014.3 315.1 L1029.0 318.0 L1043.5 321.3 L1057.9 324.8 L1072.0 328.7 L1085.8 332.8 L1099.5 337.3 L1112.8 342.0 L1125.9 347.0 L1138.7 352.3 L1151.1 357.8 L1163.3 363.7 L1175.0 369.7 L1186.5 376.1 L1197.5 382.6 L1208.1 389.4 L1218.4 396.4 L1228.2 403.6 L1237.6 411.1 L1246.6 418.7 L1255.1 426.5 L1263.2 434.5 L1270.7 442.7 L1277.8 451.0 L1284.5 459.4 L1290.6 468.0 L1296.2 476.7 L1301.3 485.6 L1305.8 494.5 L1309.9 503.5 L1313.4 512.6 L1316.4 521.8 L1318.8 531.1 L1320.7 540.3 L1322.1 549.7 L1322.9 559.0 L1323.2 568.3 L1322.8 566.4 L1322.5 557.1 L1321.7 547.8 L1320.3 538.5 L1318.4 529.2 L1316.0 520.0 L1313.0 510.8 L1309.5 501.7 L1305.4 492.7 L1300.9 483.7 L1295.8 474.9 L1290.2 466.2 L1284.1 457.6 L1277.5 449.2 L1270.4 440.8 L1262.8 432.7 L1254.7 424.7 L1246.2 416.9 L1237.3 409.3 L1227.9 401.9 L1218.0 394.6 L1207.8 387.6 L1197.1 380.8 L1186.1 374.3 L1174.7 368.0 L1162.9 361.9 L1150.8 356.1 L1138.4 350.6 L1125.6 345.3 L1112.5 340.3 L1099.2 335.5 L1085.5 331.1 L1071.7 327.0 L1057.6 323.1 L1043.3 319.6 L1028.7 316.3 L1014.0 313.4 L999.2 310.8 L984.2 308.5 L969.1 306.5 L953.8 304.9 L938.5 303.6 L923.1 302.6 L907.7 301.9 L892.2 301.6 L876.8 301.6 L861.3 301.9 L845.9 302.5 L830.5 303.5 L815.1 304.8 L799.9 306.5 L784.8 308.4 L769.8 310.7 L754.9 313.3 L740.2 316.2 L725.7 319.4 L711.4 323.0 L697.3 326.8 L683.4 330.9 L669.8 335.4 L656.4 340.1 L643.4 345.1 L630.6 350.3 L618.1 355.9 L606.0 361.7 L594.2 367.7 L582.8 374.0 L571.8 380.6 L561.1 387.4 L550.9 394.4 L541.0 401.6 L531.6 409.0 L522.7 416.6 L514.2 424.4 L506.1 432.4 L498.5 440.5 L491.4 448.8 L484.8 457.3 L478.7 465.9 L473.1 474.6 L468.0 483.4Z" fill="url(#g34)" stroke="url(#g34)" stroke-width="0.7"/><path d="M1323.2 568.3 L1322.9 577.6 L1322.1 586.9 L1320.8 596.1 L1318.9 605.3 L1316.5 614.5 L1313.6 623.6 L1310.1 632.6 L1306.1 641.6 L1301.6 650.5 L1296.6 659.2 L1291.1 667.9 L1285.1 676.4 L1278.6 684.8 L1271.6 693.1 L1264.1 701.2 L1256.2 709.1 L1247.8 716.9 L1239.0 724.5 L1229.7 731.9 L1220.0 739.1 L1209.9 746.0 L1199.4 752.8 L1188.5 759.4 L1177.3 765.7 L1165.7 771.7 L1153.7 777.5 L1141.4 783.1 L1128.8 788.4 L1115.9 793.4 L1102.7 798.2 L1089.3 802.6 L1075.6 806.8 L1061.6 810.7 L1047.5 814.3 L1033.1 817.6 L1018.6 820.6 L1003.9 823.3 L989.0 825.6 L974.0 827.7 L959.0 829.4 L943.8 830.8 L928.5 831.9 L913.2 832.7 L897.9 833.1 L882.5 833.2 L867.2 833.0 L851.8 832.5 L836.5 831.6 L821.3 830.5 L806.2 829.0 L791.1 827.2 L776.1 825.0 L761.3 822.6 L746.7 819.8 L732.2 816.7 L717.9 813.4 L703.8 809.7 L689.9 805.7 L676.2 801.5 L662.8 796.9 L649.7 792.1 L636.9 787.0 L624.4 781.6 L612.1 776.0 L600.3 770.1 L588.7 764.0 L577.6 757.6 L566.8 751.0 L556.4 744.2 L546.4 737.1 L546.5 734.9 L556.5 742.0 L566.9 748.8 L577.6 755.4 L588.8 761.8 L600.3 767.9 L612.2 773.8 L624.4 779.4 L636.9 784.8 L649.7 789.9 L662.8 794.7 L676.2 799.3 L689.8 803.5 L703.7 807.5 L717.8 811.2 L732.1 814.6 L746.6 817.6 L761.2 820.4 L776.0 822.8 L791.0 825.0 L806.0 826.8 L821.2 828.3 L836.4 829.5 L851.7 830.4 L867.0 830.9 L882.3 831.1 L897.7 831.0 L913.0 830.5 L928.3 829.8 L943.5 828.7 L958.7 827.3 L973.8 825.6 L988.8 823.5 L1003.6 821.2 L1018.3 818.5 L1032.8 815.5 L1047.2 812.2 L1061.3 808.6 L1075.3 804.7 L1089.0 800.6 L1102.4 796.1 L1115.6 791.4 L1128.5 786.3 L1141.1 781.0 L1153.4 775.5 L1165.3 769.7 L1176.9 763.6 L1188.2 757.3 L1199.1 750.8 L1209.5 744.0 L1219.6 737.0 L1229.3 729.9 L1238.6 722.5 L1247.4 714.9 L1255.8 707.1 L1263.7 699.2 L1271.2 691.1 L1278.2 682.8 L1284.7 674.4 L1290.7 665.9 L1296.2 657.3 L1301.2 648.5 L1305.7 639.6 L1309.7 630.7 L1313.2 621.7 L1316.1 612.6 L1318.5 603.4 L1320.4 594.2 L1321.7 585.0 L1322.5 575.7 L1322.8 566.4Z" fill="url(#g35)" stroke="url(#g35)" stroke-width="0.7"/><path d="M233.7 617.1 L233.9 612.4 L234.3 607.7 L235.0 603.0 L235.9 598.3 L237.2 593.7 L238.7 589.0 L240.5 584.5 L242.6 579.9 L244.9 575.4 L247.5 571.0 L250.3 566.6 L253.4 562.2 L256.8 558.0 L260.4 553.8 L264.3 549.7 L268.4 545.7 L272.7 541.8 L277.2 537.9 L282.0 534.2 L287.0 530.6 L292.2 527.1 L297.6 523.7 L303.2 520.4 L309.0 517.2 L315.0 514.2 L321.2 511.3 L327.5 508.5 L334.0 505.9 L340.6 503.4 L347.4 501.1 L354.3 498.9 L361.3 496.8 L368.5 494.9 L375.7 493.2 L383.1 491.6 L390.5 490.2 L398.0 488.9 L405.6 487.8 L413.3 486.9 L421.0 486.1 L428.7 485.5 L436.5 485.1 L444.3 484.8 L452.1 484.7 L459.9 484.8 L467.7 485.0 L468.0 483.4 L460.2 483.1 L452.4 483.1 L444.6 483.2 L436.8 483.4 L429.0 483.9 L421.3 484.5 L413.6 485.2 L406.0 486.1 L398.4 487.2 L390.9 488.5 L383.4 489.9 L376.1 491.5 L368.8 493.2 L361.7 495.1 L354.6 497.2 L347.7 499.3 L341.0 501.7 L334.3 504.2 L327.9 506.8 L321.5 509.5 L315.4 512.4 L309.4 515.5 L303.6 518.6 L298.0 521.9 L292.6 525.3 L287.4 528.8 L282.4 532.4 L277.6 536.1 L273.1 540.0 L268.8 543.9 L264.7 547.9 L260.8 552.0 L257.2 556.2 L253.8 560.4 L250.7 564.7 L247.9 569.1 L245.3 573.6 L243.0 578.1 L240.9 582.6 L239.1 587.2 L237.6 591.8 L236.3 596.5 L235.4 601.1 L234.7 605.8 L234.3 610.5 L234.1 615.2Z" fill="url(#g36)" stroke="url(#g36)" stroke-width="0.7"/><path d="M546.4 737.1 L539.3 739.0 L532.2 740.8 L524.9 742.4 L517.6 743.8 L510.1 745.1 L502.6 746.3 L495.1 747.2 L487.4 748.0 L479.8 748.7 L472.1 749.2 L464.4 749.5 L456.6 749.7 L448.9 749.6 L441.2 749.5 L433.5 749.1 L425.8 748.6 L418.1 748.0 L410.5 747.1 L402.9 746.2 L395.4 745.0 L388.0 743.7 L380.7 742.2 L373.4 740.6 L366.2 738.8 L359.2 736.9 L352.3 734.8 L345.5 732.6 L338.8 730.2 L332.3 727.7 L325.9 725.1 L319.7 722.3 L313.6 719.4 L307.7 716.4 L302.0 713.2 L296.5 709.9 L291.2 706.5 L286.1 703.0 L281.2 699.4 L276.5 695.7 L272.0 691.9 L267.7 688.0 L263.7 684.0 L259.9 679.9 L256.4 675.8 L253.1 671.5 L250.0 667.2 L247.2 662.9 L244.7 658.5 L242.4 654.0 L240.4 649.5 L238.6 645.0 L237.1 640.4 L235.9 635.8 L235.0 631.1 L234.3 626.5 L233.9 621.8 L233.7 617.1 L234.1 615.2 L234.3 619.9 L234.7 624.6 L235.4 629.2 L236.3 633.8 L237.5 638.4 L239.0 643.0 L240.8 647.6 L242.8 652.1 L245.1 656.5 L247.6 660.9 L250.4 665.3 L253.5 669.6 L256.8 673.8 L260.3 678.0 L264.1 682.0 L268.1 686.0 L272.4 689.9 L276.8 693.7 L281.5 697.4 L286.4 701.0 L291.6 704.5 L296.9 707.9 L302.4 711.2 L308.1 714.3 L314.0 717.4 L320.0 720.3 L326.2 723.0 L332.6 725.7 L339.1 728.2 L345.8 730.5 L352.6 732.8 L359.5 734.8 L366.6 736.8 L373.7 738.5 L381.0 740.1 L388.3 741.6 L395.7 742.9 L403.2 744.0 L410.8 745.0 L418.4 745.9 L426.0 746.5 L433.7 747.0 L441.4 747.3 L449.1 747.5 L456.9 747.5 L464.6 747.4 L472.3 747.0 L480.0 746.5 L487.6 745.9 L495.2 745.1 L502.8 744.1 L510.3 743.0 L517.7 741.7 L525.1 740.2 L532.3 738.6 L539.5 736.8 L546.5 734.9Z" fill="url(#g37)" stroke="url(#g37)" stroke-width="0.7"/><path d="M468.0 483.4 L473.1 474.6 L478.7 465.9 L484.8 457.3 L491.4 448.8 L498.5 440.5 L506.1 432.4 L514.2 424.4 L522.7 416.6 L531.6 409.0 L541.0 401.6 L550.9 394.4 L561.1 387.4 L571.8 380.6 L582.8 374.0 L594.2 367.7 L606.0 361.7 L618.1 355.9 L630.6 350.3 L643.4 345.1 L656.4 340.1 L669.8 335.4 L683.4 330.9 L697.3 326.8 L711.4 323.0 L725.7 319.4 L740.2 316.2 L754.9 313.3 L769.8 310.7 L784.8 308.4 L799.9 306.5 L815.1 304.8 L830.5 303.5 L845.9 302.5 L861.3 301.9 L876.8 301.6 L892.2 301.6 L907.7 301.9 L923.1 302.6 L938.5 303.6 L953.8 304.9 L969.1 306.5 L984.2 308.5 L999.2 310.8 L1014.0 313.4 L1028.7 316.3 L1043.3 319.6 L1057.6 323.1 L1071.7 327.0 L1085.5 331.1 L1099.2 335.5 L1112.5 340.3 L1125.6 345.3 L1138.4 350.6 L1150.8 356.1 L1162.9 361.9 L1174.7 368.0 L1186.1 374.3 L1197.1 380.8 L1207.8 387.6 L1218.0 394.6 L1227.9 401.9 L1237.3 409.3 L1246.2 416.9 L1254.7 424.7 L1262.8 432.7 L1270.4 440.8 L1277.5 449.2 L1284.1 457.6 L1290.2 466.2 L1295.8 474.9 L1300.9 483.7 L1305.4 492.7 L1309.5 501.7 L1313.0 510.8 L1316.0 520.0 L1318.4 529.2 L1320.3 538.5 L1321.7 547.8 L1322.5 557.1 L1322.8 566.4 L1322.1 564.6 L1321.9 555.3 L1321.0 545.9 L1319.7 536.6 L1317.8 527.4 L1315.3 518.2 L1312.3 509.0 L1308.8 499.9 L1304.8 490.9 L1300.2 482.0 L1295.1 473.2 L1289.5 464.5 L1283.4 455.9 L1276.8 447.4 L1269.7 439.1 L1262.2 431.0 L1254.1 423.0 L1245.6 415.2 L1236.7 407.6 L1227.3 400.2 L1217.4 393.0 L1207.2 386.0 L1196.6 379.2 L1185.5 372.7 L1174.1 366.4 L1162.4 360.3 L1150.3 354.5 L1137.8 349.0 L1125.1 343.7 L1112.0 338.7 L1098.7 334.0 L1085.1 329.6 L1071.2 325.4 L1057.1 321.6 L1042.8 318.0 L1028.3 314.8 L1013.6 311.9 L998.8 309.3 L983.8 307.0 L968.7 305.0 L953.5 303.4 L938.2 302.1 L922.8 301.1 L907.4 300.4 L891.9 300.1 L876.5 300.1 L861.0 300.4 L845.6 301.1 L830.2 302.1 L814.9 303.4 L799.7 305.0 L784.6 307.0 L769.6 309.3 L754.8 311.9 L740.1 314.8 L725.6 318.0 L711.3 321.6 L697.2 325.4 L683.4 329.5 L669.8 334.0 L656.4 338.7 L643.4 343.7 L630.6 349.0 L618.2 354.5 L606.1 360.3 L594.4 366.4 L583.0 372.7 L571.9 379.2 L561.3 386.0 L551.1 393.0 L541.3 400.2 L531.9 407.6 L523.0 415.2 L514.5 423.0 L506.4 431.0 L498.9 439.1 L491.8 447.4 L485.2 455.9 L479.1 464.4 L473.5 473.1 L468.5 482.0Z" fill="url(#g38)" stroke="url(#g38)" stroke-width="0.7"/><path d="M1322.8 566.4 L1322.5 575.7 L1321.7 585.0 L1320.4 594.2 L1318.5 603.4 L1316.1 612.6 L1313.2 621.7 L1309.7 630.7 L1305.7 639.6 L1301.2 648.5 L1296.2 657.3 L1290.7 665.9 L1284.7 674.4 L1278.2 682.8 L1271.2 691.1 L1263.7 699.2 L1255.8 707.1 L1247.4 714.9 L1238.6 722.5 L1229.3 729.9 L1219.6 737.0 L1209.5 744.0 L1199.1 750.8 L1188.2 757.3 L1176.9 763.6 L1165.3 769.7 L1153.4 775.5 L1141.1 781.0 L1128.5 786.3 L1115.6 791.4 L1102.4 796.1 L1089.0 800.6 L1075.3 804.7 L1061.3 808.6 L1047.2 812.2 L1032.8 815.5 L1018.3 818.5 L1003.6 821.2 L988.8 823.5 L973.8 825.6 L958.7 827.3 L943.5 828.7 L928.3 829.8 L913.0 830.5 L897.7 831.0 L882.3 831.1 L867.0 830.9 L851.7 830.4 L836.4 829.5 L821.2 828.3 L806.0 826.8 L791.0 825.0 L776.0 822.8 L761.2 820.4 L746.6 817.6 L732.1 814.6 L717.8 811.2 L703.7 807.5 L689.8 803.5 L676.2 799.3 L662.8 794.7 L649.7 789.9 L636.9 784.8 L624.4 779.4 L612.2 773.8 L600.3 767.9 L588.8 761.8 L577.6 755.4 L566.9 748.8 L556.5 742.0 L546.5 734.9 L546.7 732.6 L556.6 739.6 L567.0 746.4 L577.8 753.0 L588.9 759.4 L600.4 765.6 L612.2 771.4 L624.4 777.1 L636.9 782.4 L649.7 787.6 L662.8 792.4 L676.1 796.9 L689.7 801.2 L703.6 805.2 L717.7 808.9 L731.9 812.2 L746.4 815.3 L761.0 818.1 L775.8 820.6 L790.7 822.7 L805.8 824.5 L820.9 826.0 L836.1 827.2 L851.4 828.1 L866.7 828.6 L882.0 828.8 L897.3 828.7 L912.6 828.3 L927.9 827.6 L943.1 826.5 L958.3 825.1 L973.4 823.4 L988.3 821.3 L1003.2 819.0 L1017.8 816.3 L1032.4 813.3 L1046.7 810.1 L1060.8 806.5 L1074.8 802.6 L1088.4 798.4 L1101.9 794.0 L1115.0 789.2 L1127.9 784.2 L1140.5 778.9 L1152.8 773.4 L1164.7 767.6 L1176.3 761.5 L1187.6 755.3 L1198.5 748.7 L1208.9 742.0 L1219.0 735.0 L1228.7 727.8 L1238.0 720.4 L1246.8 712.9 L1255.2 705.1 L1263.1 697.2 L1270.5 689.1 L1277.5 680.9 L1284.0 672.5 L1290.0 664.0 L1295.6 655.3 L1300.6 646.6 L1305.1 637.7 L1309.0 628.8 L1312.5 619.8 L1315.4 610.7 L1317.8 601.5 L1319.7 592.3 L1321.1 583.1 L1321.9 573.9 L1322.1 564.6Z" fill="url(#g39)" stroke="url(#g39)" stroke-width="0.7"/><path d="M234.1 615.2 L234.3 610.5 L234.7 605.8 L235.4 601.1 L236.3 596.5 L237.6 591.8 L239.1 587.2 L240.9 582.6 L243.0 578.1 L245.3 573.6 L247.9 569.1 L250.7 564.7 L253.8 560.4 L257.2 556.2 L260.8 552.0 L264.7 547.9 L268.8 543.9 L273.1 540.0 L277.6 536.1 L282.4 532.4 L287.4 528.8 L292.6 525.3 L298.0 521.9 L303.6 518.6 L309.4 515.5 L315.4 512.4 L321.5 509.5 L327.9 506.8 L334.3 504.2 L341.0 501.7 L347.7 499.3 L354.6 497.2 L361.7 495.1 L368.8 493.2 L376.1 491.5 L383.4 489.9 L390.9 488.5 L398.4 487.2 L406.0 486.1 L413.6 485.2 L421.3 484.5 L429.0 483.9 L436.8 483.4 L444.6 483.2 L452.4 483.1 L460.2 483.1 L468.0 483.4 L468.5 482.0 L460.8 481.7 L453.2 481.6 L445.6 481.7 L438.0 481.9 L430.4 482.3 L422.8 482.9 L415.3 483.6 L407.8 484.5 L400.4 485.5 L393.0 486.7 L385.7 488.0 L378.5 489.5 L371.4 491.2 L364.4 493.0 L357.5 494.9 L350.7 497.0 L344.0 499.2 L337.5 501.6 L331.1 504.1 L324.8 506.7 L318.8 509.5 L312.8 512.4 L307.1 515.4 L301.5 518.5 L296.1 521.8 L290.9 525.2 L285.9 528.6 L281.1 532.2 L276.5 535.9 L272.1 539.6 L268.0 543.5 L264.1 547.5 L260.4 551.5 L256.9 555.6 L253.7 559.7 L250.7 564.0 L248.0 568.3 L245.5 572.6 L243.3 577.0 L241.3 581.5 L239.6 586.0 L238.1 590.5 L236.9 595.0 L236.0 599.6 L235.3 604.2 L234.9 608.8 L234.8 613.4Z" fill="url(#g40)" stroke="url(#g40)" stroke-width="0.7"/><path d="M546.5 734.9 L539.5 736.8 L532.3 738.6 L525.1 740.2 L517.7 741.7 L510.3 743.0 L502.8 744.1 L495.2 745.1 L487.6 745.9 L480.0 746.5 L472.3 747.0 L464.6 747.4 L456.9 747.5 L449.1 747.5 L441.4 747.3 L433.7 747.0 L426.0 746.5 L418.4 745.9 L410.8 745.0 L403.2 744.0 L395.7 742.9 L388.3 741.6 L381.0 740.1 L373.7 738.5 L366.6 736.8 L359.5 734.8 L352.6 732.8 L345.8 730.5 L339.1 728.2 L332.6 725.7 L326.2 723.0 L320.0 720.3 L314.0 717.4 L308.1 714.3 L302.4 711.2 L296.9 707.9 L291.6 704.5 L286.4 701.0 L281.5 697.4 L276.8 693.7 L272.4 689.9 L268.1 686.0 L264.1 682.0 L260.3 678.0 L256.8 673.8 L253.5 669.6 L250.4 665.3 L247.6 660.9 L245.1 656.5 L242.8 652.1 L240.8 647.6 L239.0 643.0 L237.5 638.4 L236.3 633.8 L235.4 629.2 L234.7 624.6 L234.3 619.9 L234.1 615.2 L234.8 613.4 L234.9 618.0 L235.3 622.7 L236.0 627.3 L237.0 632.0 L238.2 636.6 L239.7 641.1 L241.4 645.7 L243.5 650.2 L245.7 654.6 L248.3 659.0 L251.1 663.3 L254.1 667.6 L257.4 671.8 L261.0 676.0 L264.7 680.0 L268.8 684.0 L273.0 687.9 L277.5 691.7 L282.2 695.4 L287.1 699.0 L292.2 702.5 L297.5 705.9 L303.0 709.1 L308.7 712.3 L314.6 715.3 L320.6 718.2 L326.8 721.0 L333.2 723.6 L339.7 726.1 L346.4 728.4 L353.2 730.6 L360.1 732.7 L367.1 734.6 L374.3 736.4 L381.5 738.0 L388.8 739.4 L396.2 740.7 L403.7 741.9 L411.3 742.8 L418.9 743.6 L426.5 744.3 L434.2 744.8 L441.9 745.1 L449.6 745.3 L457.3 745.3 L465.0 745.1 L472.7 744.8 L480.3 744.3 L488.0 743.6 L495.6 742.8 L503.1 741.8 L510.6 740.6 L518.0 739.3 L525.3 737.9 L532.5 736.3 L539.7 734.5 L546.7 732.6Z" fill="url(#g41)" stroke="url(#g41)" stroke-width="0.7"/><path d="M468.5 482.0 L473.5 473.1 L479.1 464.4 L485.2 455.9 L491.8 447.4 L498.9 439.1 L506.4 431.0 L514.5 423.0 L523.0 415.2 L531.9 407.6 L541.3 400.2 L551.1 393.0 L561.3 386.0 L571.9 379.2 L583.0 372.7 L594.4 366.4 L606.1 360.3 L618.2 354.5 L630.6 349.0 L643.4 343.7 L656.4 338.7 L669.8 334.0 L683.4 329.5 L697.2 325.4 L711.3 321.6 L725.6 318.0 L740.1 314.8 L754.8 311.9 L769.6 309.3 L784.6 307.0 L799.7 305.0 L814.9 303.4 L830.2 302.1 L845.6 301.1 L861.0 300.4 L876.5 300.1 L891.9 300.1 L907.4 300.4 L922.8 301.1 L938.2 302.1 L953.5 303.4 L968.7 305.0 L983.8 307.0 L998.8 309.3 L1013.6 311.9 L1028.3 314.8 L1042.8 318.0 L1057.1 321.6 L1071.2 325.4 L1085.1 329.6 L1098.7 334.0 L1112.0 338.7 L1125.1 343.7 L1137.8 349.0 L1150.3 354.5 L1162.4 360.3 L1174.1 366.4 L1185.5 372.7 L1196.6 379.2 L1207.2 386.0 L1217.4 393.0 L1227.3 400.2 L1236.7 407.6 L1245.6 415.2 L1254.1 423.0 L1262.2 431.0 L1269.7 439.1 L1276.8 447.4 L1283.4 455.9 L1289.5 464.5 L1295.1 473.2 L1300.2 482.0 L1304.8 490.9 L1308.8 499.9 L1312.3 509.0 L1315.3 518.2 L1317.8 527.4 L1319.7 536.6 L1321.0 545.9 L1321.9 555.3 L1322.1 564.6 L1321.2 562.8 L1320.9 553.5 L1320.1 544.2 L1318.8 534.9 L1316.9 525.7 L1314.4 516.5 L1311.4 507.3 L1307.9 498.2 L1303.9 489.2 L1299.3 480.3 L1294.2 471.5 L1288.6 462.8 L1282.5 454.3 L1275.9 445.8 L1268.9 437.6 L1261.3 429.4 L1253.3 421.5 L1244.8 413.7 L1235.8 406.1 L1226.4 398.7 L1216.6 391.5 L1206.4 384.5 L1195.8 377.7 L1184.8 371.2 L1173.4 364.9 L1161.6 358.9 L1149.5 353.1 L1137.1 347.6 L1124.4 342.3 L1111.3 337.3 L1098.0 332.6 L1084.4 328.2 L1070.6 324.1 L1056.5 320.2 L1042.2 316.7 L1027.7 313.5 L1013.0 310.6 L998.2 308.0 L983.2 305.7 L968.2 303.8 L953.0 302.1 L937.7 300.8 L922.3 299.9 L906.9 299.2 L891.5 298.9 L876.1 298.9 L860.7 299.2 L845.3 299.9 L829.9 300.9 L814.7 302.2 L799.5 303.9 L784.4 305.8 L769.4 308.1 L754.6 310.7 L740.0 313.7 L725.5 316.9 L711.2 320.4 L697.2 324.3 L683.3 328.4 L669.8 332.8 L656.5 337.6 L643.4 342.6 L630.7 347.8 L618.3 353.4 L606.2 359.2 L594.5 365.2 L583.2 371.5 L572.2 378.1 L561.6 384.9 L551.4 391.8 L541.6 399.1 L532.3 406.5 L523.4 414.1 L514.9 421.9 L506.9 429.8 L499.4 438.0 L492.3 446.3 L485.8 454.7 L479.7 463.3 L474.2 472.0 L469.1 480.8Z" fill="url(#g42)" stroke="url(#g42)" stroke-width="0.7"/><path d="M1322.1 564.6 L1321.9 573.9 L1321.1 583.1 L1319.7 592.3 L1317.8 601.5 L1315.4 610.7 L1312.5 619.8 L1309.0 628.8 L1305.1 637.7 L1300.6 646.6 L1295.6 655.3 L1290.0 664.0 L1284.0 672.5 L1277.5 680.9 L1270.5 689.1 L1263.1 697.2 L1255.2 705.1 L1246.8 712.9 L1238.0 720.4 L1228.7 727.8 L1219.0 735.0 L1208.9 742.0 L1198.5 748.7 L1187.6 755.3 L1176.3 761.5 L1164.7 767.6 L1152.8 773.4 L1140.5 778.9 L1127.9 784.2 L1115.0 789.2 L1101.9 794.0 L1088.4 798.4 L1074.8 802.6 L1060.8 806.5 L1046.7 810.1 L1032.4 813.3 L1017.8 816.3 L1003.2 819.0 L988.3 821.3 L973.4 823.4 L958.3 825.1 L943.1 826.5 L927.9 827.6 L912.6 828.3 L897.3 828.7 L882.0 828.8 L866.7 828.6 L851.4 828.1 L836.1 827.2 L820.9 826.0 L805.8 824.5 L790.7 822.7 L775.8 820.6 L761.0 818.1 L746.4 815.3 L731.9 812.2 L717.7 808.9 L703.6 805.2 L689.7 801.2 L676.1 796.9 L662.8 792.4 L649.7 787.6 L636.9 782.4 L624.4 777.1 L612.2 771.4 L600.4 765.6 L588.9 759.4 L577.8 753.0 L567.0 746.4 L556.6 739.6 L546.7 732.6 L546.9 730.1 L556.9 737.1 L567.2 744.0 L577.9 750.6 L589.0 757.0 L600.5 763.1 L612.3 769.0 L624.4 774.6 L636.9 780.0 L649.6 785.1 L662.7 789.9 L676.0 794.5 L689.6 798.8 L703.4 802.7 L717.5 806.4 L731.7 809.8 L746.2 812.9 L760.8 815.7 L775.5 818.2 L790.4 820.3 L805.4 822.1 L820.5 823.7 L835.7 824.9 L850.9 825.7 L866.2 826.3 L881.5 826.5 L896.8 826.4 L912.1 826.0 L927.4 825.2 L942.6 824.2 L957.7 822.8 L972.8 821.1 L987.7 819.1 L1002.5 816.7 L1017.2 814.1 L1031.7 811.1 L1046.0 807.8 L1060.1 804.3 L1074.1 800.4 L1087.7 796.3 L1101.1 791.8 L1114.3 787.1 L1127.2 782.1 L1139.8 776.8 L1152.0 771.3 L1164.0 765.5 L1175.5 759.5 L1186.8 753.2 L1197.6 746.7 L1208.1 739.9 L1218.2 733.0 L1227.9 725.8 L1237.1 718.4 L1245.9 710.9 L1254.3 703.1 L1262.2 695.2 L1269.7 687.1 L1276.6 678.9 L1283.1 670.5 L1289.1 662.0 L1294.6 653.4 L1299.7 644.7 L1304.1 635.8 L1308.1 626.9 L1311.6 617.9 L1314.5 608.8 L1316.9 599.7 L1318.8 590.5 L1320.1 581.3 L1320.9 572.1 L1321.2 562.8Z" fill="url(#g43)" stroke="url(#g43)" stroke-width="0.7"/><path d="M234.8 613.4 L234.9 608.8 L235.3 604.2 L236.0 599.6 L236.9 595.0 L238.1 590.5 L239.6 586.0 L241.3 581.5 L243.3 577.0 L245.5 572.6 L248.0 568.3 L250.7 564.0 L253.7 559.7 L256.9 555.6 L260.4 551.5 L264.1 547.5 L268.0 543.5 L272.1 539.6 L276.5 535.9 L281.1 532.2 L285.9 528.6 L290.9 525.2 L296.1 521.8 L301.5 518.5 L307.1 515.4 L312.8 512.4 L318.8 509.5 L324.8 506.7 L331.1 504.1 L337.5 501.6 L344.0 499.2 L350.7 497.0 L357.5 494.9 L364.4 493.0 L371.4 491.2 L378.5 489.5 L385.7 488.0 L393.0 486.7 L400.4 485.5 L407.8 484.5 L415.3 483.6 L422.8 482.9 L430.4 482.3 L438.0 481.9 L445.6 481.7 L453.2 481.6 L460.8 481.7 L468.5 482.0 L469.1 480.8 L461.5 480.5 L453.9 480.4 L446.3 480.5 L438.7 480.7 L431.1 481.1 L423.6 481.6 L416.1 482.3 L408.6 483.2 L401.2 484.2 L393.8 485.4 L386.5 486.7 L379.3 488.2 L372.2 489.8 L365.2 491.6 L358.3 493.5 L351.5 495.6 L344.9 497.8 L338.4 500.1 L332.0 502.6 L325.7 505.3 L319.6 508.0 L313.7 510.9 L308.0 513.9 L302.4 517.0 L297.0 520.3 L291.8 523.6 L286.8 527.1 L282.0 530.6 L277.4 534.3 L273.1 538.1 L268.9 541.9 L265.0 545.8 L261.3 549.8 L257.8 553.9 L254.6 558.1 L251.6 562.3 L248.9 566.6 L246.4 570.9 L244.2 575.3 L242.2 579.8 L240.5 584.2 L239.0 588.8 L237.8 593.3 L236.9 597.9 L236.3 602.4 L235.9 607.0 L235.7 611.6Z" fill="url(#g44)" stroke="url(#g44)" stroke-width="0.7"/><path d="M546.7 732.6 L539.7 734.5 L532.5 736.3 L525.3 737.9 L518.0 739.3 L510.6 740.6 L503.1 741.8 L495.6 742.8 L488.0 743.6 L480.3 744.3 L472.7 744.8 L465.0 745.1 L457.3 745.3 L449.6 745.3 L441.9 745.1 L434.2 744.8 L426.5 744.3 L418.9 743.6 L411.3 742.8 L403.7 741.9 L396.2 740.7 L388.8 739.4 L381.5 738.0 L374.3 736.4 L367.1 734.6 L360.1 732.7 L353.2 730.6 L346.4 728.4 L339.7 726.1 L333.2 723.6 L326.8 721.0 L320.6 718.2 L314.6 715.3 L308.7 712.3 L303.0 709.1 L297.5 705.9 L292.2 702.5 L287.1 699.0 L282.2 695.4 L277.5 691.7 L273.0 687.9 L268.8 684.0 L264.7 680.0 L261.0 676.0 L257.4 671.8 L254.1 667.6 L251.1 663.3 L248.3 659.0 L245.7 654.6 L243.5 650.2 L241.4 645.7 L239.7 641.1 L238.2 636.6 L237.0 632.0 L236.0 627.3 L235.3 622.7 L234.9 618.0 L234.8 613.4 L235.7 611.6 L235.9 616.3 L236.3 620.9 L236.9 625.5 L237.9 630.1 L239.1 634.7 L240.6 639.3 L242.4 643.8 L244.4 648.3 L246.7 652.7 L249.2 657.1 L252.0 661.4 L255.0 665.7 L258.3 669.9 L261.9 674.0 L265.6 678.1 L269.6 682.0 L273.9 685.9 L278.4 689.7 L283.0 693.4 L287.9 697.0 L293.0 700.5 L298.3 703.8 L303.8 707.1 L309.5 710.2 L315.4 713.2 L321.4 716.1 L327.6 718.8 L334.0 721.5 L340.5 723.9 L347.2 726.3 L353.9 728.5 L360.8 730.5 L367.9 732.4 L375.0 734.2 L382.2 735.8 L389.5 737.2 L396.9 738.5 L404.4 739.6 L411.9 740.6 L419.5 741.4 L427.1 742.0 L434.8 742.5 L442.4 742.8 L450.1 742.9 L457.8 742.9 L465.5 742.7 L473.2 742.4 L480.8 741.9 L488.4 741.2 L496.0 740.4 L503.5 739.4 L511.0 738.2 L518.3 736.9 L525.6 735.4 L532.8 733.8 L539.9 732.0 L546.9 730.1Z" fill="url(#g45)" stroke="url(#g45)" stroke-width="0.7"/><path d="M469.1 480.8 L474.2 472.0 L479.7 463.3 L485.8 454.7 L492.3 446.3 L499.4 438.0 L506.9 429.8 L514.9 421.9 L523.4 414.1 L532.3 406.5 L541.6 399.1 L551.4 391.8 L561.6 384.9 L572.2 378.1 L583.2 371.5 L594.5 365.2 L606.2 359.2 L618.3 353.4 L630.7 347.8 L643.4 342.6 L656.5 337.6 L669.8 332.8 L683.3 328.4 L697.2 324.3 L711.2 320.4 L725.5 316.9 L740.0 313.7 L754.6 310.7 L769.4 308.1 L784.4 305.8 L799.5 303.9 L814.7 302.2 L829.9 300.9 L845.3 299.9 L860.7 299.2 L876.1 298.9 L891.5 298.9 L906.9 299.2 L922.3 299.9 L937.7 300.8 L953.0 302.1 L968.2 303.8 L983.2 305.7 L998.2 308.0 L1013.0 310.6 L1027.7 313.5 L1042.2 316.7 L1056.5 320.2 L1070.6 324.1 L1084.4 328.2 L1098.0 332.6 L1111.3 337.3 L1124.4 342.3 L1137.1 347.6 L1149.5 353.1 L1161.6 358.9 L1173.4 364.9 L1184.8 371.2 L1195.8 377.7 L1206.4 384.5 L1216.6 391.5 L1226.4 398.7 L1235.8 406.1 L1244.8 413.7 L1253.3 421.5 L1261.3 429.4 L1268.9 437.6 L1275.9 445.8 L1282.5 454.3 L1288.6 462.8 L1294.2 471.5 L1299.3 480.3 L1303.9 489.2 L1307.9 498.2 L1311.4 507.3 L1314.4 516.5 L1316.9 525.7 L1318.8 534.9 L1320.1 544.2 L1320.9 553.5 L1321.2 562.8 L1320.0 561.1 L1319.8 551.9 L1319.0 542.8 L1317.7 533.6 L1315.8 524.5 L1313.4 515.4 L1310.5 506.4 L1307.1 497.5 L1303.2 488.6 L1298.7 479.8 L1293.8 471.1 L1288.3 462.5 L1282.4 454.1 L1275.9 445.7 L1269.0 437.5 L1261.6 429.5 L1253.8 421.6 L1245.5 413.9 L1236.8 406.4 L1227.6 399.1 L1218.0 391.9 L1208.1 385.0 L1197.7 378.3 L1186.9 371.8 L1175.8 365.5 L1164.3 359.5 L1152.5 353.7 L1140.3 348.2 L1127.9 342.9 L1115.1 337.9 L1102.1 333.1 L1088.8 328.7 L1075.2 324.5 L1061.4 320.6 L1047.4 317.0 L1033.2 313.7 L1018.8 310.8 L1004.3 308.1 L989.6 305.7 L974.8 303.6 L959.8 301.9 L944.8 300.4 L929.7 299.3 L914.5 298.5 L899.4 298.0 L884.1 297.9 L868.9 298.0 L853.7 298.5 L838.6 299.3 L823.5 300.4 L808.5 301.9 L793.5 303.6 L778.7 305.7 L764.0 308.1 L749.5 310.8 L735.1 313.8 L720.9 317.1 L706.9 320.6 L693.1 324.5 L679.6 328.7 L666.3 333.2 L653.3 337.9 L640.5 342.9 L628.0 348.2 L615.9 353.7 L604.1 359.5 L592.6 365.5 L581.5 371.8 L570.8 378.3 L560.4 385.0 L550.4 391.9 L540.9 399.1 L531.7 406.4 L523.0 414.0 L514.7 421.7 L506.9 429.5 L499.5 437.6 L492.7 445.8 L486.2 454.1 L480.3 462.6 L474.9 471.1 L469.9 479.8Z" fill="url(#g46)" stroke="url(#g46)" stroke-width="0.7"/><path d="M1321.2 562.8 L1320.9 572.1 L1320.1 581.3 L1318.8 590.5 L1316.9 599.7 L1314.5 608.8 L1311.6 617.9 L1308.1 626.9 L1304.1 635.8 L1299.7 644.7 L1294.6 653.4 L1289.1 662.0 L1283.1 670.5 L1276.6 678.9 L1269.7 687.1 L1262.2 695.2 L1254.3 703.1 L1245.9 710.9 L1237.1 718.4 L1227.9 725.8 L1218.2 733.0 L1208.1 739.9 L1197.6 746.7 L1186.8 753.2 L1175.5 759.5 L1164.0 765.5 L1152.0 771.3 L1139.8 776.8 L1127.2 782.1 L1114.3 787.1 L1101.1 791.8 L1087.7 796.3 L1074.1 800.4 L1060.1 804.3 L1046.0 807.8 L1031.7 811.1 L1017.2 814.1 L1002.5 816.7 L987.7 819.1 L972.8 821.1 L957.7 822.8 L942.6 824.2 L927.4 825.2 L912.1 826.0 L896.8 826.4 L881.5 826.5 L866.2 826.3 L850.9 825.7 L835.7 824.9 L820.5 823.7 L805.4 822.1 L790.4 820.3 L775.5 818.2 L760.8 815.7 L746.2 812.9 L731.7 809.8 L717.5 806.4 L703.4 802.7 L689.6 798.8 L676.0 794.5 L662.7 789.9 L649.6 785.1 L636.9 780.0 L624.4 774.6 L612.3 769.0 L600.5 763.1 L589.0 757.0 L577.9 750.6 L567.2 744.0 L556.9 737.1 L546.9 730.1 L547.3 727.5 L557.1 734.6 L567.4 741.4 L578.1 748.0 L589.2 754.4 L600.6 760.5 L612.3 766.4 L624.4 772.1 L636.9 777.4 L649.6 782.6 L662.6 787.4 L675.9 792.0 L689.4 796.2 L703.2 800.2 L717.2 803.9 L731.5 807.3 L745.9 810.4 L760.4 813.2 L775.2 815.7 L790.0 817.8 L805.0 819.7 L820.1 821.2 L835.2 822.4 L850.4 823.3 L865.7 823.9 L881.0 824.1 L896.2 824.0 L911.5 823.6 L926.7 822.9 L941.9 821.8 L957.0 820.5 L972.1 818.8 L987.0 816.8 L1001.8 814.4 L1016.4 811.8 L1030.9 808.9 L1045.2 805.6 L1059.3 802.0 L1073.2 798.2 L1086.8 794.1 L1100.2 789.6 L1113.4 784.9 L1126.2 779.9 L1138.8 774.7 L1151.0 769.2 L1163.0 763.4 L1174.5 757.4 L1185.8 751.1 L1196.6 744.6 L1207.1 737.9 L1217.1 730.9 L1226.8 723.8 L1236.0 716.4 L1244.8 708.9 L1253.2 701.2 L1261.1 693.3 L1268.5 685.2 L1275.5 677.0 L1282.0 668.7 L1288.0 660.2 L1293.5 651.6 L1298.5 642.8 L1303.0 634.0 L1307.0 625.1 L1310.4 616.1 L1313.4 607.1 L1315.8 597.9 L1317.6 588.8 L1319.0 579.6 L1319.8 570.4 L1320.0 561.1Z" fill="url(#g47)" stroke="url(#g47)" stroke-width="0.7"/><path d="M235.7 611.6 L235.9 607.0 L236.3 602.4 L236.9 597.9 L237.8 593.3 L239.0 588.8 L240.5 584.2 L242.2 579.8 L244.2 575.3 L246.4 570.9 L248.9 566.6 L251.6 562.3 L254.6 558.1 L257.8 553.9 L261.3 549.8 L265.0 545.8 L268.9 541.9 L273.1 538.1 L277.4 534.3 L282.0 530.6 L286.8 527.1 L291.8 523.6 L297.0 520.3 L302.4 517.0 L308.0 513.9 L313.7 510.9 L319.6 508.0 L325.7 505.3 L332.0 502.6 L338.4 500.1 L344.9 497.8 L351.5 495.6 L358.3 493.5 L365.2 491.6 L372.2 489.8 L379.3 488.2 L386.5 486.7 L393.8 485.4 L401.2 484.2 L408.6 483.2 L416.1 482.3 L423.6 481.6 L431.1 481.1 L438.7 480.7 L446.3 480.5 L453.9 480.4 L461.5 480.5 L469.1 480.8 L469.9 479.8 L462.4 479.5 L454.8 479.4 L447.2 479.5 L439.6 479.7 L432.1 480.0 L424.5 480.6 L417.0 481.2 L409.6 482.1 L402.2 483.1 L394.8 484.2 L387.6 485.5 L380.4 487.0 L373.3 488.6 L366.3 490.4 L359.4 492.3 L352.6 494.3 L346.0 496.5 L339.4 498.9 L333.1 501.3 L326.8 504.0 L320.8 506.7 L314.8 509.6 L309.1 512.5 L303.5 515.7 L298.1 518.9 L293.0 522.2 L288.0 525.7 L283.2 529.2 L278.6 532.9 L274.2 536.6 L270.1 540.4 L266.1 544.3 L262.4 548.3 L259.0 552.4 L255.8 556.6 L252.8 560.8 L250.1 565.1 L247.6 569.4 L245.3 573.8 L243.4 578.2 L241.7 582.6 L240.2 587.1 L239.0 591.7 L238.1 596.2 L237.4 600.8 L237.0 605.3 L236.9 609.9Z" fill="url(#g48)" stroke="url(#g48)" stroke-width="0.7"/><path d="M546.9 730.1 L539.9 732.0 L532.8 733.8 L525.6 735.4 L518.3 736.9 L511.0 738.2 L503.5 739.4 L496.0 740.4 L488.4 741.2 L480.8 741.9 L473.2 742.4 L465.5 742.7 L457.8 742.9 L450.1 742.9 L442.4 742.8 L434.8 742.5 L427.1 742.0 L419.5 741.4 L411.9 740.6 L404.4 739.6 L396.9 738.5 L389.5 737.2 L382.2 735.8 L375.0 734.2 L367.9 732.4 L360.8 730.5 L353.9 728.5 L347.2 726.3 L340.5 723.9 L334.0 721.5 L327.6 718.8 L321.4 716.1 L315.4 713.2 L309.5 710.2 L303.8 707.1 L298.3 703.8 L293.0 700.5 L287.9 697.0 L283.0 693.4 L278.4 689.7 L273.9 685.9 L269.6 682.0 L265.6 678.1 L261.9 674.0 L258.3 669.9 L255.0 665.7 L252.0 661.4 L249.2 657.1 L246.7 652.7 L244.4 648.3 L242.4 643.8 L240.6 639.3 L239.1 634.7 L237.9 630.1 L236.9 625.5 L236.3 620.9 L235.9 616.3 L235.7 611.6 L236.9 609.9 L237.0 614.6 L237.4 619.2 L238.1 623.8 L239.1 628.4 L240.3 633.0 L241.8 637.5 L243.5 642.0 L245.5 646.5 L247.8 650.9 L250.3 655.3 L253.1 659.6 L256.2 663.8 L259.5 668.0 L263.0 672.1 L266.8 676.2 L270.8 680.1 L275.0 684.0 L279.5 687.7 L284.1 691.4 L289.0 695.0 L294.1 698.4 L299.4 701.8 L304.9 705.0 L310.6 708.1 L316.4 711.1 L322.5 714.0 L328.7 716.7 L335.0 719.3 L341.5 721.8 L348.1 724.1 L354.9 726.3 L361.8 728.3 L368.8 730.2 L375.9 731.9 L383.1 733.5 L390.4 734.9 L397.8 736.2 L405.2 737.3 L412.8 738.3 L420.3 739.0 L427.9 739.7 L435.5 740.1 L443.2 740.4 L450.9 740.5 L458.5 740.5 L466.2 740.3 L473.8 740.0 L481.4 739.4 L489.0 738.7 L496.6 737.9 L504.0 736.9 L511.5 735.7 L518.8 734.4 L526.1 732.9 L533.2 731.3 L540.3 729.5 L547.3 727.5Z" fill="url(#g49)" stroke="url(#g49)" stroke-width="0.7"/><path d="M469.9 479.8 L474.9 471.1 L480.3 462.6 L486.2 454.1 L492.7 445.8 L499.5 437.6 L506.9 429.5 L514.7 421.7 L523.0 414.0 L531.7 406.4 L540.9 399.1 L550.4 391.9 L560.4 385.0 L570.8 378.3 L581.5 371.8 L592.6 365.5 L604.1 359.5 L615.9 353.7 L628.0 348.2 L640.5 342.9 L653.3 337.9 L666.3 333.2 L679.6 328.7 L693.1 324.5 L706.9 320.6 L720.9 317.1 L735.1 313.8 L749.5 310.8 L764.0 308.1 L778.7 305.7 L793.5 303.6 L808.5 301.9 L823.5 300.4 L838.6 299.3 L853.7 298.5 L868.9 298.0 L884.1 297.9 L899.4 298.0 L914.5 298.5 L929.7 299.3 L944.8 300.4 L959.8 301.9 L974.8 303.6 L989.6 305.7 L1004.3 308.1 L1018.8 310.8 L1033.2 313.7 L1047.4 317.0 L1061.4 320.6 L1075.2 324.5 L1088.8 328.7 L1102.1 333.1 L1115.1 337.9 L1127.9 342.9 L1140.3 348.2 L1152.5 353.7 L1164.3 359.5 L1175.8 365.5 L1186.9 371.8 L1197.7 378.3 L1208.1 385.0 L1218.0 391.9 L1227.6 399.1 L1236.8 406.4 L1245.5 413.9 L1253.8 421.6 L1261.6 429.5 L1269.0 437.5 L1275.9 445.7 L1282.4 454.1 L1288.3 462.5 L1293.8 471.1 L1298.7 479.8 L1303.2 488.6 L1307.1 497.5 L1310.5 506.4 L1313.4 515.4 L1315.8 524.5 L1317.7 533.6 L1319.0 542.8 L1319.8 551.9 L1320.0 561.1 L1318.6 559.6 L1318.4 550.4 L1317.6 541.2 L1316.3 532.1 L1314.4 523.0 L1312.0 514.0 L1309.1 505.0 L1305.7 496.0 L1301.8 487.2 L1297.3 478.4 L1292.4 469.7 L1286.9 461.2 L1281.0 452.7 L1274.6 444.4 L1267.7 436.3 L1260.3 428.3 L1252.5 420.4 L1244.2 412.7 L1235.5 405.2 L1226.4 397.9 L1216.8 390.8 L1206.8 383.8 L1196.5 377.1 L1185.7 370.7 L1174.6 364.4 L1163.2 358.4 L1151.4 352.6 L1139.2 347.1 L1126.8 341.9 L1114.0 336.9 L1101.0 332.2 L1087.7 327.7 L1074.2 323.6 L1060.4 319.7 L1046.5 316.2 L1032.3 312.9 L1017.9 309.9 L1003.4 307.2 L988.7 304.9 L973.9 302.8 L959.0 301.1 L944.1 299.7 L929.0 298.5 L913.9 297.8 L898.7 297.3 L883.5 297.2 L868.4 297.3 L853.2 297.8 L838.1 298.6 L823.0 299.8 L808.0 301.2 L793.2 303.0 L778.4 305.1 L763.7 307.4 L749.2 310.1 L734.9 313.1 L720.7 316.4 L706.8 320.0 L693.0 323.9 L679.5 328.1 L666.3 332.6 L653.3 337.3 L640.6 342.3 L628.2 347.6 L616.1 353.1 L604.3 358.9 L592.9 364.9 L581.8 371.2 L571.1 377.7 L560.8 384.4 L550.9 391.4 L541.4 398.5 L532.3 405.8 L523.6 413.4 L515.4 421.1 L507.6 428.9 L500.3 437.0 L493.5 445.1 L487.1 453.5 L481.2 461.9 L475.8 470.5 L470.9 479.2Z" fill="url(#g50)" stroke="url(#g50)" stroke-width="0.7"/><path d="M1320.0 561.1 L1319.8 570.4 L1319.0 579.6 L1317.6 588.8 L1315.8 597.9 L1313.4 607.1 L1310.4 616.1 L1307.0 625.1 L1303.0 634.0 L1298.5 642.8 L1293.5 651.6 L1288.0 660.2 L1282.0 668.7 L1275.5 677.0 L1268.5 685.2 L1261.1 693.3 L1253.2 701.2 L1244.8 708.9 L1236.0 716.4 L1226.8 723.8 L1217.1 730.9 L1207.1 737.9 L1196.6 744.6 L1185.8 751.1 L1174.5 757.4 L1163.0 763.4 L1151.0 769.2 L1138.8 774.7 L1126.2 779.9 L1113.4 784.9 L1100.2 789.6 L1086.8 794.1 L1073.2 798.2 L1059.3 802.0 L1045.2 805.6 L1030.9 808.9 L1016.4 811.8 L1001.8 814.4 L987.0 816.8 L972.1 818.8 L957.0 820.5 L941.9 821.8 L926.7 822.9 L911.5 823.6 L896.2 824.0 L881.0 824.1 L865.7 823.9 L850.4 823.3 L835.2 822.4 L820.1 821.2 L805.0 819.7 L790.0 817.8 L775.2 815.7 L760.4 813.2 L745.9 810.4 L731.5 807.3 L717.2 803.9 L703.2 800.2 L689.4 796.2 L675.9 792.0 L662.6 787.4 L649.6 782.6 L636.9 777.4 L624.4 772.1 L612.3 766.4 L600.6 760.5 L589.2 754.4 L578.1 748.0 L567.4 741.4 L557.1 734.6 L547.3 727.5 L547.6 724.9 L557.5 732.0 L567.7 738.8 L578.3 745.4 L589.3 751.8 L600.7 757.9 L612.4 763.8 L624.5 769.5 L636.9 774.9 L649.5 780.0 L662.5 784.8 L675.8 789.4 L689.3 793.7 L703.0 797.7 L717.0 801.4 L731.1 804.8 L745.5 807.9 L760.0 810.7 L774.7 813.2 L789.5 815.3 L804.5 817.2 L819.5 818.7 L834.6 820.0 L849.8 820.9 L865.0 821.4 L880.3 821.7 L895.5 821.6 L910.7 821.2 L925.9 820.5 L941.1 819.5 L956.2 818.1 L971.2 816.5 L986.1 814.5 L1000.8 812.1 L1015.4 809.5 L1029.9 806.6 L1044.2 803.4 L1058.2 799.8 L1072.1 796.0 L1085.7 791.9 L1099.1 787.5 L1112.2 782.8 L1125.1 777.8 L1137.6 772.6 L1149.9 767.1 L1161.8 761.3 L1173.3 755.3 L1184.5 749.1 L1195.4 742.6 L1205.8 735.9 L1215.9 729.0 L1225.5 721.8 L1234.7 714.5 L1243.5 707.0 L1251.9 699.3 L1259.8 691.4 L1267.2 683.4 L1274.2 675.2 L1280.7 666.8 L1286.6 658.4 L1292.1 649.8 L1297.1 641.1 L1301.6 632.3 L1305.6 623.4 L1309.0 614.4 L1312.0 605.4 L1314.4 596.3 L1316.2 587.1 L1317.6 578.0 L1318.4 568.8 L1318.6 559.6Z" fill="url(#g51)" stroke="url(#g51)" stroke-width="0.7"/><path d="M236.9 609.9 L237.0 605.3 L237.4 600.8 L238.1 596.2 L239.0 591.7 L240.2 587.1 L241.7 582.6 L243.4 578.2 L245.3 573.8 L247.6 569.4 L250.1 565.1 L252.8 560.8 L255.8 556.6 L259.0 552.4 L262.4 548.3 L266.1 544.3 L270.1 540.4 L274.2 536.6 L278.6 532.9 L283.2 529.2 L288.0 525.7 L293.0 522.2 L298.1 518.9 L303.5 515.7 L309.1 512.5 L314.8 509.6 L320.8 506.7 L326.8 504.0 L333.1 501.3 L339.4 498.9 L346.0 496.5 L352.6 494.3 L359.4 492.3 L366.3 490.4 L373.3 488.6 L380.4 487.0 L387.6 485.5 L394.8 484.2 L402.2 483.1 L409.6 482.1 L417.0 481.2 L424.5 480.6 L432.1 480.0 L439.6 479.7 L447.2 479.5 L454.8 479.4 L462.4 479.5 L469.9 479.8 L470.9 479.2 L463.4 478.9 L455.8 478.7 L448.3 478.7 L440.7 478.9 L433.2 479.2 L425.7 479.7 L418.2 480.4 L410.8 481.2 L403.4 482.2 L396.1 483.3 L388.8 484.6 L381.6 486.1 L374.5 487.7 L367.6 489.4 L360.7 491.3 L353.9 493.3 L347.3 495.5 L340.8 497.8 L334.4 500.3 L328.2 502.8 L322.1 505.6 L316.2 508.4 L310.4 511.4 L304.9 514.5 L299.5 517.7 L294.3 521.0 L289.3 524.4 L284.5 527.9 L280.0 531.6 L275.6 535.3 L271.4 539.1 L267.5 543.0 L263.8 547.0 L260.4 551.1 L257.2 555.2 L254.2 559.4 L251.4 563.6 L249.0 568.0 L246.7 572.3 L244.8 576.7 L243.1 581.2 L241.6 585.6 L240.4 590.2 L239.5 594.7 L238.8 599.2 L238.4 603.8 L238.3 608.4Z" fill="url(#g52)" stroke="url(#g52)" stroke-width="0.7"/><path d="M547.3 727.5 L540.3 729.5 L533.2 731.3 L526.1 732.9 L518.8 734.4 L511.5 735.7 L504.0 736.9 L496.6 737.9 L489.0 738.7 L481.4 739.4 L473.8 740.0 L466.2 740.3 L458.5 740.5 L450.9 740.5 L443.2 740.4 L435.5 740.1 L427.9 739.7 L420.3 739.0 L412.8 738.3 L405.2 737.3 L397.8 736.2 L390.4 734.9 L383.1 733.5 L375.9 731.9 L368.8 730.2 L361.8 728.3 L354.9 726.3 L348.1 724.1 L341.5 721.8 L335.0 719.3 L328.7 716.7 L322.5 714.0 L316.4 711.1 L310.6 708.1 L304.9 705.0 L299.4 701.8 L294.1 698.4 L289.0 695.0 L284.1 691.4 L279.5 687.7 L275.0 684.0 L270.8 680.1 L266.8 676.2 L263.0 672.1 L259.5 668.0 L256.2 663.8 L253.1 659.6 L250.3 655.3 L247.8 650.9 L245.5 646.5 L243.5 642.0 L241.8 637.5 L240.3 633.0 L239.1 628.4 L238.1 623.8 L237.4 619.2 L237.0 614.6 L236.9 609.9 L238.3 608.4 L238.4 612.9 L238.8 617.4 L239.5 621.9 L240.4 626.4 L241.6 630.9 L243.0 635.4 L244.7 639.8 L246.6 644.2 L248.8 648.5 L251.3 652.8 L254.0 657.0 L256.9 661.2 L260.1 665.3 L263.5 669.3 L267.1 673.3 L271.0 677.2 L275.1 681.0 L279.4 684.7 L283.9 688.3 L288.6 691.8 L293.6 695.3 L298.7 698.6 L304.0 701.8 L309.5 704.9 L315.2 707.8 L321.0 710.7 L327.0 713.4 L333.1 716.0 L339.4 718.5 L345.9 720.8 L352.5 723.0 L359.1 725.1 L365.9 727.0 L372.9 728.7 L379.9 730.4 L387.0 731.8 L394.2 733.2 L401.4 734.3 L408.7 735.3 L416.1 736.2 L423.5 736.9 L431.0 737.4 L438.4 737.8 L445.9 738.1 L453.4 738.1 L460.9 738.1 L468.4 737.8 L475.9 737.4 L483.4 736.9 L490.8 736.1 L498.1 735.3 L505.4 734.2 L512.7 733.1 L519.9 731.7 L526.9 730.3 L533.9 728.6 L540.8 726.8 L547.6 724.9Z" fill="url(#g53)" stroke="url(#g53)" stroke-width="0.7"/><path d="M470.9 479.2 L475.8 470.5 L481.2 461.9 L487.1 453.5 L493.5 445.1 L500.3 437.0 L507.6 428.9 L515.4 421.1 L523.6 413.4 L532.3 405.8 L541.4 398.5 L550.9 391.4 L560.8 384.4 L571.1 377.7 L581.8 371.2 L592.9 364.9 L604.3 358.9 L616.1 353.1 L628.2 347.6 L640.6 342.3 L653.3 337.3 L666.3 332.6 L679.5 328.1 L693.0 323.9 L706.8 320.0 L720.7 316.4 L734.9 313.1 L749.2 310.1 L763.7 307.4 L778.4 305.1 L793.2 303.0 L808.0 301.2 L823.0 299.8 L838.1 298.6 L853.2 297.8 L868.4 297.3 L883.5 297.2 L898.7 297.3 L913.9 297.8 L929.0 298.5 L944.1 299.7 L959.0 301.1 L973.9 302.8 L988.7 304.9 L1003.4 307.2 L1017.9 309.9 L1032.3 312.9 L1046.5 316.2 L1060.4 319.7 L1074.2 323.6 L1087.7 327.7 L1101.0 332.2 L1114.0 336.9 L1126.8 341.9 L1139.2 347.1 L1151.4 352.6 L1163.2 358.4 L1174.6 364.4 L1185.7 370.7 L1196.5 377.1 L1206.8 383.8 L1216.8 390.8 L1226.4 397.9 L1235.5 405.2 L1244.2 412.7 L1252.5 420.4 L1260.3 428.3 L1267.7 436.3 L1274.6 444.4 L1281.0 452.7 L1286.9 461.2 L1292.4 469.7 L1297.3 478.4 L1301.8 487.2 L1305.7 496.0 L1309.1 505.0 L1312.0 514.0 L1314.4 523.0 L1316.3 532.1 L1317.6 541.2 L1318.4 550.4 L1318.6 559.6 L1317.0 558.1 L1316.8 549.0 L1316.0 539.9 L1314.7 530.8 L1312.8 521.7 L1310.4 512.6 L1307.5 503.7 L1304.1 494.8 L1300.2 485.9 L1295.8 477.2 L1290.8 468.5 L1285.4 460.0 L1279.5 451.6 L1273.1 443.3 L1266.2 435.2 L1258.8 427.2 L1251.0 419.3 L1242.7 411.7 L1234.0 404.2 L1224.9 396.9 L1215.4 389.8 L1205.4 382.9 L1195.1 376.2 L1184.4 369.8 L1173.3 363.6 L1161.8 357.6 L1150.0 351.8 L1137.9 346.3 L1125.5 341.1 L1112.8 336.1 L1099.8 331.4 L1086.6 327.0 L1073.0 322.9 L1059.3 319.0 L1045.4 315.5 L1031.2 312.2 L1016.9 309.3 L1002.4 306.6 L987.8 304.3 L973.0 302.3 L958.1 300.5 L943.2 299.1 L928.2 298.0 L913.1 297.3 L898.0 296.8 L882.8 296.7 L867.7 296.9 L852.6 297.4 L837.5 298.2 L822.5 299.4 L807.5 300.8 L792.7 302.6 L778.0 304.7 L763.4 307.1 L748.9 309.8 L734.6 312.8 L720.5 316.1 L706.6 319.7 L692.9 323.6 L679.5 327.8 L666.3 332.3 L653.3 337.0 L640.7 342.0 L628.3 347.3 L616.3 352.8 L604.6 358.6 L593.2 364.7 L582.2 370.9 L571.5 377.4 L561.3 384.1 L551.4 391.1 L541.9 398.2 L532.9 405.5 L524.3 413.0 L516.1 420.7 L508.4 428.6 L501.2 436.6 L494.4 444.8 L488.1 453.1 L482.2 461.5 L476.9 470.1 L472.1 478.8Z" fill="url(#g54)" stroke="url(#g54)" stroke-width="0.7"/><path d="M1318.6 559.6 L1318.4 568.8 L1317.6 578.0 L1316.2 587.1 L1314.4 596.3 L1312.0 605.4 L1309.0 614.4 L1305.6 623.4 L1301.6 632.3 L1297.1 641.1 L1292.1 649.8 L1286.6 658.4 L1280.7 666.8 L1274.2 675.2 L1267.2 683.4 L1259.8 691.4 L1251.9 699.3 L1243.5 707.0 L1234.7 714.5 L1225.5 721.8 L1215.9 729.0 L1205.8 735.9 L1195.4 742.6 L1184.5 749.1 L1173.3 755.3 L1161.8 761.3 L1149.9 767.1 L1137.6 772.6 L1125.1 777.8 L1112.2 782.8 L1099.1 787.5 L1085.7 791.9 L1072.1 796.0 L1058.2 799.8 L1044.2 803.4 L1029.9 806.6 L1015.4 809.5 L1000.8 812.1 L986.1 814.5 L971.2 816.5 L956.2 818.1 L941.1 819.5 L925.9 820.5 L910.7 821.2 L895.5 821.6 L880.3 821.7 L865.0 821.4 L849.8 820.9 L834.6 820.0 L819.5 818.7 L804.5 817.2 L789.5 815.3 L774.7 813.2 L760.0 810.7 L745.5 807.9 L731.1 804.8 L717.0 801.4 L703.0 797.7 L689.3 793.7 L675.8 789.4 L662.5 784.8 L649.5 780.0 L636.9 774.9 L624.5 769.5 L612.4 763.8 L600.7 757.9 L589.3 751.8 L578.3 745.4 L567.7 738.8 L557.5 732.0 L547.6 724.9 L548.1 722.3 L557.9 729.3 L568.0 736.1 L578.6 742.8 L589.6 749.1 L600.9 755.3 L612.5 761.2 L624.5 766.8 L636.8 772.2 L649.5 777.4 L662.4 782.2 L675.6 786.8 L689.0 791.1 L702.7 795.1 L716.6 798.8 L730.8 802.2 L745.1 805.3 L759.6 808.2 L774.2 810.7 L789.0 812.8 L803.9 814.7 L818.9 816.3 L833.9 817.5 L849.1 818.4 L864.2 819.0 L879.4 819.3 L894.7 819.2 L909.9 818.9 L925.0 818.2 L940.1 817.1 L955.2 815.8 L970.1 814.2 L985.0 812.2 L999.7 809.9 L1014.3 807.3 L1028.7 804.4 L1043.0 801.2 L1057.0 797.7 L1070.9 793.8 L1084.5 789.7 L1097.9 785.4 L1111.0 780.7 L1123.8 775.7 L1136.3 770.5 L1148.5 765.1 L1160.4 759.3 L1171.9 753.3 L1183.1 747.1 L1193.9 740.7 L1204.4 734.0 L1214.4 727.1 L1224.0 720.0 L1233.2 712.7 L1242.0 705.2 L1250.4 697.5 L1258.3 689.6 L1265.7 681.6 L1272.6 673.4 L1279.1 665.1 L1285.1 656.7 L1290.6 648.1 L1295.6 639.4 L1300.0 630.7 L1304.0 621.8 L1307.4 612.8 L1310.4 603.8 L1312.8 594.8 L1314.6 585.6 L1316.0 576.5 L1316.8 567.3 L1317.0 558.1Z" fill="url(#g55)" stroke="url(#g55)" stroke-width="0.7"/><path d="M238.3 608.4 L238.4 603.8 L238.8 599.2 L239.5 594.7 L240.4 590.2 L241.6 585.6 L243.1 581.2 L244.8 576.7 L246.7 572.3 L249.0 568.0 L251.4 563.6 L254.2 559.4 L257.2 555.2 L260.4 551.1 L263.8 547.0 L267.5 543.0 L271.4 539.1 L275.6 535.3 L280.0 531.6 L284.5 527.9 L289.3 524.4 L294.3 521.0 L299.5 517.7 L304.9 514.5 L310.4 511.4 L316.2 508.4 L322.1 505.6 L328.2 502.8 L334.4 500.3 L340.8 497.8 L347.3 495.5 L353.9 493.3 L360.7 491.3 L367.6 489.4 L374.5 487.7 L381.6 486.1 L388.8 484.6 L396.1 483.3 L403.4 482.2 L410.8 481.2 L418.2 480.4 L425.7 479.7 L433.2 479.2 L440.7 478.9 L448.3 478.7 L455.8 478.7 L463.4 478.9 L470.9 479.2 L472.1 478.8 L464.6 478.4 L457.0 478.3 L449.5 478.3 L442.0 478.4 L434.5 478.7 L427.0 479.2 L419.5 479.8 L412.1 480.6 L404.8 481.6 L397.4 482.7 L390.2 483.9 L383.1 485.4 L376.0 486.9 L369.0 488.6 L362.2 490.5 L355.4 492.5 L348.8 494.7 L342.3 497.0 L335.9 499.4 L329.7 501.9 L323.6 504.6 L317.7 507.5 L312.0 510.4 L306.4 513.5 L301.1 516.7 L295.9 520.0 L290.9 523.4 L286.1 526.9 L281.5 530.5 L277.2 534.2 L273.0 538.0 L269.1 541.9 L265.4 545.8 L262.0 549.9 L258.8 554.0 L255.8 558.2 L253.0 562.4 L250.6 566.7 L248.3 571.0 L246.4 575.4 L244.7 579.8 L243.2 584.3 L242.0 588.8 L241.1 593.3 L240.4 597.8 L240.0 602.4 L239.9 606.9Z" fill="url(#g56)" stroke="url(#g56)" stroke-width="0.7"/><path d="M547.6 724.9 L540.8 726.8 L533.9 728.6 L526.9 730.3 L519.9 731.7 L512.7 733.1 L505.4 734.2 L498.1 735.3 L490.8 736.1 L483.4 736.9 L475.9 737.4 L468.4 737.8 L460.9 738.1 L453.4 738.1 L445.9 738.1 L438.4 737.8 L431.0 737.4 L423.5 736.9 L416.1 736.2 L408.7 735.3 L401.4 734.3 L394.2 733.2 L387.0 731.8 L379.9 730.4 L372.9 728.7 L365.9 727.0 L359.1 725.1 L352.5 723.0 L345.9 720.8 L339.4 718.5 L333.1 716.0 L327.0 713.4 L321.0 710.7 L315.2 707.8 L309.5 704.9 L304.0 701.8 L298.7 698.6 L293.6 695.3 L288.6 691.8 L283.9 688.3 L279.4 684.7 L275.1 681.0 L271.0 677.2 L267.1 673.3 L263.5 669.3 L260.1 665.3 L256.9 661.2 L254.0 657.0 L251.3 652.8 L248.8 648.5 L246.6 644.2 L244.7 639.8 L243.0 635.4 L241.6 630.9 L240.4 626.4 L239.5 621.9 L238.8 617.4 L238.4 612.9 L238.3 608.4 L239.9 606.9 L240.0 611.4 L240.4 615.9 L241.1 620.4 L242.0 624.9 L243.2 629.4 L244.6 633.8 L246.3 638.2 L248.2 642.6 L250.4 646.9 L252.8 651.1 L255.5 655.3 L258.5 659.5 L261.6 663.6 L265.0 667.6 L268.7 671.5 L272.5 675.4 L276.6 679.2 L280.9 682.9 L285.4 686.5 L290.2 690.0 L295.1 693.4 L300.2 696.7 L305.5 699.8 L311.0 702.9 L316.6 705.9 L322.4 708.7 L328.4 711.4 L334.6 714.0 L340.8 716.4 L347.3 718.7 L353.8 720.9 L360.5 722.9 L367.3 724.8 L374.2 726.6 L381.1 728.2 L388.2 729.6 L395.4 730.9 L402.6 732.1 L409.9 733.1 L417.2 733.9 L424.6 734.6 L432.0 735.1 L439.5 735.5 L446.9 735.7 L454.4 735.7 L461.9 735.6 L469.3 735.4 L476.8 734.9 L484.2 734.4 L491.6 733.6 L498.9 732.7 L506.2 731.7 L513.4 730.5 L520.5 729.2 L527.5 727.7 L534.5 726.0 L541.3 724.2 L548.1 722.3Z" fill="url(#g57)" stroke="url(#g57)" stroke-width="0.7"/><path d="M472.1 478.8 L476.9 470.1 L482.2 461.5 L488.1 453.1 L494.4 444.8 L501.2 436.6 L508.4 428.6 L516.1 420.7 L524.3 413.0 L532.9 405.5 L541.9 398.2 L551.4 391.1 L561.3 384.1 L571.5 377.4 L582.2 370.9 L593.2 364.7 L604.6 358.6 L616.3 352.8 L628.3 347.3 L640.7 342.0 L653.3 337.0 L666.3 332.3 L679.5 327.8 L692.9 323.6 L706.6 319.7 L720.5 316.1 L734.6 312.8 L748.9 309.8 L763.4 307.1 L778.0 304.7 L792.7 302.6 L807.5 300.8 L822.5 299.4 L837.5 298.2 L852.6 297.4 L867.7 296.9 L882.8 296.7 L898.0 296.8 L913.1 297.3 L928.2 298.0 L943.2 299.1 L958.1 300.5 L973.0 302.3 L987.8 304.3 L1002.4 306.6 L1016.9 309.3 L1031.2 312.2 L1045.4 315.5 L1059.3 319.0 L1073.0 322.9 L1086.6 327.0 L1099.8 331.4 L1112.8 336.1 L1125.5 341.1 L1137.9 346.3 L1150.0 351.8 L1161.8 357.6 L1173.3 363.6 L1184.4 369.8 L1195.1 376.2 L1205.4 382.9 L1215.4 389.8 L1224.9 396.9 L1234.0 404.2 L1242.7 411.7 L1251.0 419.3 L1258.8 427.2 L1266.2 435.2 L1273.1 443.3 L1279.5 451.6 L1285.4 460.0 L1290.8 468.5 L1295.8 477.2 L1300.2 485.9 L1304.1 494.8 L1307.5 503.7 L1310.4 512.6 L1312.8 521.7 L1314.7 530.8 L1316.0 539.9 L1316.8 549.0 L1317.0 558.1 L1315.2 556.8 L1315.0 547.7 L1314.2 538.6 L1312.9 529.6 L1311.0 520.5 L1308.7 511.5 L1305.8 502.6 L1302.4 493.7 L1298.4 484.9 L1294.0 476.2 L1289.1 467.5 L1283.7 459.0 L1277.7 450.6 L1271.3 442.4 L1264.5 434.3 L1257.1 426.3 L1249.3 418.5 L1241.1 410.9 L1232.4 403.4 L1223.3 396.1 L1213.8 389.1 L1203.8 382.2 L1193.5 375.5 L1182.8 369.1 L1171.7 362.9 L1160.3 356.9 L1148.6 351.2 L1136.5 345.8 L1124.1 340.6 L1111.4 335.6 L1098.4 330.9 L1085.2 326.6 L1071.8 322.4 L1058.0 318.6 L1044.1 315.1 L1030.0 311.8 L1015.7 308.9 L1001.3 306.3 L986.7 304.0 L972.0 301.9 L957.1 300.2 L942.2 298.9 L927.2 297.8 L912.2 297.0 L897.1 296.6 L882.0 296.5 L866.9 296.7 L851.9 297.2 L836.8 298.1 L821.9 299.2 L807.0 300.7 L792.2 302.5 L777.5 304.6 L763.0 307.0 L748.6 309.7 L734.3 312.7 L720.3 316.1 L706.4 319.7 L692.8 323.6 L679.4 327.8 L666.2 332.2 L653.4 337.0 L640.8 342.0 L628.5 347.3 L616.5 352.8 L604.8 358.6 L593.5 364.7 L582.6 370.9 L572.0 377.4 L561.8 384.1 L552.0 391.1 L542.6 398.2 L533.6 405.5 L525.1 413.0 L517.0 420.7 L509.3 428.6 L502.1 436.6 L495.4 444.7 L489.1 453.0 L483.4 461.4 L478.1 470.0 L473.3 478.6Z" fill="url(#g58)" stroke="url(#g58)" stroke-width="0.7"/><path d="M1317.0 558.1 L1316.8 567.3 L1316.0 576.5 L1314.6 585.6 L1312.8 594.8 L1310.4 603.8 L1307.4 612.8 L1304.0 621.8 L1300.0 630.7 L1295.6 639.4 L1290.6 648.1 L1285.1 656.7 L1279.1 665.1 L1272.6 673.4 L1265.7 681.6 L1258.3 689.6 L1250.4 697.5 L1242.0 705.2 L1233.2 712.7 L1224.0 720.0 L1214.4 727.1 L1204.4 734.0 L1193.9 740.7 L1183.1 747.1 L1171.9 753.3 L1160.4 759.3 L1148.5 765.1 L1136.3 770.5 L1123.8 775.7 L1111.0 780.7 L1097.9 785.4 L1084.5 789.7 L1070.9 793.8 L1057.0 797.7 L1043.0 801.2 L1028.7 804.4 L1014.3 807.3 L999.7 809.9 L985.0 812.2 L970.1 814.2 L955.2 815.8 L940.1 817.1 L925.0 818.2 L909.9 818.9 L894.7 819.2 L879.4 819.3 L864.2 819.0 L849.1 818.4 L833.9 817.5 L818.9 816.3 L803.9 814.7 L789.0 812.8 L774.2 810.7 L759.6 808.2 L745.1 805.3 L730.8 802.2 L716.6 798.8 L702.7 795.1 L689.0 791.1 L675.6 786.8 L662.4 782.2 L649.5 777.4 L636.8 772.2 L624.5 766.8 L612.5 761.2 L600.9 755.3 L589.6 749.1 L578.6 742.8 L568.0 736.1 L557.9 729.3 L548.1 722.3 L548.6 719.6 L558.3 726.7 L568.4 733.5 L578.9 740.1 L589.8 746.5 L601.0 752.6 L612.6 758.6 L624.6 764.2 L636.8 769.6 L649.4 774.7 L662.2 779.6 L675.4 784.2 L688.8 788.5 L702.4 792.5 L716.3 796.3 L730.3 799.7 L744.6 802.8 L759.0 805.6 L773.6 808.2 L788.3 810.4 L803.2 812.2 L818.1 813.8 L833.2 815.1 L848.2 816.0 L863.4 816.6 L878.5 816.9 L893.7 816.9 L908.9 816.5 L924.0 815.9 L939.1 814.9 L954.1 813.5 L969.0 811.9 L983.8 809.9 L998.5 807.7 L1013.1 805.1 L1027.5 802.2 L1041.7 799.0 L1055.7 795.5 L1069.5 791.8 L1083.1 787.7 L1096.4 783.3 L1109.5 778.7 L1122.3 773.7 L1134.8 768.6 L1147.0 763.1 L1158.8 757.4 L1170.4 751.4 L1181.5 745.2 L1192.3 738.8 L1202.7 732.2 L1212.8 725.3 L1222.4 718.2 L1231.6 710.9 L1240.3 703.4 L1248.7 695.8 L1256.5 688.0 L1264.0 680.0 L1270.9 671.8 L1277.4 663.5 L1283.3 655.1 L1288.8 646.6 L1293.8 637.9 L1298.3 629.2 L1302.2 620.3 L1305.7 611.4 L1308.6 602.4 L1311.0 593.4 L1312.8 584.3 L1314.2 575.2 L1315.0 566.0 L1315.2 556.8Z" fill="url(#g59)" stroke="url(#g59)" stroke-width="0.7"/><path d="M239.9 606.9 L240.0 602.4 L240.4 597.8 L241.1 593.3 L242.0 588.8 L243.2 584.3 L244.7 579.8 L246.4 575.4 L248.3 571.0 L250.6 566.7 L253.0 562.4 L255.8 558.2 L258.8 554.0 L262.0 549.9 L265.4 545.8 L269.1 541.9 L273.0 538.0 L277.2 534.2 L281.5 530.5 L286.1 526.9 L290.9 523.4 L295.9 520.0 L301.1 516.7 L306.4 513.5 L312.0 510.4 L317.7 507.5 L323.6 504.6 L329.7 501.9 L335.9 499.4 L342.3 497.0 L348.8 494.7 L355.4 492.5 L362.2 490.5 L369.0 488.6 L376.0 486.9 L383.1 485.4 L390.2 483.9 L397.4 482.7 L404.8 481.6 L412.1 480.6 L419.5 479.8 L427.0 479.2 L434.5 478.7 L442.0 478.4 L449.5 478.3 L457.0 478.3 L464.6 478.4 L472.1 478.8 L473.3 478.6 L465.9 478.3 L458.4 478.1 L450.9 478.0 L443.4 478.2 L435.9 478.5 L428.5 478.9 L421.0 479.5 L413.6 480.3 L406.3 481.2 L399.0 482.3 L391.8 483.5 L384.7 484.9 L377.6 486.4 L370.7 488.1 L363.8 489.9 L357.1 491.9 L350.5 494.1 L344.0 496.3 L337.6 498.7 L331.4 501.3 L325.4 503.9 L319.5 506.7 L313.7 509.6 L308.2 512.7 L302.8 515.9 L297.7 519.1 L292.7 522.5 L287.9 526.0 L283.3 529.6 L279.0 533.3 L274.8 537.0 L270.9 540.9 L267.2 544.8 L263.8 548.8 L260.5 552.9 L257.6 557.1 L254.8 561.3 L252.4 565.6 L250.1 569.9 L248.2 574.3 L246.5 578.7 L245.0 583.1 L243.8 587.6 L242.9 592.1 L242.2 596.6 L241.8 601.1 L241.7 605.6Z" fill="url(#g60)" stroke="url(#g60)" stroke-width="0.7"/><path d="M548.1 722.3 L541.3 724.2 L534.5 726.0 L527.5 727.7 L520.5 729.2 L513.4 730.5 L506.2 731.7 L498.9 732.7 L491.6 733.6 L484.2 734.4 L476.8 734.9 L469.3 735.4 L461.9 735.6 L454.4 735.7 L446.9 735.7 L439.5 735.5 L432.0 735.1 L424.6 734.6 L417.2 733.9 L409.9 733.1 L402.6 732.1 L395.4 730.9 L388.2 729.6 L381.1 728.2 L374.2 726.6 L367.3 724.8 L360.5 722.9 L353.8 720.9 L347.3 718.7 L340.8 716.4 L334.6 714.0 L328.4 711.4 L322.4 708.7 L316.6 705.9 L311.0 702.9 L305.5 699.8 L300.2 696.7 L295.1 693.4 L290.2 690.0 L285.4 686.5 L280.9 682.9 L276.6 679.2 L272.5 675.4 L268.7 671.5 L265.0 667.6 L261.6 663.6 L258.5 659.5 L255.5 655.3 L252.8 651.1 L250.4 646.9 L248.2 642.6 L246.3 638.2 L244.6 633.8 L243.2 629.4 L242.0 624.9 L241.1 620.4 L240.4 615.9 L240.0 611.4 L239.9 606.9 L241.7 605.6 L241.8 610.1 L242.2 614.6 L242.9 619.1 L243.8 623.5 L244.9 628.0 L246.4 632.4 L248.1 636.8 L250.0 641.1 L252.2 645.4 L254.6 649.6 L257.3 653.8 L260.2 657.9 L263.4 662.0 L266.8 666.0 L270.4 669.9 L274.3 673.8 L278.3 677.5 L282.6 681.2 L287.1 684.7 L291.8 688.2 L296.8 691.6 L301.9 694.9 L307.1 698.0 L312.6 701.1 L318.2 704.0 L324.1 706.8 L330.0 709.5 L336.1 712.0 L342.4 714.4 L348.8 716.7 L355.3 718.9 L362.0 720.9 L368.7 722.7 L375.6 724.5 L382.6 726.0 L389.6 727.5 L396.8 728.7 L403.9 729.9 L411.2 730.8 L418.5 731.6 L425.9 732.3 L433.3 732.8 L440.7 733.1 L448.1 733.3 L455.5 733.4 L463.0 733.2 L470.4 732.9 L477.8 732.5 L485.1 731.9 L492.5 731.1 L499.7 730.2 L507.0 729.2 L514.1 727.9 L521.2 726.6 L528.2 725.1 L535.1 723.4 L541.9 721.6 L548.6 719.6Z" fill="url(#g61)" stroke="url(#g61)" stroke-width="0.7"/><path d="M473.3 478.6 L478.1 470.0 L483.4 461.4 L489.1 453.0 L495.4 444.7 L502.1 436.6 L509.3 428.6 L517.0 420.7 L525.1 413.0 L533.6 405.5 L542.6 398.2 L552.0 391.1 L561.8 384.1 L572.0 377.4 L582.6 370.9 L593.5 364.7 L604.8 358.6 L616.5 352.8 L628.5 347.3 L640.8 342.0 L653.4 337.0 L666.2 332.2 L679.4 327.8 L692.8 323.6 L706.4 319.7 L720.3 316.1 L734.3 312.7 L748.6 309.7 L763.0 307.0 L777.5 304.6 L792.2 302.5 L807.0 300.7 L821.9 299.2 L836.8 298.1 L851.9 297.2 L866.9 296.7 L882.0 296.5 L897.1 296.6 L912.2 297.0 L927.2 297.8 L942.2 298.9 L957.1 300.2 L972.0 301.9 L986.7 304.0 L1001.3 306.3 L1015.7 308.9 L1030.0 311.8 L1044.1 315.1 L1058.0 318.6 L1071.8 322.4 L1085.2 326.6 L1098.4 330.9 L1111.4 335.6 L1124.1 340.6 L1136.5 345.8 L1148.6 351.2 L1160.3 356.9 L1171.7 362.9 L1182.8 369.1 L1193.5 375.5 L1203.8 382.2 L1213.8 389.1 L1223.3 396.1 L1232.4 403.4 L1241.1 410.9 L1249.3 418.5 L1257.1 426.3 L1264.5 434.3 L1271.3 442.4 L1277.7 450.6 L1283.7 459.0 L1289.1 467.5 L1294.0 476.2 L1298.4 484.9 L1302.4 493.7 L1305.8 502.6 L1308.7 511.5 L1311.0 520.5 L1312.9 529.6 L1314.2 538.6 L1315.0 547.7 L1315.2 556.8 L1313.3 555.7 L1313.0 546.6 L1312.2 537.6 L1310.9 528.5 L1309.1 519.5 L1306.7 510.5 L1303.8 501.6 L1300.4 492.8 L1296.5 484.0 L1292.1 475.3 L1287.2 466.7 L1281.7 458.2 L1275.8 449.9 L1269.5 441.7 L1262.6 433.6 L1255.3 425.6 L1247.5 417.9 L1239.3 410.2 L1230.6 402.8 L1221.5 395.6 L1212.0 388.5 L1202.1 381.7 L1191.8 375.1 L1181.1 368.7 L1170.1 362.5 L1158.7 356.6 L1147.0 350.9 L1134.9 345.4 L1122.5 340.2 L1109.9 335.3 L1097.0 330.7 L1083.8 326.3 L1070.3 322.2 L1056.7 318.4 L1042.8 314.9 L1028.7 311.7 L1014.5 308.8 L1000.0 306.2 L985.5 303.9 L970.8 301.9 L956.0 300.2 L941.2 298.9 L926.2 297.8 L911.2 297.1 L896.2 296.7 L881.1 296.6 L866.1 296.8 L851.1 297.3 L836.1 298.2 L821.2 299.4 L806.4 300.9 L791.6 302.7 L777.0 304.8 L762.5 307.2 L748.2 309.9 L734.0 313.0 L720.0 316.3 L706.2 319.9 L692.6 323.8 L679.3 328.0 L666.2 332.5 L653.4 337.3 L640.9 342.3 L628.6 347.6 L616.7 353.1 L605.1 358.9 L593.9 365.0 L583.0 371.2 L572.5 377.7 L562.4 384.4 L552.6 391.3 L543.3 398.5 L534.4 405.8 L525.9 413.3 L517.9 421.0 L510.3 428.8 L503.2 436.8 L496.5 445.0 L490.3 453.2 L484.6 461.6 L479.4 470.2 L474.7 478.8Z" fill="url(#g62)" stroke="url(#g62)" stroke-width="0.7"/><path d="M1315.2 556.8 L1315.0 566.0 L1314.2 575.2 L1312.8 584.3 L1311.0 593.4 L1308.6 602.4 L1305.7 611.4 L1302.2 620.3 L1298.3 629.2 L1293.8 637.9 L1288.8 646.6 L1283.3 655.1 L1277.4 663.5 L1270.9 671.8 L1264.0 680.0 L1256.5 688.0 L1248.7 695.8 L1240.3 703.4 L1231.6 710.9 L1222.4 718.2 L1212.8 725.3 L1202.7 732.2 L1192.3 738.8 L1181.5 745.2 L1170.4 751.4 L1158.8 757.4 L1147.0 763.1 L1134.8 768.6 L1122.3 773.7 L1109.5 778.7 L1096.4 783.3 L1083.1 787.7 L1069.5 791.8 L1055.7 795.5 L1041.7 799.0 L1027.5 802.2 L1013.1 805.1 L998.5 807.7 L983.8 809.9 L969.0 811.9 L954.1 813.5 L939.1 814.9 L924.0 815.9 L908.9 816.5 L893.7 816.9 L878.5 816.9 L863.4 816.6 L848.2 816.0 L833.2 815.1 L818.1 813.8 L803.2 812.2 L788.3 810.4 L773.6 808.2 L759.0 805.6 L744.6 802.8 L730.3 799.7 L716.3 796.3 L702.4 792.5 L688.8 788.5 L675.4 784.2 L662.2 779.6 L649.4 774.7 L636.8 769.6 L624.6 764.2 L612.6 758.6 L601.0 752.6 L589.8 746.5 L578.9 740.1 L568.4 733.5 L558.3 726.7 L548.6 719.6 L549.1 717.0 L558.7 724.1 L568.8 730.9 L579.2 737.5 L590.0 743.9 L601.2 750.0 L612.7 756.0 L624.6 761.6 L636.8 767.0 L649.3 772.2 L662.1 777.1 L675.2 781.7 L688.5 786.0 L702.1 790.0 L715.9 793.7 L729.9 797.2 L744.1 800.3 L758.4 803.2 L773.0 805.7 L787.6 807.9 L802.4 809.8 L817.3 811.4 L832.3 812.7 L847.3 813.7 L862.4 814.3 L877.5 814.6 L892.7 814.6 L907.8 814.3 L922.9 813.6 L937.9 812.6 L952.9 811.3 L967.7 809.7 L982.5 807.8 L997.2 805.6 L1011.7 803.0 L1026.1 800.1 L1040.2 797.0 L1054.2 793.5 L1068.0 789.8 L1081.6 785.7 L1094.9 781.4 L1107.9 776.8 L1120.7 771.9 L1133.1 766.7 L1145.3 761.3 L1157.1 755.6 L1168.6 749.7 L1179.8 743.5 L1190.6 737.1 L1201.0 730.5 L1211.0 723.6 L1220.6 716.6 L1229.7 709.3 L1238.5 701.9 L1246.8 694.2 L1254.7 686.4 L1262.1 678.5 L1269.0 670.3 L1275.4 662.1 L1281.4 653.7 L1286.9 645.2 L1291.9 636.6 L1296.3 627.8 L1300.3 619.0 L1303.7 610.1 L1306.6 601.2 L1309.0 592.1 L1310.9 583.1 L1312.2 574.0 L1313.0 564.9 L1313.3 555.7Z" fill="url(#g63)" stroke="url(#g63)" stroke-width="0.7"/><path d="M241.7 605.6 L241.8 601.1 L242.2 596.6 L242.9 592.1 L243.8 587.6 L245.0 583.1 L246.5 578.7 L248.2 574.3 L250.1 569.9 L252.4 565.6 L254.8 561.3 L257.6 557.1 L260.5 552.9 L263.8 548.8 L267.2 544.8 L270.9 540.9 L274.8 537.0 L279.0 533.3 L283.3 529.6 L287.9 526.0 L292.7 522.5 L297.7 519.1 L302.8 515.9 L308.2 512.7 L313.7 509.6 L319.5 506.7 L325.4 503.9 L331.4 501.3 L337.6 498.7 L344.0 496.3 L350.5 494.1 L357.1 491.9 L363.8 489.9 L370.7 488.1 L377.6 486.4 L384.7 484.9 L391.8 483.5 L399.0 482.3 L406.3 481.2 L413.6 480.3 L421.0 479.5 L428.5 478.9 L435.9 478.5 L443.4 478.2 L450.9 478.0 L458.4 478.1 L465.9 478.3 L473.3 478.6 L474.7 478.8 L467.3 478.4 L459.9 478.2 L452.4 478.1 L444.9 478.2 L437.5 478.5 L430.1 478.9 L422.7 479.4 L415.3 480.2 L408.0 481.1 L400.7 482.1 L393.5 483.3 L386.4 484.7 L379.4 486.2 L372.5 487.8 L365.6 489.6 L358.9 491.6 L352.3 493.7 L345.8 495.9 L339.5 498.3 L333.3 500.8 L327.3 503.4 L321.4 506.2 L315.7 509.1 L310.1 512.1 L304.8 515.3 L299.6 518.5 L294.6 521.9 L289.8 525.3 L285.3 528.9 L280.9 532.5 L276.8 536.3 L272.9 540.1 L269.2 544.0 L265.7 548.0 L262.5 552.1 L259.5 556.2 L256.8 560.4 L254.3 564.7 L252.1 569.0 L250.1 573.3 L248.4 577.7 L247.0 582.1 L245.8 586.6 L244.8 591.0 L244.2 595.5 L243.8 600.0 L243.7 604.5Z" fill="url(#g64)" stroke="url(#g64)" stroke-width="0.7"/><path d="M548.6 719.6 L541.9 721.6 L535.1 723.4 L528.2 725.1 L521.2 726.6 L514.1 727.9 L507.0 729.2 L499.7 730.2 L492.5 731.1 L485.1 731.9 L477.8 732.5 L470.4 732.9 L463.0 733.2 L455.5 733.4 L448.1 733.3 L440.7 733.1 L433.3 732.8 L425.9 732.3 L418.5 731.6 L411.2 730.8 L403.9 729.9 L396.8 728.7 L389.6 727.5 L382.6 726.0 L375.6 724.5 L368.7 722.7 L362.0 720.9 L355.3 718.9 L348.8 716.7 L342.4 714.4 L336.1 712.0 L330.0 709.5 L324.1 706.8 L318.2 704.0 L312.6 701.1 L307.1 698.0 L301.9 694.9 L296.8 691.6 L291.8 688.2 L287.1 684.7 L282.6 681.2 L278.3 677.5 L274.3 673.8 L270.4 669.9 L266.8 666.0 L263.4 662.0 L260.2 657.9 L257.3 653.8 L254.6 649.6 L252.2 645.4 L250.0 641.1 L248.1 636.8 L246.4 632.4 L244.9 628.0 L243.8 623.5 L242.9 619.1 L242.2 614.6 L241.8 610.1 L241.7 605.6 L243.7 604.5 L243.8 609.0 L244.2 613.4 L244.8 617.9 L245.7 622.3 L246.9 626.7 L248.3 631.1 L250.0 635.5 L251.9 639.8 L254.1 644.0 L256.6 648.3 L259.2 652.4 L262.2 656.5 L265.3 660.6 L268.7 664.5 L272.3 668.4 L276.2 672.2 L280.2 676.0 L284.5 679.6 L289.0 683.1 L293.7 686.6 L298.6 689.9 L303.7 693.2 L309.0 696.3 L314.4 699.3 L320.0 702.2 L325.8 705.0 L331.8 707.7 L337.9 710.2 L344.1 712.6 L350.5 714.8 L357.0 716.9 L363.6 718.9 L370.4 720.8 L377.2 722.5 L384.1 724.0 L391.2 725.4 L398.3 726.6 L405.4 727.7 L412.7 728.7 L419.9 729.5 L427.2 730.1 L434.6 730.6 L442.0 730.9 L449.4 731.0 L456.7 731.1 L464.1 730.9 L471.5 730.6 L478.9 730.1 L486.2 729.5 L493.4 728.7 L500.7 727.8 L507.8 726.7 L514.9 725.4 L522.0 724.0 L528.9 722.5 L535.7 720.8 L542.5 719.0 L549.1 717.0Z" fill="url(#g65)" stroke="url(#g65)" stroke-width="0.7"/><path d="M474.7 478.8 L479.4 470.2 L484.6 461.6 L490.3 453.2 L496.5 445.0 L503.2 436.8 L510.3 428.8 L517.9 421.0 L525.9 413.3 L534.4 405.8 L543.3 398.5 L552.6 391.3 L562.4 384.4 L572.5 377.7 L583.0 371.2 L593.9 365.0 L605.1 358.9 L616.7 353.1 L628.6 347.6 L640.9 342.3 L653.4 337.3 L666.2 332.5 L679.3 328.0 L692.6 323.8 L706.2 319.9 L720.0 316.3 L734.0 313.0 L748.2 309.9 L762.5 307.2 L777.0 304.8 L791.6 302.7 L806.4 300.9 L821.2 299.4 L836.1 298.2 L851.1 297.3 L866.1 296.8 L881.1 296.6 L896.2 296.7 L911.2 297.1 L926.2 297.8 L941.2 298.9 L956.0 300.2 L970.8 301.9 L985.5 303.9 L1000.0 306.2 L1014.5 308.8 L1028.7 311.7 L1042.8 314.9 L1056.7 318.4 L1070.3 322.2 L1083.8 326.3 L1097.0 330.7 L1109.9 335.3 L1122.5 340.2 L1134.9 345.4 L1147.0 350.9 L1158.7 356.6 L1170.1 362.5 L1181.1 368.7 L1191.8 375.1 L1202.1 381.7 L1212.0 388.5 L1221.5 395.6 L1230.6 402.8 L1239.3 410.2 L1247.5 417.9 L1255.3 425.6 L1262.6 433.6 L1269.5 441.7 L1275.8 449.9 L1281.7 458.2 L1287.2 466.7 L1292.1 475.3 L1296.5 484.0 L1300.4 492.8 L1303.8 501.6 L1306.7 510.5 L1309.1 519.5 L1310.9 528.5 L1312.2 537.6 L1313.0 546.6 L1313.3 555.7 L1311.2 554.8 L1310.9 545.8 L1310.1 536.7 L1308.8 527.7 L1307.0 518.7 L1304.6 509.8 L1301.7 500.9 L1298.3 492.1 L1294.4 483.3 L1290.0 474.7 L1285.1 466.1 L1279.7 457.7 L1273.8 449.3 L1267.4 441.1 L1260.6 433.1 L1253.3 425.2 L1245.5 417.4 L1237.3 409.8 L1228.7 402.4 L1219.6 395.2 L1210.1 388.2 L1200.2 381.4 L1190.0 374.8 L1179.3 368.4 L1168.3 362.3 L1156.9 356.4 L1145.2 350.7 L1133.2 345.3 L1120.9 340.2 L1108.2 335.3 L1095.4 330.7 L1082.2 326.3 L1068.8 322.3 L1055.2 318.5 L1041.3 315.0 L1027.3 311.8 L1013.1 308.9 L998.7 306.4 L984.2 304.1 L969.6 302.1 L954.8 300.5 L940.0 299.1 L925.1 298.1 L910.2 297.4 L895.2 297.0 L880.2 296.9 L865.2 297.2 L850.3 297.7 L835.3 298.6 L820.5 299.8 L805.7 301.3 L791.0 303.1 L776.5 305.3 L762.0 307.7 L747.7 310.4 L733.6 313.5 L719.7 316.8 L706.0 320.5 L692.5 324.4 L679.2 328.6 L666.2 333.1 L653.4 337.8 L641.0 342.9 L628.8 348.2 L617.0 353.7 L605.5 359.5 L594.3 365.5 L583.5 371.8 L573.0 378.3 L563.0 385.0 L553.3 391.9 L544.1 399.0 L535.2 406.4 L526.8 413.9 L518.9 421.5 L511.4 429.4 L504.3 437.3 L497.7 445.5 L491.6 453.7 L486.0 462.1 L480.9 470.6 L476.2 479.3Z" fill="url(#g66)" stroke="url(#g66)" stroke-width="0.7"/><path d="M1313.3 555.7 L1313.0 564.9 L1312.2 574.0 L1310.9 583.1 L1309.0 592.1 L1306.6 601.2 L1303.7 610.1 L1300.3 619.0 L1296.3 627.8 L1291.9 636.6 L1286.9 645.2 L1281.4 653.7 L1275.4 662.1 L1269.0 670.3 L1262.1 678.5 L1254.7 686.4 L1246.8 694.2 L1238.5 701.9 L1229.7 709.3 L1220.6 716.6 L1211.0 723.6 L1201.0 730.5 L1190.6 737.1 L1179.8 743.5 L1168.6 749.7 L1157.1 755.6 L1145.3 761.3 L1133.1 766.7 L1120.7 771.9 L1107.9 776.8 L1094.9 781.4 L1081.6 785.7 L1068.0 789.8 L1054.2 793.5 L1040.2 797.0 L1026.1 800.1 L1011.7 803.0 L997.2 805.6 L982.5 807.8 L967.7 809.7 L952.9 811.3 L937.9 812.6 L922.9 813.6 L907.8 814.3 L892.7 814.6 L877.5 814.6 L862.4 814.3 L847.3 813.7 L832.3 812.7 L817.3 811.4 L802.4 809.8 L787.6 807.9 L773.0 805.7 L758.4 803.2 L744.1 800.3 L729.9 797.2 L715.9 793.7 L702.1 790.0 L688.5 786.0 L675.2 781.7 L662.1 777.1 L649.3 772.2 L636.8 767.0 L624.6 761.6 L612.7 756.0 L601.2 750.0 L590.0 743.9 L579.2 737.5 L568.8 730.9 L558.7 724.1 L549.1 717.0 L549.7 714.5 L559.2 721.5 L569.2 728.3 L579.5 735.0 L590.3 741.4 L601.4 747.5 L612.8 753.4 L624.6 759.1 L636.8 764.5 L649.2 769.7 L661.9 774.6 L674.9 779.2 L688.2 783.5 L701.7 787.6 L715.4 791.3 L729.3 794.8 L743.5 797.9 L757.8 800.8 L772.3 803.3 L786.9 805.6 L801.6 807.5 L816.4 809.1 L831.4 810.4 L846.4 811.4 L861.4 812.1 L876.5 812.4 L891.5 812.4 L906.6 812.1 L921.6 811.5 L936.6 810.5 L951.5 809.2 L966.4 807.7 L981.1 805.8 L995.7 803.5 L1010.2 801.0 L1024.5 798.2 L1038.7 795.0 L1052.6 791.6 L1066.4 787.9 L1079.9 783.9 L1093.2 779.5 L1106.2 775.0 L1118.9 770.1 L1131.4 765.0 L1143.5 759.6 L1155.3 753.9 L1166.8 748.0 L1177.9 741.9 L1188.7 735.5 L1199.1 728.9 L1209.0 722.1 L1218.6 715.1 L1227.8 707.8 L1236.5 700.4 L1244.8 692.8 L1252.7 685.0 L1260.0 677.1 L1267.0 669.0 L1273.4 660.8 L1279.4 652.4 L1284.8 644.0 L1289.8 635.4 L1294.2 626.7 L1298.2 617.9 L1301.6 609.0 L1304.5 600.1 L1306.9 591.1 L1308.8 582.1 L1310.1 573.0 L1310.9 563.9 L1311.2 554.8Z" fill="url(#g67)" stroke="url(#g67)" stroke-width="0.7"/><path d="M243.7 604.5 L243.8 600.0 L244.2 595.5 L244.8 591.0 L245.8 586.6 L247.0 582.1 L248.4 577.7 L250.1 573.3 L252.1 569.0 L254.3 564.7 L256.8 560.4 L259.5 556.2 L262.5 552.1 L265.7 548.0 L269.2 544.0 L272.9 540.1 L276.8 536.3 L280.9 532.5 L285.3 528.9 L289.8 525.3 L294.6 521.9 L299.6 518.5 L304.8 515.3 L310.1 512.1 L315.7 509.1 L321.4 506.2 L327.3 503.4 L333.3 500.8 L339.5 498.3 L345.8 495.9 L352.3 493.7 L358.9 491.6 L365.6 489.6 L372.5 487.8 L379.4 486.2 L386.4 484.7 L393.5 483.3 L400.7 482.1 L408.0 481.1 L415.3 480.2 L422.7 479.4 L430.1 478.9 L437.5 478.5 L444.9 478.2 L452.4 478.1 L459.9 478.2 L467.3 478.4 L474.7 478.8 L476.2 479.3 L469.0 478.8 L461.8 478.6 L454.5 478.5 L447.2 478.5 L440.0 478.7 L432.7 479.1 L425.5 479.6 L418.3 480.2 L411.2 481.0 L404.1 482.0 L397.1 483.1 L390.1 484.4 L383.2 485.8 L376.4 487.3 L369.7 489.0 L363.1 490.8 L356.6 492.8 L350.2 494.9 L344.0 497.2 L337.9 499.5 L331.9 502.0 L326.1 504.7 L320.4 507.4 L314.9 510.3 L309.6 513.2 L304.4 516.3 L299.5 519.5 L294.7 522.8 L290.1 526.2 L285.7 529.7 L281.5 533.3 L277.5 537.0 L273.8 540.8 L270.2 544.6 L266.9 548.5 L263.8 552.5 L261.0 556.5 L258.4 560.6 L256.0 564.7 L253.9 568.9 L252.0 573.2 L250.3 577.5 L248.9 581.8 L247.8 586.1 L246.9 590.5 L246.3 594.8 L245.9 599.2 L245.8 603.6Z" fill="url(#g68)" stroke="url(#g68)" stroke-width="0.7"/><path d="M549.1 717.0 L542.5 719.0 L535.7 720.8 L528.9 722.5 L522.0 724.0 L514.9 725.4 L507.8 726.7 L500.7 727.8 L493.4 728.7 L486.2 729.5 L478.9 730.1 L471.5 730.6 L464.1 730.9 L456.7 731.1 L449.4 731.0 L442.0 730.9 L434.6 730.6 L427.2 730.1 L419.9 729.5 L412.7 728.7 L405.4 727.7 L398.3 726.6 L391.2 725.4 L384.1 724.0 L377.2 722.5 L370.4 720.8 L363.6 718.9 L357.0 716.9 L350.5 714.8 L344.1 712.6 L337.9 710.2 L331.8 707.7 L325.8 705.0 L320.0 702.2 L314.4 699.3 L309.0 696.3 L303.7 693.2 L298.6 689.9 L293.7 686.6 L289.0 683.1 L284.5 679.6 L280.2 676.0 L276.2 672.2 L272.3 668.4 L268.7 664.5 L265.3 660.6 L262.2 656.5 L259.2 652.4 L256.6 648.3 L254.1 644.0 L251.9 639.8 L250.0 635.5 L248.3 631.1 L246.9 626.7 L245.7 622.3 L244.8 617.9 L244.2 613.4 L243.8 609.0 L243.7 604.5 L245.8 603.6 L245.9 608.0 L246.3 612.5 L246.9 616.9 L247.8 621.3 L249.0 625.7 L250.4 630.0 L252.1 634.3 L254.0 638.6 L256.2 642.9 L258.6 647.1 L261.3 651.2 L264.2 655.3 L267.4 659.3 L270.8 663.2 L274.4 667.1 L278.2 670.9 L282.3 674.6 L286.5 678.2 L291.0 681.7 L295.7 685.1 L300.6 688.4 L305.7 691.6 L310.9 694.7 L316.3 697.7 L322.0 700.6 L327.7 703.3 L333.7 706.0 L339.7 708.5 L346.0 710.8 L352.3 713.1 L358.8 715.1 L365.4 717.1 L372.1 718.9 L378.9 720.6 L385.8 722.1 L392.8 723.4 L399.9 724.7 L407.0 725.7 L414.2 726.6 L421.4 727.4 L428.7 728.0 L436.0 728.4 L443.4 728.7 L450.7 728.9 L458.1 728.8 L465.4 728.6 L472.7 728.3 L480.0 727.8 L487.3 727.2 L494.5 726.3 L501.7 725.4 L508.8 724.3 L515.8 723.0 L522.8 721.6 L529.7 720.0 L536.4 718.3 L543.1 716.5 L549.7 714.5Z" fill="url(#g69)" stroke="url(#g69)" stroke-width="0.7"/><path d="M476.2 479.3 L480.9 470.6 L486.0 462.1 L491.6 453.7 L497.7 445.5 L504.3 437.3 L511.4 429.4 L518.9 421.5 L526.8 413.9 L535.2 406.4 L544.1 399.0 L553.3 391.9 L563.0 385.0 L573.0 378.3 L583.5 371.8 L594.3 365.5 L605.5 359.5 L617.0 353.7 L628.8 348.2 L641.0 342.9 L653.4 337.8 L666.2 333.1 L679.2 328.6 L692.5 324.4 L706.0 320.5 L719.7 316.8 L733.6 313.5 L747.7 310.4 L762.0 307.7 L776.5 305.3 L791.0 303.1 L805.7 301.3 L820.5 299.8 L835.3 298.6 L850.3 297.7 L865.2 297.2 L880.2 296.9 L895.2 297.0 L910.2 297.4 L925.1 298.1 L940.0 299.1 L954.8 300.5 L969.6 302.1 L984.2 304.1 L998.7 306.4 L1013.1 308.9 L1027.3 311.8 L1041.3 315.0 L1055.2 318.5 L1068.8 322.3 L1082.2 326.3 L1095.4 330.7 L1108.2 335.3 L1120.9 340.2 L1133.2 345.3 L1145.2 350.7 L1156.9 356.4 L1168.3 362.3 L1179.3 368.4 L1190.0 374.8 L1200.2 381.4 L1210.1 388.2 L1219.6 395.2 L1228.7 402.4 L1237.3 409.8 L1245.5 417.4 L1253.3 425.2 L1260.6 433.1 L1267.4 441.1 L1273.8 449.3 L1279.7 457.7 L1285.1 466.1 L1290.0 474.7 L1294.4 483.3 L1298.3 492.1 L1301.7 500.9 L1304.6 509.8 L1307.0 518.7 L1308.8 527.7 L1310.1 536.7 L1310.9 545.8 L1311.2 554.8 L1308.9 554.1 L1308.7 545.0 L1307.9 536.0 L1306.6 527.1 L1304.7 518.1 L1302.4 509.2 L1299.5 500.3 L1296.1 491.6 L1292.2 482.8 L1287.8 474.2 L1282.9 465.7 L1277.5 457.3 L1271.7 449.0 L1265.3 440.8 L1258.5 432.8 L1251.2 424.9 L1243.4 417.2 L1235.3 409.7 L1226.6 402.3 L1217.6 395.1 L1208.1 388.1 L1198.3 381.4 L1188.0 374.8 L1177.4 368.5 L1166.4 362.3 L1155.1 356.5 L1143.4 350.8 L1131.4 345.5 L1119.1 340.3 L1106.5 335.5 L1093.7 330.9 L1080.5 326.6 L1067.2 322.6 L1053.6 318.8 L1039.8 315.4 L1025.8 312.2 L1011.6 309.3 L997.3 306.8 L982.8 304.5 L968.2 302.6 L953.6 301.0 L938.8 299.6 L923.9 298.6 L909.0 298.0 L894.1 297.6 L879.2 297.5 L864.3 297.8 L849.4 298.4 L834.5 299.3 L819.7 300.5 L805.0 302.0 L790.4 303.9 L775.9 306.0 L761.5 308.5 L747.3 311.2 L733.2 314.3 L719.4 317.6 L705.7 321.3 L692.3 325.2 L679.1 329.4 L666.1 333.9 L653.5 338.7 L641.1 343.7 L629.0 349.0 L617.2 354.6 L605.8 360.4 L594.7 366.4 L584.0 372.7 L573.6 379.2 L563.6 385.9 L554.0 392.8 L544.9 399.9 L536.1 407.2 L527.8 414.7 L519.9 422.4 L512.5 430.2 L505.5 438.2 L499.0 446.3 L493.0 454.5 L487.4 462.9 L482.4 471.4 L477.8 480.0Z" fill="url(#g70)" stroke="url(#g70)" stroke-width="0.7"/><path d="M1311.2 554.8 L1310.9 563.9 L1310.1 573.0 L1308.8 582.1 L1306.9 591.1 L1304.5 600.1 L1301.6 609.0 L1298.2 617.9 L1294.2 626.7 L1289.8 635.4 L1284.8 644.0 L1279.4 652.4 L1273.4 660.8 L1267.0 669.0 L1260.0 677.1 L1252.7 685.0 L1244.8 692.8 L1236.5 700.4 L1227.8 707.8 L1218.6 715.1 L1209.0 722.1 L1199.1 728.9 L1188.7 735.5 L1177.9 741.9 L1166.8 748.0 L1155.3 753.9 L1143.5 759.6 L1131.4 765.0 L1118.9 770.1 L1106.2 775.0 L1093.2 779.5 L1079.9 783.9 L1066.4 787.9 L1052.6 791.6 L1038.7 795.0 L1024.5 798.2 L1010.2 801.0 L995.7 803.5 L981.1 805.8 L966.4 807.7 L951.5 809.2 L936.6 810.5 L921.6 811.5 L906.6 812.1 L891.5 812.4 L876.5 812.4 L861.4 812.1 L846.4 811.4 L831.4 810.4 L816.4 809.1 L801.6 807.5 L786.9 805.6 L772.3 803.3 L757.8 800.8 L743.5 797.9 L729.3 794.8 L715.4 791.3 L701.7 787.6 L688.2 783.5 L674.9 779.2 L661.9 774.6 L649.2 769.7 L636.8 764.5 L624.6 759.1 L612.8 753.4 L601.4 747.5 L590.3 741.4 L579.5 735.0 L569.2 728.3 L559.2 721.5 L549.7 714.5 L550.3 712.0 L559.7 719.1 L569.6 725.9 L579.9 732.5 L590.6 738.9 L601.6 745.1 L613.0 751.0 L624.7 756.7 L636.7 762.1 L649.1 767.3 L661.7 772.2 L674.6 776.8 L687.8 781.1 L701.3 785.2 L714.9 789.0 L728.8 792.5 L742.9 795.6 L757.1 798.5 L771.5 801.1 L786.1 803.3 L800.7 805.3 L815.5 806.9 L830.4 808.3 L845.3 809.2 L860.3 809.9 L875.3 810.3 L890.3 810.3 L905.3 810.0 L920.3 809.4 L935.3 808.5 L950.1 807.3 L964.9 805.7 L979.6 803.8 L994.2 801.7 L1008.6 799.2 L1022.9 796.4 L1037.0 793.3 L1051.0 789.8 L1064.7 786.1 L1078.2 782.1 L1091.4 777.9 L1104.4 773.3 L1117.1 768.5 L1129.5 763.4 L1141.6 758.0 L1153.4 752.4 L1164.8 746.5 L1175.9 740.4 L1186.7 734.1 L1197.0 727.5 L1207.0 720.7 L1216.6 713.7 L1225.7 706.5 L1234.4 699.1 L1242.7 691.6 L1250.5 683.8 L1257.9 675.9 L1264.8 667.9 L1271.2 659.7 L1277.2 651.4 L1282.6 642.9 L1287.6 634.3 L1292.0 625.7 L1296.0 616.9 L1299.4 608.1 L1302.3 599.2 L1304.7 590.2 L1306.5 581.2 L1307.9 572.2 L1308.7 563.1 L1308.9 554.1Z" fill="url(#g71)" stroke="url(#g71)" stroke-width="0.7"/><path d="M245.8 603.6 L245.9 599.2 L246.3 594.8 L246.9 590.5 L247.8 586.1 L248.9 581.8 L250.3 577.5 L252.0 573.2 L253.9 568.9 L256.0 564.7 L258.4 560.6 L261.0 556.5 L263.8 552.5 L266.9 548.5 L270.2 544.6 L273.8 540.8 L277.5 537.0 L281.5 533.3 L285.7 529.7 L290.1 526.2 L294.7 522.8 L299.5 519.5 L304.4 516.3 L309.6 513.2 L314.9 510.3 L320.4 507.4 L326.1 504.7 L331.9 502.0 L337.9 499.5 L344.0 497.2 L350.2 494.9 L356.6 492.8 L363.1 490.8 L369.7 489.0 L376.4 487.3 L383.2 485.8 L390.1 484.4 L397.1 483.1 L404.1 482.0 L411.2 481.0 L418.3 480.2 L425.5 479.6 L432.7 479.1 L440.0 478.7 L447.2 478.5 L454.5 478.5 L461.8 478.6 L469.0 478.8 L476.2 479.3 L477.8 480.0 L470.7 479.5 L463.4 479.2 L456.2 479.1 L449.0 479.1 L441.8 479.3 L434.6 479.6 L427.4 480.0 L420.2 480.7 L413.1 481.4 L406.0 482.4 L399.0 483.4 L392.1 484.6 L385.2 486.0 L378.5 487.5 L371.8 489.2 L365.2 491.0 L358.7 492.9 L352.4 495.0 L346.1 497.2 L340.0 499.5 L334.1 502.0 L328.3 504.6 L322.6 507.3 L317.1 510.2 L311.8 513.1 L306.6 516.2 L301.7 519.3 L296.9 522.6 L292.3 526.0 L287.9 529.5 L283.7 533.0 L279.8 536.7 L276.0 540.4 L272.5 544.2 L269.1 548.1 L266.1 552.0 L263.2 556.0 L260.6 560.1 L258.2 564.2 L256.1 568.4 L254.2 572.6 L252.6 576.9 L251.2 581.1 L250.0 585.5 L249.1 589.8 L248.5 594.1 L248.1 598.5 L248.0 602.9Z" fill="url(#g72)" stroke="url(#g72)" stroke-width="0.7"/><path d="M549.7 714.5 L543.1 716.5 L536.4 718.3 L529.7 720.0 L522.8 721.6 L515.8 723.0 L508.8 724.3 L501.7 725.4 L494.5 726.3 L487.3 727.2 L480.0 727.8 L472.7 728.3 L465.4 728.6 L458.1 728.8 L450.7 728.9 L443.4 728.7 L436.0 728.4 L428.7 728.0 L421.4 727.4 L414.2 726.6 L407.0 725.7 L399.9 724.7 L392.8 723.4 L385.8 722.1 L378.9 720.6 L372.1 718.9 L365.4 717.1 L358.8 715.1 L352.3 713.1 L346.0 710.8 L339.7 708.5 L333.7 706.0 L327.7 703.3 L322.0 700.6 L316.3 697.7 L310.9 694.7 L305.7 691.6 L300.6 688.4 L295.7 685.1 L291.0 681.7 L286.5 678.2 L282.3 674.6 L278.2 670.9 L274.4 667.1 L270.8 663.2 L267.4 659.3 L264.2 655.3 L261.3 651.2 L258.6 647.1 L256.2 642.9 L254.0 638.6 L252.1 634.3 L250.4 630.0 L249.0 625.7 L247.8 621.3 L246.9 616.9 L246.3 612.5 L245.9 608.0 L245.8 603.6 L248.0 602.9 L248.1 607.2 L248.5 611.5 L249.1 615.8 L250.0 620.1 L251.1 624.4 L252.5 628.7 L254.1 632.9 L256.0 637.1 L258.1 641.2 L260.4 645.3 L263.0 649.4 L265.8 653.4 L268.9 657.3 L272.1 661.2 L275.6 664.9 L279.3 668.7 L283.2 672.3 L287.3 675.8 L291.7 679.3 L296.2 682.7 L300.9 685.9 L305.8 689.1 L310.9 692.2 L316.2 695.1 L321.6 697.9 L327.2 700.7 L332.9 703.3 L338.8 705.7 L344.8 708.1 L351.0 710.3 L357.3 712.4 L363.7 714.4 L370.2 716.2 L376.8 717.9 L383.5 719.4 L390.3 720.8 L397.2 722.1 L404.1 723.2 L411.1 724.2 L418.2 725.0 L425.3 725.6 L432.4 726.1 L439.5 726.5 L446.7 726.7 L453.9 726.8 L461.0 726.7 L468.2 726.4 L475.4 726.1 L482.5 725.5 L489.6 724.8 L496.6 724.0 L503.6 723.0 L510.5 721.8 L517.4 720.6 L524.1 719.1 L530.8 717.6 L537.4 715.8 L543.9 714.0 L550.3 712.0Z" fill="url(#g73)" stroke="url(#g73)" stroke-width="0.7"/><path d="M477.8 480.0 L482.4 471.4 L487.4 462.9 L493.0 454.5 L499.0 446.3 L505.5 438.2 L512.5 430.2 L519.9 422.4 L527.8 414.7 L536.1 407.2 L544.9 399.9 L554.0 392.8 L563.6 385.9 L573.6 379.2 L584.0 372.7 L594.7 366.4 L605.8 360.4 L617.2 354.6 L629.0 349.0 L641.1 343.7 L653.5 338.7 L666.1 333.9 L679.1 329.4 L692.3 325.2 L705.7 321.3 L719.4 317.6 L733.2 314.3 L747.3 311.2 L761.5 308.5 L775.9 306.0 L790.4 303.9 L805.0 302.0 L819.7 300.5 L834.5 299.3 L849.4 298.4 L864.3 297.8 L879.2 297.5 L894.1 297.6 L909.0 298.0 L923.9 298.6 L938.8 299.6 L953.6 301.0 L968.2 302.6 L982.8 304.5 L997.3 306.8 L1011.6 309.3 L1025.8 312.2 L1039.8 315.4 L1053.6 318.8 L1067.2 322.6 L1080.5 326.6 L1093.7 330.9 L1106.5 335.5 L1119.1 340.3 L1131.4 345.5 L1143.4 350.8 L1155.1 356.5 L1166.4 362.3 L1177.4 368.5 L1188.0 374.8 L1198.3 381.4 L1208.1 388.1 L1217.6 395.1 L1226.6 402.3 L1235.3 409.7 L1243.4 417.2 L1251.2 424.9 L1258.5 432.8 L1265.3 440.8 L1271.7 449.0 L1277.5 457.3 L1282.9 465.7 L1287.8 474.2 L1292.2 482.8 L1296.1 491.6 L1299.5 500.3 L1302.4 509.2 L1304.7 518.1 L1306.6 527.1 L1307.9 536.0 L1308.7 545.0 L1308.9 554.1 L1306.6 553.5 L1306.4 544.5 L1305.6 535.6 L1304.3 526.6 L1302.4 517.7 L1300.1 508.8 L1297.2 500.0 L1293.8 491.3 L1290.0 482.6 L1285.6 474.0 L1280.7 465.5 L1275.3 457.1 L1269.4 448.9 L1263.1 440.7 L1256.3 432.8 L1249.0 424.9 L1241.3 417.2 L1233.1 409.7 L1224.5 402.4 L1215.5 395.2 L1206.0 388.3 L1196.2 381.5 L1186.0 375.0 L1175.4 368.7 L1164.4 362.6 L1153.1 356.8 L1141.5 351.2 L1129.5 345.8 L1117.3 340.7 L1104.7 335.9 L1091.9 331.4 L1078.8 327.1 L1065.5 323.1 L1051.9 319.4 L1038.2 315.9 L1024.2 312.8 L1010.1 310.0 L995.8 307.5 L981.4 305.2 L966.9 303.3 L952.2 301.7 L937.5 300.4 L922.7 299.5 L907.9 298.8 L893.0 298.4 L878.1 298.4 L863.3 298.7 L848.4 299.3 L833.6 300.2 L818.9 301.5 L804.2 303.0 L789.7 304.9 L775.2 307.0 L760.9 309.5 L746.8 312.3 L732.8 315.3 L719.0 318.7 L705.4 322.4 L692.1 326.3 L679.0 330.5 L666.1 335.1 L653.5 339.8 L641.2 344.9 L629.2 350.2 L617.5 355.7 L606.1 361.5 L595.1 367.6 L584.5 373.8 L574.2 380.3 L564.3 387.0 L554.8 393.9 L545.7 401.0 L537.0 408.3 L528.8 415.8 L521.0 423.5 L513.6 431.3 L506.7 439.3 L500.3 447.4 L494.4 455.6 L488.9 464.0 L484.0 472.4 L479.5 481.0Z" fill="url(#g74)" stroke="url(#g74)" stroke-width="0.7"/><path d="M1308.9 554.1 L1308.7 563.1 L1307.9 572.2 L1306.5 581.2 L1304.7 590.2 L1302.3 599.2 L1299.4 608.1 L1296.0 616.9 L1292.0 625.7 L1287.6 634.3 L1282.6 642.9 L1277.2 651.4 L1271.2 659.7 L1264.8 667.9 L1257.9 675.9 L1250.5 683.8 L1242.7 691.6 L1234.4 699.1 L1225.7 706.5 L1216.6 713.7 L1207.0 720.7 L1197.0 727.5 L1186.7 734.1 L1175.9 740.4 L1164.8 746.5 L1153.4 752.4 L1141.6 758.0 L1129.5 763.4 L1117.1 768.5 L1104.4 773.3 L1091.4 777.9 L1078.2 782.1 L1064.7 786.1 L1051.0 789.8 L1037.0 793.3 L1022.9 796.4 L1008.6 799.2 L994.2 801.7 L979.6 803.8 L964.9 805.7 L950.1 807.3 L935.3 808.5 L920.3 809.4 L905.3 810.0 L890.3 810.3 L875.3 810.3 L860.3 809.9 L845.3 809.2 L830.4 808.3 L815.5 806.9 L800.7 805.3 L786.1 803.3 L771.5 801.1 L757.1 798.5 L742.9 795.6 L728.8 792.5 L714.9 789.0 L701.3 785.2 L687.8 781.1 L674.6 776.8 L661.7 772.2 L649.1 767.3 L636.7 762.1 L624.7 756.7 L613.0 751.0 L601.6 745.1 L590.6 738.9 L579.9 732.5 L569.6 725.9 L559.7 719.1 L550.3 712.0 L550.9 709.7 L560.1 716.6 L569.8 723.4 L579.8 729.9 L590.2 736.2 L601.0 742.3 L612.1 748.2 L623.5 753.8 L635.3 759.2 L647.4 764.4 L659.7 769.2 L672.3 773.9 L685.2 778.2 L698.4 782.3 L711.7 786.1 L725.3 789.6 L739.0 792.8 L753.0 795.7 L767.1 798.3 L781.3 800.7 L795.7 802.7 L810.2 804.4 L824.7 805.8 L839.4 807.0 L854.1 807.8 L868.8 808.2 L883.6 808.4 L898.3 808.3 L913.1 807.8 L927.8 807.1 L942.4 806.0 L957.0 804.6 L971.5 803.0 L985.9 801.0 L1000.1 798.7 L1014.2 796.1 L1028.2 793.2 L1042.0 790.0 L1055.6 786.6 L1069.0 782.8 L1082.1 778.8 L1095.0 774.5 L1107.7 769.9 L1120.1 765.1 L1132.2 760.0 L1144.0 754.6 L1155.4 749.0 L1166.6 743.2 L1177.4 737.1 L1187.8 730.8 L1197.9 724.3 L1207.6 717.6 L1216.9 710.7 L1225.8 703.6 L1234.3 696.3 L1242.3 688.8 L1249.9 681.2 L1257.1 673.4 L1263.8 665.4 L1270.0 657.4 L1275.8 649.2 L1281.1 640.8 L1285.9 632.4 L1290.2 623.9 L1294.0 615.3 L1297.4 606.6 L1300.2 597.9 L1302.5 589.1 L1304.3 580.2 L1305.6 571.3 L1306.4 562.4 L1306.6 553.5Z" fill="url(#g75)" stroke="url(#g75)" stroke-width="0.7"/><path d="M248.0 602.9 L248.1 598.5 L248.5 594.1 L249.1 589.8 L250.0 585.5 L251.2 581.1 L252.6 576.9 L254.2 572.6 L256.1 568.4 L258.2 564.2 L260.6 560.1 L263.2 556.0 L266.1 552.0 L269.1 548.1 L272.5 544.2 L276.0 540.4 L279.8 536.7 L283.7 533.0 L287.9 529.5 L292.3 526.0 L296.9 522.6 L301.7 519.3 L306.6 516.2 L311.8 513.1 L317.1 510.2 L322.6 507.3 L328.3 504.6 L334.1 502.0 L340.0 499.5 L346.1 497.2 L352.4 495.0 L358.7 492.9 L365.2 491.0 L371.8 489.2 L378.5 487.5 L385.2 486.0 L392.1 484.6 L399.0 483.4 L406.0 482.4 L413.1 481.4 L420.2 480.7 L427.4 480.0 L434.6 479.6 L441.8 479.3 L449.0 479.1 L456.2 479.1 L463.4 479.2 L470.7 479.5 L477.8 480.0 L479.5 481.0 L472.4 480.5 L465.2 480.2 L458.0 480.0 L450.8 479.9 L443.6 480.1 L436.5 480.3 L429.3 480.8 L422.2 481.4 L415.1 482.1 L408.1 483.0 L401.1 484.0 L394.2 485.2 L387.3 486.5 L380.6 488.0 L373.9 489.6 L367.4 491.4 L360.9 493.3 L354.6 495.3 L348.3 497.5 L342.3 499.8 L336.3 502.2 L330.5 504.8 L324.9 507.5 L319.4 510.3 L314.1 513.2 L308.9 516.2 L303.9 519.4 L299.2 522.6 L294.6 526.0 L290.2 529.4 L286.0 532.9 L282.1 536.5 L278.3 540.2 L274.8 544.0 L271.5 547.9 L268.4 551.8 L265.5 555.8 L262.9 559.8 L260.5 563.9 L258.4 568.1 L256.5 572.3 L254.9 576.5 L253.5 580.7 L252.3 585.0 L251.5 589.3 L250.8 593.7 L250.4 598.0 L250.3 602.3Z" fill="url(#g76)" stroke="url(#g76)" stroke-width="0.7"/><path d="M550.3 712.0 L543.9 714.0 L537.4 715.8 L530.8 717.6 L524.1 719.1 L517.4 720.6 L510.5 721.8 L503.6 723.0 L496.6 724.0 L489.6 724.8 L482.5 725.5 L475.4 726.1 L468.2 726.4 L461.0 726.7 L453.9 726.8 L446.7 726.7 L439.5 726.5 L432.4 726.1 L425.3 725.6 L418.2 725.0 L411.1 724.2 L404.1 723.2 L397.2 722.1 L390.3 720.8 L383.5 719.4 L376.8 717.9 L370.2 716.2 L363.7 714.4 L357.3 712.4 L351.0 710.3 L344.8 708.1 L338.8 705.7 L332.9 703.3 L327.2 700.7 L321.6 697.9 L316.2 695.1 L310.9 692.2 L305.8 689.1 L300.9 685.9 L296.2 682.7 L291.7 679.3 L287.3 675.8 L283.2 672.3 L279.3 668.7 L275.6 664.9 L272.1 661.2 L268.9 657.3 L265.8 653.4 L263.0 649.4 L260.4 645.3 L258.1 641.2 L256.0 637.1 L254.1 632.9 L252.5 628.7 L251.1 624.4 L250.0 620.1 L249.1 615.8 L248.5 611.5 L248.1 607.2 L248.0 602.9 L250.3 602.3 L250.4 606.6 L250.8 610.9 L251.4 615.2 L252.3 619.5 L253.4 623.7 L254.8 628.0 L256.4 632.2 L258.3 636.3 L260.4 640.4 L262.7 644.5 L265.3 648.5 L268.1 652.5 L271.1 656.4 L274.4 660.2 L277.9 664.0 L281.6 667.6 L285.5 671.3 L289.6 674.8 L293.9 678.2 L298.4 681.5 L303.1 684.8 L308.0 687.9 L313.1 690.9 L318.3 693.8 L323.7 696.7 L329.3 699.3 L335.0 701.9 L340.9 704.4 L346.9 706.7 L353.0 708.9 L359.3 710.9 L365.6 712.9 L372.1 714.6 L378.7 716.3 L385.4 717.8 L392.2 719.2 L399.0 720.4 L405.9 721.5 L412.9 722.4 L419.9 723.2 L426.9 723.8 L434.0 724.3 L441.1 724.6 L448.2 724.8 L455.4 724.8 L462.5 724.7 L469.6 724.4 L476.7 724.0 L483.7 723.4 L490.8 722.7 L497.8 721.9 L504.7 720.8 L511.5 719.7 L518.3 718.4 L525.0 716.9 L531.6 715.3 L538.2 713.6 L544.6 711.7 L550.9 709.7Z" fill="url(#g77)" stroke="url(#g77)" stroke-width="0.7"/><path d="M479.5 481.0 L484.0 472.4 L488.9 464.0 L494.4 455.6 L500.3 447.4 L506.7 439.3 L513.6 431.3 L521.0 423.5 L528.8 415.8 L537.0 408.3 L545.7 401.0 L554.8 393.9 L564.3 387.0 L574.2 380.3 L584.5 373.8 L595.1 367.6 L606.1 361.5 L617.5 355.7 L629.2 350.2 L641.2 344.9 L653.5 339.8 L666.1 335.1 L679.0 330.5 L692.1 326.3 L705.4 322.4 L719.0 318.7 L732.8 315.3 L746.8 312.3 L760.9 309.5 L775.2 307.0 L789.7 304.9 L804.2 303.0 L818.9 301.5 L833.6 300.2 L848.4 299.3 L863.3 298.7 L878.1 298.4 L893.0 298.4 L907.9 298.8 L922.7 299.5 L937.5 300.4 L952.2 301.7 L966.9 303.3 L981.4 305.2 L995.8 307.5 L1010.1 310.0 L1024.2 312.8 L1038.2 315.9 L1051.9 319.4 L1065.5 323.1 L1078.8 327.1 L1091.9 331.4 L1104.7 335.9 L1117.3 340.7 L1129.5 345.8 L1141.5 351.2 L1153.1 356.8 L1164.4 362.6 L1175.4 368.7 L1186.0 375.0 L1196.2 381.5 L1206.0 388.3 L1215.5 395.2 L1224.5 402.4 L1233.1 409.7 L1241.3 417.2 L1249.0 424.9 L1256.3 432.8 L1263.1 440.7 L1269.4 448.9 L1275.3 457.1 L1280.7 465.5 L1285.6 474.0 L1290.0 482.6 L1293.8 491.3 L1297.2 500.0 L1300.1 508.8 L1302.4 517.7 L1304.3 526.6 L1305.6 535.6 L1306.4 544.5 L1306.6 553.5 L1304.2 553.2 L1304.0 544.3 L1303.2 535.3 L1301.9 526.4 L1300.1 517.5 L1297.7 508.7 L1294.9 499.9 L1291.5 491.2 L1287.6 482.5 L1283.2 474.0 L1278.4 465.5 L1273.0 457.2 L1267.1 449.0 L1260.8 440.9 L1254.0 432.9 L1246.8 425.1 L1239.0 417.5 L1230.9 410.0 L1222.3 402.7 L1213.3 395.6 L1203.9 388.7 L1194.1 382.0 L1183.9 375.5 L1173.3 369.2 L1162.4 363.1 L1151.1 357.3 L1139.5 351.8 L1127.6 346.4 L1115.4 341.4 L1102.8 336.6 L1090.0 332.1 L1077.0 327.8 L1063.7 323.8 L1050.2 320.2 L1036.5 316.8 L1022.6 313.7 L1008.5 310.9 L994.3 308.4 L979.9 306.2 L965.4 304.3 L950.8 302.7 L936.2 301.5 L921.4 300.5 L906.7 299.9 L891.8 299.5 L877.0 299.5 L862.2 299.8 L847.4 300.5 L832.7 301.4 L818.0 302.7 L803.4 304.2 L789.0 306.1 L774.6 308.3 L760.4 310.8 L746.3 313.6 L732.4 316.7 L718.7 320.0 L705.1 323.7 L691.9 327.7 L678.8 331.9 L666.0 336.4 L653.5 341.2 L641.3 346.3 L629.3 351.6 L617.7 357.1 L606.5 362.9 L595.5 369.0 L585.0 375.2 L574.8 381.7 L564.9 388.4 L555.5 395.3 L546.5 402.5 L537.9 409.7 L529.8 417.2 L522.1 424.9 L514.8 432.7 L508.0 440.6 L501.7 448.7 L495.8 456.9 L490.5 465.3 L485.6 473.7 L481.2 482.3Z" fill="url(#g78)" stroke="url(#g78)" stroke-width="0.7"/><path d="M1306.6 553.5 L1306.4 562.4 L1305.6 571.3 L1304.3 580.2 L1302.5 589.1 L1300.2 597.9 L1297.4 606.6 L1294.0 615.3 L1290.2 623.9 L1285.9 632.4 L1281.1 640.8 L1275.8 649.2 L1270.0 657.4 L1263.8 665.4 L1257.1 673.4 L1249.9 681.2 L1242.3 688.8 L1234.3 696.3 L1225.8 703.6 L1216.9 710.7 L1207.6 717.6 L1197.9 724.3 L1187.8 730.8 L1177.4 737.1 L1166.6 743.2 L1155.4 749.0 L1144.0 754.6 L1132.2 760.0 L1120.1 765.1 L1107.7 769.9 L1095.0 774.5 L1082.1 778.8 L1069.0 782.8 L1055.6 786.6 L1042.0 790.0 L1028.2 793.2 L1014.2 796.1 L1000.1 798.7 L985.9 801.0 L971.5 803.0 L957.0 804.6 L942.4 806.0 L927.8 807.1 L913.1 807.8 L898.3 808.3 L883.6 808.4 L868.8 808.2 L854.1 807.8 L839.4 807.0 L824.7 805.8 L810.2 804.4 L795.7 802.7 L781.3 800.7 L767.1 798.3 L753.0 795.7 L739.0 792.8 L725.3 789.6 L711.7 786.1 L698.4 782.3 L685.2 778.2 L672.3 773.9 L659.7 769.2 L647.4 764.4 L635.3 759.2 L623.5 753.8 L612.1 748.2 L601.0 742.3 L590.2 736.2 L579.8 729.9 L569.8 723.4 L560.1 716.6 L550.9 709.7 L551.5 707.5 L560.7 714.5 L570.2 721.2 L580.2 727.7 L590.5 734.1 L601.2 740.2 L612.2 746.1 L623.6 751.7 L635.2 757.1 L647.2 762.2 L659.5 767.1 L672.0 771.8 L684.9 776.1 L697.9 780.2 L711.2 784.0 L724.7 787.5 L738.4 790.8 L752.3 793.7 L766.3 796.4 L780.5 798.7 L794.8 800.8 L809.2 802.5 L823.7 804.0 L838.3 805.1 L852.9 805.9 L867.6 806.5 L882.3 806.7 L897.0 806.5 L911.7 806.1 L926.3 805.4 L940.9 804.4 L955.5 803.0 L969.9 801.4 L984.2 799.4 L998.5 797.2 L1012.5 794.6 L1026.4 791.7 L1040.2 788.6 L1053.7 785.2 L1067.1 781.4 L1080.2 777.4 L1093.1 773.2 L1105.7 768.6 L1118.1 763.8 L1130.1 758.8 L1141.9 753.4 L1153.4 747.9 L1164.5 742.1 L1175.3 736.0 L1185.7 729.8 L1195.7 723.3 L1205.4 716.6 L1214.7 709.7 L1223.6 702.6 L1232.0 695.4 L1240.0 688.0 L1247.6 680.4 L1254.8 672.6 L1261.5 664.7 L1267.7 656.6 L1273.5 648.5 L1278.8 640.2 L1283.6 631.8 L1287.9 623.3 L1291.7 614.7 L1295.0 606.1 L1297.8 597.4 L1300.1 588.6 L1301.9 579.8 L1303.2 571.0 L1304.0 562.1 L1304.2 553.2Z" fill="url(#g79)" stroke="url(#g79)" stroke-width="0.7"/><path d="M250.3 602.3 L250.4 598.0 L250.8 593.7 L251.5 589.3 L252.3 585.0 L253.5 580.7 L254.9 576.5 L256.5 572.3 L258.4 568.1 L260.5 563.9 L262.9 559.8 L265.5 555.8 L268.4 551.8 L271.5 547.9 L274.8 544.0 L278.3 540.2 L282.1 536.5 L286.0 532.9 L290.2 529.4 L294.6 526.0 L299.2 522.6 L303.9 519.4 L308.9 516.2 L314.1 513.2 L319.4 510.3 L324.9 507.5 L330.5 504.8 L336.3 502.2 L342.3 499.8 L348.3 497.5 L354.6 495.3 L360.9 493.3 L367.4 491.4 L373.9 489.6 L380.6 488.0 L387.3 486.5 L394.2 485.2 L401.1 484.0 L408.1 483.0 L415.1 482.1 L422.2 481.4 L429.3 480.8 L436.5 480.3 L443.6 480.1 L450.8 479.9 L458.0 480.0 L465.2 480.2 L472.4 480.5 L479.5 481.0 L481.2 482.3 L474.3 481.7 L467.3 481.4 L460.3 481.1 L453.3 481.0 L446.3 481.1 L439.3 481.3 L432.3 481.7 L425.4 482.2 L418.5 482.9 L411.6 483.7 L404.8 484.6 L398.0 485.7 L391.3 486.9 L384.7 488.3 L378.2 489.8 L371.7 491.4 L365.4 493.2 L359.1 495.1 L353.0 497.2 L347.0 499.4 L341.1 501.7 L335.4 504.1 L329.8 506.6 L324.4 509.3 L319.1 512.0 L314.0 514.9 L309.0 517.9 L304.2 521.0 L299.6 524.2 L295.2 527.5 L291.0 530.8 L287.0 534.3 L283.2 537.8 L279.6 541.5 L276.2 545.2 L273.0 548.9 L270.0 552.8 L267.3 556.6 L264.8 560.6 L262.5 564.6 L260.5 568.6 L258.7 572.7 L257.1 576.8 L255.7 581.0 L254.6 585.2 L253.8 589.3 L253.2 593.6 L252.8 597.8 L252.7 602.0Z" fill="url(#g80)" stroke="url(#g80)" stroke-width="0.7"/><path d="M550.9 709.7 L544.6 711.7 L538.2 713.6 L531.6 715.3 L525.0 716.9 L518.3 718.4 L511.5 719.7 L504.7 720.8 L497.8 721.9 L490.8 722.7 L483.7 723.4 L476.7 724.0 L469.6 724.4 L462.5 724.7 L455.4 724.8 L448.2 724.8 L441.1 724.6 L434.0 724.3 L426.9 723.8 L419.9 723.2 L412.9 722.4 L405.9 721.5 L399.0 720.4 L392.2 719.2 L385.4 717.8 L378.7 716.3 L372.1 714.6 L365.6 712.9 L359.3 710.9 L353.0 708.9 L346.9 706.7 L340.9 704.4 L335.0 701.9 L329.3 699.3 L323.7 696.7 L318.3 693.8 L313.1 690.9 L308.0 687.9 L303.1 684.8 L298.4 681.5 L293.9 678.2 L289.6 674.8 L285.5 671.3 L281.6 667.6 L277.9 664.0 L274.4 660.2 L271.1 656.4 L268.1 652.5 L265.3 648.5 L262.7 644.5 L260.4 640.4 L258.3 636.3 L256.4 632.2 L254.8 628.0 L253.4 623.7 L252.3 619.5 L251.4 615.2 L250.8 610.9 L250.4 606.6 L250.3 602.3 L252.7 602.0 L252.8 606.3 L253.2 610.6 L253.8 614.8 L254.7 619.1 L255.8 623.3 L257.2 627.5 L258.8 631.6 L260.6 635.8 L262.7 639.8 L265.1 643.9 L267.6 647.9 L270.4 651.8 L273.5 655.7 L276.7 659.5 L280.2 663.2 L283.9 666.8 L287.8 670.4 L291.9 673.9 L296.2 677.3 L300.7 680.6 L305.4 683.8 L310.2 686.9 L315.3 689.9 L320.5 692.8 L325.9 695.6 L331.4 698.2 L337.1 700.8 L343.0 703.2 L349.0 705.5 L355.1 707.6 L361.3 709.6 L367.7 711.5 L374.1 713.3 L380.7 714.9 L387.3 716.4 L394.1 717.7 L400.9 718.9 L407.7 719.9 L414.6 720.8 L421.6 721.6 L428.6 722.2 L435.7 722.6 L442.7 722.9 L449.8 723.1 L456.9 723.1 L464.0 722.9 L471.0 722.6 L478.0 722.2 L485.1 721.5 L492.0 720.8 L498.9 719.9 L505.8 718.8 L512.6 717.6 L519.3 716.3 L526.0 714.8 L532.5 713.2 L539.0 711.4 L545.3 709.5 L551.5 707.5Z" fill="url(#g81)" stroke="url(#g81)" stroke-width="0.7"/><path d="M481.2 482.3 L485.6 473.7 L490.5 465.3 L495.8 456.9 L501.7 448.7 L508.0 440.6 L514.8 432.7 L522.1 424.9 L529.8 417.2 L537.9 409.7 L546.5 402.5 L555.5 395.3 L564.9 388.4 L574.8 381.7 L585.0 375.2 L595.5 369.0 L606.5 362.9 L617.7 357.1 L629.3 351.6 L641.3 346.3 L653.5 341.2 L666.0 336.4 L678.8 331.9 L691.9 327.7 L705.1 323.7 L718.7 320.0 L732.4 316.7 L746.3 313.6 L760.4 310.8 L774.6 308.3 L789.0 306.1 L803.4 304.2 L818.0 302.7 L832.7 301.4 L847.4 300.5 L862.2 299.8 L877.0 299.5 L891.8 299.5 L906.7 299.9 L921.4 300.5 L936.2 301.5 L950.8 302.7 L965.4 304.3 L979.9 306.2 L994.3 308.4 L1008.5 310.9 L1022.6 313.7 L1036.5 316.8 L1050.2 320.2 L1063.7 323.8 L1077.0 327.8 L1090.0 332.1 L1102.8 336.6 L1115.4 341.4 L1127.6 346.4 L1139.5 351.8 L1151.1 357.3 L1162.4 363.1 L1173.3 369.2 L1183.9 375.5 L1194.1 382.0 L1203.9 388.7 L1213.3 395.6 L1222.3 402.7 L1230.9 410.0 L1239.0 417.5 L1246.8 425.1 L1254.0 432.9 L1260.8 440.9 L1267.1 449.0 L1273.0 457.2 L1278.4 465.5 L1283.2 474.0 L1287.6 482.5 L1291.5 491.2 L1294.9 499.9 L1297.7 508.7 L1300.1 517.5 L1301.9 526.4 L1303.2 535.3 L1304.0 544.3 L1304.2 553.2 L1301.8 553.1 L1301.6 544.3 L1300.8 535.5 L1299.5 526.7 L1297.8 518.0 L1295.5 509.3 L1292.7 500.6 L1289.4 492.1 L1285.6 483.6 L1281.4 475.1 L1276.6 466.8 L1271.4 458.6 L1265.7 450.5 L1259.5 442.5 L1252.9 434.7 L1245.8 427.0 L1238.3 419.4 L1230.4 412.0 L1222.0 404.8 L1213.2 397.8 L1204.1 390.9 L1194.5 384.3 L1184.5 377.8 L1174.2 371.6 L1163.6 365.6 L1152.6 359.8 L1141.2 354.3 L1129.6 349.0 L1117.6 343.9 L1105.4 339.1 L1092.9 334.6 L1080.1 330.3 L1067.1 326.3 L1053.9 322.6 L1040.5 319.2 L1026.9 316.0 L1013.1 313.2 L999.1 310.6 L985.1 308.3 L970.9 306.3 L956.5 304.7 L942.1 303.3 L927.7 302.2 L913.1 301.5 L898.6 301.0 L884.0 300.8 L869.4 301.0 L854.9 301.5 L840.3 302.2 L825.9 303.3 L811.5 304.7 L797.2 306.4 L783.0 308.4 L768.9 310.7 L755.0 313.2 L741.2 316.1 L727.6 319.3 L714.2 322.7 L700.9 326.4 L688.0 330.4 L675.2 334.7 L662.7 339.3 L650.5 344.1 L638.6 349.1 L627.0 354.4 L615.6 360.0 L604.7 365.8 L594.0 371.8 L583.7 378.0 L573.8 384.4 L564.2 391.1 L555.1 397.9 L546.3 405.0 L538.0 412.2 L530.1 419.6 L522.6 427.1 L515.5 434.9 L508.9 442.7 L502.8 450.7 L497.1 458.8 L491.9 467.0 L487.2 475.4 L482.9 483.8Z" fill="url(#g82)" stroke="url(#g82)" stroke-width="0.7"/><path d="M1304.2 553.2 L1304.0 562.1 L1303.2 571.0 L1301.9 579.8 L1300.1 588.6 L1297.8 597.4 L1295.0 606.1 L1291.7 614.7 L1287.9 623.3 L1283.6 631.8 L1278.8 640.2 L1273.5 648.5 L1267.7 656.6 L1261.5 664.7 L1254.8 672.6 L1247.6 680.4 L1240.0 688.0 L1232.0 695.4 L1223.6 702.6 L1214.7 709.7 L1205.4 716.6 L1195.7 723.3 L1185.7 729.8 L1175.3 736.0 L1164.5 742.1 L1153.4 747.9 L1141.9 753.4 L1130.1 758.8 L1118.1 763.8 L1105.7 768.6 L1093.1 773.2 L1080.2 777.4 L1067.1 781.4 L1053.7 785.2 L1040.2 788.6 L1026.4 791.7 L1012.5 794.6 L998.5 797.2 L984.2 799.4 L969.9 801.4 L955.5 803.0 L940.9 804.4 L926.3 805.4 L911.7 806.1 L897.0 806.5 L882.3 806.7 L867.6 806.5 L852.9 805.9 L838.3 805.1 L823.7 804.0 L809.2 802.5 L794.8 800.8 L780.5 798.7 L766.3 796.4 L752.3 793.7 L738.4 790.8 L724.7 787.5 L711.2 784.0 L697.9 780.2 L684.9 776.1 L672.0 771.8 L659.5 767.1 L647.2 762.2 L635.2 757.1 L623.6 751.7 L612.2 746.1 L601.2 740.2 L590.5 734.1 L580.2 727.7 L570.2 721.2 L560.7 714.5 L551.5 707.5 L552.2 705.5 L561.2 712.5 L570.7 719.2 L580.5 725.8 L590.8 732.1 L601.4 738.2 L612.3 744.1 L623.6 749.7 L635.2 755.1 L647.1 760.3 L659.3 765.2 L671.7 769.9 L684.5 774.2 L697.4 778.3 L710.7 782.2 L724.1 785.7 L737.7 789.0 L751.5 791.9 L765.5 794.6 L779.6 797.0 L793.8 799.1 L808.2 800.8 L822.6 802.3 L837.1 803.5 L851.7 804.3 L866.3 804.9 L881.0 805.1 L895.6 805.0 L910.2 804.6 L924.8 803.9 L939.4 802.9 L953.9 801.6 L968.3 800.0 L982.6 798.1 L996.7 795.8 L1010.8 793.3 L1024.7 790.5 L1038.4 787.4 L1051.9 784.0 L1065.2 780.3 L1078.3 776.3 L1091.1 772.1 L1103.7 767.6 L1116.1 762.8 L1128.1 757.7 L1139.8 752.5 L1151.3 746.9 L1162.4 741.2 L1173.1 735.2 L1183.5 728.9 L1193.5 722.5 L1203.2 715.8 L1212.4 709.0 L1221.3 701.9 L1229.7 694.7 L1237.8 687.3 L1245.3 679.7 L1252.5 672.0 L1259.1 664.2 L1265.4 656.1 L1271.1 648.0 L1276.4 639.8 L1281.2 631.4 L1285.5 622.9 L1289.3 614.4 L1292.6 605.8 L1295.4 597.1 L1297.7 588.4 L1299.5 579.6 L1300.8 570.8 L1301.6 561.9 L1301.8 553.1Z" fill="url(#g83)" stroke="url(#g83)" stroke-width="0.7"/><path d="M252.7 602.0 L252.8 597.8 L253.2 593.6 L253.8 589.3 L254.6 585.2 L255.7 581.0 L257.1 576.8 L258.7 572.7 L260.5 568.6 L262.5 564.6 L264.8 560.6 L267.3 556.6 L270.0 552.8 L273.0 548.9 L276.2 545.2 L279.6 541.5 L283.2 537.8 L287.0 534.3 L291.0 530.8 L295.2 527.5 L299.6 524.2 L304.2 521.0 L309.0 517.9 L314.0 514.9 L319.1 512.0 L324.4 509.3 L329.8 506.6 L335.4 504.1 L341.1 501.7 L347.0 499.4 L353.0 497.2 L359.1 495.1 L365.4 493.2 L371.7 491.4 L378.2 489.8 L384.7 488.3 L391.3 486.9 L398.0 485.7 L404.8 484.6 L411.6 483.7 L418.5 482.9 L425.4 482.2 L432.3 481.7 L439.3 481.3 L446.3 481.1 L453.3 481.0 L460.3 481.1 L467.3 481.4 L474.3 481.7 L481.2 482.3 L482.9 483.8 L476.0 483.2 L469.1 482.8 L462.2 482.5 L455.2 482.4 L448.3 482.4 L441.3 482.6 L434.4 482.9 L427.5 483.4 L420.6 484.0 L413.7 484.8 L406.9 485.7 L400.2 486.7 L393.5 487.9 L386.9 489.2 L380.4 490.7 L374.0 492.3 L367.7 494.1 L361.4 495.9 L355.3 498.0 L349.3 500.1 L343.5 502.4 L337.8 504.7 L332.2 507.2 L326.7 509.9 L321.5 512.6 L316.3 515.4 L311.4 518.4 L306.6 521.5 L302.0 524.6 L297.6 527.9 L293.4 531.2 L289.4 534.6 L285.6 538.2 L282.0 541.8 L278.6 545.4 L275.4 549.2 L272.4 553.0 L269.7 556.8 L267.2 560.7 L264.9 564.7 L262.9 568.7 L261.1 572.8 L259.5 576.9 L258.1 581.0 L257.1 585.1 L256.2 589.3 L255.6 593.5 L255.2 597.7 L255.1 601.9Z" fill="url(#g84)" stroke="url(#g84)" stroke-width="0.7"/><path d="M551.5 707.5 L545.3 709.5 L539.0 711.4 L532.5 713.2 L526.0 714.8 L519.3 716.3 L512.6 717.6 L505.8 718.8 L498.9 719.9 L492.0 720.8 L485.1 721.5 L478.0 722.2 L471.0 722.6 L464.0 722.9 L456.9 723.1 L449.8 723.1 L442.7 722.9 L435.7 722.6 L428.6 722.2 L421.6 721.6 L414.6 720.8 L407.7 719.9 L400.9 718.9 L394.1 717.7 L387.3 716.4 L380.7 714.9 L374.1 713.3 L367.7 711.5 L361.3 709.6 L355.1 707.6 L349.0 705.5 L343.0 703.2 L337.1 700.8 L331.4 698.2 L325.9 695.6 L320.5 692.8 L315.3 689.9 L310.2 686.9 L305.4 683.8 L300.7 680.6 L296.2 677.3 L291.9 673.9 L287.8 670.4 L283.9 666.8 L280.2 663.2 L276.7 659.5 L273.5 655.7 L270.4 651.8 L267.6 647.9 L265.1 643.9 L262.7 639.8 L260.6 635.8 L258.8 631.6 L257.2 627.5 L255.8 623.3 L254.7 619.1 L253.8 614.8 L253.2 610.6 L252.8 606.3 L252.7 602.0 L255.1 601.9 L255.2 606.1 L255.6 610.2 L256.2 614.4 L257.0 618.5 L258.1 622.7 L259.4 626.8 L261.0 630.8 L262.8 634.9 L264.8 638.9 L267.0 642.8 L269.5 646.7 L272.2 650.6 L275.1 654.3 L278.3 658.1 L281.6 661.7 L285.2 665.3 L289.0 668.8 L292.9 672.2 L297.1 675.5 L301.4 678.8 L306.0 681.9 L310.7 685.0 L315.6 688.0 L320.6 690.8 L325.9 693.5 L331.2 696.2 L336.7 698.7 L342.4 701.1 L348.2 703.3 L354.1 705.5 L360.2 707.5 L366.3 709.4 L372.6 711.2 L379.0 712.8 L385.4 714.3 L392.0 715.7 L398.6 716.9 L405.2 718.0 L412.0 718.9 L418.8 719.7 L425.6 720.4 L432.5 720.9 L439.3 721.2 L446.2 721.5 L453.2 721.5 L460.1 721.5 L467.0 721.2 L473.9 720.9 L480.7 720.4 L487.5 719.7 L494.3 718.9 L501.1 718.0 L507.7 716.9 L514.3 715.7 L520.9 714.3 L527.3 712.8 L533.7 711.2 L540.0 709.4 L546.1 707.5 L552.2 705.5Z" fill="url(#g85)" stroke="url(#g85)" stroke-width="0.7"/><path d="M482.9 483.8 L487.2 475.3 L491.9 467.0 L497.1 458.7 L502.8 450.6 L509.0 442.6 L515.6 434.8 L522.7 427.0 L530.2 419.5 L538.1 412.1 L546.5 404.8 L555.3 397.8 L564.5 390.9 L574.1 384.3 L584.0 377.8 L594.3 371.6 L605.0 365.6 L616.0 359.8 L627.4 354.2 L639.1 348.9 L651.0 343.9 L663.3 339.1 L675.8 334.5 L688.6 330.2 L701.6 326.2 L714.9 322.5 L728.3 319.1 L742.0 315.9 L755.8 313.1 L769.8 310.5 L783.9 308.2 L798.1 306.3 L812.5 304.6 L826.9 303.2 L841.4 302.2 L856.0 301.4 L870.6 301.0 L885.2 300.8 L899.8 301.0 L914.4 301.5 L928.9 302.3 L943.4 303.4 L957.8 304.8 L972.2 306.5 L986.4 308.5 L1000.5 310.8 L1014.5 313.4 L1028.3 316.3 L1041.9 319.5 L1055.3 323.0 L1068.5 326.8 L1081.5 330.8 L1094.3 335.1 L1106.8 339.7 L1119.0 344.5 L1131.0 349.6 L1142.6 354.9 L1153.9 360.5 L1164.9 366.3 L1175.6 372.4 L1185.8 378.7 L1195.8 385.1 L1205.3 391.8 L1214.4 398.7 L1223.2 405.8 L1231.5 413.0 L1239.4 420.5 L1246.9 428.1 L1253.9 435.8 L1260.5 443.7 L1266.6 451.7 L1272.2 459.8 L1277.4 468.1 L1282.1 476.5 L1286.3 484.9 L1290.0 493.4 L1293.2 502.1 L1295.9 510.7 L1298.1 519.5 L1299.8 528.2 L1301.0 537.0 L1301.7 545.8 L1301.8 554.7 L1301.5 563.5 L1300.6 572.3 L1299.3 581.1 L1297.4 589.8 L1295.0 598.5 L1292.1 607.2 L1288.7 615.8 L1284.9 624.3 L1280.5 632.7 L1275.6 641.0 L1270.3 649.2 L1264.5 657.3 L1258.2 665.3 L1251.5 673.1 L1244.3 680.8 L1236.7 688.3 L1228.6 695.7 L1220.2 702.9 L1211.3 709.9 L1202.0 716.7 L1192.3 723.3 L1182.3 729.7 L1171.9 735.9 L1161.1 741.8 L1150.0 747.6 L1138.5 753.1 L1126.8 758.3 L1114.8 763.3 L1102.4 768.0 L1089.8 772.5 L1077.0 776.7 L1063.9 780.6 L1050.6 784.3 L1037.1 787.7 L1023.4 790.7 L1009.6 793.5 L995.6 796.0 L981.4 798.2 L967.1 800.1 L952.8 801.7 L938.3 803.0 L923.8 804.0 L909.2 804.7 L894.6 805.0 L880.0 805.1 L865.4 804.8 L850.8 804.3 L836.3 803.4 L821.8 802.2 L807.4 800.7 L793.1 799.0 L778.9 796.9 L764.8 794.5 L750.9 791.8 L737.2 788.8 L723.6 785.6 L710.2 782.0 L697.0 778.2 L684.1 774.1 L671.4 769.7 L659.0 765.1 L646.8 760.2 L634.9 755.0 L623.4 749.6 L612.1 744.0 L601.2 738.1 L590.7 732.0 L580.5 725.7 L570.6 719.2 L561.2 712.4 L552.2 705.5 L552.2 705.5 L546.1 707.5 L539.9 709.4 L533.6 711.2 L527.3 712.8 L520.8 714.3 L514.2 715.7 L507.6 716.9 L500.9 718.0 L494.1 718.9 L487.3 719.7 L480.5 720.4 L473.6 720.9 L466.7 721.2 L459.8 721.5 L452.8 721.5 L445.9 721.4 L439.0 721.2 L432.1 720.9 L425.2 720.3 L418.4 719.7 L411.6 718.9 L404.8 717.9 L398.1 716.8 L391.5 715.6 L384.9 714.2 L378.5 712.7 L372.1 711.0 L365.8 709.3 L359.7 707.4 L353.6 705.3 L347.7 703.1 L341.9 700.9 L336.2 698.4 L330.7 695.9 L325.3 693.3 L320.1 690.5 L315.0 687.6 L310.1 684.7 L305.4 681.6 L300.9 678.4 L296.6 675.1 L292.4 671.8 L288.5 668.3 L284.7 664.8 L281.2 661.2 L277.8 657.6 L274.7 653.8 L271.8 650.0 L269.1 646.1 L266.7 642.2 L264.5 638.3 L262.5 634.2 L260.7 630.2 L259.2 626.1 L257.9 622.0 L256.9 617.9 L256.1 613.7 L255.5 609.5 L255.2 605.3 L255.1 601.2 L255.3 597.0 L255.7 592.8 L256.3 588.6 L257.2 584.5 L258.3 580.3 L259.7 576.2 L261.3 572.2 L263.2 568.1 L265.2 564.1 L267.5 560.2 L270.1 556.3 L272.8 552.4 L275.8 548.7 L279.0 544.9 L282.4 541.3 L286.0 537.7 L289.9 534.2 L293.9 530.8 L298.1 527.5 L302.5 524.3 L307.1 521.1 L311.9 518.1 L316.8 515.2 L321.9 512.3 L327.2 509.6 L332.6 507.0 L338.2 504.5 L343.9 502.2 L349.8 499.9 L355.7 497.8 L361.8 495.8 L368.1 494.0 L374.4 492.2 L380.8 490.6 L387.3 489.2 L393.8 487.9 L400.5 486.7 L407.2 485.6 L414.0 484.7 L420.8 484.0 L427.7 483.4 L434.6 482.9 L441.5 482.6 L448.4 482.4 L455.3 482.4 L462.3 482.5 L469.2 482.8 L476.1 483.2 L482.9 483.8ZM1258.2 510.5 L1260.5 518.4 L1262.2 526.4 L1263.5 534.4 L1264.4 542.4 L1264.8 550.4 L1264.7 558.4 L1264.2 566.4 L1263.2 574.4 L1261.7 582.4 L1259.8 590.3 L1257.4 598.2 L1254.6 606.0 L1251.3 613.8 L1247.6 621.5 L1243.4 629.1 L1238.8 636.6 L1233.7 644.0 L1228.3 651.4 L1222.4 658.5 L1216.1 665.6 L1209.4 672.5 L1202.3 679.3 L1194.8 685.9 L1186.9 692.4 L1178.7 698.7 L1170.1 704.8 L1161.2 710.7 L1151.9 716.4 L1142.3 722.0 L1132.4 727.3 L1122.1 732.4 L1111.6 737.3 L1100.8 742.0 L1089.8 746.4 L1078.5 750.6 L1067.0 754.6 L1055.2 758.3 L1043.2 761.8 L1031.1 765.0 L1018.7 768.0 L1006.2 770.7 L993.6 773.1 L980.8 775.3 L967.9 777.2 L954.9 778.8 L941.8 780.1 L928.6 781.2 L915.4 782.0 L902.2 782.5 L888.9 782.7 L875.6 782.7 L862.4 782.3 L849.1 781.7 L835.9 780.9 L822.8 779.7 L809.7 778.2 L796.7 776.5 L783.9 774.5 L771.1 772.3 L758.5 769.8 L746.1 767.0 L733.8 763.9 L721.7 760.6 L709.8 757.1 L698.1 753.2 L686.6 749.2 L675.4 744.9 L664.5 740.4 L653.8 735.6 L643.3 730.6 L633.2 725.5 L623.4 720.0 L613.9 714.4 L604.7 708.6 L595.9 702.6 L587.4 696.5 L579.3 690.1 L571.6 683.6 L564.2 676.9 L557.2 670.1 L550.6 663.1 L544.5 656.0 L538.7 648.8 L533.4 641.5 L528.5 634.0 L524.0 626.4 L520.0 618.8 L516.4 611.1 L513.3 603.3 L510.6 595.4 L508.3 587.5 L506.6 579.6 L505.3 571.6 L504.4 563.6 L504.0 555.6 L504.1 547.6 L504.6 539.5 L505.6 531.5 L507.1 523.6 L509.0 515.6 L511.4 507.7 L514.2 499.9 L517.5 492.1 L521.2 484.4 L525.4 476.8 L530.0 469.3 L535.1 461.9 L540.5 454.6 L546.4 447.4 L552.7 440.3 L559.4 433.4 L566.5 426.7 L574.0 420.0 L581.9 413.6 L590.1 407.3 L598.7 401.2 L607.6 395.2 L616.9 389.5 L626.5 384.0 L636.4 378.6 L646.7 373.5 L657.2 368.6 L668.0 364.0 L679.0 359.5 L690.3 355.3 L701.8 351.3 L713.6 347.6 L725.6 344.1 L737.7 340.9 L750.1 338.0 L762.6 335.3 L775.2 332.8 L788.0 330.7 L800.9 328.8 L813.9 327.2 L827.0 325.8 L840.2 324.8 L853.4 324.0 L866.6 323.5 L879.9 323.2 L893.2 323.3 L906.4 323.6 L919.7 324.2 L932.9 325.1 L946.0 326.3 L959.1 327.7 L972.1 329.4 L984.9 331.4 L997.7 333.7 L1010.3 336.2 L1022.7 339.0 L1035.0 342.0 L1047.1 345.3 L1059.0 348.9 L1070.7 352.7 L1082.2 356.8 L1093.4 361.0 L1104.3 365.6 L1115.0 370.3 L1125.5 375.3 L1135.6 380.5 L1145.4 385.9 L1154.9 391.5 L1164.1 397.3 L1172.9 403.3 L1181.4 409.5 L1189.5 415.8 L1197.2 422.3 L1204.6 429.0 L1211.6 435.8 L1218.2 442.8 L1224.3 449.9 L1230.1 457.1 L1235.4 464.5 L1240.3 471.9 L1244.8 479.5 L1248.8 487.1 L1252.4 494.9 L1255.5 502.7 L1258.2 510.5ZM521.7 677.7 L517.3 679.1 L512.8 680.4 L508.3 681.6 L503.6 682.7 L498.9 683.8 L494.2 684.7 L489.4 685.5 L484.5 686.2 L479.6 686.8 L474.7 687.3 L469.8 687.7 L464.8 688.0 L459.8 688.2 L454.8 688.3 L449.8 688.3 L444.8 688.2 L439.9 687.9 L434.9 687.6 L430.0 687.2 L425.1 686.6 L420.2 686.0 L415.3 685.2 L410.5 684.4 L405.8 683.4 L401.1 682.4 L396.5 681.2 L392.0 680.0 L387.5 678.7 L383.1 677.2 L378.8 675.7 L374.6 674.1 L370.4 672.4 L366.4 670.6 L362.5 668.7 L358.7 666.8 L355.0 664.8 L351.4 662.7 L348.0 660.5 L344.7 658.2 L341.5 655.9 L338.4 653.5 L335.5 651.1 L332.7 648.6 L330.1 646.0 L327.7 643.4 L325.3 640.7 L323.2 638.0 L321.2 635.2 L319.3 632.4 L317.6 629.6 L316.1 626.7 L314.8 623.8 L313.6 620.9 L312.6 617.9 L311.7 614.9 L311.1 612.0 L310.6 609.0 L310.3 605.9 L310.1 602.9 L310.1 599.9 L310.4 596.9 L310.7 593.9 L311.3 590.9 L312.0 587.9 L312.9 585.0 L314.0 582.0 L315.2 579.1 L316.6 576.2 L318.2 573.3 L319.9 570.5 L321.8 567.7 L323.9 565.0 L326.1 562.3 L328.4 559.6 L331.0 557.0 L333.6 554.5 L336.4 552.0 L339.4 549.6 L342.5 547.2 L345.7 544.9 L349.1 542.7 L352.6 540.5 L356.2 538.4 L359.9 536.4 L363.8 534.5 L367.7 532.7 L371.8 530.9 L375.9 529.2 L380.2 527.7 L384.5 526.2 L388.9 524.8 L393.4 523.5 L398.0 522.3 L402.6 521.2 L407.3 520.1 L412.1 519.2 L416.9 518.4 L421.8 517.7 L426.6 517.1 L431.6 516.6 L436.5 516.2 L441.5 515.9 L446.5 515.7 L451.5 515.6 L456.4 515.6 L461.4 515.8 L466.4 516.0 L471.4 516.3 L471.4 516.3 L469.5 525.1 L468.2 533.8 L467.3 542.6 L467.0 551.4 L467.1 560.2 L467.8 569.0 L469.0 577.8 L470.7 586.5 L472.9 595.2 L475.6 603.9 L478.8 612.5 L482.5 621.0 L486.7 629.4 L491.3 637.8 L496.5 646.0 L502.1 654.1 L508.2 662.1 L514.7 670.0 L521.7 677.7Z" fill="url(#topf)" fill-rule="evenodd"/><g clip-path="url(#cin)"><rect x="480" y="300" width="820" height="500" fill="url(#g86)"/><rect x="480" y="300" width="820" height="500" fill="url(#iwv)"/><path d="M1258.2 571.4 L1260.5 579.3 L1262.2 587.3 L1263.5 595.3 L1264.4 603.3 L1264.8 611.3 L1264.7 619.3 L1264.2 627.3 L1263.2 635.3 L1261.7 643.3 L1259.8 651.2 L1257.4 659.1 L1254.6 666.9 L1251.3 674.7 L1247.6 682.4 L1243.4 690.0 L1238.8 697.5 L1233.7 705.0 L1228.3 712.3 L1222.4 719.5 L1216.1 726.5 L1209.4 733.4 L1202.3 740.2 L1194.8 746.8 L1186.9 753.3 L1178.7 759.6 L1170.1 765.7 L1161.2 771.6 L1151.9 777.4 L1142.3 782.9 L1132.4 788.2 L1122.1 793.3 L1111.6 798.2 L1100.8 802.9 L1089.8 807.4 L1078.5 811.6 L1067.0 815.5 L1055.2 819.2 L1043.2 822.7 L1031.1 825.9 L1018.7 828.9 L1006.2 831.6 L993.6 834.0 L980.8 836.2 L967.9 838.1 L954.9 839.7 L941.8 841.0 L928.6 842.1 L915.4 842.9 L902.2 843.4 L888.9 843.6 L875.6 843.6 L862.4 843.3 L849.1 842.7 L835.9 841.8 L822.8 840.6 L809.7 839.2 L796.7 837.4 L783.9 835.5 L771.1 833.2 L758.5 830.7 L746.1 827.9 L733.8 824.8 L721.7 821.5 L709.8 818.0 L698.1 814.2 L686.6 810.1 L675.4 805.8 L664.5 801.3 L653.8 796.5 L643.3 791.6 L633.2 786.4 L623.4 781.0 L613.9 775.4 L604.7 769.6 L595.9 763.6 L587.4 757.4 L579.3 751.0 L571.6 744.5 L564.2 737.8 L557.2 731.0 L550.6 724.0 L544.5 716.9 L538.7 709.7 L533.4 702.4 L528.5 694.9 L524.0 687.4 L520.0 679.7 L516.4 672.0 L513.3 664.2 L510.6 656.3 L508.3 648.4 L506.6 640.5 L505.3 632.5 L504.4 624.5 L504.0 616.5 L504.1 608.5 L504.6 600.5 L505.6 592.5 L507.1 584.5 L509.0 576.6 L511.4 568.7 L514.2 560.8 L517.5 553.1 L521.2 545.4 L525.4 537.8 L530.0 530.2 L535.1 522.8 L540.5 515.5 L546.4 508.3 L552.7 501.3 L559.4 494.3 L566.5 487.6 L574.0 480.9 L581.9 474.5 L590.1 468.2 L598.7 462.1 L607.6 456.2 L616.9 450.4 L626.5 444.9 L636.4 439.6 L646.7 434.4 L657.2 429.5 L668.0 424.9 L679.0 420.4 L690.3 416.2 L701.8 412.3 L713.6 408.5 L725.6 405.1 L737.7 401.8 L750.1 398.9 L762.6 396.2 L775.2 393.8 L788.0 391.6 L800.9 389.7 L813.9 388.1 L827.0 386.7 L840.2 385.7 L853.4 384.9 L866.6 384.4 L879.9 384.1 L893.2 384.2 L906.4 384.5 L919.7 385.1 L932.9 386.0 L946.0 387.2 L959.1 388.6 L972.1 390.3 L984.9 392.3 L997.7 394.6 L1010.3 397.1 L1022.7 399.9 L1035.0 402.9 L1047.1 406.2 L1059.0 409.8 L1070.7 413.6 L1082.2 417.7 L1093.4 422.0 L1104.3 426.5 L1115.0 431.2 L1125.5 436.2 L1135.6 441.4 L1145.4 446.8 L1154.9 452.4 L1164.1 458.2 L1172.9 464.2 L1181.4 470.4 L1189.5 476.7 L1197.2 483.3 L1204.6 489.9 L1211.6 496.8 L1218.2 503.7 L1224.3 510.8 L1230.1 518.1 L1235.4 525.4 L1240.3 532.9 L1244.8 540.4 L1248.8 548.1 L1252.4 555.8 L1255.5 563.6 L1258.2 571.4Z" fill="url(#flr)"/><path d="M1258.2 571.4 L1260.5 579.3 L1262.2 587.3 L1263.5 595.3 L1264.4 603.3 L1264.8 611.3 L1264.7 619.3 L1264.2 627.3 L1263.2 635.3 L1261.7 643.3 L1259.8 651.2 L1257.4 659.1 L1254.6 666.9 L1251.3 674.7 L1247.6 682.4 L1243.4 690.0 L1238.8 697.5 L1233.7 705.0 L1228.3 712.3 L1222.4 719.5 L1216.1 726.5 L1209.4 733.4 L1202.3 740.2 L1194.8 746.8 L1186.9 753.3 L1178.7 759.6 L1170.1 765.7 L1161.2 771.6 L1151.9 777.4 L1142.3 782.9 L1132.4 788.2 L1122.1 793.3 L1111.6 798.2 L1100.8 802.9 L1089.8 807.4 L1078.5 811.6 L1067.0 815.5 L1055.2 819.2 L1043.2 822.7 L1031.1 825.9 L1018.7 828.9 L1006.2 831.6 L993.6 834.0 L980.8 836.2 L967.9 838.1 L954.9 839.7 L941.8 841.0 L928.6 842.1 L915.4 842.9 L902.2 843.4 L888.9 843.6 L875.6 843.6 L862.4 843.3 L849.1 842.7 L835.9 841.8 L822.8 840.6 L809.7 839.2 L796.7 837.4 L783.9 835.5 L771.1 833.2 L758.5 830.7 L746.1 827.9 L733.8 824.8 L721.7 821.5 L709.8 818.0 L698.1 814.2 L686.6 810.1 L675.4 805.8 L664.5 801.3 L653.8 796.5 L643.3 791.6 L633.2 786.4 L623.4 781.0 L613.9 775.4 L604.7 769.6 L595.9 763.6 L587.4 757.4 L579.3 751.0 L571.6 744.5 L564.2 737.8 L557.2 731.0 L550.6 724.0 L544.5 716.9 L538.7 709.7 L533.4 702.4 L528.5 694.9 L524.0 687.4 L520.0 679.7 L516.4 672.0 L513.3 664.2 L510.6 656.3 L508.3 648.4 L506.6 640.5 L505.3 632.5 L504.4 624.5 L504.0 616.5 L504.1 608.5 L504.6 600.5 L505.6 592.5 L507.1 584.5 L509.0 576.6 L511.4 568.7 L514.2 560.8 L517.5 553.1 L521.2 545.4 L525.4 537.8 L530.0 530.2 L535.1 522.8 L540.5 515.5 L546.4 508.3 L552.7 501.3 L559.4 494.3 L566.5 487.6 L574.0 480.9 L581.9 474.5 L590.1 468.2 L598.7 462.1 L607.6 456.2 L616.9 450.4 L626.5 444.9 L636.4 439.6 L646.7 434.4 L657.2 429.5 L668.0 424.9 L679.0 420.4 L690.3 416.2 L701.8 412.3 L713.6 408.5 L725.6 405.1 L737.7 401.8 L750.1 398.9 L762.6 396.2 L775.2 393.8 L788.0 391.6 L800.9 389.7 L813.9 388.1 L827.0 386.7 L840.2 385.7 L853.4 384.9 L866.6 384.4 L879.9 384.1 L893.2 384.2 L906.4 384.5 L919.7 385.1 L932.9 386.0 L946.0 387.2 L959.1 388.6 L972.1 390.3 L984.9 392.3 L997.7 394.6 L1010.3 397.1 L1022.7 399.9 L1035.0 402.9 L1047.1 406.2 L1059.0 409.8 L1070.7 413.6 L1082.2 417.7 L1093.4 422.0 L1104.3 426.5 L1115.0 431.2 L1125.5 436.2 L1135.6 441.4 L1145.4 446.8 L1154.9 452.4 L1164.1 458.2 L1172.9 464.2 L1181.4 470.4 L1189.5 476.7 L1197.2 483.3 L1204.6 489.9 L1211.6 496.8 L1218.2 503.7 L1224.3 510.8 L1230.1 518.1 L1235.4 525.4 L1240.3 532.9 L1244.8 540.4 L1248.8 548.1 L1252.4 555.8 L1255.5 563.6 L1258.2 571.4Z" fill="url(#flo)"/><path d="M1258.2 571.4 L1260.5 579.3 L1262.2 587.3 L1263.5 595.3 L1264.4 603.3 L1264.8 611.3 L1264.7 619.3 L1264.2 627.3 L1263.2 635.3 L1261.7 643.3 L1259.8 651.2 L1257.4 659.1 L1254.6 666.9 L1251.3 674.7 L1247.6 682.4 L1243.4 690.0 L1238.8 697.5 L1233.7 705.0 L1228.3 712.3 L1222.4 719.5 L1216.1 726.5 L1209.4 733.4 L1202.3 740.2 L1194.8 746.8 L1186.9 753.3 L1178.7 759.6 L1170.1 765.7 L1161.2 771.6 L1151.9 777.4 L1142.3 782.9 L1132.4 788.2 L1122.1 793.3 L1111.6 798.2 L1100.8 802.9 L1089.8 807.4 L1078.5 811.6 L1067.0 815.5 L1055.2 819.2 L1043.2 822.7 L1031.1 825.9 L1018.7 828.9 L1006.2 831.6 L993.6 834.0 L980.8 836.2 L967.9 838.1 L954.9 839.7 L941.8 841.0 L928.6 842.1 L915.4 842.9 L902.2 843.4 L888.9 843.6 L875.6 843.6 L862.4 843.3 L849.1 842.7 L835.9 841.8 L822.8 840.6 L809.7 839.2 L796.7 837.4 L783.9 835.5 L771.1 833.2 L758.5 830.7 L746.1 827.9 L733.8 824.8 L721.7 821.5 L709.8 818.0 L698.1 814.2 L686.6 810.1 L675.4 805.8 L664.5 801.3 L653.8 796.5 L643.3 791.6 L633.2 786.4 L623.4 781.0 L613.9 775.4 L604.7 769.6 L595.9 763.6 L587.4 757.4 L579.3 751.0 L571.6 744.5 L564.2 737.8 L557.2 731.0 L550.6 724.0 L544.5 716.9 L538.7 709.7 L533.4 702.4 L528.5 694.9 L524.0 687.4 L520.0 679.7 L516.4 672.0 L513.3 664.2 L510.6 656.3 L508.3 648.4 L506.6 640.5 L505.3 632.5 L504.4 624.5 L504.0 616.5 L504.1 608.5 L504.6 600.5 L505.6 592.5 L507.1 584.5 L509.0 576.6 L511.4 568.7 L514.2 560.8 L517.5 553.1 L521.2 545.4 L525.4 537.8 L530.0 530.2 L535.1 522.8 L540.5 515.5 L546.4 508.3 L552.7 501.3 L559.4 494.3 L566.5 487.6 L574.0 480.9 L581.9 474.5 L590.1 468.2 L598.7 462.1 L607.6 456.2 L616.9 450.4 L626.5 444.9 L636.4 439.6 L646.7 434.4 L657.2 429.5 L668.0 424.9 L679.0 420.4 L690.3 416.2 L701.8 412.3 L713.6 408.5 L725.6 405.1 L737.7 401.8 L750.1 398.9 L762.6 396.2 L775.2 393.8 L788.0 391.6 L800.9 389.7 L813.9 388.1 L827.0 386.7 L840.2 385.7 L853.4 384.9 L866.6 384.4 L879.9 384.1 L893.2 384.2 L906.4 384.5 L919.7 385.1 L932.9 386.0 L946.0 387.2 L959.1 388.6 L972.1 390.3 L984.9 392.3 L997.7 394.6 L1010.3 397.1 L1022.7 399.9 L1035.0 402.9 L1047.1 406.2 L1059.0 409.8 L1070.7 413.6 L1082.2 417.7 L1093.4 422.0 L1104.3 426.5 L1115.0 431.2 L1125.5 436.2 L1135.6 441.4 L1145.4 446.8 L1154.9 452.4 L1164.1 458.2 L1172.9 464.2 L1181.4 470.4 L1189.5 476.7 L1197.2 483.3 L1204.6 489.9 L1211.6 496.8 L1218.2 503.7 L1224.3 510.8 L1230.1 518.1 L1235.4 525.4 L1240.3 532.9 L1244.8 540.4 L1248.8 548.1 L1252.4 555.8 L1255.5 563.6 L1258.2 571.4Z" fill="none" stroke="#0c1418" stroke-width="1.1"/></g><path d="M473.7 478.7 L478.5 470.0 L483.7 461.5 L489.5 453.1 L495.7 444.8 L502.4 436.6 L509.6 428.6 L517.2 420.7 L525.3 413.1 L533.8 405.5 L542.8 398.2 L552.2 391.1 L562.0 384.2 L572.2 377.4 L582.7 371.0 L593.7 364.7 L605.0 358.7 L616.6 352.9 L628.6 347.3 L640.8 342.0 L653.4 337.0 L666.3 332.3 L679.4 327.8 L692.8 323.6 L706.4 319.7 L720.3 316.1 L734.3 312.8 L748.5 309.7 L762.9 307.0 L777.5 304.6 L792.1 302.5 L806.9 300.7 L821.8 299.2 L836.8 298.1 L851.8 297.2 L866.8 296.7 L881.9 296.5 L897.0 296.6 L912.1 297.0 L927.1 297.8 L942.1 298.8 L957.0 300.2 L971.8 301.9 L986.5 303.9 L1001.1 306.3 L1015.5 308.9 L1029.8 311.8 L1043.9 315.0 L1057.8 318.6 L1071.5 322.4 L1085.0 326.5 L1098.2 330.9 L1111.2 335.6 L1123.8 340.5 L1136.2 345.7 L1148.3 351.2 L1160.0 356.9 L1171.4 362.8 L1182.5 369.0 L1193.2 375.5 L1203.5 382.1 L1213.4 389.0 L1222.9 396.1 L1232.0 403.3 L1240.7 410.8 L1249.0 418.4 L1256.7 426.2 L1264.1 434.2 L1270.9 442.3 L1277.3 450.5 L1283.2 458.9 L1288.7 467.4 L1293.6 476.0 L1298.0 484.7 L1301.9 493.5 L1305.3 502.4 L1308.2 511.4 L1310.5 520.4M244.2 587.6 L245.4 583.1 L246.9 578.7 L248.6 574.3 L250.5 569.9 L252.7 565.6 L255.2 561.3 L257.9 557.1 L260.9 552.9 L264.1 548.8 L267.5 544.8 L271.2 540.9 L275.1 537.0 L279.3 533.2 L283.6 529.5 L288.2 525.9 L293.0 522.5 L297.9 519.1 L303.1 515.8 L308.5 512.6 L314.0 509.6 L319.8 506.7 L325.7 503.9 L331.7 501.2 L337.9 498.7 L344.3 496.3 L350.8 494.0 L357.4 491.9 L364.1 489.9 L371.0 488.1 L377.9 486.4 L385.0 484.8 L392.1 483.4 L399.3 482.2 L406.6 481.1 L414.0 480.2 L421.4 479.5 L428.8 478.9 L436.3 478.4 L443.7 478.2 L451.2 478.0 L458.7 478.1 L466.2 478.3 L473.7 478.7" fill="none" stroke="#5d5a54" stroke-width="0.9" stroke-opacity="0.75"/><path d="M1258.2 510.5 L1260.5 518.4 L1262.2 526.4 L1263.5 534.4 L1264.4 542.4 L1264.8 550.4 L1264.7 558.4 L1264.2 566.4 L1263.2 574.4 L1261.7 582.4 L1259.8 590.3 L1257.4 598.2 L1254.6 606.0 L1251.3 613.8 L1247.6 621.5 L1243.4 629.1 L1238.8 636.6 L1233.7 644.0 L1228.3 651.4 L1222.4 658.5 L1216.1 665.6 L1209.4 672.5 L1202.3 679.3 L1194.8 685.9 L1186.9 692.4 L1178.7 698.7 L1170.1 704.8 L1161.2 710.7 L1151.9 716.4 L1142.3 722.0 L1132.4 727.3 L1122.1 732.4 L1111.6 737.3 L1100.8 742.0 L1089.8 746.4 L1078.5 750.6 L1067.0 754.6 L1055.2 758.3 L1043.2 761.8 L1031.1 765.0 L1018.7 768.0 L1006.2 770.7 L993.6 773.1 L980.8 775.3 L967.9 777.2 L954.9 778.8 L941.8 780.1 L928.6 781.2 L915.4 782.0 L902.2 782.5 L888.9 782.7 L875.6 782.7 L862.4 782.3 L849.1 781.7 L835.9 780.9 L822.8 779.7 L809.7 778.2 L796.7 776.5 L783.9 774.5 L771.1 772.3 L758.5 769.8 L746.1 767.0 L733.8 763.9 L721.7 760.6 L709.8 757.1 L698.1 753.2 L686.6 749.2 L675.4 744.9 L664.5 740.4 L653.8 735.6 L643.3 730.6 L633.2 725.5 L623.4 720.0 L613.9 714.4 L604.7 708.6 L595.9 702.6 L587.4 696.5 L579.3 690.1 L571.6 683.6 L564.2 676.9 L557.2 670.1 L550.6 663.1 L544.5 656.0 L538.7 648.8 L533.4 641.5 L528.5 634.0 L524.0 626.4 L520.0 618.8 L516.4 611.1 L513.3 603.3 L510.6 595.4 L508.3 587.5 L506.6 579.6 L505.3 571.6 L504.4 563.6 L504.0 555.6 L504.1 547.6 L504.6 539.5 L505.6 531.5 L507.1 523.6 L509.0 515.6 L511.4 507.7 L514.2 499.9 L517.5 492.1 L521.2 484.4 L525.4 476.8 L530.0 469.3 L535.1 461.9 L540.5 454.6 L546.4 447.4 L552.7 440.3 L559.4 433.4 L566.5 426.7 L574.0 420.0 L581.9 413.6 L590.1 407.3 L598.7 401.2 L607.6 395.2 L616.9 389.5 L626.5 384.0 L636.4 378.6 L646.7 373.5 L657.2 368.6 L668.0 364.0 L679.0 359.5 L690.3 355.3 L701.8 351.3 L713.6 347.6 L725.6 344.1 L737.7 340.9 L750.1 338.0 L762.6 335.3 L775.2 332.8 L788.0 330.7 L800.9 328.8 L813.9 327.2 L827.0 325.8 L840.2 324.8 L853.4 324.0 L866.6 323.5 L879.9 323.2 L893.2 323.3 L906.4 323.6 L919.7 324.2 L932.9 325.1 L946.0 326.3 L959.1 327.7 L972.1 329.4 L984.9 331.4 L997.7 333.7 L1010.3 336.2 L1022.7 339.0 L1035.0 342.0 L1047.1 345.3 L1059.0 348.9 L1070.7 352.7 L1082.2 356.8 L1093.4 361.0 L1104.3 365.6 L1115.0 370.3 L1125.5 375.3 L1135.6 380.5 L1145.4 385.9 L1154.9 391.5 L1164.1 397.3 L1172.9 403.3 L1181.4 409.5 L1189.5 415.8 L1197.2 422.3 L1204.6 429.0 L1211.6 435.8 L1218.2 442.8 L1224.3 449.9 L1230.1 457.1 L1235.4 464.5 L1240.3 471.9 L1244.8 479.5 L1248.8 487.1 L1252.4 494.9 L1255.5 502.7 L1258.2 510.5ZM482.9 483.8 L487.2 475.3 L491.9 467.0 L497.1 458.7 L502.8 450.6 L509.0 442.6 L515.6 434.8 L522.7 427.0 L530.2 419.5 L538.1 412.1 L546.5 404.8 L555.3 397.8 L564.5 390.9 L574.1 384.3 L584.0 377.8 L594.3 371.6 L605.0 365.6 L616.0 359.8 L627.4 354.2 L639.1 348.9 L651.0 343.9 L663.3 339.1 L675.8 334.5 L688.6 330.2 L701.6 326.2 L714.9 322.5 L728.3 319.1 L742.0 315.9 L755.8 313.1 L769.8 310.5 L783.9 308.2 L798.1 306.3 L812.5 304.6 L826.9 303.2 L841.4 302.2 L856.0 301.4 L870.6 301.0 L885.2 300.8 L899.8 301.0 L914.4 301.5 L928.9 302.3 L943.4 303.4 L957.8 304.8 L972.2 306.5 L986.4 308.5 L1000.5 310.8 L1014.5 313.4 L1028.3 316.3 L1041.9 319.5 L1055.3 323.0 L1068.5 326.8 L1081.5 330.8 L1094.3 335.1 L1106.8 339.7 L1119.0 344.5 L1131.0 349.6 L1142.6 354.9 L1153.9 360.5 L1164.9 366.3 L1175.6 372.4 L1185.8 378.7 L1195.8 385.1 L1205.3 391.8 L1214.4 398.7 L1223.2 405.8 L1231.5 413.0 L1239.4 420.5 L1246.9 428.1 L1253.9 435.8 L1260.5 443.7 L1266.6 451.7 L1272.2 459.8 L1277.4 468.1 L1282.1 476.5 L1286.3 484.9 L1290.0 493.4 L1293.2 502.1 L1295.9 510.7 L1298.1 519.5 L1299.8 528.2 L1301.0 537.0 L1301.7 545.8 L1301.8 554.7 L1301.5 563.5 L1300.6 572.3 L1299.3 581.1 L1297.4 589.8 L1295.0 598.5 L1292.1 607.2 L1288.7 615.8 L1284.9 624.3 L1280.5 632.7 L1275.6 641.0 L1270.3 649.2 L1264.5 657.3 L1258.2 665.3 L1251.5 673.1 L1244.3 680.8 L1236.7 688.3 L1228.6 695.7 L1220.2 702.9 L1211.3 709.9 L1202.0 716.7 L1192.3 723.3 L1182.3 729.7 L1171.9 735.9 L1161.1 741.8 L1150.0 747.6 L1138.5 753.1 L1126.8 758.3 L1114.8 763.3 L1102.4 768.0 L1089.8 772.5 L1077.0 776.7 L1063.9 780.6 L1050.6 784.3 L1037.1 787.7 L1023.4 790.7 L1009.6 793.5 L995.6 796.0 L981.4 798.2 L967.1 800.1 L952.8 801.7 L938.3 803.0 L923.8 804.0 L909.2 804.7 L894.6 805.0 L880.0 805.1 L865.4 804.8 L850.8 804.3 L836.3 803.4 L821.8 802.2 L807.4 800.7 L793.1 799.0 L778.9 796.9 L764.8 794.5 L750.9 791.8 L737.2 788.8 L723.6 785.6 L710.2 782.0 L697.0 778.2 L684.1 774.1 L671.4 769.7 L659.0 765.1 L646.8 760.2 L634.9 755.0 L623.4 749.6 L612.1 744.0 L601.2 738.1 L590.7 732.0 L580.5 725.7 L570.6 719.2 L561.2 712.4 L552.2 705.5 L552.2 705.5 L546.1 707.5 L539.9 709.4 L533.6 711.2 L527.3 712.8 L520.8 714.3 L514.2 715.7 L507.6 716.9 L500.9 718.0 L494.1 718.9 L487.3 719.7 L480.5 720.4 L473.6 720.9 L466.7 721.2 L459.8 721.5 L452.8 721.5 L445.9 721.4 L439.0 721.2 L432.1 720.9 L425.2 720.3 L418.4 719.7 L411.6 718.9 L404.8 717.9 L398.1 716.8 L391.5 715.6 L384.9 714.2 L378.5 712.7 L372.1 711.0 L365.8 709.3 L359.7 707.4 L353.6 705.3 L347.7 703.1 L341.9 700.9 L336.2 698.4 L330.7 695.9 L325.3 693.3 L320.1 690.5 L315.0 687.6 L310.1 684.7 L305.4 681.6 L300.9 678.4 L296.6 675.1 L292.4 671.8 L288.5 668.3 L284.7 664.8 L281.2 661.2 L277.8 657.6 L274.7 653.8 L271.8 650.0 L269.1 646.1 L266.7 642.2 L264.5 638.3 L262.5 634.2 L260.7 630.2 L259.2 626.1 L257.9 622.0 L256.9 617.9 L256.1 613.7 L255.5 609.5 L255.2 605.3 L255.1 601.2 L255.3 597.0 L255.7 592.8 L256.3 588.6 L257.2 584.5 L258.3 580.3 L259.7 576.2 L261.3 572.2 L263.2 568.1 L265.2 564.1 L267.5 560.2 L270.1 556.3 L272.8 552.4 L275.8 548.7 L279.0 544.9 L282.4 541.3 L286.0 537.7 L289.9 534.2 L293.9 530.8 L298.1 527.5 L302.5 524.3 L307.1 521.1 L311.9 518.1 L316.8 515.2 L321.9 512.3 L327.2 509.6 L332.6 507.0 L338.2 504.5 L343.9 502.2 L349.8 499.9 L355.7 497.8 L361.8 495.8 L368.1 494.0 L374.4 492.2 L380.8 490.6 L387.3 489.2 L393.8 487.9 L400.5 486.7 L407.2 485.6 L414.0 484.7 L420.8 484.0 L427.7 483.4 L434.6 482.9 L441.5 482.6 L448.4 482.4 L455.3 482.4 L462.3 482.5 L469.2 482.8 L476.1 483.2 L482.9 483.8ZM521.7 677.7 L517.3 679.1 L512.8 680.4 L508.3 681.6 L503.6 682.7 L498.9 683.8 L494.2 684.7 L489.4 685.5 L484.5 686.2 L479.6 686.8 L474.7 687.3 L469.8 687.7 L464.8 688.0 L459.8 688.2 L454.8 688.3 L449.8 688.3 L444.8 688.2 L439.9 687.9 L434.9 687.6 L430.0 687.2 L425.1 686.6 L420.2 686.0 L415.3 685.2 L410.5 684.4 L405.8 683.4 L401.1 682.4 L396.5 681.2 L392.0 680.0 L387.5 678.7 L383.1 677.2 L378.8 675.7 L374.6 674.1 L370.4 672.4 L366.4 670.6 L362.5 668.7 L358.7 666.8 L355.0 664.8 L351.4 662.7 L348.0 660.5 L344.7 658.2 L341.5 655.9 L338.4 653.5 L335.5 651.1 L332.7 648.6 L330.1 646.0 L327.7 643.4 L325.3 640.7 L323.2 638.0 L321.2 635.2 L319.3 632.4 L317.6 629.6 L316.1 626.7 L314.8 623.8 L313.6 620.9 L312.6 617.9 L311.7 614.9 L311.1 612.0 L310.6 609.0 L310.3 605.9 L310.1 602.9 L310.1 599.9 L310.4 596.9 L310.7 593.9 L311.3 590.9 L312.0 587.9 L312.9 585.0 L314.0 582.0 L315.2 579.1 L316.6 576.2 L318.2 573.3 L319.9 570.5 L321.8 567.7 L323.9 565.0 L326.1 562.3 L328.4 559.6 L331.0 557.0 L333.6 554.5 L336.4 552.0 L339.4 549.6 L342.5 547.2 L345.7 544.9 L349.1 542.7 L352.6 540.5 L356.2 538.4 L359.9 536.4 L363.8 534.5 L367.7 532.7 L371.8 530.9 L375.9 529.2 L380.2 527.7 L384.5 526.2 L388.9 524.8 L393.4 523.5 L398.0 522.3 L402.6 521.2 L407.3 520.1 L412.1 519.2 L416.9 518.4 L421.8 517.7 L426.6 517.1 L431.6 516.6 L436.5 516.2 L441.5 515.9 L446.5 515.7 L451.5 515.6 L456.4 515.6 L461.4 515.8 L466.4 516.0 L471.4 516.3 L471.4 516.3 L469.5 525.1 L468.2 533.8 L467.3 542.6 L467.0 551.4 L467.1 560.2 L467.8 569.0 L469.0 577.8 L470.7 586.5 L472.9 595.2 L475.6 603.9 L478.8 612.5 L482.5 621.0 L486.7 629.4 L491.3 637.8 L496.5 646.0 L502.1 654.1 L508.2 662.1 L514.7 670.0 L521.7 677.7ZM1323.3 570.3 L1323.1 579.5 L1322.3 588.8 L1320.9 598.0 L1319.0 607.3 L1316.6 616.4 L1313.7 625.5 L1310.2 634.6 L1306.2 643.5 L1301.7 652.4 L1296.7 661.2 L1291.2 669.8 L1285.2 678.3 L1278.7 686.8 L1271.7 695.0 L1264.2 703.1 L1256.3 711.1 L1247.9 718.8 L1239.1 726.4 L1229.8 733.8 L1220.1 741.0 L1210.0 748.0 L1199.5 754.8 L1188.6 761.3 L1177.4 767.6 L1165.8 773.7 L1153.8 779.5 L1141.5 785.1 L1128.9 790.4 L1116.0 795.4 L1102.8 800.2 L1089.4 804.6 L1075.7 808.8 L1061.7 812.7 L1047.6 816.3 L1033.2 819.6 L1018.7 822.6 L1004.0 825.3 L989.1 827.6 L974.1 829.7 L959.0 831.4 L943.9 832.8 L928.6 833.9 L913.3 834.7 L898.0 835.1 L882.6 835.2 L867.2 835.0 L851.9 834.5 L836.6 833.7 L821.4 832.5 L806.2 831.0 L791.1 829.2 L776.2 827.0 L761.4 824.6 L746.7 821.8 L732.2 818.7 L717.9 815.4 L703.8 811.7 L689.9 807.7 L676.2 803.5 L662.8 798.9 L649.7 794.1 L636.9 789.0 L624.4 783.6 L612.1 778.0 L600.3 772.1 L588.7 766.0 L577.6 759.6 L566.8 753.0 L556.4 746.2 L546.4 739.1M546.4 739.1 L539.3 741.0 L532.1 742.8 L524.9 744.4 L517.5 745.9 L510.1 747.1 L502.6 748.3 L495.0 749.2 L487.4 750.1 L479.7 750.7 L472.0 751.2 L464.3 751.5 L456.6 751.7 L448.8 751.6 L441.1 751.5 L433.4 751.1 L425.7 750.6 L418.0 750.0 L410.4 749.1 L402.8 748.1 L395.3 747.0 L387.9 745.7 L380.6 744.2 L373.3 742.6 L366.1 740.8 L359.1 738.9 L352.2 736.8 L345.3 734.6 L338.7 732.2 L332.1 729.7 L325.8 727.1 L319.5 724.3 L313.5 721.4 L307.6 718.3 L301.9 715.2 L296.4 711.9 L291.1 708.5 L285.9 705.0 L281.0 701.4 L276.3 697.7 L271.9 693.8 L267.6 689.9 L263.6 685.9 L259.8 681.9 L256.2 677.7 L252.9 673.5 L249.9 669.2 L247.1 664.8 L244.5 660.4 L242.3 656.0 L240.2 651.4 L238.5 646.9 L237.0 642.3 L235.8 637.7 L234.8 633.0 L234.1 628.4 L233.7 623.7 L233.6 619.1M1323.3 631.9 L1323.1 641.2 L1322.3 650.4 L1320.9 659.7 L1319.0 668.9 L1316.6 678.0 L1313.7 687.1 L1310.2 696.2 L1306.2 705.1 L1301.7 714.0 L1296.7 722.8 L1291.2 731.4 L1285.2 740.0 L1278.7 748.4 L1271.7 756.6 L1264.2 764.7 L1256.3 772.7 L1247.9 780.4 L1239.1 788.0 L1229.8 795.4 L1220.1 802.6 L1210.0 809.6 L1199.5 816.4 L1188.6 822.9 L1177.4 829.2 L1165.8 835.3 L1153.8 841.1 L1141.5 846.7 L1128.9 852.0 L1116.0 857.0 L1102.8 861.8 L1089.4 866.2 L1075.7 870.4 L1061.7 874.3 L1047.6 877.9 L1033.2 881.2 L1018.7 884.2 L1004.0 886.9 L989.1 889.2 L974.1 891.3 L959.0 893.0 L943.9 894.4 L928.6 895.5 L913.3 896.3 L898.0 896.7 L882.6 896.9 L867.2 896.7 L851.9 896.1 L836.6 895.3 L821.4 894.1 L806.2 892.6 L791.1 890.8 L776.2 888.6 L761.4 886.2 L746.7 883.4 L732.2 880.4 L717.9 877.0 L703.8 873.3 L689.9 869.3 L676.2 865.1 L662.8 860.5 L649.7 855.7 L636.9 850.6 L624.4 845.2 L612.1 839.6 L600.3 833.7 L588.7 827.6 L577.6 821.2 L566.8 814.6 L556.4 807.8 L546.4 800.7M546.4 800.7 L539.3 802.7 L532.1 804.4 L524.9 806.0 L517.5 807.5 L510.1 808.8 L502.6 809.9 L495.0 810.9 L487.4 811.7 L479.7 812.3 L472.0 812.8 L464.3 813.1 L456.6 813.3 L448.8 813.3 L441.1 813.1 L433.4 812.8 L425.7 812.2 L418.0 811.6 L410.4 810.8 L402.8 809.8 L395.3 808.6 L387.9 807.3 L380.6 805.8 L373.3 804.2 L366.1 802.4 L359.1 800.5 L352.2 798.4 L345.3 796.2 L338.7 793.8 L332.1 791.3 L325.8 788.7 L319.5 785.9 L313.5 783.0 L307.6 779.9 L301.9 776.8 L296.4 773.5 L291.1 770.1 L285.9 766.6 L281.0 763.0 L276.3 759.3 L271.9 755.5 L267.6 751.6 L263.6 747.6 L259.8 743.5 L256.2 739.3 L252.9 735.1 L249.9 730.8 L247.1 726.4 L244.5 722.0 L242.3 717.6 L240.2 713.1 L238.5 708.5 L237.0 703.9 L235.8 699.3 L234.8 694.7 L234.1 690.0 L233.7 685.3 L233.6 680.7M1323.3 570.3 L1323.3 631.9M233.6 619.1 L233.6 680.7M546.4 739.1 L546.4 800.7M552.2 705.5 L550.9 709.7 L549.7 714.5 L548.6 719.6 L547.6 724.9 L546.9 730.1 L546.5 734.9 L546.4 739.1M482.9 483.8 L479.5 481.0 L476.2 479.3 L473.3 478.6 L470.9 479.2" fill="none" stroke="#0a0a0a" stroke-width="1.05" stroke-linejoin="round" stroke-linecap="round"/></g></svg>
</main>
<header>
<div class="r" style="left:0px;top:0px;width:1920px;height:23px;background:#ffffff;"></div>
<div class="r" style="left:0px;top:23px;width:1920px;height:32px;background:#cbcbcb;"></div>
<div class="r" style="left:194px;top:27px;width:40px;height:28px;background:#bcbcbc;border-radius:4px 4px 0 0;"></div>
<div class="r" style="left:237px;top:27px;width:708.5px;height:28px;background:#f1f1f1;border-radius:4px 4px 0 0;"></div>
<div class="r" style="left:949px;top:27px;width:708px;height:28px;background:#bcbcbc;border-radius:4px 4px 0 0;"></div>
<div class="r" style="left:1661px;top:27px;width:29px;height:28px;background:#bcbcbc;border-radius:4px 4px 0 0;"></div>
<div class="r" style="left:1879px;top:27.5px;width:24px;height:24px;background:#f2f2f2;border-radius:12px;"></div>
<div class="r" style="left:0px;top:55px;width:1920px;height:82px;background:#f1f1f1;"></div>
<div class="r" style="left:0px;top:137px;width:1920px;height:2.8px;background:#f0f0f0;"></div>
<div class="r" style="left:0px;top:135.9px;width:1920px;height:1.3px;background:#dedede;"></div>
<div class="r" style="left:12px;top:65.5px;width:109.5px;height:61px;background:#f4f4f4;border:1px solid #d6d6d6;border-radius:5px;"></div>
<div class="r" style="left:138px;top:75.5px;width:57px;height:3px;background:#0696d7;"></div>
<div class="r" style="left:393.4px;top:81px;width:1.8px;height:51.5px;background:#dadada;"></div>
<div class="r" style="left:662.4px;top:81px;width:1.8px;height:51.5px;background:#dadada;"></div>
<div class="r" style="left:759.4px;top:81px;width:1.8px;height:51.5px;background:#dadada;"></div>
<div class="r" style="left:857.9px;top:81px;width:1.8px;height:51.5px;background:#dadada;"></div>
<div class="r" style="left:937.4px;top:81px;width:1.8px;height:51.5px;background:#dadada;"></div>
<div class="r" style="left:1006.4px;top:81px;width:1.8px;height:51.5px;background:#dadada;"></div>
<div class="r" style="left:1025px;top:78px;width:40px;height:40px;background:#0a95d8;border:1px solid #fbf4ec;"></div>
</header>
<aside>
<div class="r" style="left:4px;top:143.8px;width:300px;height:24.2px;background:#f1f1f1;border:1px solid #d2d2d2;"></div>
<div class="r" style="left:40px;top:174px;width:147px;height:20px;background:rgba(240,240,240,0.92);"></div>
<div class="r" style="left:58px;top:198px;width:134px;height:20px;background:rgba(240,240,240,0.92);"></div>
<div class="r" style="left:58px;top:222px;width:110px;height:20px;background:rgba(240,240,240,0.92);"></div>
<div class="r" style="left:58px;top:246px;width:95px;height:20px;background:rgba(240,240,240,0.92);"></div>
<div class="r" style="left:58px;top:270px;width:103px;height:20px;background:rgba(240,240,240,0.92);"></div>
<div class="r" style="left:58px;top:294px;width:115px;height:20px;background:rgba(240,240,240,0.92);"></div>
<div class="r" style="left:76px;top:318px;width:107px;height:20px;background:rgba(240,240,240,0.92);"></div>
<div class="r" style="left:76px;top:342px;width:107px;height:20px;background:rgba(240,240,240,0.92);"></div>
<div class="r" style="left:76px;top:366px;width:107px;height:20px;background:rgba(240,240,240,0.92);"></div>
<div class="r" style="left:65px;top:176px;width:98px;height:16px;background:#9a9a9a;"></div>
<div class="r" style="left:4px;top:961px;width:300px;height:24.8px;background:#f1f1f1;border:1px solid #cdcdcd;border-top:none;"></div>
</aside>
<div class="r" style="left:830px;top:144px;width:260px;height:24px;background:#f1f1f1;"></div>
<div class="r" style="left:1039.5px;top:144px;width:1.5px;height:24px;background:#d6d6d6;"></div>
<div class="r" style="left:842px;top:960.5px;width:237px;height:23px;background:#f1f1f1;"></div>
<footer>
<div class="r" style="left:0px;top:990px;width:1920px;height:50px;background:#f1f1f1;border-top:1px solid #d9d9d9;"></div>
</footer>
<svg width="1920" height="1040" viewBox="0 0 1920 1040">
<defs><linearGradient id="appg" x1="0" y1="0" x2="0" y2="1"><stop offset="0" stop-color="#ff8a2a"/><stop offset="0.7" stop-color="#f26a1b"/><stop offset="1" stop-color="#c2500f"/></linearGradient></defs><rect x="3" y="3" width="14" height="16" rx="2.2" fill="url(#appg)"/><rect x="4" y="14.2" width="12.5" height="4.6" rx="1" fill="#b5480e"/><path d="M7.6 6.2 H12.4 V7.8 H9.4 V9.2 H11.8 V10.7 H9.4 V13 H7.6 Z" fill="#fff"/><rect x="7.2" y="15.6" width="5.6" height="1.9" fill="#f0c8a8" opacity="0.85"/><path d="M1800 10.5 H1810" stroke="#111" stroke-width="1"/><path d="M1844.5 7.5 H1851.5 V14.5 H1844.5 Z M1846.5 7.5 V5.5 H1853.5 V12.5 H1851.5" fill="none" stroke="#111" stroke-width="1"/><path d="M1890.5 5 L1900.5 15 M1900.5 5 L1890.5 15" stroke="#111" stroke-width="1.1"/><rect x="9.1" y="31.9" width="3.7" height="3.7" rx="0.5" fill="#5e5e5e"/><rect x="9.1" y="37" width="3.7" height="3.7" rx="0.5" fill="#5e5e5e"/><rect x="9.1" y="42.1" width="3.7" height="3.7" rx="0.5" fill="#5e5e5e"/><rect x="14.2" y="31.9" width="3.7" height="3.7" rx="0.5" fill="#5e5e5e"/><rect x="14.2" y="37" width="3.7" height="3.7" rx="0.5" fill="#5e5e5e"/><rect x="14.2" y="42.1" width="3.7" height="3.7" rx="0.5" fill="#5e5e5e"/><rect x="19.3" y="31.9" width="3.7" height="3.7" rx="0.5" fill="#5e5e5e"/><rect x="19.3" y="37" width="3.7" height="3.7" rx="0.5" fill="#5e5e5e"/><rect x="19.3" y="42.1" width="3.7" height="3.7" rx="0.5" fill="#5e5e5e"/><path d="M42 32 Q42 31 43 31 H50.3 L55 35.7 V46 Q55 47 54 47 H43 Q42 47 42 46 Z" fill="#636363"/><path d="M50.6 31.2 L54.8 35.4 H50.6 Z" fill="#a9a9a9"/><polygon points="61.2,36 68,36 64.6,41" fill="#5a5a5a"/><path d="M87.2 32 H100 Q101 32 101 33 V45 Q101 46 100 46 H89.6 L87.2 43.6 Z" fill="#606060"/><rect x="90.8" y="32.6" width="6.2" height="4" fill="#cbcbcb"/><path d="M90.8 45.4 V41.6 H97 V45.4 H95.6 V43 H92.2 V45.4 Z" fill="#cbcbcb"/><path d="M126.2 33.2 L120.6 37.8 L126.2 42.2 M121.2 37.8 H127.5 Q132.6 38 132.4 44.6" fill="none" stroke="#555" stroke-width="2" stroke-linejoin="round" stroke-linecap="round"/><polygon points="140,36 146.8,36 143.4,41" fill="#5a5a5a"/><path d="M166.8 33.2 L172.4 37.8 L166.8 42.2 M171.8 37.8 H165.6 Q160.6 38.4 160.9 44.4" fill="none" stroke="#949494" stroke-width="2" stroke-linejoin="round" stroke-linecap="round"/><polygon points="179.2,36 186,36 182.6,41" fill="#9a9a9a"/><path d="M207.4 42.4 L215 35.6 L218.2 38.4 V36.6 H220 V40 L222.6 42.4 H220.8 V48.8 H216.6 V44.8 H213.6 V48.8 H209.4 V42.4 Z" fill="#8e8e8e"/><rect x="553" y="40.8" width="12" height="8.2" rx="1" fill="#777"/><path d="M556 40.6 V38.2 Q556 34.6 559 34.6 Q562 34.6 562 38.2 V40.6" fill="none" stroke="#777" stroke-width="1.5"/><rect x="556" y="43" width="6" height="1.1" fill="#e9e9e9" opacity="0.7"/><rect x="556" y="45.2" width="6" height="1.1" fill="#e9e9e9" opacity="0.7"/><rect x="1245.5" y="40.8" width="12" height="8.2" rx="1" fill="#848484"/><path d="M1248.5 40.6 V38.2 Q1248.5 34.6 1251.5 34.6 Q1254.5 34.6 1254.5 38.2 V40.6" fill="none" stroke="#848484" stroke-width="1.5"/><rect x="1248.5" y="43" width="6" height="1.1" fill="#e9e9e9" opacity="0.7"/><rect x="1248.5" y="45.2" width="6" height="1.1" fill="#e9e9e9" opacity="0.7"/><path d="M930 37.5 L938 45.5 M938 37.5 L930 45.5" stroke="#555" stroke-width="1.3"/><path d="M1642.5 37.5 L1650 45 M1650 37.5 L1642.5 45" stroke="#8a8a8a" stroke-width="1.3"/><path d="M1669 41 H1682 M1675.5 34.5 V47.5" stroke="#666" stroke-width="2.2"/><path d="M1701.6 31.8 H1709 L1712.6 35.4 V37.4 L1706 44 V47.2 H1701.6 Z" fill="#5a5a5a"/><path d="M1708 45.8 L1708.6 42.8 L1714.4 37 L1716.8 39.4 L1711 45.2 Z" fill="#5a5a5a"/><circle cx="1786" cy="39.5" r="7.6" fill="none" stroke="#5a5a5a" stroke-width="1.2"/><circle cx="1786" cy="39.5" r="5.8" fill="#5a5a5a"/><path d="M1786 35.6 V39.8 H1789.6" fill="none" stroke="#d6d6d6" stroke-width="1.3"/><path d="M1812.6 44.2 Q1814.6 42.6 1814.6 38.6 Q1814.8 33.8 1819 33.4 Q1823.2 33.8 1823.4 38.6 Q1823.4 42.6 1825.4 44.2 Z" fill="#5a5a5a"/><path d="M1817.2 45.2 Q1819 47.8 1820.8 45.2 Z" fill="#5a5a5a"/><circle cx="1823.4" cy="34.8" r="2.7" fill="#1b9be0"/><circle cx="1852" cy="39.5" r="8" fill="#5a5a5a"/><path d="M1849.2 37.2 Q1849.4 34.6 1852.2 34.6 Q1855 34.8 1854.8 37.2 Q1854.6 38.8 1852.2 39.8 V41.4" fill="none" stroke="#efefef" stroke-width="1.9"/><circle cx="1852.2" cy="44.2" r="1.15" fill="#efefef"/><g transform="translate(137 82)" ><path d="M3.6 1.4 H26 M1.4 3.6 V26.4 M28.4 3.6 V16 M3.6 28.5 H16" stroke="#555" stroke-width="1" stroke-dasharray="9 2.4" fill="none"/><rect x="0" y="0" width="2.8" height="2.8" fill="#555"/><rect x="27" y="0" width="2.8" height="2.8" fill="#555"/><rect x="0" y="27.1" width="2.8" height="2.8" fill="#555"/><rect x="7.2" y="7.2" width="2.6" height="2.6" fill="#555"/><rect x="20.2" y="7.2" width="2.6" height="2.6" fill="#555"/><rect x="7.2" y="20.1" width="2.6" height="2.6" fill="#555"/><path d="M11 8.5 H19.5 M8.5 11 V19.5" stroke="#555" stroke-width="1" stroke-dasharray="5 2" fill="none"/><path d="M21.5 10.5 Q21 20.6 10.6 21.4" stroke="#555" stroke-width="1" fill="none"/><path d="M22.8 18.2 H27.2 V23 H32 V27.4 H27.2 V32.2 H22.8 V27.4 H18 V23 H22.8 Z" fill="#21a94b" stroke="#178a3a" stroke-width="0.6"/></g>
<g transform="translate(180 82)" ><polygon points="1.3,27 19.6,27 19.6,31.8 1.3,31.8" fill="#bdbdbd" /><polygon points="19.6,27 25,21.4 25,25.8 19.6,31.8" fill="#a0a0a0" /><polygon points="1.3,6.7 19.6,6.7 19.6,27 1.3,27" fill="#6aafe6" /><polygon points="1.3,6.7 6.7,0.3 25,0.3 19.6,6.7" fill="#8fc8f5" /><polygon points="19.6,6.7 25,0.3 25,20.6 19.6,27" fill="#4a92cf" /><path d="M28.8 3.5 V25.6" stroke="#222" stroke-width="1.1"/><polygon points="26.5,5.6 28.8,0.6 31.1,5.6" fill="#222"/></g>
<g transform="translate(222 82)" ><path d="M31 7.6 Q17.5 -3.4 3.2 6.6" stroke="#333" stroke-width="1" fill="none"/><polygon points="1.6,7.8 6.6,4.2 6.2,8.6" fill="#333"/><path d="M1.6 16.4 Q4.8 9.6 17 7.2 Q26.4 6.6 33 13.6 L26.8 17.6 Q16.8 11.6 6.4 18.4 Z" fill="#8fc8f5"/><path d="M6.4 18.4 Q16.8 11.6 26.8 17.6 V28.4 Q16.8 21.4 6.4 28.6 Z" fill="#6aafe6"/><path d="M1.6 16.4 L6.4 18.4 V28.6 L1.6 23.4 Z" fill="#4a92cf"/><path d="M26.8 17.6 L33 13.6 V22.4 L26.8 28.4 Z" fill="#f6f6f6" stroke="#555" stroke-width="0.9" stroke-linejoin="round"/></g>
<g transform="translate(265 82)" ><polygon points="1.1,6.7 26.7,6.7 26.7,31.7 1.1,31.7" fill="#dcdcdc" stroke="#666" stroke-width="0.9" stroke-linejoin="round" /><polygon points="1.1,6.7 7,0.3 32.6,0.3 26.7,6.7" fill="#efefef" stroke="#666" stroke-width="0.9" stroke-linejoin="round" /><polygon points="26.7,6.7 32.6,0.3 32.6,25.3 26.7,31.7" fill="#bcbcbc" stroke="#666" stroke-width="0.9" stroke-linejoin="round" /><circle cx="14.3" cy="18.2" r="8.2" fill="#fafafa" stroke="#555" stroke-width="0.9"/><circle cx="14.3" cy="18.2" r="6.4" fill="#5aa6e2"/><circle cx="16.5" cy="16" r="5.5" fill="#fafafa"/><circle cx="14.3" cy="18.2" r="8.2" fill="none" stroke="#555" stroke-width="0.9"/></g>
<g transform="translate(309 82)" ><path d="M6.9 5.5 H21.4 M3.6 8.8 V23.2 M6.9 26.5 H21.4" stroke="#555" stroke-width="1" fill="none"/><rect x="0.6" y="2.5" width="6" height="6" fill="#fff" stroke="#555" stroke-width="0.9"/><rect x="21.4" y="2.2" width="6.6" height="6.6" fill="#62b0ea"/><rect x="0.3" y="23.2" width="6.6" height="6.6" fill="#62b0ea"/><rect x="21.4" y="23.2" width="6.6" height="6.6" fill="#62b0ea"/></g>
<g transform="translate(352 82)" ><path d="M6.5 8 H18 Q23.4 8 23.4 13.4 V25.6 Q23.4 31.6 17.6 31.6 H6.2 Q0.3 31.6 0.3 25.6 V14 Q0.3 8 6.5 8 Z" fill="#a682e0" stroke="#7b58ba" stroke-width="0.9"/><path d="M6.5 8 L10.4 2.6 H22 L18 8 Z" fill="#c1a4f0" stroke="#7b58ba" stroke-width="0.8"/><path d="M23.4 13.4 L29.4 8.6 V22.4 Q29.4 26 23.4 30 Z" fill="#8a63cc" stroke="#7b58ba" stroke-width="0.8"/><path d="M1 20 H23 M11.8 8.6 V31 M26.4 11.2 V27.6" stroke="#c9b2f2" stroke-width="0.9" fill="none"/><path d="M3 11.6 Q3.4 9.8 6.6 9.6 H17" stroke="#d9c8f8" stroke-width="1.4" fill="none"/><polygon points="23.6,0.4 24.9,5.5 29.4,2.8 26.7,7.3 31.8,8.6 26.7,9.9 29.4,14.4 24.9,11.7 23.6,16.8 22.3,11.7 17.8,14.4 20.5,9.9 15.4,8.6 20.5,7.3 17.8,2.8 22.3,5.5" fill="#f59b00"/></g>
<g transform="translate(406 82)" ><path d="M1.2 7.2 L6.4 0.6 H12 V31.6 H1.2 Z" fill="#dedede" stroke="#666" stroke-width="0.9" stroke-linejoin="round"/><polygon points="7.6,7 17.2,7 17.2,31.6 7.6,31.6" fill="#6aafe6" /><polygon points="7.6,7 13.2,0.6 22.8,0.6 17.2,7" fill="#8fc8f5" /><polygon points="17.2,7 22.8,0.6 22.8,25.2 17.2,31.6" fill="#4a92cf" /><path d="M20.6 15.6 H27.6" stroke="#222" stroke-width="1.1"/><polygon points="26.4,13.2 30.4,15.6 26.4,18" fill="#222"/></g>
<g transform="translate(449 82)" ><path d="M0.6 7.6 L6.8 0.6 H17.6 Q30.6 2.6 32.2 15.4 V24.6 L24.4 31.6 H0.6 Z" fill="#dcdcdc" stroke="#666" stroke-width="0.9" stroke-linejoin="round"/><path d="M24.4 20.6 L32.2 15.4 V24.6 L24.4 31.6 Z" fill="#bcbcbc" stroke="#666" stroke-width="0.8" stroke-linejoin="round"/><path d="M12 5.6 L17.8 0.6 Q30.6 2.6 32.2 15.4 L24.4 20.6 Q23 9.6 12 5.6 Z" fill="#6aafe6"/><path d="M0.6 7.6 H8 Q23.4 8.6 24.4 20.6 V31.6" fill="none" stroke="#777" stroke-width="0.8"/></g>
<g transform="translate(492 82)" ><polygon points="0.6,7.2 24.6,7.2 24.6,31.6 0.6,31.6" fill="#e3e3e3" stroke="#666" stroke-width="0.9" stroke-linejoin="round" /><polygon points="0.6,7.2 8,0.6 32,0.6 24.6,7.2" fill="#f4f4f4" stroke="#666" stroke-width="0.9" stroke-linejoin="round" /><polygon points="24.6,7.2 32,0.6 32,25 24.6,31.6" fill="#bcbcbc" stroke="#666" stroke-width="0.9" stroke-linejoin="round" /><rect x="4.4" y="11.4" width="16.4" height="16.4" fill="#d2d2d2"/><path d="M5 12 H12.4 V20.4 H20.4 V27.4 H5 Z" fill="#8fc8f5"/><path d="M5 12 H12.4 V20.4 L5 27.4 Z" fill="#4a92cf"/></g>
<g transform="translate(535 82)" ><polygon points="11.6,6.6 27.2,6.6 27.2,21.6 11.6,21.6" fill="#6aafe6" /><polygon points="11.6,6.6 16.8,0.6 32.4,0.6 27.2,6.6" fill="#8fc8f5" /><polygon points="27.2,6.6 32.4,0.6 32.4,15.6 27.2,21.6" fill="#4a92cf" /><polygon points="0.4,16.6 18.8,16.6 18.8,31.6 0.4,31.6" fill="#6aafe6" /><polygon points="0.4,16.6 5.6,10.6 24,10.6 18.8,16.6" fill="#8fc8f5" /><polygon points="18.8,16.6 24,10.6 24,25.6 18.8,31.6" fill="#4a92cf" /><polygon points="11.6,16.6 18.8,16.6 18.8,21.6 27.2,21.6 27.2,6.6 11.6,6.6" fill="#6aafe6" /></g>
<g transform="translate(578 82)" ><polygon points="2.4,19.6 24.4,19.6 24.4,31 2.4,31" fill="#dcdcdc" stroke="#666" stroke-width="0.9" stroke-linejoin="round" /><polygon points="2.4,19.6 8,14 30,14 24.4,19.6" fill="#efefef" stroke="#666" stroke-width="0.9" stroke-linejoin="round" /><polygon points="24.4,19.6 30,14 30,25.4 24.4,31" fill="#bcbcbc" stroke="#666" stroke-width="0.9" stroke-linejoin="round" /><polygon points="2.4,5.6 24.4,5.6 24.4,17.6 2.4,17.6" fill="#6aafe6" /><polygon points="2.4,5.6 8,0.4 30,0.4 24.4,5.6" fill="#8fc8f5" /><polygon points="24.4,5.6 30,0.4 30,12.4 24.4,17.6" fill="#4a92cf" /><path d="M0 18.6 H24.6 L32 11" stroke="#2f8fe0" stroke-width="1.1" fill="none"/></g>
<g transform="translate(621 82)" ><path d="M16 3 V29 M3 16.2 H29" stroke="#333" stroke-width="1.9"/><polygon points="16,0.4 20.8,7.4 11.2,7.4" fill="#333"/><polygon points="16,31.8 20.8,24.8 11.2,24.8" fill="#333"/><polygon points="0.4,16.2 7.6,11.4 7.6,21" fill="#333"/><polygon points="31.8,16.2 24.6,11.4 24.6,21" fill="#333"/></g>
<g transform="translate(675 82)" ><polygon points="0.2,19 11.6,19 11.6,31.4 0.2,31.4" fill="#dcdcdc" stroke="#777" stroke-width="0.8" stroke-linejoin="round" /><polygon points="0.2,19 4.2,15.4 15.6,15.4 11.6,19" fill="#efefef" stroke="#777" stroke-width="0.8" stroke-linejoin="round" /><polygon points="11.6,19 15.6,15.4 15.6,27.8 11.6,31.4" fill="#bcbcbc" stroke="#777" stroke-width="0.8" stroke-linejoin="round" /><polygon points="12.4,19 23.8,19 23.8,31.4 12.4,31.4" fill="#dcdcdc" stroke="#777" stroke-width="0.8" stroke-linejoin="round" /><polygon points="12.4,19 16.4,15.4 27.8,15.4 23.8,19" fill="#efefef" stroke="#777" stroke-width="0.8" stroke-linejoin="round" /><polygon points="23.8,19 27.8,15.4 27.8,27.8 23.8,31.4" fill="#bcbcbc" stroke="#777" stroke-width="0.8" stroke-linejoin="round" /><polygon points="0.6,6.6 11.6,6.6 11.6,18.2 0.6,18.2" fill="#6aafe6" /><polygon points="0.6,6.6 4.8,2.8 15.8,2.8 11.6,6.6" fill="#8fc8f5" /><polygon points="11.6,6.6 15.8,2.8 15.8,14.4 11.6,18.2" fill="#4a92cf" /><polygon points="24.0,0.0 25.2,4.7 29.4,2.2 26.9,6.4 31.6,7.6 26.9,8.8 29.4,13.0 25.2,10.5 24.0,15.2 22.8,10.5 18.6,13.0 21.1,8.8 16.4,7.6 21.1,6.4 18.6,2.2 22.8,4.7" fill="#f59b00"/></g>
<g transform="translate(719 82)" ><path d="M1 9 Q1 4 6 2.4 L10.6 1 Q14 1.2 13.8 5 L13.2 9 L10.4 11 V21 L4.4 27.6 L1 26.4 Z" fill="#d8d8d8" stroke="#666" stroke-width="0.9" stroke-linejoin="round"/><ellipse cx="11.2" cy="4.4" rx="1.6" ry="2.4" fill="#f4f4f4" stroke="#666" stroke-width="0.7"/><path d="M16.6 12.6 L22 9 L22.6 4.8 L28.6 10.4 V27 L22 22.6 L17 23.6 Z" fill="#d8d8d8" stroke="#666" stroke-width="0.9" stroke-linejoin="round"/><path d="M22 9 V22.6" stroke="#777" stroke-width="0.8"/><path d="M9.6 13.6 V19.6 M19.6 7.4 V12.4" stroke="#2f8fe0" stroke-width="1.2"/></g>
<g transform="translate(795 82)" ><path d="M0.8 10 L9.6 1 V22.6 L0.8 31.4 Z" fill="#e6e6e6" stroke="#666" stroke-width="0.9" stroke-linejoin="round"/><path d="M0.8 10 V31.4 H8.4 V10 Z" fill="#dadada" stroke="#666" stroke-width="0.9" stroke-linejoin="round"/><path d="M8.4 10 L17.2 1 V22.6 L8.4 31.4 Z" fill="#5cc37c"/><path d="M21.2 9.6 L30.2 0.6 V22.2 L21.2 31 Z" fill="#e89a60"/></g>
<g transform="translate(885 89)" ><path d="M0.6 0.4 V8.4 M27.6 0.4 V8.4 M2 4.4 H26" stroke="#555" stroke-width="1" fill="none"/><polygon points="1,4.4 5,2.4 5,6.4" fill="#555"/><polygon points="27.2,4.4 23.2,2.4 23.2,6.4" fill="#555"/><rect x="0.2" y="10.4" width="27.8" height="6" fill="#f7a100"/><path d="M3 10.4 V13 M5.8 10.4 V12.2 M8.6 10.4 V13 M11.4 10.4 V12.2 M14.2 10.4 V13 M17 10.4 V12.2 M19.8 10.4 V13 M22.6 10.4 V12.2 M25.4 10.4 V13" stroke="#c47600" stroke-width="0.9"/></g>
<g transform="translate(958 83)" ><rect x="0.3" y="0.3" width="28.4" height="28.4" fill="#7ec8fa" stroke="#4c9bd6" stroke-width="0.7"/><path d="M0.6 19 Q5 11.6 9.6 11.8 Q14 12.6 17.6 19.6 Q20.8 15.6 23 15.6 Q26 16.4 28.4 21 V28.4 H0.6 Z" fill="#3f8fcf"/><circle cx="20.8" cy="7.8" r="3.1" fill="#fdfbd0"/></g>
<g transform="translate(1026 79)" ><path d="M7 6.3 L23.8 5.2 L33.4 14.6 L14.8 15.1 Z" fill="#5dc880" stroke="#4aa96a" stroke-width="0.6" stroke-linejoin="round"/><path d="M16.2 5.8 L24.2 14.6" stroke="#3f9a5c" stroke-width="0.9"/><path d="M7 6.3 Q3.3 8.6 3.3 12.4 V22.2 L12.5 31.4 V19.6 Q12.6 16.2 14.8 15.1 Z" fill="#f4f4f4" stroke="#4a4a4a" stroke-width="1.1" stroke-linejoin="round"/><path d="M3.8 13.9 L12.3 21.5" stroke="#4a4a4a" stroke-width="1.1"/><path d="M32.6 18.8 L34.4 20.5 L29.1 25.5 L27.3 23.8 Z" fill="#8c8c8c"/><path d="M25 25.2 Q27.6 25.4 27.9 27 Q28 29.6 25.4 31 Q22 32.8 17.4 32.6 Q20 30.6 21.4 28.2 Q23 25.4 25 25.2 Z" fill="#9b6b30"/></g>
<polygon points="277.6,123.6 284,123.6 280.8,128" fill="#333"/><polygon points="544.6,123.6 551,123.6 547.8,128" fill="#333"/><polygon points="736,123.6 742.4,123.6 739.2,128" fill="#333"/><polygon points="838,123.6 844.4,123.6 841.2,128" fill="#333"/><polygon points="916,123.6 922.4,123.6 919.2,128" fill="#333"/><polygon points="989,123.6 995.4,123.6 992.2,128" fill="#333"/><polygon points="1061,123.6 1067.4,123.6 1064.2,128" fill="#333"/><polygon points="85,93.6 91.4,93.6 88.2,98" fill="#333"/><defs><linearGradient id="trig" x1="0" y1="0" x2="1" y2="0"><stop offset="0" stop-color="#444"/><stop offset="1" stop-color="#b5b5b5"/></linearGradient></defs><polygon points="9.4,156.2 14,152.8 14,159.6" fill="#333"/><polygon points="14.6,156.2 19.2,152.8 19.2,159.6" fill="#333"/><circle cx="287.2" cy="156.2" r="4.6" fill="#1a1a1a"/><rect x="284.4" y="155.5" width="5.6" height="1.5" fill="#fff"/><circle cx="287.2" cy="973.4" r="4.6" fill="#1a1a1a"/><path d="M284.4 973.4 H290 M287.2 970.6 V976.2" stroke="#fff" stroke-width="1.4"/><path d="M21 189.4 H32 V178.4 Z" fill="url(#trig)" stroke="#222" stroke-width="0.9" stroke-linejoin="round"/><path d="M43.3 184 Q51.1 175 58.9 184 Q51.1 193 43.3 184 Z" fill="#9a9a9a"/><circle cx="51.1" cy="184" r="3.1" fill="#f3f3f3"/><circle cx="51.1" cy="184" r="1.7" fill="#9a9a9a"/><path d="M68.2 180.2 L71.8 176.6 H83.2 V188 L79.6 191.6 H68.2 Z" fill="#e8eaf0" stroke="#333" stroke-width="0.9" stroke-linejoin="round"/><path d="M68.2 180.2 H79.6 V191.6 M79.6 180.2 L83.2 176.6" fill="none" stroke="#555" stroke-width="0.7"/><path d="M79.6 180.2 L83.2 176.6 V188 L79.6 191.6 Z" fill="#c4c7d0" opacity="0.8"/><circle cx="173.4" cy="184.3" r="6" fill="#fff" stroke="#222" stroke-width="1.3"/><circle cx="173.4" cy="184.3" r="2.3" fill="#222"/><path d="M40.6 202.2 V214.2 L49 208.2 Z" fill="#e9e9e9" stroke="#333" stroke-width="1.2" stroke-linejoin="round"/><path d="M40.6 226.2 V238.2 L49 232.2 Z" fill="#e9e9e9" stroke="#333" stroke-width="1.2" stroke-linejoin="round"/><path d="M40.6 250.2 V262.2 L49 256.2 Z" fill="#e9e9e9" stroke="#333" stroke-width="1.2" stroke-linejoin="round"/><path d="M40.6 274.2 V286.2 L49 280.2 Z" fill="#e9e9e9" stroke="#333" stroke-width="1.2" stroke-linejoin="round"/><polygon points="76.78,206.82 76.78,209.58 74.50,209.54 73.81,211.21 75.45,212.80 73.50,214.75 71.91,213.11 70.24,213.80 70.28,216.08 67.52,216.08 67.56,213.80 65.89,213.11 64.30,214.75 62.35,212.80 63.99,211.21 63.30,209.54 61.02,209.58 61.02,206.82 63.30,206.86 63.99,205.19 62.35,203.60 64.30,201.65 65.89,203.29 67.56,202.60 67.52,200.32 70.28,200.32 70.24,202.60 71.91,203.29 73.50,201.65 75.45,203.60 73.81,205.19 74.50,206.86" fill="#9a9a9a"/><circle cx="68.9" cy="208.2" r="2.6" fill="#f1f1f1"/><path d="M61 225.6 H67.2 L68.6 228.2 H77 V238.2 H61 Z" fill="#9a9a9a"/><path d="M61 227.9 H67.6" stroke="#f0f0f0" stroke-width="0.7" opacity="0.8"/><path d="M61.3 256.1 Q68.9 247.5 76.5 256.1 Q68.9 264.7 61.3 256.1 Z" fill="none" stroke="#9f9f9f" stroke-width="0.9"/><circle cx="68.9" cy="256.1" r="3" fill="none" stroke="#9f9f9f" stroke-width="0.9"/><path d="M63.5 250.5 L74.7 261.7" stroke="#8a8a8a" stroke-width="0.9"/><path d="M86 249.6 H92.2 L93.6 252.2 H102 V262.2 H86 Z" fill="#9a9a9a"/><path d="M86 251.9 H92.6" stroke="#f0f0f0" stroke-width="0.7" opacity="0.8"/><path d="M61.1 280.1 Q68.9 271.1 76.7 280.1 Q68.9 289.1 61.1 280.1 Z" fill="#9a9a9a"/><circle cx="68.9" cy="280.1" r="3.1" fill="#f3f3f3"/><circle cx="68.9" cy="280.1" r="1.7" fill="#9a9a9a"/><path d="M86 273.6 H92.2 L93.6 276.2 H102 V286.2 H86 Z" fill="#9a9a9a"/><path d="M86 275.9 H92.6" stroke="#f0f0f0" stroke-width="0.7" opacity="0.8"/><path d="M38.8 309.6 H49.8 V298.6 Z" fill="url(#trig)" stroke="#222" stroke-width="0.9" stroke-linejoin="round"/><path d="M61.1 304.1 Q68.9 295.1 76.7 304.1 Q68.9 313.1 61.1 304.1 Z" fill="#9a9a9a"/><circle cx="68.9" cy="304.1" r="3.1" fill="#f3f3f3"/><circle cx="68.9" cy="304.1" r="1.7" fill="#9a9a9a"/><path d="M86 297.8 H92.2 L93.6 300.4 H102 V310.4 H86 Z" fill="#9a9a9a"/><path d="M86 300.1 H92.6" stroke="#f0f0f0" stroke-width="0.7" opacity="0.8"/><path d="M79.4 328 Q87 319.4 94.6 328 Q87 336.6 79.4 328 Z" fill="none" stroke="#9f9f9f" stroke-width="0.9"/><circle cx="87" cy="328" r="3" fill="none" stroke="#9f9f9f" stroke-width="0.9"/><path d="M81.6 322.4 L92.8 333.6" stroke="#8a8a8a" stroke-width="0.9"/><path d="M106.3 321 H116.5 M104.9 322.4 V332.6 M117.9 322.4 V328 M106.3 334 H111.9" stroke="#555" stroke-width="0.9" stroke-dasharray="4.6 1.6" fill="none"/><rect x="104" y="320.1" width="1.8" height="1.8" fill="#2196f3"/><rect x="117" y="320.1" width="1.8" height="1.8" fill="#2196f3"/><rect x="104" y="333.1" width="1.8" height="1.8" fill="#2196f3"/><g transform="translate(116.3 332.2) rotate(45)"><rect x="-1.6" y="-5.4" width="3.2" height="7" fill="#f6bb45"/><rect x="-1.6" y="-7.2" width="3.2" height="2" rx="0.8" fill="#ee3344"/><polygon points="-1.6,1.6 1.6,1.6 0,4.2" fill="#777"/></g><path d="M79.4 352 Q87 343.4 94.6 352 Q87 360.6 79.4 352 Z" fill="none" stroke="#9f9f9f" stroke-width="0.9"/><circle cx="87" cy="352" r="3" fill="none" stroke="#9f9f9f" stroke-width="0.9"/><path d="M81.6 346.4 L92.8 357.6" stroke="#8a8a8a" stroke-width="0.9"/><path d="M106.3 345 H116.5 M104.9 346.4 V356.6 M117.9 346.4 V352 M106.3 358 H111.9" stroke="#555" stroke-width="0.9" stroke-dasharray="4.6 1.6" fill="none"/><rect x="104" y="344.1" width="1.8" height="1.8" fill="#555"/><rect x="117" y="344.1" width="1.8" height="1.8" fill="#555"/><rect x="104" y="357.1" width="1.8" height="1.8" fill="#555"/><rect x="113.1" y="355.2" width="7" height="4.6" fill="#dd3b45"/><path d="M114.7 355.4 V353.6 Q114.7 351.8 116.6 351.8 Q118.5 351.8 118.5 353.6 V355.4" fill="none" stroke="#dd3b45" stroke-width="1.2"/><path d="M114.1 356.8 H119.1 M114.1 358.4 H119.1" stroke="#f2a0a4" stroke-width="0.7"/><path d="M79.2 376 Q87 367 94.8 376 Q87 385 79.2 376 Z" fill="#9a9a9a"/><circle cx="87" cy="376" r="3.1" fill="#f3f3f3"/><circle cx="87" cy="376" r="1.7" fill="#9a9a9a"/><path d="M106.3 369 H116.5 M104.9 370.4 V380.6 M117.9 370.4 V376 M106.3 382 H111.9" stroke="#555" stroke-width="0.9" stroke-dasharray="4.6 1.6" fill="none"/><rect x="104" y="368.1" width="1.8" height="1.8" fill="#555"/><rect x="117" y="368.1" width="1.8" height="1.8" fill="#555"/><rect x="104" y="381.1" width="1.8" height="1.8" fill="#555"/><rect x="113.1" y="379.2" width="7" height="4.6" fill="#dd3b45"/><path d="M114.7 379.4 V377.6 Q114.7 375.8 116.6 375.8 Q118.5 375.8 118.5 377.6 V379.4" fill="none" stroke="#dd3b45" stroke-width="1.2"/><path d="M114.1 380.8 H119.1 M114.1 382.4 H119.1" stroke="#f2a0a4" stroke-width="0.7"/><path d="M841.6 147.6 L850.4 162.8 H832.8 Z" fill="#f7a11a" stroke="#f7a11a" stroke-width="1.2" stroke-linejoin="round"/><rect x="840.7" y="152" width="1.9" height="6" fill="#fff"/><rect x="840.7" y="159.4" width="1.9" height="1.9" fill="#fff"/><defs><filter id="vcs" x="-30%" y="-30%" width="160%" height="160%"><feGaussianBlur stdDeviation="3.5"/></filter></defs><path d="M1834 204 L1888 198 L1887 238 L1838 245 Z" fill="#000" opacity="0.22" filter="url(#vcs)"/><path d="M1829.6 173.4 L1874.4 169.4 L1887.8 195 L1834.2 200.8 Z" fill="#f0f0f0" fill-opacity="0.88"/><path d="M1834.2 200.8 L1887.8 195 L1884.8 234 L1837.6 239.8 Z" fill="#ededed" fill-opacity="0.90"/><path d="M1829.6 173.4 L1834.2 200.8 L1837.6 239.8 L1833.4 214 Z" fill="#e4e4e4" fill-opacity="0.9"/><path d="M1829.6 173.4 L1874.4 169.4 L1887.8 195 L1834.2 200.8 Z M1834.2 200.8 L1837.6 239.8 M1829.6 173.4 L1833.2 212 L1837.6 239.8" fill="none" stroke="#777" stroke-width="0.9" stroke-dasharray="5 2.5"/><path d="M1890.2 189 L1884.8 234" stroke="#6a6af2" stroke-width="2.2" stroke-linecap="round"/><path d="M1884.8 234 L1829.4 242" stroke="#5be85b" stroke-width="2.2" stroke-linecap="round"/><text transform="matrix(0.76 -0.10 0.02 1 1861.4 222.6)" text-anchor="middle" font-family="Liberation Sans, sans-serif" font-size="12.5" font-weight="700" fill="#8a909c" letter-spacing="0.3">LEFT</text><text transform="matrix(0.10 -0.56 1.40 0.16 1863.2 184.2)" text-anchor="middle" font-family="Liberation Sans, sans-serif" font-size="10" font-weight="700" fill="#8f949e">TOP</text><text x="1886.4" y="185.4" font-family="Liberation Sans, sans-serif" font-size="13" fill="#6a6af2" transform="skewX(-8)" style="transform-origin:1886px 185px">Z</text><text x="1818.4" y="247.4" font-family="Liberation Sans, sans-serif" font-size="12.5" fill="#5be85b">Y</text><path d="M852.2 979.4 V968.4 H850.2 L853.4 964.6 L856.6 968.4 H854.6 V979.4 Z" fill="#f4f4f4" stroke="#222" stroke-width="0.9" stroke-linejoin="round"/><path d="M850.8 970.6 Q845.4 971.6 845.6 973.6 Q846.4 976 850.8 976.4 M855.8 970.6 Q860.4 971.4 860.4 973.4 Q860 975.6 855.8 976.6" fill="none" stroke="#222" stroke-width="1.2"/><polygon points="847.2,976.2 851,973.8 851,978.8" fill="#222"/><polygon points="866.3,970 871.9,970 869.1,973.8" fill="#222"/><path d="M878.6 969.6 H893.4 V979 H878.6 Z" fill="#f2f2f2" stroke="#2b3140" stroke-width="1.1"/><path d="M880.2 969.4 L883.6 965.4 L885.4 967 L888 965 L890.4 966.2 V969.4" fill="#c9ccd4" stroke="#2b3140" stroke-width="0.9" stroke-linejoin="round"/><rect x="881.4" y="972" width="9.2" height="4.4" fill="#a4abbb" stroke="#2b3140" stroke-width="0.9"/><path d="M908.6 979.8 Q906.6 976.6 904.9 973.4 Q904.4 972 905.7 971.8 Q907 971.8 908.5 974.2 V967.6 Q908.5 966.3 909.6 966.3 Q910.7 966.3 910.7 967.6 V966 Q910.7 964.8 911.8 964.8 Q912.9 964.8 912.9 966 V966.6 Q912.9 965.4 914 965.4 Q915.1 965.4 915.1 966.6 V968.2 Q915.1 967.1 916.2 967.1 Q917.3 967.1 917.3 968.3 V974.2 Q917.3 977.6 915.8 979.8 Z" fill="#fdfdfd" stroke="#222" stroke-width="0.85" stroke-linejoin="round"/><path d="M910.7 967.6 V972 M912.9 966.4 V972 M915.1 968 V972" stroke="#222" stroke-width="0.75"/><circle cx="934.4" cy="971" r="4.4" fill="#e4f0f2" stroke="#2a3340" stroke-width="1.1"/><path d="M937.6 974.4 L942.2 979" stroke="#2a3340" stroke-width="2.2" stroke-linecap="round"/><path d="M941 966.4 H946 M943.5 964 V968.8 M941 970.4 H946" stroke="#222" stroke-width="0.9"/><rect x="956.4" y="964.4" width="15" height="15" fill="none" stroke="#333" stroke-width="0.9" stroke-dasharray="2 1.4"/><circle cx="962.2" cy="970.4" r="5.6" fill="#e4f0f2" stroke="#2a3340" stroke-width="1.1"/><path d="M966.2 974.6 L971 979.2" stroke="#2a3340" stroke-width="2.2" stroke-linecap="round"/><polygon points="977.4,970 983,970 980.2,973.8" fill="#222"/><rect x="989.6" y="964.6" width="15" height="11.4" rx="1" fill="#f0f0f0" stroke="#2a2f3a" stroke-width="1.1"/><rect x="991.6" y="966.4" width="11" height="7.4" fill="#8fb0e2" stroke="#3f5f9f" stroke-width="0.7"/><path d="M995.4 976.2 L994 979.2 H1000.4 L999 976.2 Z" fill="#d8d8d8" stroke="#555" stroke-width="0.6"/><polygon points="1007.4,970 1013,970 1010.2,973.8" fill="#222"/><defs><linearGradient id="ngg" x1="0" y1="0" x2="0" y2="1"><stop offset="0" stop-color="#fff"/><stop offset="1" stop-color="#8f9ab0"/></linearGradient></defs><rect x="1020.2" y="964.4" width="15.2" height="15.2" fill="url(#ngg)" stroke="#333" stroke-width="0.9"/><path d="M1023.24 964.4 V979.6 M1020.2 967.44 H1035.4 M1026.28 964.4 V979.6 M1020.2 970.48 H1035.4 M1029.32 964.4 V979.6 M1020.2 973.52 H1035.4 M1032.36 964.4 V979.6 M1020.2 976.56 H1035.4 " stroke="#2c2f36" stroke-width="0.65"/><polygon points="1038.8,970 1044.4,970 1041.6,973.8" fill="#222"/><rect x="1051.2" y="965.2" width="6.8" height="6.4" fill="#a9c1ea" stroke="#34549a" stroke-width="0.9"/><rect x="1052.9" y="967.2" width="3.4" height="2.4" fill="#8fabdf"/><rect x="1059.2" y="965.2" width="6.8" height="6.4" fill="#a9c1ea" stroke="#34549a" stroke-width="0.9"/><rect x="1060.9" y="967.2" width="3.4" height="2.4" fill="#8fabdf"/><rect x="1051.2" y="973" width="6.8" height="6.4" fill="#a9c1ea" stroke="#34549a" stroke-width="0.9"/><rect x="1052.9" y="975" width="3.4" height="2.4" fill="#8fabdf"/><rect x="1059.2" y="973" width="6.8" height="6.4" fill="#a9c1ea" stroke="#34549a" stroke-width="0.9"/><rect x="1060.9" y="975" width="3.4" height="2.4" fill="#8fabdf"/><polygon points="1069.4,970 1075,970 1072.2,973.8" fill="#222"/><rect x="10.8" y="1008" width="2.1" height="14" fill="#4a4a4a"/><polygon points="13,1015 23.2,1008.2 23.2,1021.8" fill="#4a4a4a"/><polygon points="35.2,1015 45,1008.8 45,1021.2" fill="#4a4a4a"/><rect x="46" y="1011.8" width="2.1" height="6.6" fill="#4a4a4a"/><polygon points="61,1007.4 73,1015.1 61,1022.8" fill="#4a4a4a"/><rect x="85" y="1011.8" width="2.1" height="6.6" fill="#4a4a4a"/><polygon points="88.4,1008.8 98.2,1015 88.4,1021.2" fill="#4a4a4a"/><polygon points="110.8,1008.2 121,1015 110.8,1021.8" fill="#4a4a4a"/><rect x="121" y="1008" width="2.1" height="14" fill="#4a4a4a"/><path d="M154.3 1025.4 V1031 H298.7 V1025.4 M178 1025.4 V1031 M202 1025.4 V1031 M226 1025.4 V1031 M250 1025.4 V1031 M274 1025.4 V1031 " fill="none" stroke="#c6c6c6" stroke-width="1.5"/><path d="M148 1007.4 H159 M147 1008.4 V1019.4 M160 1008.4 V1014 M148 1020.4 H154" stroke="#555" stroke-width="0.9" stroke-dasharray="4.4 1.4" fill="none"/><rect x="146.1" y="1006.5" width="1.8" height="1.8" fill="#2196f3"/><rect x="159.1" y="1006.5" width="1.8" height="1.8" fill="#2196f3"/><rect x="146.1" y="1019.5" width="1.8" height="1.8" fill="#2196f3"/><g transform="translate(157.8 1017.8) rotate(45)"><rect x="-1.5" y="-5" width="3" height="6.6" fill="#f6bb45"/><rect x="-1.5" y="-6.8" width="3" height="2" rx="0.8" fill="#ee3344"/><polygon points="-1.5,1.6 1.5,1.6 0,4" fill="#777"/></g><polygon points="170.2,1019 179.4,1019 179.4,1021.4 170.2,1021.4" fill="#c2c2c2"/><polygon points="179.4,1019 182.2,1016.4 182.2,1018.6 179.4,1021.4" fill="#a8a8a8"/><polygon points="170.2,1009.2 179.4,1009.2 179.4,1019 170.2,1019" fill="#6aafe6"/><polygon points="170.2,1009.2 173,1006.2 182.2,1006.2 179.4,1009.2" fill="#8fc8f5"/><polygon points="179.4,1009.2 182.2,1006.2 182.2,1016.4 179.4,1019" fill="#4a92cf"/><path d="M184.4 1008.4 V1018.4" stroke="#222" stroke-width="1"/><polygon points="183,1009.4 184.4,1006.4 185.8,1009.4" fill="#222"/><path d="M196.2 1007.4 H207.2 M195.2 1008.4 V1019.4 M208.2 1008.4 V1014 M196.2 1020.4 H202.2" stroke="#555" stroke-width="0.9" stroke-dasharray="4.4 1.4" fill="none"/><rect x="194.3" y="1006.5" width="1.8" height="1.8" fill="#2196f3"/><rect x="207.3" y="1006.5" width="1.8" height="1.8" fill="#2196f3"/><rect x="194.3" y="1019.5" width="1.8" height="1.8" fill="#2196f3"/><g transform="translate(206 1017.8) rotate(45)"><rect x="-1.5" y="-5" width="3" height="6.6" fill="#f6bb45"/><rect x="-1.5" y="-6.8" width="3" height="2" rx="0.8" fill="#ee3344"/><polygon points="-1.5,1.6 1.5,1.6 0,4" fill="#777"/></g><polygon points="218.4,1019 227.6,1019 227.6,1021.4 218.4,1021.4" fill="#c2c2c2"/><polygon points="227.6,1019 230.4,1016.4 230.4,1018.6 227.6,1021.4" fill="#a8a8a8"/><polygon points="218.4,1009.2 227.6,1009.2 227.6,1019 218.4,1019" fill="#6aafe6"/><polygon points="218.4,1009.2 221.2,1006.2 230.4,1006.2 227.6,1009.2" fill="#8fc8f5"/><polygon points="227.6,1009.2 230.4,1006.2 230.4,1016.4 227.6,1019" fill="#4a92cf"/><path d="M232.6 1008.4 V1018.4" stroke="#222" stroke-width="1"/><polygon points="231.2,1009.4 232.6,1006.4 234,1009.4" fill="#222"/><path d="M244 1007.4 H255 M243 1008.4 V1019.4 M256 1008.4 V1014 M244 1020.4 H250" stroke="#555" stroke-width="0.9" stroke-dasharray="4.4 1.4" fill="none"/><rect x="242.1" y="1006.5" width="1.8" height="1.8" fill="#2196f3"/><rect x="255.1" y="1006.5" width="1.8" height="1.8" fill="#2196f3"/><rect x="242.1" y="1019.5" width="1.8" height="1.8" fill="#2196f3"/><g transform="translate(253.8 1017.8) rotate(45)"><rect x="-1.5" y="-5" width="3" height="6.6" fill="#f6bb45"/><rect x="-1.5" y="-6.8" width="3" height="2" rx="0.8" fill="#ee3344"/><polygon points="-1.5,1.6 1.5,1.6 0,4" fill="#777"/></g><path d="M266.3 1010 L269.3 1006.6 H274.5 Q280.9 1007.6 281.7 1014 V1018 L277.9 1021.6 H266.3 Z" fill="#dcdcdc" stroke="#666" stroke-width="0.9" stroke-linejoin="round"/><path d="M271.9 1009 L274.7 1006.6 Q280.9 1007.6 281.7 1014 L277.9 1016.4 Q277.3 1011 271.9 1009 Z" fill="#5aa6e2"/><path d="M269.9 1010.2 Q277.5 1010.6 277.9 1016.4 V1021.4" fill="none" stroke="#777" stroke-width="0.7"/><path d="M290.4 1010 L293.4 1006.6 H298.6 Q305 1007.6 305.8 1014 V1018 L302 1021.6 H290.4 Z" fill="#dcdcdc" stroke="#666" stroke-width="0.9" stroke-linejoin="round"/><path d="M296 1009 L298.8 1006.6 Q305 1007.6 305.8 1014 L302 1016.4 Q301.4 1011 296 1009 Z" fill="#5aa6e2"/><path d="M294 1010.2 Q301.6 1010.6 302 1016.4 V1021.4" fill="none" stroke="#777" stroke-width="0.7"/><path d="M304 1000.4 H316 V1003 L311 1007.4 V1031.8 H309 V1007.4 L304 1003 Z" fill="#6a6a6a"/><polygon points="1907.08,1013.59 1907.08,1016.41 1904.74,1016.38 1904.03,1018.08 1905.71,1019.72 1903.72,1021.71 1902.08,1020.03 1900.38,1020.74 1900.41,1023.08 1897.59,1023.08 1897.62,1020.74 1895.92,1020.03 1894.28,1021.71 1892.29,1019.72 1893.97,1018.08 1893.26,1016.38 1890.92,1016.41 1890.92,1013.59 1893.26,1013.62 1893.97,1011.92 1892.29,1010.28 1894.28,1008.29 1895.92,1009.97 1897.62,1009.26 1897.59,1006.92 1900.41,1006.92 1900.38,1009.26 1902.08,1009.97 1903.72,1008.29 1905.71,1010.28 1904.03,1011.92 1904.74,1013.62" fill="#8a8a8a"/><circle cx="1899" cy="1015" r="2.8" fill="#f1f1f1"/></svg>
<span class="tx" style="left:23px;top:3.5px;font-size:12px;line-height:16px;font-weight:400;color:#000;transform:scaleX(0.9802);">Autodesk Fusion 360 (Personal - Not for Commercial Use)</span>
<span class="tx" style="left:572px;top:33.5px;font-size:12px;line-height:16px;font-weight:400;color:#3a3a3a;letter-spacing:0.205px;">Untitled*</span>
<span class="tx" style="left:1263px;top:33.5px;font-size:12px;line-height:16px;font-weight:400;color:#6a6a6a;letter-spacing:0.282px;">atomic base*(1)</span>
<span class="tx" style="left:1721px;top:32.5px;font-size:11px;line-height:14px;font-weight:400;color:#333;transform:scaleX(0.9810);">1 of 10</span>
<span class="tx" style="left:1883.5px;top:32.5px;font-size:11px;line-height:14px;font-weight:400;color:#555;letter-spacing:0.312px;">VK</span>
<span class="tx" style="left:151px;top:59px;font-size:11px;line-height:14px;font-weight:400;color:#0696d7;transform:scaleX(0.9389);">SOLID</span>
<span class="tx" style="left:228px;top:59px;font-size:11px;line-height:14px;font-weight:400;color:#3c3c3c;transform:scaleX(0.8948);">SURFACE</span>
<span class="tx" style="left:321px;top:59px;font-size:11px;line-height:14px;font-weight:400;color:#3c3c3c;transform:scaleX(0.8653);">MESH</span>
<span class="tx" style="left:394px;top:59px;font-size:11px;line-height:14px;font-weight:400;color:#3c3c3c;transform:scaleX(0.8953);">SHEET METAL</span>
<span class="tx" style="left:507px;top:59px;font-size:11px;line-height:14px;font-weight:400;color:#3c3c3c;transform:scaleX(0.9158);">PLASTIC</span>
<span class="tx" style="left:595px;top:59px;font-size:11px;line-height:14px;font-weight:400;color:#3c3c3c;transform:scaleX(0.8570);">UTILITIES</span>
<span class="tx" style="left:42px;top:87.8px;font-size:11px;line-height:14px;font-weight:700;color:#333;transform:scaleX(0.9007);">DESIGN</span>
<span class="tx" style="left:235px;top:119px;font-size:11px;line-height:14px;font-weight:400;color:#333;transform:scaleX(0.9130);">CREATE</span>
<span class="tx" style="left:503px;top:119px;font-size:11px;line-height:14px;font-weight:400;color:#333;transform:scaleX(0.8882);">MODIFY</span>
<span class="tx" style="left:679px;top:119px;font-size:11px;line-height:14px;font-weight:400;color:#333;transform:scaleX(0.9273);">ASSEMBLE</span>
<span class="tx" style="left:774px;top:119px;font-size:11px;line-height:14px;font-weight:400;color:#333;transform:scaleX(0.8977);">CONSTRUCT</span>
<span class="tx" style="left:873px;top:119px;font-size:11px;line-height:14px;font-weight:400;color:#333;transform:scaleX(0.8598);">INSPECT</span>
<span class="tx" style="left:952.5px;top:119px;font-size:11px;line-height:14px;font-weight:400;color:#333;transform:scaleX(0.8346);">INSERT</span>
<span class="tx" style="left:1021px;top:119px;font-size:11px;line-height:14px;font-weight:400;color:#333;transform:scaleX(0.8645);">SELECT</span>
<span class="tx" style="left:29px;top:149px;font-size:11px;line-height:14px;font-weight:400;color:#555;transform:scaleX(0.9148);">BROWSER</span>
<span class="tx" style="left:98px;top:177px;font-size:11px;line-height:14px;font-weight:700;color:#fff;letter-spacing:0.102px;">(Unsaved)</span>
<span class="tx" style="left:91px;top:201px;font-size:11px;line-height:14px;font-weight:400;color:#222;transform:scaleX(0.9684);">Document Settings</span>
<span class="tx" style="left:91px;top:225px;font-size:11px;line-height:14px;font-weight:400;color:#222;letter-spacing:0.033px;">Named Views</span>
<span class="tx" style="left:116px;top:249px;font-size:11px;line-height:14px;font-weight:400;color:#222;transform:scaleX(0.9542);">Origin</span>
<span class="tx" style="left:116px;top:273px;font-size:11px;line-height:14px;font-weight:400;color:#222;transform:scaleX(0.9810);">Bodies</span>
<span class="tx" style="left:116px;top:297px;font-size:11px;line-height:14px;font-weight:400;color:#222;transform:scaleX(0.9945);">Sketches</span>
<span class="tx" style="left:134px;top:321px;font-size:11px;line-height:14px;font-weight:400;color:#222;transform:scaleX(0.9560);">Sketch1</span>
<span class="tx" style="left:134px;top:345px;font-size:11px;line-height:14px;font-weight:400;color:#222;transform:scaleX(0.9811);">Sketch2</span>
<span class="tx" style="left:134px;top:369px;font-size:11px;line-height:14px;font-weight:400;color:#222;transform:scaleX(0.9811);">Sketch3</span>
<span class="tx" style="left:855px;top:149px;font-size:11px;line-height:14px;font-weight:700;color:#333;letter-spacing:0.067px;">Unsaved:</span>
<span class="tx" style="left:925px;top:149px;font-size:11px;line-height:14px;font-weight:400;color:#333;transform:scaleX(0.9773);">Changes may be lost</span>
<span class="tx" style="left:1053px;top:149px;font-size:11px;line-height:14px;font-weight:400;color:#1478be;transform:scaleX(0.9969);">Save</span>
<span class="tx" style="left:29px;top:966px;font-size:11px;line-height:14px;font-weight:400;color:#555;transform:scaleX(0.8882);">COMMENTS</span>
</body></html>
